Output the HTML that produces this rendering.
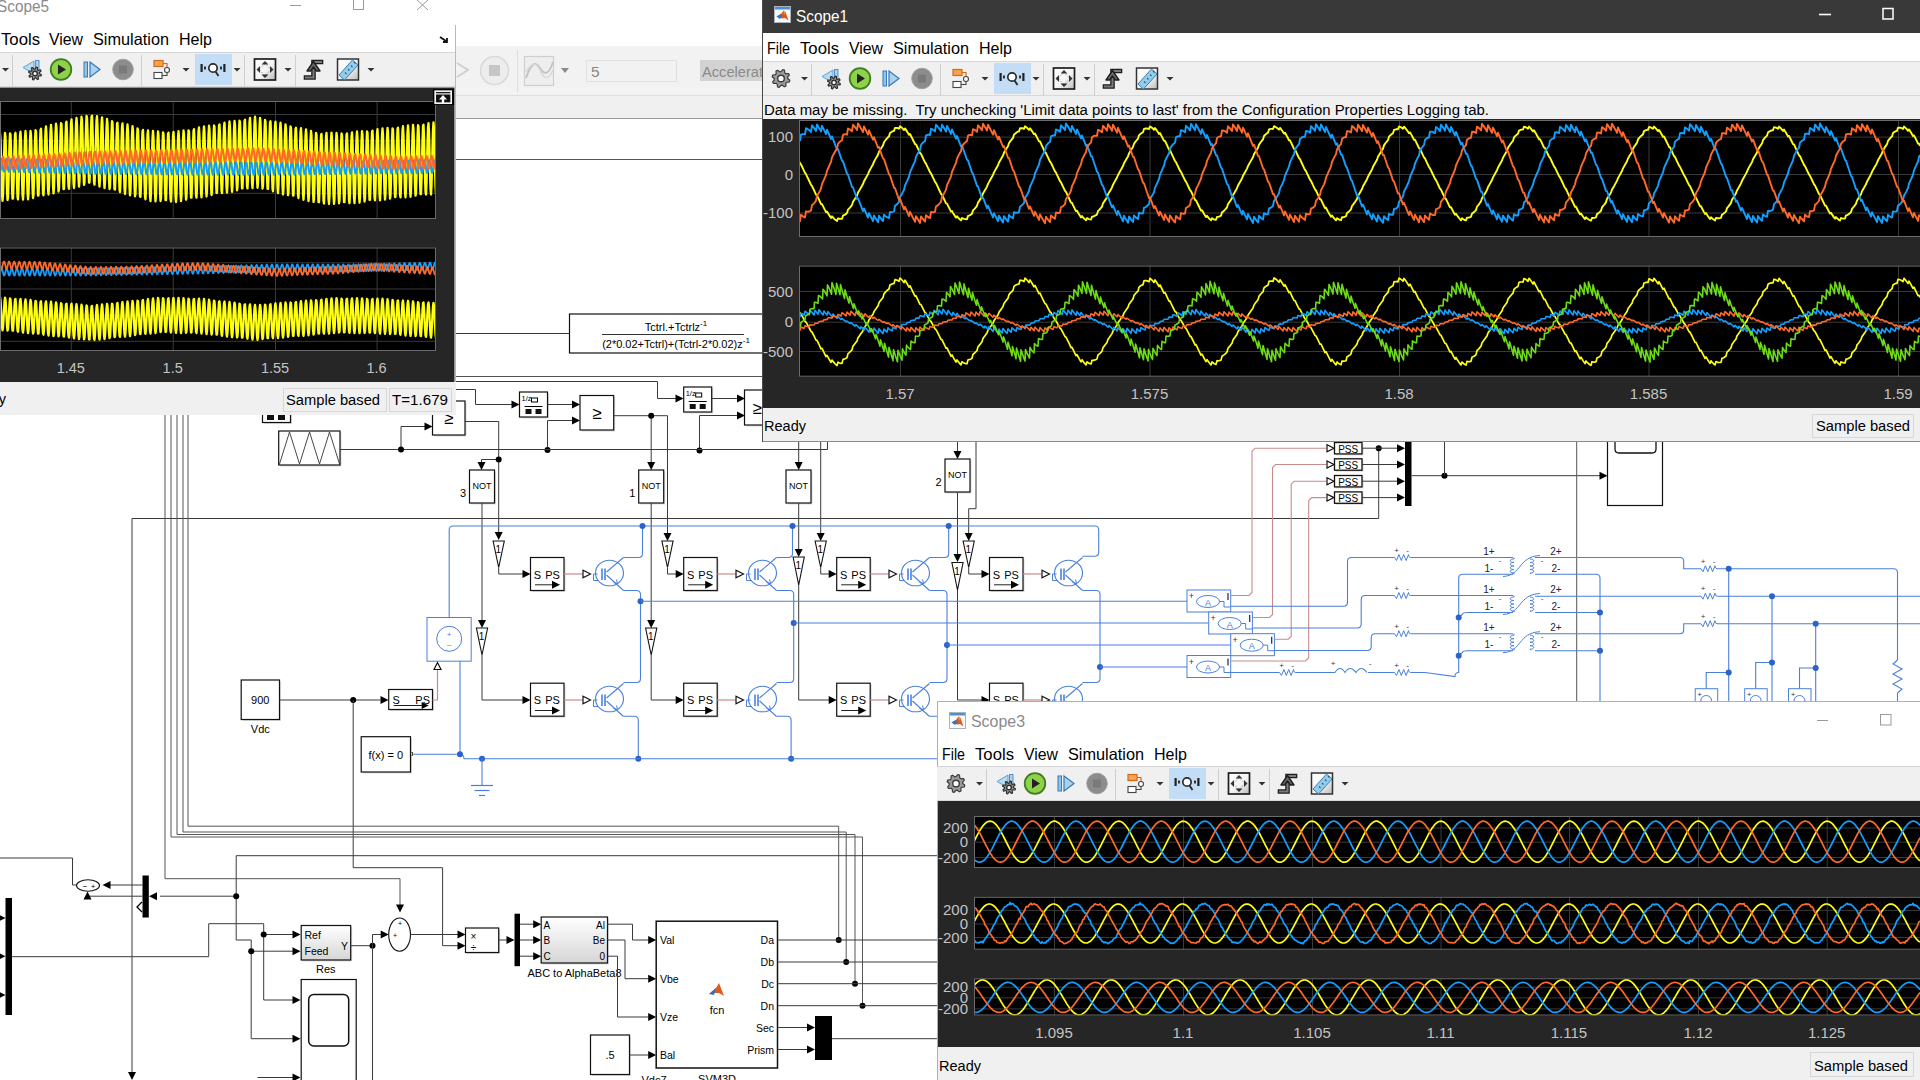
<!DOCTYPE html><html><head><meta charset="utf-8"><title>Simulink scopes</title><style>html,body{margin:0;padding:0;width:1920px;height:1080px;overflow:hidden;background:#fff;font-family:"Liberation Sans",sans-serif}</style></head><body><svg width="1920" height="1080" viewBox="0 0 1920 1080" font-family='"Liberation Sans", sans-serif' style="position:absolute;left:0;top:0;display:block"><defs><linearGradient id="icg" x1="0" y1="0" x2="1" y2="1"><stop offset="0" stop-color="#ffffff"/><stop offset="0.55" stop-color="#f4f4f4"/><stop offset="1" stop-color="#b9b9b9"/></linearGradient></defs><rect x="0" y="0" width="1920" height="1080" fill="#fff"/><rect x="455" y="46" width="307" height="49" fill="#f2f2f2" stroke="none" stroke-width="1" /><rect x="455" y="95" width="307" height="23" fill="#f0f0f0" stroke="none" stroke-width="1" /><line x1="455" y1="95.5" x2="762" y2="95.5" stroke="#dedede" stroke-width="1" /><line x1="455" y1="118.5" x2="762" y2="118.5" stroke="#9c9c9c" stroke-width="1" /><path d="M457,63 L468,70 L457,77" fill="none" stroke="#d0d0d0" stroke-width="2"/><circle cx="494.5" cy="70.5" r="14" fill="#ededed" stroke="#d9d9d9" stroke-width="1.5"/><rect x="489" y="65" width="11" height="11" fill="#c6c6c6" stroke="none" stroke-width="1" /><line x1="517.5" y1="50" x2="517.5" y2="92" stroke="#dedede" stroke-width="1" /><rect x="524.5" y="56.5" width="29" height="29" fill="#eeeeee" stroke="#cfcfcf" stroke-width="1.2" /><path d="M526,78 C531,64 535,60 540,68 C545,76 549,74 553,62" fill="none" stroke="#c2c2c2" stroke-width="1.8"/><path d="M526,72 C532,62 536,62 540,70 C544,80 549,80 553,70" fill="none" stroke="#d6d6d6" stroke-width="1.3"/><path d="M561,68 L569,68 L565,73 Z" fill="#8a8a8a"/><rect x="586.5" y="60.5" width="90" height="21" fill="#f2f2f2" stroke="#e0e0e0" stroke-width="1" /><text x="591" y="77" font-size="15.5" fill="#888" text-anchor="start" >5</text><rect x="700" y="60" width="62" height="21" fill="#d2d2d2" stroke="none" stroke-width="1" /><text x="702" y="77" font-size="15.5" fill="#8a8a8a" text-anchor="start" textLength="74" lengthAdjust="spacingAndGlyphs" >Accelerator</text><line x1="455" y1="159.5" x2="762" y2="159.5" stroke="#555" stroke-width="1" /><polyline points="455,333.5 569.5,333.5" fill="none" stroke="#3a3a3a" stroke-width="1" /><line x1="455" y1="376.5" x2="762" y2="376.5" stroke="#555" stroke-width="1" /><rect x="569.5" y="314" width="205.5" height="39" fill="#fff" stroke="#111" stroke-width="1.2" /><text x="676" y="331" font-size="11" fill="#000" text-anchor="middle" >Tctrl.+Tctrlz<tspan dy="-5" font-size="8">-1</tspan></text><line x1="602" y1="334.5" x2="744" y2="334.5" stroke="#333" stroke-width="1" /><text x="676" y="348" font-size="11" fill="#000" text-anchor="middle" >(2*0.02+Tctrl)+(Tctrl-2*0.02)z<tspan dy="-5" font-size="8">-1</tspan></text><polyline points="455,381.5 657.5,381.5 657.5,398.5 676,398.5" fill="none" stroke="#3a3a3a" stroke-width="1" /><polygon points="683.5,398.5 675.5,394.5 675.5,402.5" fill="#000"/><polyline points="455,389.5 475.5,389.5 475.5,404.5 512,404.5" fill="none" stroke="#3a3a3a" stroke-width="1" /><polygon points="519.5,404.5 511.5,400.5 511.5,408.5" fill="#000"/><rect x="521.0" y="393.5" width="28.0" height="25" fill="#bdbdbd" stroke="none" stroke-width="1" opacity="0.55"/><rect x="519.5" y="392" width="28.0" height="25" fill="#fff" stroke="#111" stroke-width="1.2" /><text x="526.5" y="401" font-size="7.5" fill="#000" text-anchor="middle" >1/z</text><rect x="531.5" y="398" width="6" height="4" fill="none" stroke="#000" stroke-width="1" /><line x1="524.5" y1="406.5" x2="542.5" y2="406.5" stroke="#000" stroke-width="1" /><rect x="525.5" y="409" width="6" height="5" fill="#111" stroke="none" stroke-width="1" /><rect x="535.5" y="409" width="6" height="5" fill="#111" stroke="none" stroke-width="1" /><rect x="685.2" y="388.5" width="28.0" height="25" fill="#bdbdbd" stroke="none" stroke-width="1" opacity="0.55"/><rect x="683.7" y="387" width="28.0" height="25" fill="#fff" stroke="#111" stroke-width="1.2" /><text x="690.7" y="396" font-size="7.5" fill="#000" text-anchor="middle" >1/z</text><rect x="695.7" y="393" width="6" height="4" fill="none" stroke="#000" stroke-width="1" /><line x1="688.7" y1="401.5" x2="706.7" y2="401.5" stroke="#000" stroke-width="1" /><rect x="689.7" y="404" width="6" height="5" fill="#111" stroke="none" stroke-width="1" /><rect x="699.7" y="404" width="6" height="5" fill="#111" stroke="none" stroke-width="1" /><rect x="434.0" y="402.5" width="32.5" height="34" fill="#bdbdbd" stroke="none" stroke-width="1" opacity="0.55"/><rect x="432.5" y="401" width="32.5" height="34" fill="#fff" stroke="#111" stroke-width="1.2" /><text x="448.75" y="424.0" font-size="17" fill="#000" text-anchor="middle" >≥</text><rect x="581.5" y="397.0" width="33.700000000000045" height="34.5" fill="#bdbdbd" stroke="none" stroke-width="1" opacity="0.55"/><rect x="580" y="395.5" width="33.700000000000045" height="34.5" fill="#fff" stroke="#111" stroke-width="1.2" /><text x="596.85" y="418.75" font-size="17" fill="#000" text-anchor="middle" >≥</text><rect x="746.0" y="391.5" width="25.5" height="35" fill="#bdbdbd" stroke="none" stroke-width="1" opacity="0.55"/><rect x="744.5" y="390" width="25.5" height="35" fill="#fff" stroke="#111" stroke-width="1.2" /><text x="757.25" y="413.5" font-size="17" fill="#000" text-anchor="middle" >≥</text><polyline points="547.5,404.5 573,404.5" fill="none" stroke="#3a3a3a" stroke-width="1" /><polygon points="580,404.5 572,400.5 572,408.5" fill="#000"/><polyline points="547.5,450 547.5,420.5 573,420.5" fill="none" stroke="#3a3a3a" stroke-width="1" /><polygon points="580,420.5 572,416.5 572,424.5" fill="#000"/><circle cx="547.5" cy="450" r="3" fill="#000"/><polyline points="712,398.5 738,398.5" fill="none" stroke="#3a3a3a" stroke-width="1" /><polygon points="745,398.5 737,394.5 737,402.5" fill="#000"/><polyline points="699.5,450.5 699.5,415.5 738,415.5" fill="none" stroke="#3a3a3a" stroke-width="1" /><polygon points="745,415.5 737,411.5 737,419.5" fill="#000"/><circle cx="699.5" cy="450.5" r="3" fill="#000"/><rect x="280.2" y="432.5" width="61.30000000000001" height="34" fill="#bdbdbd" stroke="none" stroke-width="1" opacity="0.55"/><rect x="278.7" y="431" width="61.30000000000001" height="34" fill="#fff" stroke="#111" stroke-width="1.2" /><polyline points="279.5,464 289.5,432 299.5,464 309.5,432 319.5,464 329.5,432 339.5,464" fill="none" stroke="#333" stroke-width="0.9"/><polyline points="340,449.5 827.5,449.5 827.5,441" fill="none" stroke="#3a3a3a" stroke-width="1" /><polyline points="401,449.5 401,426.5 425,426.5" fill="none" stroke="#3a3a3a" stroke-width="1" /><polygon points="432.5,426.5 424.5,422.5 424.5,430.5" fill="#000"/><circle cx="401" cy="449.5" r="3" fill="#000"/><rect x="264.0" y="406.5" width="28.0" height="17.5" fill="#bdbdbd" stroke="none" stroke-width="1" opacity="0.55"/><rect x="262.5" y="405" width="28.0" height="17.5" fill="#fff" stroke="#111" stroke-width="1.2" /><rect x="267" y="415" width="7" height="5" fill="#111" stroke="none" stroke-width="1" /><rect x="278" y="415" width="7" height="5" fill="#111" stroke="none" stroke-width="1" /><polyline points="465,421.5 498.7,421.5 498.7,532" fill="none" stroke="#3a3a3a" stroke-width="1" /><polygon points="498.7,540 494.7,532 502.7,532" fill="#000"/><polyline points="498.7,459.5 481.5,459.5 481.5,462" fill="none" stroke="#3a3a3a" stroke-width="1" /><polygon points="481.5,470 477.5,462 485.5,462" fill="#000"/><circle cx="498.7" cy="459.5" r="3" fill="#000"/><polyline points="613.7,415.7 667.5,415.7 667.5,533" fill="none" stroke="#3a3a3a" stroke-width="1" /><polygon points="667.5,541 663.5,533 671.5,533" fill="#000"/><polyline points="651.2,415.7 651.2,462" fill="none" stroke="#3a3a3a" stroke-width="1" /><polygon points="651.2,470 647.2,462 655.2,462" fill="#000"/><circle cx="651.2" cy="415.7" r="3" fill="#000"/><polyline points="798.7,441 798.7,462" fill="none" stroke="#3a3a3a" stroke-width="1" /><polygon points="798.7,470 794.7,462 802.7,462" fill="#000"/><polyline points="820.7,441 820.7,533" fill="none" stroke="#3a3a3a" stroke-width="1" /><polygon points="820.7,541 816.7,533 824.7,533" fill="#000"/><polyline points="957.5,441 957.5,451" fill="none" stroke="#3a3a3a" stroke-width="1" /><polygon points="957.5,459 953.5,451 961.5,451" fill="#000"/><polyline points="976,441 976,508.7 968.7,508.7 968.7,533" fill="none" stroke="#3a3a3a" stroke-width="1" /><polygon points="968.7,541 964.7,533 972.7,533" fill="#000"/><rect x="471.0" y="471.5" width="25.0" height="33" fill="#bdbdbd" stroke="none" stroke-width="1" opacity="0.55"/><rect x="469.5" y="470" width="25.0" height="33" fill="#fff" stroke="#111" stroke-width="1.2" /><text x="482.0" y="489" font-size="9.5" fill="#000" text-anchor="middle" textLength="19" lengthAdjust="spacingAndGlyphs" >NOT</text><text x="463.0" y="497" font-size="11" fill="#000" text-anchor="middle" >3</text><rect x="640.2" y="471.5" width="25.0" height="33" fill="#bdbdbd" stroke="none" stroke-width="1" opacity="0.55"/><rect x="638.7" y="470" width="25.0" height="33" fill="#fff" stroke="#111" stroke-width="1.2" /><text x="651.2" y="489" font-size="9.5" fill="#000" text-anchor="middle" textLength="19" lengthAdjust="spacingAndGlyphs" >NOT</text><text x="632.2" y="497" font-size="11" fill="#000" text-anchor="middle" >1</text><rect x="787.5" y="471.5" width="25" height="33" fill="#bdbdbd" stroke="none" stroke-width="1" opacity="0.55"/><rect x="786" y="470" width="25" height="33" fill="#fff" stroke="#111" stroke-width="1.2" /><text x="798.5" y="489" font-size="9.5" fill="#000" text-anchor="middle" textLength="19" lengthAdjust="spacingAndGlyphs" >NOT</text><rect x="946.5" y="460.5" width="25" height="33" fill="#bdbdbd" stroke="none" stroke-width="1" opacity="0.55"/><rect x="945" y="459" width="25" height="33" fill="#fff" stroke="#111" stroke-width="1.2" /><text x="957.5" y="478" font-size="9.5" fill="#000" text-anchor="middle" textLength="19" lengthAdjust="spacingAndGlyphs" >NOT</text><text x="938.5" y="486" font-size="11" fill="#000" text-anchor="middle" >2</text><polyline points="482,503 482,620" fill="none" stroke="#3a3a3a" stroke-width="1" /><polygon points="482,628 478.0,620 486.0,620" fill="#000"/><polyline points="651.2,503 651.2,620" fill="none" stroke="#3a3a3a" stroke-width="1" /><polygon points="651.2,628 647.2,620 655.2,620" fill="#000"/><polyline points="798.7,503 798.7,549" fill="none" stroke="#3a3a3a" stroke-width="1" /><polygon points="798.7,557 794.7,549 802.7,549" fill="#000"/><polyline points="957.5,492.5 957.5,554" fill="none" stroke="#3a3a3a" stroke-width="1" /><polygon points="957.5,562 953.5,554 961.5,554" fill="#000"/><polyline points="132,1072 132,518.5 1378.7,518.5 1378.7,448.2" fill="none" stroke="#3a3a3a" stroke-width="1" /><circle cx="1378.7" cy="448.2" r="3" fill="#000"/><polygon points="493.09999999999997,541 504.3,541 498.7,567.5" fill="#fff" stroke="#111" stroke-width="1.1"/><text x="498.2" y="553" font-size="10" fill="#000" text-anchor="middle" >1</text><polygon points="661.9,541 673.1,541 667.5,567.5" fill="#fff" stroke="#111" stroke-width="1.1"/><text x="667.0" y="553" font-size="10" fill="#000" text-anchor="middle" >1</text><polygon points="815.1,541 826.3000000000001,541 820.7,567.5" fill="#fff" stroke="#111" stroke-width="1.1"/><text x="820.2" y="553" font-size="10" fill="#000" text-anchor="middle" >1</text><polygon points="963.1,541 974.3000000000001,541 968.7,567.5" fill="#fff" stroke="#111" stroke-width="1.1"/><text x="968.2" y="553" font-size="10" fill="#000" text-anchor="middle" >1</text><polygon points="793.1,557 804.3000000000001,557 798.7,585" fill="#fff" stroke="#111" stroke-width="1.1"/><text x="798.2" y="569" font-size="10" fill="#000" text-anchor="middle" >1</text><polygon points="951.9,562.5 963.1,562.5 957.5,590" fill="#fff" stroke="#111" stroke-width="1.1"/><text x="957.0" y="574.5" font-size="10" fill="#000" text-anchor="middle" >1</text><polygon points="476.4,628 487.6,628 482,655" fill="#fff" stroke="#111" stroke-width="1.1"/><text x="481.5" y="640" font-size="10" fill="#000" text-anchor="middle" >1</text><polygon points="645.6,628 656.8000000000001,628 651.2,655" fill="#fff" stroke="#111" stroke-width="1.1"/><text x="650.7" y="640" font-size="10" fill="#000" text-anchor="middle" >1</text><polyline points="498.7,567.5 498.7,574 523.5,574" fill="none" stroke="#3a3a3a" stroke-width="1" /><polygon points="530.5,574 522.5,570.0 522.5,578.0" fill="#000"/><polyline points="667.5,567.5 667.5,574 676.7,574" fill="none" stroke="#3a3a3a" stroke-width="1" /><polygon points="683.7,574 675.7,570.0 675.7,578.0" fill="#000"/><polyline points="820.7,567.5 820.7,574 829.7,574" fill="none" stroke="#3a3a3a" stroke-width="1" /><polygon points="836.7,574 828.7,570.0 828.7,578.0" fill="#000"/><polyline points="968.7,567.5 968.7,574 982.5,574" fill="none" stroke="#3a3a3a" stroke-width="1" /><polygon points="989.5,574 981.5,570.0 981.5,578.0" fill="#000"/><polyline points="482,655 482,700 523.5,700" fill="none" stroke="#3a3a3a" stroke-width="1" /><polygon points="530.5,700 522.5,696.0 522.5,704.0" fill="#000"/><polyline points="651.2,655 651.2,700 676.7,700" fill="none" stroke="#3a3a3a" stroke-width="1" /><polygon points="683.7,700 675.7,696.0 675.7,704.0" fill="#000"/><polyline points="798.7,585 798.7,700 829.7,700" fill="none" stroke="#3a3a3a" stroke-width="1" /><polygon points="836.7,700 828.7,696.0 828.7,704.0" fill="#000"/><polyline points="957.5,590 957.5,700 982.5,700" fill="none" stroke="#3a3a3a" stroke-width="1" /><polygon points="989.5,700 981.5,696.0 981.5,704.0" fill="#000"/><rect x="532.0" y="559.0" width="33.5" height="33.0" fill="#bdbdbd" stroke="none" stroke-width="1" opacity="0.55"/><rect x="530.5" y="557.5" width="33.5" height="33.0" fill="#fff" stroke="#111" stroke-width="1.2" /><text x="537.5" y="578.5" font-size="11" fill="#000" text-anchor="middle" >S</text><text x="552.5" y="578.5" font-size="11" fill="#000" text-anchor="middle" >PS</text><line x1="535.0" y1="584.8" x2="554.5" y2="584.8" stroke="#222" stroke-width="1" /><polygon points="560.0,584.8 552.0,580.8 552.0,588.8" fill="#000"/><rect x="532.0" y="684.7" width="33.5" height="33.0" fill="#bdbdbd" stroke="none" stroke-width="1" opacity="0.55"/><rect x="530.5" y="683.2" width="33.5" height="33.0" fill="#fff" stroke="#111" stroke-width="1.2" /><text x="537.5" y="704.2" font-size="11" fill="#000" text-anchor="middle" >S</text><text x="552.5" y="704.2" font-size="11" fill="#000" text-anchor="middle" >PS</text><line x1="535.0" y1="710.5" x2="554.5" y2="710.5" stroke="#222" stroke-width="1" /><polygon points="560.0,710.5 552.0,706.5 552.0,714.5" fill="#000"/><line x1="564.0" y1="574" x2="582.5" y2="574" stroke="#c98a8a" stroke-width="1.2" /><polygon points="590.5,574 583.0,570.25 583.0,577.75" fill="#fff" stroke="#111" stroke-width="1.2"/><ellipse cx="609.5" cy="573" rx="14" ry="12.8" fill="none" stroke="#4a80dc" stroke-width="1.1"/><line x1="602.0" y1="568.5" x2="602.0" y2="580" stroke="#4a80dc" stroke-width="1.6" /><line x1="605.0" y1="568.5" x2="605.0" y2="580" stroke="#4a80dc" stroke-width="1.6" /><polyline points="597.5,574 593.5,574 593.5,580.5 598.5,580.5" fill="none" stroke="#4a80dc" stroke-width="1"/><line x1="606.5" y1="572" x2="623.5" y2="557.5" stroke="#4a80dc" stroke-width="1.1" /><line x1="606.5" y1="575" x2="623.5" y2="590.5" stroke="#4a80dc" stroke-width="1.1" /><polyline points="613.5,582.5 617.5,583.5 616.5,579.5" fill="none" stroke="#4a80dc" stroke-width="1"/><line x1="564.0" y1="700" x2="582.5" y2="700" stroke="#c98a8a" stroke-width="1.2" /><polygon points="590.5,700 583.0,696.25 583.0,703.75" fill="#fff" stroke="#111" stroke-width="1.2"/><ellipse cx="609.5" cy="699" rx="14" ry="12.8" fill="none" stroke="#4a80dc" stroke-width="1.1"/><line x1="602.0" y1="694.5" x2="602.0" y2="706" stroke="#4a80dc" stroke-width="1.6" /><line x1="605.0" y1="694.5" x2="605.0" y2="706" stroke="#4a80dc" stroke-width="1.6" /><polyline points="597.5,700 593.5,700 593.5,706.5 598.5,706.5" fill="none" stroke="#4a80dc" stroke-width="1"/><line x1="606.5" y1="698" x2="623.5" y2="683.5" stroke="#4a80dc" stroke-width="1.1" /><line x1="606.5" y1="701" x2="623.5" y2="716.5" stroke="#4a80dc" stroke-width="1.1" /><polyline points="613.5,708.5 617.5,709.5 616.5,705.5" fill="none" stroke="#4a80dc" stroke-width="1"/><rect x="685.2" y="559.0" width="33.5" height="33.0" fill="#bdbdbd" stroke="none" stroke-width="1" opacity="0.55"/><rect x="683.7" y="557.5" width="33.5" height="33.0" fill="#fff" stroke="#111" stroke-width="1.2" /><text x="690.7" y="578.5" font-size="11" fill="#000" text-anchor="middle" >S</text><text x="705.7" y="578.5" font-size="11" fill="#000" text-anchor="middle" >PS</text><line x1="688.2" y1="584.8" x2="707.7" y2="584.8" stroke="#222" stroke-width="1" /><polygon points="713.2,584.8 705.2,580.8 705.2,588.8" fill="#000"/><rect x="685.2" y="684.7" width="33.5" height="33.0" fill="#bdbdbd" stroke="none" stroke-width="1" opacity="0.55"/><rect x="683.7" y="683.2" width="33.5" height="33.0" fill="#fff" stroke="#111" stroke-width="1.2" /><text x="690.7" y="704.2" font-size="11" fill="#000" text-anchor="middle" >S</text><text x="705.7" y="704.2" font-size="11" fill="#000" text-anchor="middle" >PS</text><line x1="688.2" y1="710.5" x2="707.7" y2="710.5" stroke="#222" stroke-width="1" /><polygon points="713.2,710.5 705.2,706.5 705.2,714.5" fill="#000"/><line x1="717.2" y1="574" x2="735.5" y2="574" stroke="#c98a8a" stroke-width="1.2" /><polygon points="743.5,574 736.0,570.25 736.0,577.75" fill="#fff" stroke="#111" stroke-width="1.2"/><ellipse cx="762.5" cy="573" rx="14" ry="12.8" fill="none" stroke="#4a80dc" stroke-width="1.1"/><line x1="755.0" y1="568.5" x2="755.0" y2="580" stroke="#4a80dc" stroke-width="1.6" /><line x1="758.0" y1="568.5" x2="758.0" y2="580" stroke="#4a80dc" stroke-width="1.6" /><polyline points="750.5,574 746.5,574 746.5,580.5 751.5,580.5" fill="none" stroke="#4a80dc" stroke-width="1"/><line x1="759.5" y1="572" x2="776.5" y2="557.5" stroke="#4a80dc" stroke-width="1.1" /><line x1="759.5" y1="575" x2="776.5" y2="590.5" stroke="#4a80dc" stroke-width="1.1" /><polyline points="766.5,582.5 770.5,583.5 769.5,579.5" fill="none" stroke="#4a80dc" stroke-width="1"/><line x1="717.2" y1="700" x2="735.5" y2="700" stroke="#c98a8a" stroke-width="1.2" /><polygon points="743.5,700 736.0,696.25 736.0,703.75" fill="#fff" stroke="#111" stroke-width="1.2"/><ellipse cx="762.5" cy="699" rx="14" ry="12.8" fill="none" stroke="#4a80dc" stroke-width="1.1"/><line x1="755.0" y1="694.5" x2="755.0" y2="706" stroke="#4a80dc" stroke-width="1.6" /><line x1="758.0" y1="694.5" x2="758.0" y2="706" stroke="#4a80dc" stroke-width="1.6" /><polyline points="750.5,700 746.5,700 746.5,706.5 751.5,706.5" fill="none" stroke="#4a80dc" stroke-width="1"/><line x1="759.5" y1="698" x2="776.5" y2="683.5" stroke="#4a80dc" stroke-width="1.1" /><line x1="759.5" y1="701" x2="776.5" y2="716.5" stroke="#4a80dc" stroke-width="1.1" /><polyline points="766.5,708.5 770.5,709.5 769.5,705.5" fill="none" stroke="#4a80dc" stroke-width="1"/><rect x="838.2" y="559.0" width="33.5" height="33.0" fill="#bdbdbd" stroke="none" stroke-width="1" opacity="0.55"/><rect x="836.7" y="557.5" width="33.5" height="33.0" fill="#fff" stroke="#111" stroke-width="1.2" /><text x="843.7" y="578.5" font-size="11" fill="#000" text-anchor="middle" >S</text><text x="858.7" y="578.5" font-size="11" fill="#000" text-anchor="middle" >PS</text><line x1="841.2" y1="584.8" x2="860.7" y2="584.8" stroke="#222" stroke-width="1" /><polygon points="866.2,584.8 858.2,580.8 858.2,588.8" fill="#000"/><rect x="838.2" y="684.7" width="33.5" height="33.0" fill="#bdbdbd" stroke="none" stroke-width="1" opacity="0.55"/><rect x="836.7" y="683.2" width="33.5" height="33.0" fill="#fff" stroke="#111" stroke-width="1.2" /><text x="843.7" y="704.2" font-size="11" fill="#000" text-anchor="middle" >S</text><text x="858.7" y="704.2" font-size="11" fill="#000" text-anchor="middle" >PS</text><line x1="841.2" y1="710.5" x2="860.7" y2="710.5" stroke="#222" stroke-width="1" /><polygon points="866.2,710.5 858.2,706.5 858.2,714.5" fill="#000"/><line x1="870.2" y1="574" x2="888.5" y2="574" stroke="#c98a8a" stroke-width="1.2" /><polygon points="896.5,574 889.0,570.25 889.0,577.75" fill="#fff" stroke="#111" stroke-width="1.2"/><ellipse cx="915.5" cy="573" rx="14" ry="12.8" fill="none" stroke="#4a80dc" stroke-width="1.1"/><line x1="908.0" y1="568.5" x2="908.0" y2="580" stroke="#4a80dc" stroke-width="1.6" /><line x1="911.0" y1="568.5" x2="911.0" y2="580" stroke="#4a80dc" stroke-width="1.6" /><polyline points="903.5,574 899.5,574 899.5,580.5 904.5,580.5" fill="none" stroke="#4a80dc" stroke-width="1"/><line x1="912.5" y1="572" x2="929.5" y2="557.5" stroke="#4a80dc" stroke-width="1.1" /><line x1="912.5" y1="575" x2="929.5" y2="590.5" stroke="#4a80dc" stroke-width="1.1" /><polyline points="919.5,582.5 923.5,583.5 922.5,579.5" fill="none" stroke="#4a80dc" stroke-width="1"/><line x1="870.2" y1="700" x2="888.5" y2="700" stroke="#c98a8a" stroke-width="1.2" /><polygon points="896.5,700 889.0,696.25 889.0,703.75" fill="#fff" stroke="#111" stroke-width="1.2"/><ellipse cx="915.5" cy="699" rx="14" ry="12.8" fill="none" stroke="#4a80dc" stroke-width="1.1"/><line x1="908.0" y1="694.5" x2="908.0" y2="706" stroke="#4a80dc" stroke-width="1.6" /><line x1="911.0" y1="694.5" x2="911.0" y2="706" stroke="#4a80dc" stroke-width="1.6" /><polyline points="903.5,700 899.5,700 899.5,706.5 904.5,706.5" fill="none" stroke="#4a80dc" stroke-width="1"/><line x1="912.5" y1="698" x2="929.5" y2="683.5" stroke="#4a80dc" stroke-width="1.1" /><line x1="912.5" y1="701" x2="929.5" y2="716.5" stroke="#4a80dc" stroke-width="1.1" /><polyline points="919.5,708.5 923.5,709.5 922.5,705.5" fill="none" stroke="#4a80dc" stroke-width="1"/><rect x="991.0" y="559.0" width="33.5" height="33.0" fill="#bdbdbd" stroke="none" stroke-width="1" opacity="0.55"/><rect x="989.5" y="557.5" width="33.5" height="33.0" fill="#fff" stroke="#111" stroke-width="1.2" /><text x="996.5" y="578.5" font-size="11" fill="#000" text-anchor="middle" >S</text><text x="1011.5" y="578.5" font-size="11" fill="#000" text-anchor="middle" >PS</text><line x1="994.0" y1="584.8" x2="1013.5" y2="584.8" stroke="#222" stroke-width="1" /><polygon points="1019.0,584.8 1011.0,580.8 1011.0,588.8" fill="#000"/><rect x="991.0" y="684.7" width="33.5" height="33.0" fill="#bdbdbd" stroke="none" stroke-width="1" opacity="0.55"/><rect x="989.5" y="683.2" width="33.5" height="33.0" fill="#fff" stroke="#111" stroke-width="1.2" /><text x="996.5" y="704.2" font-size="11" fill="#000" text-anchor="middle" >S</text><text x="1011.5" y="704.2" font-size="11" fill="#000" text-anchor="middle" >PS</text><line x1="994.0" y1="710.5" x2="1013.5" y2="710.5" stroke="#222" stroke-width="1" /><polygon points="1019.0,710.5 1011.0,706.5 1011.0,714.5" fill="#000"/><line x1="1023.0" y1="574" x2="1041.5" y2="574" stroke="#c98a8a" stroke-width="1.2" /><polygon points="1049.5,574 1042.0,570.25 1042.0,577.75" fill="#fff" stroke="#111" stroke-width="1.2"/><ellipse cx="1068.5" cy="573" rx="14" ry="12.8" fill="none" stroke="#4a80dc" stroke-width="1.1"/><line x1="1061.0" y1="568.5" x2="1061.0" y2="580" stroke="#4a80dc" stroke-width="1.6" /><line x1="1064.0" y1="568.5" x2="1064.0" y2="580" stroke="#4a80dc" stroke-width="1.6" /><polyline points="1056.5,574 1052.5,574 1052.5,580.5 1057.5,580.5" fill="none" stroke="#4a80dc" stroke-width="1"/><line x1="1065.5" y1="572" x2="1082.5" y2="557.5" stroke="#4a80dc" stroke-width="1.1" /><line x1="1065.5" y1="575" x2="1082.5" y2="590.5" stroke="#4a80dc" stroke-width="1.1" /><polyline points="1072.5,582.5 1076.5,583.5 1075.5,579.5" fill="none" stroke="#4a80dc" stroke-width="1"/><line x1="1023.0" y1="700" x2="1041.5" y2="700" stroke="#c98a8a" stroke-width="1.2" /><polygon points="1049.5,700 1042.0,696.25 1042.0,703.75" fill="#fff" stroke="#111" stroke-width="1.2"/><ellipse cx="1068.5" cy="699" rx="14" ry="12.8" fill="none" stroke="#4a80dc" stroke-width="1.1"/><line x1="1061.0" y1="694.5" x2="1061.0" y2="706" stroke="#4a80dc" stroke-width="1.6" /><line x1="1064.0" y1="694.5" x2="1064.0" y2="706" stroke="#4a80dc" stroke-width="1.6" /><polyline points="1056.5,700 1052.5,700 1052.5,706.5 1057.5,706.5" fill="none" stroke="#4a80dc" stroke-width="1"/><line x1="1065.5" y1="698" x2="1082.5" y2="683.5" stroke="#4a80dc" stroke-width="1.1" /><line x1="1065.5" y1="701" x2="1082.5" y2="716.5" stroke="#4a80dc" stroke-width="1.1" /><polyline points="1072.5,708.5 1076.5,709.5 1075.5,705.5" fill="none" stroke="#4a80dc" stroke-width="1"/><path d="M449.2,617.5 L449.2,530 Q449.2,526 453.2,526 L1094.7,526 Q1098.7,526 1098.7,530 L1098.7,552.2 Q1098.7,556.2 1094.7,556.2 L1082.5,556.2" fill="none" stroke="#4a80dc" stroke-width="1.1" /><path d="M623.5,557.5 L638.5,557.5 Q642.5,557.5 642.5,553.5 L642.5,526" fill="none" stroke="#4a80dc" stroke-width="1.1" /><path d="M623.5,590.5 L636.5,590.5 Q640.5,590.5 640.5,594.5 L640.5,678.5 Q640.5,682.5 636.5,682.5 L623.5,682.5" fill="none" stroke="#4a80dc" stroke-width="1.1" /><circle cx="640.5" cy="601.2" r="3" fill="#2b63c9"/><polyline points="640.5,601.2 1187,601.2" fill="none" stroke="#4a80dc" stroke-width="1.1" /><path d="M623.5,716.3 L634.3,716.3 Q638.3,716.3 638.3,720.3 L638.3,758.8" fill="none" stroke="#4a80dc" stroke-width="1.1" /><circle cx="638.3" cy="758.8" r="3" fill="#2b63c9"/><path d="M776.5,557.5 L788.5,557.5 Q792.5,557.5 792.5,553.5 L792.5,526" fill="none" stroke="#4a80dc" stroke-width="1.1" /><path d="M776.5,590.5 L789.7,590.5 Q793.7,590.5 793.7,594.5 L793.7,678.5 Q793.7,682.5 789.7,682.5 L776.5,682.5" fill="none" stroke="#4a80dc" stroke-width="1.1" /><circle cx="793.7" cy="623" r="3" fill="#2b63c9"/><polyline points="793.7,623 1208.7,623" fill="none" stroke="#4a80dc" stroke-width="1.1" /><path d="M776.5,716.3 L787.1,716.3 Q791.1,716.3 791.1,720.3 L791.1,758.8" fill="none" stroke="#4a80dc" stroke-width="1.1" /><circle cx="791.1" cy="758.8" r="3" fill="#2b63c9"/><path d="M929.5,557.5 L944.7,557.5 Q948.7,557.5 948.7,553.5 L948.7,526" fill="none" stroke="#4a80dc" stroke-width="1.1" /><path d="M929.5,590.5 L943,590.5 Q947,590.5 947,594.5 L947,678.5 Q947,682.5 943,682.5 L929.5,682.5" fill="none" stroke="#4a80dc" stroke-width="1.1" /><circle cx="947" cy="645" r="3" fill="#2b63c9"/><polyline points="947,645 1230.7,645" fill="none" stroke="#4a80dc" stroke-width="1.1" /><path d="M929.5,716.3 L941,716.3 Q945,716.3 945,720.3 L945,758.8" fill="none" stroke="#4a80dc" stroke-width="1.1" /><path d="M1082.5,590.5 L1096,590.5 Q1100,590.5 1100,594.5 L1100,678.5 Q1100,682.5 1096,682.5 L1082.5,682.5" fill="none" stroke="#4a80dc" stroke-width="1.1" /><circle cx="1100" cy="667" r="3" fill="#2b63c9"/><polyline points="1100,667 1187,667" fill="none" stroke="#4a80dc" stroke-width="1.1" /><path d="M1082.5,716.3 L1094,716.3 Q1098,716.3 1098,720.3 L1098,758.8" fill="none" stroke="#4a80dc" stroke-width="1.1" /><circle cx="642.5" cy="526" r="3" fill="#2b63c9"/><circle cx="792.5" cy="526" r="3" fill="#2b63c9"/><circle cx="948.7" cy="526" r="3" fill="#2b63c9"/><rect x="427" y="617.5" width="44.2" height="43.7" fill="#fff" stroke="#4a80dc" stroke-width="1" /><circle cx="449.2" cy="638.8" r="12.5" fill="none" stroke="#4a80dc" stroke-width="1"/><text x="449.2" y="637" font-size="8" fill="#4a80dc" text-anchor="middle" >+</text><text x="449.2" y="647" font-size="8" fill="#4a80dc" text-anchor="middle" >–</text><polyline points="460,661.2 460,754.2" fill="none" stroke="#4a80dc" stroke-width="1.1" /><path d="M410.5,754.2 L460,754.2 Q464,754.2 464,758.8 L937,758.8" fill="none" stroke="#4a80dc" stroke-width="1.1" /><circle cx="460" cy="754.2" r="3" fill="#2b63c9"/><circle cx="482" cy="758.8" r="3" fill="#2b63c9"/><rect x="409.5" y="752.5" width="3" height="3" fill="#fff" stroke="#222" stroke-width="0.8" /><polyline points="482,758.8 482,785" fill="none" stroke="#4a80dc" stroke-width="1.1" /><line x1="471" y1="785.5" x2="493" y2="785.5" stroke="#4a80dc" stroke-width="1.2" /><line x1="474.5" y1="790.5" x2="489.5" y2="790.5" stroke="#4a80dc" stroke-width="1.2" /><line x1="479" y1="795.5" x2="485" y2="795.5" stroke="#4a80dc" stroke-width="1.2" /><rect x="242.7" y="681.5" width="38.30000000000001" height="39.5" fill="#bdbdbd" stroke="none" stroke-width="1" opacity="0.55"/><rect x="241.2" y="680" width="38.30000000000001" height="39.5" fill="#fff" stroke="#111" stroke-width="1.2" /><text x="260.3" y="704" font-size="11" fill="#000" text-anchor="middle" >900</text><text x="260.3" y="733" font-size="11" fill="#000" text-anchor="middle" >Vdc</text><polyline points="279.5,700 380.5,700" fill="none" stroke="#3a3a3a" stroke-width="1" /><polygon points="388.5,700 380.5,696.0 380.5,704.0" fill="#000"/><circle cx="353.2" cy="700" r="3" fill="#000"/><polyline points="353.2,700 353.2,867.7 442.6,867.7 442.6,945.7 458,945.7" fill="none" stroke="#3a3a3a" stroke-width="1" /><polygon points="465.5,945.7 457.5,941.7 457.5,949.7" fill="#000"/><rect x="390.2" y="691.0" width="43.80000000000001" height="20.0" fill="#bdbdbd" stroke="none" stroke-width="1" opacity="0.55"/><rect x="388.7" y="689.5" width="43.80000000000001" height="20.0" fill="#fff" stroke="#111" stroke-width="1.2" /><text x="396.2" y="704.0" font-size="11" fill="#000" text-anchor="middle" >S</text><text x="422.7" y="704.0" font-size="11" fill="#000" text-anchor="middle" >PS</text><line x1="393.7" y1="705.5" x2="422.7" y2="705.5" stroke="#222" stroke-width="1" /><polygon points="428.7,705.5 421.7,702.0 421.7,709.0" fill="#000"/><polyline points="432.5,700 437.5,700 437.5,670" fill="none" stroke="#c98a8a" stroke-width="1.2" /><polygon points="437.5,662.5 434.0,669.5 441.0,669.5" fill="#fff" stroke="#111" stroke-width="1.2"/><rect x="362.7" y="738.2" width="49.30000000000001" height="35.299999999999955" fill="#bdbdbd" stroke="none" stroke-width="1" opacity="0.55"/><rect x="361.2" y="736.7" width="49.30000000000001" height="35.299999999999955" fill="#fff" stroke="#111" stroke-width="1.2" /><text x="385.8" y="758.5" font-size="11" fill="#000" text-anchor="middle" >f(x) = 0</text><rect x="1187" y="590" width="43.7" height="22" fill="#fff" stroke="#4a80dc" stroke-width="1" /><ellipse cx="1208" cy="601.5" rx="11.5" ry="6" fill="none" stroke="#4a80dc" stroke-width="1"/><text x="1208" y="605.5" font-size="9" fill="#4a80dc" text-anchor="middle" >A</text><text x="1191.5" y="599" font-size="9" fill="#336" text-anchor="middle" >+</text><line x1="1228" y1="593" x2="1228" y2="600" stroke="#224" stroke-width="1.2" /><polyline points="1219.5,601.5 1224,601.5 1224,607 1230.7,607" fill="none" stroke="#4a80dc" stroke-width="1" /><rect x="1208.7" y="612" width="43.7" height="22" fill="#fff" stroke="#4a80dc" stroke-width="1" /><ellipse cx="1229.7" cy="623.5" rx="11.5" ry="6" fill="none" stroke="#4a80dc" stroke-width="1"/><text x="1229.7" y="627.5" font-size="9" fill="#4a80dc" text-anchor="middle" >A</text><text x="1213.2" y="621" font-size="9" fill="#336" text-anchor="middle" >+</text><line x1="1249.7" y1="615" x2="1249.7" y2="622" stroke="#224" stroke-width="1.2" /><polyline points="1241.2,623.5 1245.7,623.5 1245.7,629 1252.4,629" fill="none" stroke="#4a80dc" stroke-width="1" /><rect x="1230.7" y="633.7" width="43.7" height="22" fill="#fff" stroke="#4a80dc" stroke-width="1" /><ellipse cx="1251.7" cy="645.2" rx="11.5" ry="6" fill="none" stroke="#4a80dc" stroke-width="1"/><text x="1251.7" y="649.2" font-size="9" fill="#4a80dc" text-anchor="middle" >A</text><text x="1235.2" y="642.7" font-size="9" fill="#336" text-anchor="middle" >+</text><line x1="1271.7" y1="636.7" x2="1271.7" y2="643.7" stroke="#224" stroke-width="1.2" /><polyline points="1263.2,645.2 1267.7,645.2 1267.7,650.7 1274.4,650.7" fill="none" stroke="#4a80dc" stroke-width="1" /><rect x="1187" y="655.5" width="43.7" height="22" fill="#fff" stroke="#4a80dc" stroke-width="1" /><ellipse cx="1208" cy="667.0" rx="11.5" ry="6" fill="none" stroke="#4a80dc" stroke-width="1"/><text x="1208" y="671.0" font-size="9" fill="#4a80dc" text-anchor="middle" >A</text><text x="1191.5" y="664.5" font-size="9" fill="#336" text-anchor="middle" >+</text><line x1="1228" y1="658.5" x2="1228" y2="665.5" stroke="#224" stroke-width="1.2" /><polyline points="1219.5,667.0 1224,667.0 1224,672.5 1230.7,672.5" fill="none" stroke="#4a80dc" stroke-width="1" /><polyline points="1230.7,595.5 1249,595.5 1252,592.5 1252,451.2 1255,448.2 1326,448.2" fill="none" stroke="#c98a8a" stroke-width="1.1" /><polyline points="1252.4,617.5 1269.5,617.5 1272.5,614.5 1272.5,467.5 1275.5,464.5 1326,464.5" fill="none" stroke="#c98a8a" stroke-width="1.1" /><polyline points="1274.4,639.2 1288.2,639.2 1291.2,636.2 1291.2,484.2 1294.2,481.2 1326,481.2" fill="none" stroke="#c98a8a" stroke-width="1.1" /><polyline points="1230.7,661.0 1305.7,661.0 1308.7,658.0 1308.7,500.6 1311.7,497.6 1326,497.6" fill="none" stroke="#c98a8a" stroke-width="1.1" /><polygon points="1334,448.2 1327,444.7 1327,451.7" fill="#fff" stroke="#111" stroke-width="1.2"/><rect x="1336.0" y="444.0" width="27.5" height="11.399999999999977" fill="#bdbdbd" stroke="none" stroke-width="1" opacity="0.55"/><rect x="1334.5" y="442.5" width="27.5" height="11.399999999999977" fill="#fff" stroke="#111" stroke-width="1.3" /><text x="1348.2" y="452.7" font-size="10.5" fill="#000" text-anchor="middle" textLength="20" lengthAdjust="spacingAndGlyphs" >PSS</text><polyline points="1362,448.2 1397,448.2" fill="none" stroke="#3a3a3a" stroke-width="1" /><polygon points="1405,448.2 1397,444.2 1397,452.2" fill="#000"/><polygon points="1334,464.5 1327,461.0 1327,468.0" fill="#fff" stroke="#111" stroke-width="1.2"/><rect x="1336.0" y="460.3" width="27.5" height="11.399999999999977" fill="#bdbdbd" stroke="none" stroke-width="1" opacity="0.55"/><rect x="1334.5" y="458.8" width="27.5" height="11.399999999999977" fill="#fff" stroke="#111" stroke-width="1.3" /><text x="1348.2" y="469.0" font-size="10.5" fill="#000" text-anchor="middle" textLength="20" lengthAdjust="spacingAndGlyphs" >PSS</text><polyline points="1362,464.5 1397,464.5" fill="none" stroke="#3a3a3a" stroke-width="1" /><polygon points="1405,464.5 1397,460.5 1397,468.5" fill="#000"/><polygon points="1334,481.2 1327,477.7 1327,484.7" fill="#fff" stroke="#111" stroke-width="1.2"/><rect x="1336.0" y="477.0" width="27.5" height="11.399999999999977" fill="#bdbdbd" stroke="none" stroke-width="1" opacity="0.55"/><rect x="1334.5" y="475.5" width="27.5" height="11.399999999999977" fill="#fff" stroke="#111" stroke-width="1.3" /><text x="1348.2" y="485.7" font-size="10.5" fill="#000" text-anchor="middle" textLength="20" lengthAdjust="spacingAndGlyphs" >PSS</text><polyline points="1362,481.2 1397,481.2" fill="none" stroke="#3a3a3a" stroke-width="1" /><polygon points="1405,481.2 1397,477.2 1397,485.2" fill="#000"/><polygon points="1334,497.6 1327,494.1 1327,501.1" fill="#fff" stroke="#111" stroke-width="1.2"/><rect x="1336.0" y="493.40000000000003" width="27.5" height="11.399999999999977" fill="#bdbdbd" stroke="none" stroke-width="1" opacity="0.55"/><rect x="1334.5" y="491.90000000000003" width="27.5" height="11.399999999999977" fill="#fff" stroke="#111" stroke-width="1.3" /><text x="1348.2" y="502.1" font-size="10.5" fill="#000" text-anchor="middle" textLength="20" lengthAdjust="spacingAndGlyphs" >PSS</text><polyline points="1362,497.6 1397,497.6" fill="none" stroke="#3a3a3a" stroke-width="1" /><polygon points="1405,497.6 1397,493.6 1397,501.6" fill="#000"/><rect x="1405" y="442" width="6.5" height="64" fill="#000" stroke="none" stroke-width="1" /><polyline points="1411.5,475.7 1600,475.7" fill="none" stroke="#3a3a3a" stroke-width="1" /><polygon points="1607.5,475.7 1599.5,471.7 1599.5,479.7" fill="#000"/><circle cx="1444.5" cy="475.7" r="3" fill="#000"/><polyline points="1444.5,475.7 1444.5,441" fill="none" stroke="#3a3a3a" stroke-width="1" /><rect x="1607.5" y="441" width="55.0" height="64.5" fill="#fff" stroke="#111" stroke-width="1.2" /><path d="M1615,441 L1615,449 Q1615,453 1619,453 L1652,453 Q1656,453 1656,449 L1656,441" fill="none" stroke="#111" stroke-width="1.3"/><line x1="1576.7" y1="441" x2="1576.7" y2="701" stroke="#555" stroke-width="1" /><path d="M1230.7,606.2 L1343.5,606.2 Q1347.5,606.2 1347.5,602.2 L1347.5,561.5 Q1347.5,557.5 1351.5,557.5 L1513,557.5" fill="none" stroke="#4a80dc" stroke-width="1.1" /><path d="M1252.4,628 L1357.2,628 Q1361.2,628 1361.2,624 L1361.2,599.5 Q1361.2,595.5 1365.2,595.5 L1513,595.5" fill="none" stroke="#4a80dc" stroke-width="1.1" /><path d="M1274.4,650.5 L1367.2,650.5 Q1371.2,650.5 1371.2,646.5 L1371.2,637.7 Q1371.2,633.7 1375.2,633.7 L1513,633.7" fill="none" stroke="#4a80dc" stroke-width="1.1" /><path d="M1230.7,672.5 L1425,672.5 L1455,676.5 Q1455,672.5 1458.7,672.5 L1458.7,578.2 Q1458.7,574.2 1462.7,574.2 L1513,574.2" fill="none" stroke="#4a80dc" stroke-width="1.1" /><path d="M1458.7,617.5 L1462.7,614.0 Q1462.7,612.5 1467,612.5 L1513,612.5" fill="none" stroke="#4a80dc" stroke-width="1.1" /><circle cx="1458.7" cy="617.5" r="3" fill="#2b63c9"/><path d="M1458.7,655.7 L1462.7,652.2 Q1462.7,650.7 1467,650.7 L1513,650.7" fill="none" stroke="#4a80dc" stroke-width="1.1" /><circle cx="1458.7" cy="655.7" r="3" fill="#2b63c9"/><line x1="1394.5" y1="557.5" x2="1410.5" y2="557.5" stroke="#fff" stroke-width="3" /><path d="M1394.5,557.5 L1396.5,560.5 L1398.9,554.5 L1401.3,560.5 L1403.7,554.5 L1406.1,560.5 L1408.5,554.5 Q1408.5,557.5 1410.5,557.5" fill="none" stroke="#4a80dc" stroke-width="1" /><text x="1396.5" y="552.5" font-size="8" fill="#335" text-anchor="middle" >+</text><text x="1407.5" y="552.5" font-size="8" fill="#335" text-anchor="middle" >-</text><line x1="1394.5" y1="595.5" x2="1410.5" y2="595.5" stroke="#fff" stroke-width="3" /><path d="M1394.5,595.5 L1396.5,598.5 L1398.9,592.5 L1401.3,598.5 L1403.7,592.5 L1406.1,598.5 L1408.5,592.5 Q1408.5,595.5 1410.5,595.5" fill="none" stroke="#4a80dc" stroke-width="1" /><text x="1396.5" y="590.5" font-size="8" fill="#335" text-anchor="middle" >+</text><text x="1407.5" y="590.5" font-size="8" fill="#335" text-anchor="middle" >-</text><line x1="1394.5" y1="633.7" x2="1410.5" y2="633.7" stroke="#fff" stroke-width="3" /><path d="M1394.5,633.7 L1396.5,636.7 L1398.9,630.7 L1401.3,636.7 L1403.7,630.7 L1406.1,636.7 L1408.5,630.7 Q1408.5,633.7 1410.5,633.7" fill="none" stroke="#4a80dc" stroke-width="1" /><text x="1396.5" y="628.7" font-size="8" fill="#335" text-anchor="middle" >+</text><text x="1407.5" y="628.7" font-size="8" fill="#335" text-anchor="middle" >-</text><line x1="1279.5" y1="672.5" x2="1295.5" y2="672.5" stroke="#fff" stroke-width="3" /><path d="M1279.5,672.5 L1281.5,675.5 L1283.9,669.5 L1286.3,675.5 L1288.7,669.5 L1291.1,675.5 L1293.5,669.5 Q1293.5,672.5 1295.5,672.5" fill="none" stroke="#4a80dc" stroke-width="1" /><text x="1281.5" y="667.5" font-size="8" fill="#335" text-anchor="middle" >+</text><text x="1292.5" y="667.5" font-size="8" fill="#335" text-anchor="middle" >-</text><line x1="1394.5" y1="672.5" x2="1410.5" y2="672.5" stroke="#fff" stroke-width="3" /><path d="M1394.5,672.5 L1396.5,675.5 L1398.9,669.5 L1401.3,675.5 L1403.7,669.5 L1406.1,675.5 L1408.5,669.5 Q1408.5,672.5 1410.5,672.5" fill="none" stroke="#4a80dc" stroke-width="1" /><text x="1396.5" y="667.5" font-size="8" fill="#335" text-anchor="middle" >+</text><text x="1407.5" y="667.5" font-size="8" fill="#335" text-anchor="middle" >-</text><line x1="1335" y1="672.5" x2="1368" y2="672.5" stroke="#fff" stroke-width="3" /><path d="M1335,672.5 q5,-8 10,0 q5,-8 11,0 q5,-8 11,0" fill="none" stroke="#4a80dc" stroke-width="1.1"/><text x="1333" y="666" font-size="8" fill="#335" text-anchor="middle" >+</text><text x="1370" y="666" font-size="8" fill="#335" text-anchor="middle" >-</text><text x="1489" y="554.5" font-size="10" fill="#223" text-anchor="middle" >1+</text><text x="1489" y="571.5" font-size="10" fill="#223" text-anchor="middle" >1-</text><text x="1556" y="554.5" font-size="10" fill="#223" text-anchor="middle" >2+</text><text x="1556" y="571.5" font-size="10" fill="#223" text-anchor="middle" >2-</text><text x="1500" y="562.5" font-size="8" fill="#335" text-anchor="middle" >-</text><text x="1542" y="562.5" font-size="8" fill="#335" text-anchor="middle" >-</text><path d="M1514,557.5 L1514,559.0 c-5,0 -5,3.5 0,3.5 c-5,0 -5,3.5 0,3.5 c-5,0 -5,3.5 0,3.5 c-5,0 -5,3.5 0,3.5 L1514,574.2" fill="none" stroke="#4a80dc" stroke-width="1"/><path d="M1530,559.0 c5,0 5,3.5 0,3.5 c5,0 5,3.5 0,3.5 c5,0 5,3.5 0,3.5 c5,0 5,3.5 0,3.5 L1531,574.2" fill="none" stroke="#4a80dc" stroke-width="1"/><path d="M1503,576.5 C1522,575.5 1518,556.5 1540,555.5" fill="none" stroke="#4a80dc" stroke-width="1"/><text x="1489" y="592.5" font-size="10" fill="#223" text-anchor="middle" >1+</text><text x="1489" y="609.5" font-size="10" fill="#223" text-anchor="middle" >1-</text><text x="1556" y="592.5" font-size="10" fill="#223" text-anchor="middle" >2+</text><text x="1556" y="609.5" font-size="10" fill="#223" text-anchor="middle" >2-</text><text x="1500" y="600.5" font-size="8" fill="#335" text-anchor="middle" >-</text><text x="1542" y="600.5" font-size="8" fill="#335" text-anchor="middle" >-</text><path d="M1514,595.5 L1514,597.0 c-5,0 -5,3.5 0,3.5 c-5,0 -5,3.5 0,3.5 c-5,0 -5,3.5 0,3.5 c-5,0 -5,3.5 0,3.5 L1514,612.2" fill="none" stroke="#4a80dc" stroke-width="1"/><path d="M1530,597.0 c5,0 5,3.5 0,3.5 c5,0 5,3.5 0,3.5 c5,0 5,3.5 0,3.5 c5,0 5,3.5 0,3.5 L1531,612.2" fill="none" stroke="#4a80dc" stroke-width="1"/><path d="M1503,614.5 C1522,613.5 1518,594.5 1540,593.5" fill="none" stroke="#4a80dc" stroke-width="1"/><text x="1489" y="630.7" font-size="10" fill="#223" text-anchor="middle" >1+</text><text x="1489" y="647.7" font-size="10" fill="#223" text-anchor="middle" >1-</text><text x="1556" y="630.7" font-size="10" fill="#223" text-anchor="middle" >2+</text><text x="1556" y="647.7" font-size="10" fill="#223" text-anchor="middle" >2-</text><text x="1500" y="638.7" font-size="8" fill="#335" text-anchor="middle" >-</text><text x="1542" y="638.7" font-size="8" fill="#335" text-anchor="middle" >-</text><path d="M1514,633.7 L1514,635.2 c-5,0 -5,3.5 0,3.5 c-5,0 -5,3.5 0,3.5 c-5,0 -5,3.5 0,3.5 c-5,0 -5,3.5 0,3.5 L1514,650.4000000000001" fill="none" stroke="#4a80dc" stroke-width="1"/><path d="M1530,635.2 c5,0 5,3.5 0,3.5 c5,0 5,3.5 0,3.5 c5,0 5,3.5 0,3.5 c5,0 5,3.5 0,3.5 L1531,650.4000000000001" fill="none" stroke="#4a80dc" stroke-width="1"/><path d="M1503,652.7 C1522,651.7 1518,632.7 1540,631.7" fill="none" stroke="#4a80dc" stroke-width="1"/><path d="M1535,557.5 L1680,557.5 Q1683.7,557.5 1683.7,561.5 L1683.7,568.7 L1893.5,568.7 Q1897.5,568.7 1897.5,572.7 L1897.5,660" fill="none" stroke="#4a80dc" stroke-width="1.1" /><polyline points="1535,596.2 1920,596.2" fill="none" stroke="#4a80dc" stroke-width="1.1" /><path d="M1535,633.7 L1680,633.7 Q1683.7,633.7 1683.7,629.7 L1683.7,623.7 L1920,623.7" fill="none" stroke="#4a80dc" stroke-width="1.1" /><path d="M1535,574.2 L1596,574.2 Q1600,574.2 1600,578.2 L1600,701" fill="none" stroke="#4a80dc" stroke-width="1.1" /><polyline points="1535,612.5 1600,612.5" fill="none" stroke="#4a80dc" stroke-width="1.1" /><polyline points="1535,650.7 1600,650.7" fill="none" stroke="#4a80dc" stroke-width="1.1" /><circle cx="1600" cy="612.5" r="3" fill="#2b63c9"/><circle cx="1600" cy="650.7" r="3" fill="#2b63c9"/><line x1="1701" y1="568.7" x2="1717" y2="568.7" stroke="#fff" stroke-width="3" /><path d="M1701,568.7 L1703.0,571.7 L1705.4,565.7 L1707.8,571.7 L1710.2,565.7 L1712.6,571.7 L1715.0,565.7 Q1715.0,568.7 1717,568.7" fill="none" stroke="#4a80dc" stroke-width="1" /><text x="1703" y="563.7" font-size="8" fill="#335" text-anchor="middle" >+</text><text x="1714" y="563.7" font-size="8" fill="#335" text-anchor="middle" >-</text><line x1="1701" y1="596.2" x2="1717" y2="596.2" stroke="#fff" stroke-width="3" /><path d="M1701,596.2 L1703.0,599.2 L1705.4,593.2 L1707.8,599.2 L1710.2,593.2 L1712.6,599.2 L1715.0,593.2 Q1715.0,596.2 1717,596.2" fill="none" stroke="#4a80dc" stroke-width="1" /><text x="1703" y="591.2" font-size="8" fill="#335" text-anchor="middle" >+</text><text x="1714" y="591.2" font-size="8" fill="#335" text-anchor="middle" >-</text><line x1="1701" y1="623.7" x2="1717" y2="623.7" stroke="#fff" stroke-width="3" /><path d="M1701,623.7 L1703.0,626.7 L1705.4,620.7 L1707.8,626.7 L1710.2,620.7 L1712.6,626.7 L1715.0,620.7 Q1715.0,623.7 1717,623.7" fill="none" stroke="#4a80dc" stroke-width="1" /><text x="1703" y="618.7" font-size="8" fill="#335" text-anchor="middle" >+</text><text x="1714" y="618.7" font-size="8" fill="#335" text-anchor="middle" >-</text><polyline points="1728.7,568.7 1728.7,701" fill="none" stroke="#4a80dc" stroke-width="1.1" /><circle cx="1728.7" cy="568.7" r="3" fill="#2b63c9"/><polyline points="1728.7,672.5 1706.2,672.5 1706.2,688.7" fill="none" stroke="#4a80dc" stroke-width="1.1" /><circle cx="1728.7" cy="672.5" r="3" fill="#2b63c9"/><rect x="1695.2" y="688.7" width="22.5" height="13" fill="#fff" stroke="#4a80dc" stroke-width="1" /><path d="M1700.7,701 a5.5,5.5 0 0 1 11,0" fill="none" stroke="#4a80dc" stroke-width="1"/><text x="1699.7" y="697" font-size="8" fill="#335" text-anchor="middle" >+</text><polyline points="1772,596.2 1772,701" fill="none" stroke="#4a80dc" stroke-width="1.1" /><circle cx="1772" cy="596.2" r="3" fill="#2b63c9"/><polyline points="1772,662.5 1755.7,662.5 1755.7,688.7" fill="none" stroke="#4a80dc" stroke-width="1.1" /><circle cx="1772" cy="662.5" r="3" fill="#2b63c9"/><rect x="1744.7" y="688.7" width="22.5" height="13" fill="#fff" stroke="#4a80dc" stroke-width="1" /><path d="M1750.2,701 a5.5,5.5 0 0 1 11,0" fill="none" stroke="#4a80dc" stroke-width="1"/><text x="1749.2" y="697" font-size="8" fill="#335" text-anchor="middle" >+</text><polyline points="1815.7,623.7 1815.7,701" fill="none" stroke="#4a80dc" stroke-width="1.1" /><circle cx="1815.7" cy="623.7" r="3" fill="#2b63c9"/><polyline points="1815.7,668 1799.5,668 1799.5,688.7" fill="none" stroke="#4a80dc" stroke-width="1.1" /><circle cx="1815.7" cy="668" r="3" fill="#2b63c9"/><rect x="1788.5" y="688.7" width="22.5" height="13" fill="#fff" stroke="#4a80dc" stroke-width="1" /><path d="M1794.0,701 a5.5,5.5 0 0 1 11,0" fill="none" stroke="#4a80dc" stroke-width="1"/><text x="1793.0" y="697" font-size="8" fill="#335" text-anchor="middle" >+</text><polyline points="1897.5,660 1893,664 1902,669 1893,674 1902,679 1893,684 1902,689 1897.5,693 1897.5,701" fill="none" stroke="#4a80dc" stroke-width="1.1"/><polyline points="165,415 165,878.7 400,878.7 400,905" fill="none" stroke="#555" stroke-width="1" /><polygon points="400,912.5 396.0,904.5 404.0,904.5" fill="#000"/><polyline points="171,415 171,837 862.5,837 862.5,1005.7" fill="none" stroke="#555" stroke-width="1" /><circle cx="862.5" cy="1005.7" r="3" fill="#000"/><polyline points="177,415 177,834.5 855,834.5 855,983.7" fill="none" stroke="#555" stroke-width="1" /><circle cx="855" cy="983.7" r="3" fill="#000"/><polyline points="183,415 183,832 846.2,832 846.2,962" fill="none" stroke="#555" stroke-width="1" /><circle cx="846.2" cy="962" r="3" fill="#000"/><polyline points="188,415 188,826.2 838.7,826.2 838.7,940" fill="none" stroke="#555" stroke-width="1" /><circle cx="838.7" cy="940" r="3" fill="#000"/><polyline points="937,855.7 236.2,855.7 236.2,940 251.2,940 251.2,1038.7 293,1038.7" fill="none" stroke="#3a3a3a" stroke-width="1" /><polygon points="300.5,1038.7 292.5,1034.7 292.5,1042.7" fill="#000"/><polyline points="236.2,896.2 160,896.2" fill="none" stroke="#3a3a3a" stroke-width="1" /><polygon points="149,896.2 157,892.2 157,900.2" fill="#000"/><circle cx="236.2" cy="896.2" r="3" fill="#000"/><rect x="142.5" y="875.5" width="6.3" height="42" fill="#000" stroke="none" stroke-width="1" /><polyline points="142,902 137,907 142,912" fill="none" stroke="#000" stroke-width="1.3"/><polyline points="142.5,885 110,885" fill="none" stroke="#3a3a3a" stroke-width="1" /><polygon points="102.5,885 110.5,881.0 110.5,889.0" fill="#000"/><polyline points="142.5,896.2 87.5,896.2 87.5,899" fill="none" stroke="#3a3a3a" stroke-width="1" /><polygon points="87.5,891.5 83.5,899.5 91.5,899.5" fill="#000"/><ellipse cx="88" cy="885.5" rx="11.5" ry="5.8" fill="#fff" stroke="#111" stroke-width="1.1"/><text x="85" y="889" font-size="8" fill="#000" text-anchor="middle" >−</text><text x="93" y="889" font-size="8" fill="#000" text-anchor="middle" >+</text><polyline points="0,858 72.5,858 72.5,885 76.5,885" fill="none" stroke="#3a3a3a" stroke-width="1" /><rect x="5.5" y="898" width="6.5" height="117" fill="#000" stroke="none" stroke-width="1" /><polygon points="5.5,918 -2.5,914.0 -2.5,922.0" fill="#000"/><polygon points="5.5,956.2 -2.5,952.2 -2.5,960.2" fill="#000"/><polygon points="5.5,995 -2.5,991.0 -2.5,999.0" fill="#000"/><polyline points="12,956.7 208.7,956.7 208.7,923.7 263.7,923.7 263.7,1000 293,1000" fill="none" stroke="#3a3a3a" stroke-width="1" /><polygon points="300.5,1000 292.5,996.0 292.5,1004.0" fill="#000"/><polyline points="263.7,934.5 293,934.5" fill="none" stroke="#3a3a3a" stroke-width="1" /><polygon points="300.5,934.5 292.5,930.5 292.5,938.5" fill="#000"/><circle cx="263.7" cy="934.5" r="3" fill="#000"/><polyline points="251.2,951.2 293,951.2" fill="none" stroke="#3a3a3a" stroke-width="1" /><polygon points="300.5,951.2 292.5,947.2 292.5,955.2" fill="#000"/><circle cx="251.2" cy="951.2" r="3" fill="#000"/><defs><linearGradient id="gr" x1="0" y1="0" x2="0" y2="1"><stop offset="0" stop-color="#ffffff"/><stop offset="1" stop-color="#d6d6d6"/></linearGradient></defs><rect x="302.7" y="927.0" width="49.5" height="34.5" fill="#bdbdbd" stroke="none" stroke-width="1" opacity="0.55"/><rect x="301.2" y="925.5" width="49.5" height="34.5" fill="url(#gr)" stroke="#111" stroke-width="1.2" /><text x="304.5" y="938.5" font-size="10.5" fill="#000" text-anchor="start" >Ref</text><text x="304.5" y="955" font-size="10.5" fill="#000" text-anchor="start" >Feed</text><text x="348" y="950" font-size="10.5" fill="#000" text-anchor="end" >Y</text><text x="325.8" y="973" font-size="11" fill="#000" text-anchor="middle" >Res</text><rect x="301.2" y="979.5" width="55.0" height="105.5" fill="#fff" stroke="#111" stroke-width="1.2" /><rect x="308.7" y="994.5" width="40" height="51.5" fill="none" stroke="#111" stroke-width="1.5" rx="5"/><polyline points="257.5,1077.5 293,1077.5" fill="none" stroke="#3a3a3a" stroke-width="1" /><polygon points="300.5,1077.5 292.5,1073.5 292.5,1081.5" fill="#000"/><polyline points="350.7,945.7 372.5,945.7" fill="none" stroke="#3a3a3a" stroke-width="1" /><circle cx="372.5" cy="945.7" r="3" fill="#000"/><polyline points="372.5,1080 372.5,934.5 381,934.5" fill="none" stroke="#3a3a3a" stroke-width="1" /><polygon points="388.7,934.5 380.7,930.5 380.7,938.5" fill="#000"/><ellipse cx="399.6" cy="934.6" rx="10.9" ry="16.6" fill="#fff" stroke="#111" stroke-width="1.1"/><text x="400" y="926" font-size="7" fill="#000" text-anchor="middle" >+</text><text x="395" y="938" font-size="7" fill="#000" text-anchor="middle" >+</text><polyline points="410.5,934.5 458,934.5" fill="none" stroke="#3a3a3a" stroke-width="1" /><polygon points="465.5,934.5 457.5,930.5 457.5,938.5" fill="#000"/><rect x="467.0" y="929.5" width="33.19999999999999" height="24.5" fill="#bdbdbd" stroke="none" stroke-width="1" opacity="0.55"/><rect x="465.5" y="928" width="33.19999999999999" height="24.5" fill="#fff" stroke="#111" stroke-width="1.2" /><text x="473.5" y="940" font-size="10" fill="#000" text-anchor="middle" >×</text><text x="473.5" y="950.5" font-size="10" fill="#000" text-anchor="middle" >÷</text><polyline points="498.7,940 507,940" fill="none" stroke="#3a3a3a" stroke-width="1" /><polygon points="514.5,940 506.5,936.0 506.5,944.0" fill="#000"/><rect x="514.5" y="913.7" width="5.5" height="52.5" fill="#000" stroke="none" stroke-width="1" /><polyline points="520,924.2 534,924.2" fill="none" stroke="#3a3a3a" stroke-width="1" /><polygon points="541.2,924.2 533.2,920.2 533.2,928.2" fill="#000"/><polyline points="520,940 534,940" fill="none" stroke="#3a3a3a" stroke-width="1" /><polygon points="541.2,940 533.2,936.0 533.2,944.0" fill="#000"/><polyline points="520,956.2 534,956.2" fill="none" stroke="#3a3a3a" stroke-width="1" /><polygon points="541.2,956.2 533.2,952.2 533.2,960.2" fill="#000"/><rect x="542.7" y="918.5" width="66.29999999999995" height="46" fill="#bdbdbd" stroke="none" stroke-width="1" opacity="0.55"/><rect x="541.2" y="917" width="66.29999999999995" height="46" fill="url(#gr)" stroke="#111" stroke-width="1.2" /><text x="543.5" y="928.5" font-size="10" fill="#000" text-anchor="start" >A</text><text x="543.5" y="944" font-size="10" fill="#000" text-anchor="start" >B</text><text x="543.5" y="960" font-size="10" fill="#000" text-anchor="start" >C</text><text x="605" y="928.5" font-size="10" fill="#000" text-anchor="end" >Al</text><text x="605" y="944" font-size="10" fill="#000" text-anchor="end" >Be</text><text x="605" y="960" font-size="10" fill="#000" text-anchor="end" >0</text><text x="574.5" y="976.5" font-size="11" fill="#000" text-anchor="middle" textLength="94" lengthAdjust="spacingAndGlyphs" >ABC to AlphaBeta8</text><polyline points="607.5,924.2 632.5,924.2 632.5,940 648.5,940" fill="none" stroke="#3a3a3a" stroke-width="1" /><polygon points="656.2,940 648.2,936.0 648.2,944.0" fill="#000"/><polyline points="607.5,940 625,940 625,978.7 648.5,978.7" fill="none" stroke="#3a3a3a" stroke-width="1" /><polygon points="656.2,978.7 648.2,974.7 648.2,982.7" fill="#000"/><polyline points="607.5,956.2 617.5,956.2 617.5,1017 648.5,1017" fill="none" stroke="#3a3a3a" stroke-width="1" /><polygon points="656.2,1017 648.2,1013.0 648.2,1021.0" fill="#000"/><rect x="656.2" y="921.2" width="121.29999999999995" height="146.79999999999995" fill="#fff" stroke="#111" stroke-width="1.5" /><text x="660" y="944" font-size="10.5" fill="#000" text-anchor="start" >Val</text><text x="660" y="982.7" font-size="10.5" fill="#000" text-anchor="start" >Vbe</text><text x="660" y="1021" font-size="10.5" fill="#000" text-anchor="start" >Vze</text><text x="660" y="1059" font-size="10.5" fill="#000" text-anchor="start" >Bal</text><text x="774" y="944" font-size="10.5" fill="#000" text-anchor="end" >Da</text><text x="774" y="966" font-size="10.5" fill="#000" text-anchor="end" >Db</text><text x="774" y="987.7" font-size="10.5" fill="#000" text-anchor="end" >Dc</text><text x="774" y="1009.7" font-size="10.5" fill="#000" text-anchor="end" >Dn</text><text x="774" y="1031.5" font-size="10.5" fill="#000" text-anchor="end" >Sec</text><text x="774" y="1053.5" font-size="10.5" fill="#000" text-anchor="end" >Prism</text><path d="M709,994 L716,988 L719,983 L724,996 L719,993 L714,993 Z" fill="#e05a1e"/><path d="M709,994 L716,988 L714,995 Z" fill="#2f6fc9"/><text x="717" y="1013.5" font-size="11" fill="#000" text-anchor="middle" >fcn</text><text x="717" y="1083" font-size="11" fill="#000" text-anchor="middle" >SVM3D</text><rect x="592.0" y="1036.5" width="39.0" height="39.5" fill="#bdbdbd" stroke="none" stroke-width="1" opacity="0.55"/><rect x="590.5" y="1035" width="39.0" height="39.5" fill="#fff" stroke="#111" stroke-width="1.2" /><text x="610" y="1059" font-size="11" fill="#000" text-anchor="middle" >.5</text><polyline points="629.5,1055 648.5,1055" fill="none" stroke="#3a3a3a" stroke-width="1" /><polygon points="656.2,1055 648.2,1051.0 648.2,1059.0" fill="#000"/><text x="654" y="1084" font-size="11" fill="#000" text-anchor="middle" >Vdc7</text><polyline points="777.5,940 937,940" fill="none" stroke="#3a3a3a" stroke-width="1" /><polyline points="777.5,962 937,962" fill="none" stroke="#3a3a3a" stroke-width="1" /><polyline points="777.5,983.7 937,983.7" fill="none" stroke="#3a3a3a" stroke-width="1" /><polyline points="777.5,1005.7 937,1005.7" fill="none" stroke="#3a3a3a" stroke-width="1" /><polyline points="777.5,1027.5 807,1027.5" fill="none" stroke="#3a3a3a" stroke-width="1" /><polygon points="815,1027.5 807,1023.5 807,1031.5" fill="#000"/><polyline points="777.5,1049.5 807,1049.5" fill="none" stroke="#3a3a3a" stroke-width="1" /><polygon points="815,1049.5 807,1045.5 807,1053.5" fill="#000"/><rect x="815" y="1016" width="17" height="44" fill="#000" stroke="none" stroke-width="1" /><polyline points="832,1038.7 937,1038.7" fill="none" stroke="#3a3a3a" stroke-width="1" /><polygon points="132,1080 128.0,1072 136.0,1072" fill="#000"/><rect x="0" y="0" width="455" height="25" fill="#fff" stroke="none" stroke-width="1" /><text x="-3" y="12" font-size="17" fill="#8a8a8a" text-anchor="start" textLength="52" lengthAdjust="spacingAndGlyphs" >Scope5</text><line x1="290" y1="5.5" x2="301" y2="5.5" stroke="#9a9a9a" stroke-width="1" /><rect x="353.5" y="-1.5" width="10" height="11" fill="none" stroke="#9a9a9a" stroke-width="1" /><line x1="417" y1="0" x2="428" y2="10" stroke="#9a9a9a" stroke-width="1" /><line x1="428" y1="0" x2="417" y2="10" stroke="#9a9a9a" stroke-width="1" /><rect x="0" y="25" width="455" height="27" fill="#fff" stroke="none" stroke-width="1" /><text x="1" y="44.7" font-size="16.5" fill="#000" text-anchor="start" textLength="39" lengthAdjust="spacingAndGlyphs" >Tools</text><text x="49" y="44.7" font-size="16.5" fill="#000" text-anchor="start" textLength="34" lengthAdjust="spacingAndGlyphs" >View</text><text x="93" y="44.7" font-size="16.5" fill="#000" text-anchor="start" textLength="76" lengthAdjust="spacingAndGlyphs" >Simulation</text><text x="179" y="44.7" font-size="16.5" fill="#000" text-anchor="start" textLength="33" lengthAdjust="spacingAndGlyphs" >Help</text><path d="M440,37 L446,41 M443,42 L447,42 L447,38" fill="none" stroke="#111" stroke-width="1.8"/><rect x="-37" y="52" width="492" height="35" fill="#f0f0f0" stroke="none" stroke-width="1" /><line x1="-37" y1="52.5" x2="455" y2="52.5" stroke="#d5d5d5" stroke-width="1" /><line x1="-37" y1="86.5" x2="455" y2="86.5" stroke="#d8d8d8" stroke-width="1" /><path d="M-9.2,71.3 L-9.7,73.0 L-12.4,73.3 L-13.2,74.3 L-13.0,77.0 L-14.6,77.8 L-16.7,76.2 L-18.0,76.3 L-19.8,78.3 L-21.5,77.8 L-21.8,75.1 L-22.8,74.3 L-25.5,74.5 L-26.3,72.9 L-24.7,70.8 L-24.8,69.5 L-26.8,67.7 L-26.3,66.0 L-23.6,65.7 L-22.8,64.7 L-23.0,62.0 L-21.4,61.2 L-19.3,62.8 L-18.0,62.7 L-16.2,60.7 L-14.5,61.2 L-14.2,63.9 L-13.2,64.7 L-10.5,64.5 L-9.7,66.1 L-11.3,68.2 L-11.2,69.5Z" fill="#9a9a9a" stroke="#3c3c3c" stroke-width="1.2" stroke-linejoin="round"/><circle cx="-18" cy="69.5" r="3.3" fill="#fff" stroke="#3c3c3c" stroke-width="1.4"/><path d="M2.0,68.0 L9.0,68.0 L5.5,71.5 Z" fill="#333"/><line x1="12.5" y1="55" x2="12.5" y2="86" stroke="#cfcfcf" stroke-width="1" /><line x1="141.5" y1="55" x2="141.5" y2="86" stroke="#cfcfcf" stroke-width="1" /><line x1="244.5" y1="55" x2="244.5" y2="86" stroke="#cfcfcf" stroke-width="1" /><line x1="295.5" y1="55" x2="295.5" y2="86" stroke="#cfcfcf" stroke-width="1" /><path d="M23,67.5 L34,61.0 L34,74.0 Z" fill="#b5dcf5" stroke="#6a9fcc" stroke-width="1"/><rect x="35.5" y="60.5" width="3.5" height="11" fill="#a6d3f2" stroke="#5b8fc2" stroke-width="1"/><path d="M41.4,74.8 L41.0,76.0 L38.6,75.9 L38.0,76.6 L38.6,78.9 L37.5,79.5 L35.8,77.7 L35.0,77.8 L33.7,79.9 L32.5,79.5 L32.6,77.1 L31.9,76.5 L29.6,77.1 L29.0,76.0 L30.8,74.3 L30.7,73.5 L28.6,72.2 L29.0,71.0 L31.4,71.1 L32.0,70.4 L31.4,68.1 L32.5,67.5 L34.2,69.3 L35.0,69.2 L36.3,67.1 L37.5,67.5 L37.4,69.9 L38.1,70.5 L40.4,69.9 L41.0,71.0 L39.2,72.7 L39.3,73.5Z" fill="#9c9c9c" stroke="#2e2e2e" stroke-width="1.2" stroke-linejoin="round"/><circle cx="35" cy="73.5" r="2.3" fill="#fff" stroke="#2e2e2e" stroke-width="1.4"/><circle cx="61" cy="69.5" r="10.3" fill="#8ed14a" stroke="#3f7d1e" stroke-width="1.8"/><path d="M58,64.5 L66,69.5 L58,74.5 Z" fill="#222"/><rect x="84" y="62.0" width="3.5" height="15" fill="#8ec3ea" stroke="#3a78b5" stroke-width="1"/><path d="M90,62.0 L100,69.5 L90,77.0 Z" fill="#a9d3f2" stroke="#3a78b5" stroke-width="1.2"/><circle cx="123" cy="69.5" r="10.3" fill="#8c8c8c" stroke="#a0a0a0" stroke-width="1"/><rect x="119" y="65.5" width="8" height="8" fill="#7a7a7a" stroke="none" stroke-width="1" /><rect x="154" y="60.5" width="9" height="6" fill="#f5a54a" stroke="#d2691e" stroke-width="1.2" /><path d="M163,63.5 L167,63.5 L167,68.5" fill="none" stroke="#d2691e" stroke-width="1.2"/><circle cx="167" cy="70.0" r="2.5" fill="#fff" stroke="#444" stroke-width="1.1"/><path d="M167,72.5 L167,75.5 L162,75.5" fill="none" stroke="#444" stroke-width="1.1"/><rect x="154" y="72.5" width="8" height="6" fill="#fff" stroke="#444" stroke-width="1.1" /><path d="M182.5,68.0 L189.5,68.0 L186,71.5 Z" fill="#333"/><rect x="195" y="54" width="37" height="31" fill="#c3ddf6" stroke="none" stroke-width="1" /><circle cx="213" cy="68.0" r="4.2" fill="#fff" stroke="#2a2a2a" stroke-width="1.7"/><line x1="215.5" y1="71.5" x2="218.5" y2="76.0" stroke="#2a2a2a" stroke-width="1.9" /><rect x="200.5" y="64.0" width="2.2" height="8" fill="#222" stroke="none" stroke-width="1" /><rect x="223.3" y="64.0" width="2.2" height="8" fill="#222" stroke="none" stroke-width="1" /><rect x="204" y="66.5" width="2" height="3" fill="#333" stroke="none" stroke-width="1" /><rect x="220" y="66.5" width="2" height="3" fill="#333" stroke="none" stroke-width="1" /><path d="M233.5,68.0 L240.5,68.0 L237,71.5 Z" fill="#333"/><rect x="254.5" y="59.0" width="21" height="21" fill="url(#icg)" stroke="#1e1e1e" stroke-width="1.7" /><path d="M265,63.5 L259,69.5 L265,75.5 L271,69.5 Z" fill="none" stroke="#9a9a9a" stroke-width="1" stroke-dasharray="1.5,1.5"/><path d="M265,61.0 l-3.5,3.5 h7 Z M265,78.0 l-3.5,-3.5 h7 Z M256.5,69.5 l3.5,-3.5 v7 Z M273.5,69.5 l-3.5,-3.5 v7 Z" fill="#333"/><path d="M284.5,68.0 L291.5,68.0 L288,71.5 Z" fill="#333"/><path d="M306,77.5 L313.5,77.5 L313.5,68.5 M313.5,62.0 L321,62.0" fill="none" stroke="#1e1e1e" stroke-width="4.6" stroke-linecap="square"/><path d="M306,77.5 L313.5,77.5 L313.5,68.5 M313.5,62.0 L321,62.0" fill="none" stroke="#7a7a7a" stroke-width="2" stroke-linecap="square"/><path d="M307,71.0 L313.5,61.5 L320,71.0 L316.5,71.0 L313.5,67.0 L310.5,71.0 Z" fill="#6a6a6a" stroke="#1e1e1e" stroke-width="1.4" stroke-linejoin="round"/><rect x="337.5" y="59.0" width="21" height="21" fill="url(#icg)" stroke="#333" stroke-width="1.5" /><path d="M339,75.0 L352.5,60.0 L358,65.0 L344.5,80.0 Z" fill="#93cdec" stroke="#3d7fb0" stroke-width="1"/><path d="M345,72.5 l1.5,1.5 M348,69.0 l1.5,1.5 M351,65.5 l1.5,1.5 M354,62.0 l1.5,1.5" stroke="#2b5f86" stroke-width="1.1"/><path d="M367.5,68.0 L374.5,68.0 L371,71.5 Z" fill="#333"/><rect x="0" y="87.5" width="454.5" height="294.5" fill="#262626" stroke="none" stroke-width="1" /><line x1="455.5" y1="25" x2="455.5" y2="415" stroke="#b9b9b9" stroke-width="1" /><rect x="0" y="101" width="436" height="118" fill="#000" stroke="none" stroke-width="1" /><rect x="0" y="247.5" width="436" height="103.5" fill="#000" stroke="none" stroke-width="1" /><line x1="71.3" y1="101" x2="71.3" y2="219" stroke="#3a3a3a" stroke-width="1" /><line x1="173.2" y1="101" x2="173.2" y2="219" stroke="#3a3a3a" stroke-width="1" /><line x1="275.5" y1="101" x2="275.5" y2="219" stroke="#3a3a3a" stroke-width="1" /><line x1="377.1" y1="101" x2="377.1" y2="219" stroke="#3a3a3a" stroke-width="1" /><line x1="0" y1="114.5" x2="436" y2="114.5" stroke="#3a3a3a" stroke-width="1" /><line x1="0" y1="140.8" x2="436" y2="140.8" stroke="#3a3a3a" stroke-width="1" /><line x1="0" y1="167.0" x2="436" y2="167.0" stroke="#3a3a3a" stroke-width="1" /><line x1="0" y1="193.3" x2="436" y2="193.3" stroke="#3a3a3a" stroke-width="1" /><line x1="71.3" y1="247.5" x2="71.3" y2="351" stroke="#3a3a3a" stroke-width="1" /><line x1="173.2" y1="247.5" x2="173.2" y2="351" stroke="#3a3a3a" stroke-width="1" /><line x1="275.5" y1="247.5" x2="275.5" y2="351" stroke="#3a3a3a" stroke-width="1" /><line x1="377.1" y1="247.5" x2="377.1" y2="351" stroke="#3a3a3a" stroke-width="1" /><line x1="0" y1="262.8" x2="436" y2="262.8" stroke="#3a3a3a" stroke-width="1" /><line x1="0" y1="289.0" x2="436" y2="289.0" stroke="#3a3a3a" stroke-width="1" /><line x1="0" y1="315.2" x2="436" y2="315.2" stroke="#3a3a3a" stroke-width="1" /><line x1="0" y1="341.3" x2="436" y2="341.3" stroke="#3a3a3a" stroke-width="1" /><clipPath id="c5a"><rect x="0" y="101" width="436" height="118"/></clipPath><clipPath id="c5b"><rect x="0" y="247.5" width="436" height="103.5"/></clipPath><g clip-path="url(#c5a)"><path d="M0,133l.5,6.2 .5,16.4 .5,20.6 .5,17.2 .5,7.4 .5,-5.1 .5,-15.7 .5,-20.5 .5,-18 .5,-8.6 .5,3.7 .5,14.8 .5,20.4 .5,18.5 .5,9.7 .5,-2.6 .5,-13.9 .5,-20.2 .5,-19.1 .5,-10.9 .5,1.2 .5,12.9 .5,19.9 .5,19.5 .5,11.9 .5,0 .5,-12 .5,-19.6 .5,-19.9 .5,-13.1 .5,-1.3 .5,10.9 .5,19 .5,20.3 .5,13.9 .5,2.5 .5,-9.8 .5,-18.6 .5,-20.6 .5,-14.9 .5,-3.8 .5,8.6 .5,17.9 .5,20.7 .5,15.7 .5,5.1 .5,-7.6 .5,-17.3 .5,-20.8 .5,-16.6 .5,-6.4 .5,6.3 .5,16.5 .5,20.8 .5,17.3 .5,7.5 .5,-5.1 .5,-15.9 .5,-20.7 .5,-18.1 .5,-8.8 .5,3.7 .5,14.8 .5,20.4 .5,18.6 .5,9.7 .5,-2.7 .5,-14.2 .5,-20.5 .5,-19.3 .5,-11.1 .5,1.1 .5,13 .5,19.9 .5,19.5 .5,12 .5,-.2 .5,-12.1 .5,-19.9 .5,-20.2 .5,-13.2 .5,-1.4 .5,10.8 .5,19.1 .5,20.3 .5,14 .5,2.4 .5,-10 .5,-18.9 .5,-20.8 .5,-15.1 .5,-4 .5,8.6 .5,18 .5,20.7 .5,15.8 .5,4.9 .5,-7.7 .5,-17.5 .5,-21.1 .5,-16.9 .5,-6.5 .5,6.2 .5,16.6 .5,20.9 .5,17.3 .5,7.5 .5,-5.3 .5,-16 .5,-21.1 .5,-18.3 .5,-8.9 .5,3.7 .5,15 .5,20.6 .5,18.7 .5,9.8 .5,-2.7 .5,-14.3 .5,-20.7 .5,-19.5 .5,-11.2 .5,1.2 .5,13 .5,20.1 .5,19.7 .5,12 .5,-.1 .5,-12.3 .5,-20 .5,-20.3 .5,-13.4 .5,-1.4 .5,10.9 .5,19.3 .5,20.4 .5,14.1 .5,2.5 .5,-10.1 .5,-19 .5,-21 .5,-15.3 .5,-4 .5,8.7 .5,18.1 .5,20.9 .5,15.9 .5,5 .5,-7.7 .5,-17.8 .5,-21.2 .5,-17 .5,-6.5 .5,6.2 .5,16.7 .5,21 .5,17.5 .5,7.5 .5,-5.2 .5,-16.2 .5,-21.2 .5,-18.5 .5,-9 .5,3.8 .5,15 .5,20.8 .5,18.8 .5,9.9 .5,-2.7 .5,-14.4 .5,-20.8 .5,-19.7 .5,-11.3 .5,1.2 .5,13.1 .5,20.3 .5,19.9 .5,12.1 .5,-.1 .5,-12.4 .5,-19.9 .5,-20.3 .5,-13.1 .5,-1.2 .5,11.3 .5,19.7 .5,20.9 .5,14.4 .5,2.8 .5,-9.9 .5,-18.9 .5,-20.8 .5,-15.1 .5,-3.8 .5,9 .5,18.6 .5,21.3 .5,16.2 .5,5.4 .5,-7.6 .5,-17.5 .5,-21.1 .5,-16.8 .5,-6.3 .5,6.5 .5,17.1 .5,21.4 .5,17.9 .5,7.8 .5,-5.1 .5,-15.9 .5,-21.1 .5,-18.2 .5,-8.8 .5,4.1 .5,15.4 .5,21.1 .5,19.2 .5,10.2 .5,-2.5 .5,-14.2 .5,-20.6 .5,-19.4 .5,-11.1 .5,1.5 .5,13.4 .5,20.6 .5,20.2 .5,12.5 .5,.1 .5,-12.1 .5,-20 .5,-20.3 .5,-13.2 .5,-1.1 .5,11.3 .5,19.7 .5,21 .5,14.4 .5,2.8 .5,-9.9 .5,-18.9 .5,-20.9 .5,-15.2 .5,-3.7 .5,9 .5,18.6 .5,21.3 .5,16.3 .5,5.4 .5,-7.6 .5,-17.6 .5,-21.1 .5,-16.9 .5,-6.3 .5,6.6 .5,17.1 .5,21.5 .5,17.9 .5,7.8 .5,-5.1 .5,-16 .5,-21.1 .5,-18.3 .5,-8.7 .5,4 .5,15.5 .5,21.2 .5,19.2 .5,10.2 .5,-2.5 .5,-14.2 .5,-20.7 .5,-19.4 .5,-11.1 .5,1.4 .5,13.5 .5,20.7 .5,20.2 .5,12.5 .5,.1 .5,-12.2 .5,-19.9 .5,-20.4 .5,-13.2 .5,-1.2 .5,11.4 .5,19.8 .5,20.9 .5,14.5 .5,2.8 .5,-10 .5,-18.9 .5,-20.9 .5,-15.2 .5,-3.8 .5,9.1 .5,18.6 .5,21.4 .5,16.3 .5,5.2 .5,-7.6 .5,-17.8 .5,-21.3 .5,-17 .5,-6.5 .5,6.5 .5,17.1 .5,21.3 .5,17.8 .5,7.8 .5,-5.2 .5,-16.2 .5,-21.3 .5,-18.4 .5,-8.9 .5,3.9 .5,15.4 .5,21.1 .5,19.1 .5,10.1 .5,-2.6 .5,-14.3 .5,-20.9 .5,-19.6 .5,-11.2 .5,1.3 .5,13.4 .5,20.6 .5,20.1 .5,12.4 .5,0 .5,-12.3 .5,-20.1 .5,-20.6 .5,-13.3 .5,-1.3 .5,11.2 .5,19.7 .5,20.9 .5,14.4 .5,2.7 .5,-10.1 .5,-19.1 .5,-21.1 .5,-15.3 .5,-3.9 .5,8.9 .5,18.5 .5,21.3 .5,16.2 .5,5.1 .5,-7.8 .5,-17.9 .5,-21.5 .5,-17.1 .5,-6.6 .5,6.4 .5,16.9 .5,21.3 .5,17.8 .5,7.6 .5,-5.3 .5,-16.3 .5,-21.4 .5,-18.7 .5,-9 .5,3.8 .5,15.3 .5,21.1 .5,19 .5,10.1 .5,-2.8 .5,-14.5 .5,-21 .5,-19.8 .5,-11.3 .5,1.2 .5,13.3 .5,20.5 .5,20.1 .5,12.3 .5,-.1 .5,-12.5 .5,-20.3 .5,-20.6 .5,-13.6 .5,-1.4 .5,11.2 .5,19.6 .5,20.9 .5,14.3 .5,2.5 .5,-10.2 .5,-19.2 .5,-21.3 .5,-15.5 .5,-4 .5,8.9 .5,18.4 .5,21.3 .5,16.1 .5,5.2 .5,-7.9 .5,-17.9 .5,-21.5 .5,-17.2 .5,-6.6 .5,6.4 .5,17 .5,21.3 .5,17.8 .5,7.7 .5,-5.4 .5,-16.3 .5,-21.5 .5,-18.6 .5,-9.1 .5,3.9 .5,15.3 .5,21.1 .5,19.1 .5,10 .5,-2.7 .5,-14.6 .5,-21 .5,-19.8 .5,-11.4 .5,1.2 .5,13.4 .5,20.5 .5,20.1 .5,12.3 .5,-.1 .5,-12.4 .5,-20.4 .5,-20.7 .5,-13.5 .5,-1.5 .5,11.2 .5,19.7 .5,20.9 .5,14.3 .5,2.6 .5,-10.3 .5,-19.3 .5,-21.3 .5,-15.5 .5,-4 .5,8.9 .5,18.5 .5,21.3 .5,16.2 .5,5.1 .5,-7.8 .5,-18 .5,-21.6 .5,-17.2 .5,-6.6 .5,6.4 .5,17 .5,21.4 .5,17.8 .5,7.7 .5,-5.3 .5,-16.4 .5,-21.5 .5,-18.7 .5,-9.1 .5,3.9 .5,15.3 .5,21.1 .5,19.2 .5,10.1 .5,-2.8 .5,-14.5 .5,-21.1 .5,-19.9 .5,-11.4 .5,1.2 .5,13.4 .5,20.6 .5,20.2 .5,12.3 .5,-.1 .5,-12.5 .5,-20.4 .5,-20.8 .5,-13.5 .5,-1.5 .5,11.3 .5,19.7 .5,20.9 .5,14.4 .5,2.5 .5,-10.2 .5,-19.4 .5,-21.3 .5,-15.6 .5,-4 .5,8.9 .5,18.5 .5,21.4 .5,16.2 .5,5.2 .5,-7.9 .5,-18 .5,-21.6 .5,-17.3 .5,-6.6 .5,6.4 .5,17.1 .5,21.6 .5,18.1 .5,7.9 .5,-5.1 .5,-16.2 .5,-21.3 .5,-18.5 .5,-8.9 .5,4.1 .5,15.6 .5,21.4 .5,19.4 .5,10.3 .5,-2.5 .5,-14.4 .5,-20.9 .5,-19.7 .5,-11.2 .5,1.4 .5,13.7 .5,20.8 .5,20.4 .5,12.6 .5,.2 .5,-12.4 .5,-20.2 .5,-20.5 .5,-13.4 .5,-1.2 .5,11.4 .5,20 .5,21.2 .5,14.6 .5,2.8 .5,-10 .5,-19.2 .5,-21.2 .5,-15.3 .5,-3.9 .5,9.2 .5,18.8 .5,21.6 .5,16.5 .5,5.4 .5,-7.7 .5,-17.8 .5,-21.5 .5,-17 .5,-6.5 .5,6.7 .5,17.4 .5,21.6 .5,18.1 .5,8 .5,-5.2 .5,-16.2 .5,-21.4 .5,-18.5 .5,-8.9 .5,4.1 .5,15.6 .5,21.5 .5,19.4 .5,10.3 .5,-2.5 .5,-14.4 .5,-20.9 .5,-19.8 .5,-11.2 .5,1.4 .5,13.7 .5,20.9 .5,20.5 .5,12.6 .5,.1 .5,-12.3 .5,-20.3 .5,-20.6 .5,-13.4 .5,-1.2 .5,11.5 .5,20 .5,21.2 .5,14.7 .5,2.8 .5,-10.1 .5,-19.2 .5,-21.2 .5,-15.4 .5,-3.9 .5,9.2 .5,18.8 .5,21.7 .5,16.5 .5,5.4 .5,-7.7 .5,-17.8 .5,-21.5 .5,-17.1 .5,-6.4 .5,6.6 .5,17.4 .5,21.7 .5,18.2 .5,7.9 .5,-5.1 .5,-16.3 .5,-21.4 .5,-18.6 .5,-8.9 .5,4.1 .5,15.6 .5,21.5 .5,19.5 .5,10.4 .5,-2.5 .5,-14.5 .5,-21 .5,-19.8 .5,-11.2 .5,1.4 .5,13.7 .5,21 .5,20.5 .5,12.6 .5,.1 .5,-12.3 .5,-20.3 .5,-20.8 .5,-13.6 .5,-1.3 .5,11.4 .5,19.9 .5,21.1 .5,14.6 .5,2.6 .5,-10.2 .5,-19.4 .5,-21.4 .5,-15.5 .5,-4 .5,9 .5,18.7 .5,21.6 .5,16.4 .5,5.3 .5,-7.8 .5,-18.1 .5,-21.6 .5,-17.3 .5,-6.6 .5,6.6 .5,17.2 .5,21.7 .5,18 .5,7.8 .5,-5.3 .5,-16.4 .5,-21.6 .5,-18.8 .5,-9 .5,3.9 .5,15.6 .5,21.4 .5,19.4 .5,10.2 .5,-2.7 .5,-14.6 .5,-21.1 .5,-20 .5,-11.4 .5,1.3 .5,13.6 .5,20.8 .5,20.4 .5,12.6 .5,0 .5,-12.6 .5,-20.4 .5,-20.9 .5,-13.6 .5,-1.3 .5,11.4 .5,19.9 .5,21.2 .5,14.6 .5,2.7 .5,-10.3 .5,-19.5 .5,-21.5 .5,-15.6 .5,-4 .5,9 .5,18.7 .5,21.5 .5,16.4 .5,5.3 .5,-7.9 .5,-18.1 .5,-21.8 .5,-17.4 .5,-6.6 .5,6.5 .5,17.3 .5,21.6 .5,18 .5,7.8 .5,-5.3 .5,-16.6 .5,-21.6 .5,-18.9 .5,-9.1 .5,3.9 .5,15.5 .5,21.4 .5,19.4 .5,10.2 .5,-2.7 .5,-14.7 .5,-21.3 .5,-20 .5,-11.5 .5,1.3 .5,13.5 .5,20.9 .5,20.4 .5,12.5 .5,-.1 .5,-12.6 .5,-20.5 .5,-21 .5,-13.7 .5,-1.4 .5,11.4 .5,20 .5,21.1 .5,14.6 .5,2.6 .5,-10.3 .5,-19.5 .5,-21.6 .5,-15.6 .5,-4.1 .5,9.1 .5,18.7 .5,21.6 .5,16.4 .5,5.3 .5,-7.9 .5,-18.2 .5,-21.8 .5,-17.4 .5,-6.6 .5,6.5 .5,17.3 .5,21.7 .5,18 .5,7.8 .5,-5.3 .5,-16.6 .5,-21.7 .5,-18.9 .5,-9.2 .5,4 .5,15.5 .5,21.5 .5,19.4 .5,10.2 .5,-2.7 .5,-14.7 .5,-21.3 .5,-20.1 .5,-11.5 .5,1.2 .5,13.6 .5,20.9 .5,20.5 .5,12.5 .5,-.1 .5,-12.6 .5,-20.6 .5,-21 .5,-13.7 .5,-1.4 .5,11.4 .5,20 .5,21.2 .5,14.6 .5,2.6 .5,-10.3 .5,-19.6 .5,-21.6 .5,-15.6 .5,-4.1 .5,9 .5,18.8 .5,21.7 .5,16.4 .5,5.3 .5,-7.9 .5,-18.2 .5,-21.9 .5,-17.4 .5,-6.7 .5,6.6 .5,17.3 .5,21.7 .5,18.1 .5,7.8 .5,-5.3 .5,-16.6 .5,-21.8 .5,-18.9 .5,-9.2 .5,4 .5,15.5 .5,21.5 .5,19.5 .5,10.2 .5,-2.7 .5,-14.8 .5,-21.3 .5,-20.1 .5,-11.6 .5,1.3 .5,13.6 .5,20.9 .5,20.5 .5,12.6 .5,-.1 .5,-12.6 .5,-20.7 .5,-21 .5,-13.7 .5,-1.4 .5,11.4 .5,20 .5,21.3 .5,14.6 .5,2.6 .5,-10.4 .5,-19.5 .5,-21.6 .5,-15.8 .5,-4 .5,9 .5,18.9 .5,21.6 .5,16.5 .5,5.3 .5,-7.9 .5,-18.3 .5,-21.9 .5,-17.4 .5,-6.7 .5,6.6 .5,17.3 .5,21.8 .5,18.1 .5,7.8" fill="none" stroke="#ffff11" stroke-width="2.3" stroke-linejoin="round" /><path d="M0,165.2l.5,-3.8 .5,-2.4 .5,-.3 .5,2.1 .5,3.7 .5,3.8 .5,2.7 .5,.5 .5,-1.9 .5,-3.5 .5,-3.8 .5,-2.9 .5,-.7 .5,1.7 .5,3.4 .5,4 .5,3 .5,.9 .5,-1.4 .5,-3.2 .5,-4 .5,-3.1 .5,-1.2 .5,1.2 .5,3.2 .5,3.9 .5,3.3 .5,1.5 .5,-1 .5,-3 .5,-3.9 .5,-3.4 .5,-1.6 .5,.7 .5,2.9 .5,3.9 .5,3.5 .5,1.9 .5,-.5 .5,-2.6 .5,-3.8 .5,-3.7 .5,-2 .5,.2 .5,2.5 .5,3.8 .5,3.8 .5,2.2 .5,.1 .5,-2.3 .5,-3.7 .5,-3.8 .5,-2.4 .5,-.3 .5,2.1 .5,3.7 .5,3.8 .5,2.7 .5,.5 .5,-1.9 .5,-3.5 .5,-3.9 .5,-2.8 .5,-.7 .5,1.7 .5,3.4 .5,3.9 .5,3.1 .5,.9 .5,-1.4 .5,-3.3 .5,-3.9 .5,-3.1 .5,-1.2 .5,1.2 .5,3.2 .5,3.9 .5,3.3 .5,1.5 .5,-1 .5,-3 .5,-3.9 .5,-3.4 .5,-1.6 .5,.7 .5,2.9 .5,3.9 .5,3.5 .5,1.9 .5,-.5 .5,-2.6 .5,-3.8 .5,-3.7 .5,-2 .5,.2 .5,2.5 .5,3.8 .5,3.7 .5,2.3 .5,.1 .5,-2.3 .5,-3.7 .5,-3.8 .5,-2.4 .5,-.3 .5,2.1 .5,3.7 .5,3.8 .5,2.7 .5,.5 .5,-1.9 .5,-3.5 .5,-3.9 .5,-2.8 .5,-.7 .5,1.7 .5,3.4 .5,3.9 .5,3 .5,1 .5,-1.4 .5,-3.3 .5,-3.9 .5,-3.1 .5,-1.2 .5,1.2 .5,3.2 .5,3.9 .5,3.3 .5,1.5 .5,-1 .5,-3 .5,-3.9 .5,-3.4 .5,-1.6 .5,.7 .5,2.9 .5,3.9 .5,3.5 .5,1.9 .5,-.5 .5,-2.6 .5,-3.9 .5,-3.6 .5,-2 .5,.2 .5,2.5 .5,3.8 .5,3.7 .5,2.3 .5,0 .5,-2.2 .5,-3.7 .5,-3.8 .5,-2.5 .5,-.2 .5,2.1 .5,3.6 .5,3.9 .5,2.7 .5,.5 .5,-1.9 .5,-3.5 .5,-3.9 .5,-2.8 .5,-.7 .5,1.7 .5,3.4 .5,3.9 .5,3 .5,1 .5,-1.4 .5,-3.3 .5,-3.9 .5,-3.1 .5,-1.2 .5,1.2 .5,3.2 .5,3.9 .5,3.3 .5,1.4 .5,-.9 .5,-3 .5,-3.9 .5,-3.4 .5,-1.6 .5,.7 .5,2.8 .5,3.9 .5,3.5 .5,1.9 .5,-.5 .5,-2.6 .5,-3.9 .5,-3.6 .5,-2.1 .5,.3 .5,2.5 .5,3.7 .5,3.8 .5,2.2 .5,0 .5,-2.2 .5,-3.7 .5,-3.8 .5,-2.5 .5,-.2 .5,2 .5,3.7 .5,3.8 .5,2.7 .5,.5 .5,-1.9 .5,-3.5 .5,-3.9 .5,-2.8 .5,-.8 .5,1.7 .5,3.4 .5,3.9 .5,3 .5,1 .5,-1.4 .5,-3.3 .5,-3.9 .5,-3.2 .5,-1.2 .5,1.2 .5,3.2 .5,3.9 .5,3.3 .5,1.4 .5,-.9 .5,-3 .5,-3.9 .5,-3.4 .5,-1.7 .5,.7 .5,2.9 .5,3.9 .5,3.5 .5,1.9 .5,-.5 .5,-2.7 .5,-3.8 .5,-3.6 .5,-2.1 .5,.2 .5,2.5 .5,3.8 .5,3.7 .5,2.3 .5,0 .5,-2.3 .5,-3.7 .5,-3.8 .5,-2.4 .5,-.3 .5,2.1 .5,3.6 .5,3.9 .5,2.6 .5,.5 .5,-1.8 .5,-3.6 .5,-3.8 .5,-2.9 .5,-.7 .5,1.7 .5,3.4 .5,3.9 .5,3 .5,1 .5,-1.5 .5,-3.2 .5,-4 .5,-3.1 .5,-1.2 .5,1.2 .5,3.1 .5,4 .5,3.3 .5,1.4 .5,-1 .5,-3 .5,-3.9 .5,-3.4 .5,-1.6 .5,.7 .5,2.8 .5,3.9 .5,3.6 .5,1.8 .5,-.5 .5,-2.6 .5,-3.9 .5,-3.6 .5,-2.1 .5,.3 .5,2.5 .5,3.8 .5,3.7 .5,2.3 .5,0 .5,-2.3 .5,-3.7 .5,-3.8 .5,-2.5 .5,-.2 .5,2.1 .5,3.6 .5,3.8 .5,2.7 .5,.5 .5,-1.9 .5,-3.5 .5,-3.9 .5,-2.8 .5,-.7 .5,1.6 .5,3.4 .5,4 .5,3 .5,.9 .5,-1.4 .5,-3.3 .5,-3.9 .5,-3.2 .5,-1.2 .5,1.2 .5,3.2 .5,3.9 .5,3.3 .5,1.4 .5,-.9 .5,-3 .5,-3.9 .5,-3.4 .5,-1.7 .5,.7 .5,2.9 .5,3.9 .5,3.5 .5,1.9 .5,-.5 .5,-2.7 .5,-3.8 .5,-3.6 .5,-2.1 .5,.2 .5,2.5 .5,3.8 .5,3.7 .5,2.3 .5,0 .5,-2.3 .5,-3.7 .5,-3.8 .5,-2.4 .5,-.3 .5,2.1 .5,3.6 .5,3.9 .5,2.7 .5,.4 .5,-1.8 .5,-3.5 .5,-3.9 .5,-2.9 .5,-.7 .5,1.7 .5,3.4 .5,3.9 .5,3 .5,1 .5,-1.5 .5,-3.2 .5,-4 .5,-3.1 .5,-1.2 .5,1.2 .5,3.1 .5,4 .5,3.3 .5,1.4 .5,-1 .5,-2.9 .5,-4 .5,-3.4 .5,-1.6 .5,.7 .5,2.8 .5,3.9 .5,3.6 .5,1.8 .5,-.4 .5,-2.7 .5,-3.8 .5,-3.7 .5,-2 .5,.2 .5,2.5 .5,3.8 .5,3.7 .5,2.3 .5,0 .5,-2.3 .5,-3.7 .5,-3.8 .5,-2.5 .5,-.2 .5,2.1 .5,3.6 .5,3.9 .5,2.6 .5,.5 .5,-1.9 .5,-3.5 .5,-3.9 .5,-2.8 .5,-.7 .5,1.6 .5,3.4 .5,4 .5,3 .5,.9 .5,-1.4 .5,-3.3 .5,-3.9 .5,-3.2 .5,-1.1 .5,1.2 .5,3.1 .5,3.9 .5,3.3 .5,1.5 .5,-1 .5,-3 .5,-3.9 .5,-3.4 .5,-1.7 .5,.8 .5,2.8 .5,3.9 .5,3.5 .5,1.9 .5,-.5 .5,-2.6 .5,-3.9 .5,-3.6 .5,-2.1 .5,.3 .5,2.4 .5,3.8 .5,3.7 .5,2.3 .5,0 .5,-2.2 .5,-3.8 .5,-3.7 .5,-2.5 .5,-.3 .5,2.1 .5,3.7 .5,3.8 .5,2.7 .5,.5 .5,-1.9 .5,-3.5 .5,-3.9 .5,-2.9 .5,-.7 .5,1.7 .5,3.4 .5,3.9 .5,3 .5,1 .5,-1.4 .5,-3.3 .5,-4 .5,-3.1 .5,-1.2 .5,1.2 .5,3.2 .5,3.9 .5,3.3 .5,1.4 .5,-.9 .5,-3 .5,-4 .5,-3.4 .5,-1.6 .5,.7 .5,2.8 .5,3.9 .5,3.6 .5,1.8 .5,-.4 .5,-2.7 .5,-3.8 .5,-3.7 .5,-2 .5,.2 .5,2.5 .5,3.8 .5,3.7 .5,2.3 .5,0 .5,-2.3 .5,-3.7 .5,-3.8 .5,-2.5 .5,-.2 .5,2.1 .5,3.6 .5,3.8 .5,2.7 .5,.5 .5,-1.9 .5,-3.5 .5,-3.9 .5,-2.9 .5,-.7 .5,1.6 .5,3.4 .5,4 .5,2.9 .5,1 .5,-1.4 .5,-3.3 .5,-4 .5,-3.1 .5,-1.2 .5,1.2 .5,3.1 .5,3.9 .5,3.3 .5,1.4 .5,-.9 .5,-3 .5,-4 .5,-3.4 .5,-1.6 .5,.7 .5,2.8 .5,3.9 .5,3.5 .5,1.9 .5,-.5 .5,-2.7 .5,-3.8 .5,-3.7 .5,-2 .5,.2 .5,2.5 .5,3.8 .5,3.7 .5,2.2 .5,0 .5,-2.2 .5,-3.8 .5,-3.8 .5,-2.4 .5,-.3 .5,2.1 .5,3.6 .5,3.8 .5,2.7 .5,.5 .5,-1.9 .5,-3.5 .5,-3.9 .5,-2.9 .5,-.7 .5,1.6 .5,3.5 .5,3.9 .5,3 .5,.9 .5,-1.4 .5,-3.3 .5,-3.9 .5,-3.2 .5,-1.2 .5,1.2 .5,3.1 .5,4 .5,3.2 .5,1.5 .5,-1 .5,-3 .5,-3.9 .5,-3.5 .5,-1.6 .5,.7 .5,2.8 .5,3.9 .5,3.5 .5,1.9 .5,-.5 .5,-2.6 .5,-3.9 .5,-3.6 .5,-2.1 .5,.2 .5,2.5 .5,3.8 .5,3.7 .5,2.3 .5,-.1 .5,-2.2 .5,-3.8 .5,-3.8 .5,-2.4 .5,-.3 .5,2.1 .5,3.6 .5,3.9 .5,2.6 .5,.5 .5,-1.9 .5,-3.5 .5,-3.9 .5,-2.8 .5,-.8 .5,1.7 .5,3.4 .5,3.9 .5,3 .5,.9 .5,-1.4 .5,-3.3 .5,-3.9 .5,-3.2 .5,-1.2 .5,1.2 .5,3.1 .5,4 .5,3.3 .5,1.4 .5,-1 .5,-3 .5,-3.9 .5,-3.4 .5,-1.7 .5,.7 .5,2.9 .5,3.8 .5,3.6 .5,1.8 .5,-.5 .5,-2.6 .5,-3.9 .5,-3.6 .5,-2.1 .5,.2 .5,2.5 .5,3.8 .5,3.7 .5,2.3 .5,0 .5,-2.3 .5,-3.7 .5,-3.8 .5,-2.5 .5,-.3 .5,2.1 .5,3.6 .5,3.9 .5,2.6 .5,.5 .5,-1.9 .5,-3.5 .5,-3.9 .5,-2.8 .5,-.8 .5,1.7 .5,3.4 .5,3.9 .5,3 .5,.9 .5,-1.4 .5,-3.3 .5,-3.9 .5,-3.2 .5,-1.2 .5,1.2 .5,3.2 .5,3.9 .5,3.3 .5,1.4 .5,-1 .5,-3 .5,-3.9 .5,-3.4 .5,-1.7 .5,.7 .5,2.9 .5,3.9 .5,3.5 .5,1.8 .5,-.5 .5,-2.6 .5,-3.9 .5,-3.6 .5,-2.1 .5,.3 .5,2.4 .5,3.8 .5,3.7 .5,2.3 .5,0 .5,-2.3 .5,-3.7 .5,-3.8 .5,-2.5 .5,-.2 .5,2 .5,3.7 .5,3.8 .5,2.6 .5,.5 .5,-1.8 .5,-3.6 .5,-3.9 .5,-2.8 .5,-.7 .5,1.6 .5,3.4 .5,3.9 .5,3 .5,1 .5,-1.5 .5,-3.3 .5,-3.9 .5,-3.1 .5,-1.2 .5,1.1 .5,3.2 .5,3.9 .5,3.3 .5,1.4 .5,-1 .5,-3 .5,-3.9 .5,-3.4 .5,-1.7 .5,.8 .5,2.8 .5,3.9 .5,3.5 .5,1.9 .5,-.5 .5,-2.7 .5,-3.8 .5,-3.7 .5,-2.1 .5,.3 .5,2.4 .5,3.8 .5,3.7 .5,2.3 .5,0 .5,-2.3 .5,-3.7 .5,-3.8 .5,-2.5 .5,-.2 .5,2 .5,3.7 .5,3.8 .5,2.7 .5,.4 .5,-1.8 .5,-3.6 .5,-3.9 .5,-2.8 .5,-.7 .5,1.6 .5,3.4 .5,3.9 .5,3 .5,1 .5,-1.4 .5,-3.3 .5,-4 .5,-3.1 .5,-1.2 .5,1.2 .5,3.1 .5,3.9 .5,3.3 .5,1.4 .5,-.9 .5,-3 .5,-4 .5,-3.4 .5,-1.6 .5,.7 .5,2.8 .5,3.9 .5,3.5 .5,1.9 .5,-.5 .5,-2.7 .5,-3.8 .5,-3.7 .5,-2 .5,.2 .5,2.5 .5,3.7 .5,3.8 .5,2.2 .5,0 .5,-2.3 .5,-3.7 .5,-3.8 .5,-2.5 .5,-.2 .5,2.1 .5,3.6 .5,3.8 .5,2.7 .5,.5 .5,-1.9 .5,-3.5 .5,-3.9 .5,-2.9 .5,-.7 .5,1.6 .5,3.4 .5,4 .5,2.9 .5,1 .5,-1.4 .5,-3.3 .5,-4 .5,-3.1 .5,-1.2 .5,1.2 .5,3.1 .5,3.9 .5,3.3 .5,1.4 .5,-.9 .5,-3 .5,-4 .5,-3.4 .5,-1.6 .5,.7 .5,2.8 .5,3.9 .5,3.5 .5,1.9 .5,-.5 .5,-2.7 .5,-3.8 .5,-3.7 .5,-2 .5,.2 .5,2.5 .5,3.8 .5,3.7 .5,2.2 .5,0 .5,-2.2 .5,-3.8 .5,-3.8 .5,-2.4 .5,-.3 .5,2.1 .5,3.6" fill="none" stroke="#139fff" stroke-width="2" stroke-linejoin="round" /><path d="M0,168.6l.5,1.4 .5,-1 .5,-3.1 .5,-3.9 .5,-3.5 .5,-1.6 .5,.7 .5,2.8 .5,3.8 .5,3.5 .5,1.9 .5,-.6 .5,-2.6 .5,-3.9 .5,-3.7 .5,-2.1 .5,.2 .5,2.5 .5,3.7 .5,3.7 .5,2.3 .5,-.1 .5,-2.3 .5,-3.7 .5,-3.8 .5,-2.5 .5,-.3 .5,2 .5,3.6 .5,3.9 .5,2.6 .5,.4 .5,-1.9 .5,-3.5 .5,-3.9 .5,-2.9 .5,-.8 .5,1.7 .5,3.3 .5,3.9 .5,3 .5,.9 .5,-1.4 .5,-3.3 .5,-4 .5,-3.2 .5,-1.2 .5,1.2 .5,3.1 .5,3.9 .5,3.2 .5,1.4 .5,-1 .5,-3 .5,-3.9 .5,-3.5 .5,-1.7 .5,.7 .5,2.8 .5,3.9 .5,3.5 .5,1.8 .5,-.5 .5,-2.7 .5,-3.8 .5,-3.7 .5,-2.1 .5,.2 .5,2.4 .5,3.8 .5,3.7 .5,2.2 .5,0 .5,-2.3 .5,-3.7 .5,-3.9 .5,-2.5 .5,-.2 .5,2 .5,3.6 .5,3.8 .5,2.7 .5,.4 .5,-1.9 .5,-3.5 .5,-4 .5,-2.8 .5,-.8 .5,1.6 .5,3.4 .5,3.9 .5,3 .5,.9 .5,-1.4 .5,-3.4 .5,-3.9 .5,-3.2 .5,-1.2 .5,1.1 .5,3.2 .5,3.9 .5,3.2 .5,1.4 .5,-1 .5,-3 .5,-4 .5,-3.4 .5,-1.7 .5,.7 .5,2.8 .5,3.9 .5,3.5 .5,1.8 .5,-.5 .5,-2.7 .5,-3.9 .5,-3.6 .5,-2.1 .5,.2 .5,2.4 .5,3.8 .5,3.7 .5,2.2 .5,0 .5,-2.3 .5,-3.8 .5,-3.8 .5,-2.5 .5,-.3 .5,2.1 .5,3.6 .5,3.8 .5,2.6 .5,.5 .5,-1.9 .5,-3.6 .5,-3.9 .5,-2.9 .5,-.7 .5,1.6 .5,3.4 .5,3.9 .5,3 .5,.9 .5,-1.5 .5,-3.3 .5,-4 .5,-3.1 .5,-1.3 .5,1.2 .5,3.1 .5,3.9 .5,3.3 .5,1.4 .5,-1 .5,-3 .5,-4 .5,-3.4 .5,-1.7 .5,.7 .5,2.8 .5,3.9 .5,3.5 .5,1.8 .5,-.5 .5,-2.7 .5,-3.9 .5,-3.7 .5,-2.1 .5,.3 .5,2.4 .5,3.8 .5,3.6 .5,2.3 .5,0 .5,-2.3 .5,-3.8 .5,-3.8 .5,-2.5 .5,-.3 .5,2.1 .5,3.6 .5,3.8 .5,2.6 .5,.5 .5,-1.9 .5,-3.5 .5,-3.9 .5,-2.9 .5,-.7 .5,1.6 .5,3.4 .5,3.9 .5,3 .5,1 .5,-1.5 .5,-3.3 .5,-3.9 .5,-3.2 .5,-1.2 .5,1.2 .5,3.1 .5,4 .5,3.3 .5,1.4 .5,-1 .5,-3 .5,-3.9 .5,-3.5 .5,-1.6 .5,.7 .5,2.8 .5,3.9 .5,3.5 .5,1.9 .5,-.5 .5,-2.7 .5,-3.9 .5,-3.6 .5,-2.1 .5,.2 .5,2.5 .5,3.8 .5,3.7 .5,2.3 .5,-.1 .5,-2.2 .5,-3.8 .5,-3.8 .5,-2.5 .5,-.2 .5,2.1 .5,3.6 .5,3.8 .5,2.7 .5,.4 .5,-1.8 .5,-3.6 .5,-3.9 .5,-2.8 .5,-.8 .5,1.7 .5,3.4 .5,3.9 .5,3 .5,.9 .5,-1.4 .5,-3.3 .5,-4 .5,-3.1 .5,-1.2 .5,1.2 .5,3.1 .5,3.9 .5,3.3 .5,1.4 .5,-1 .5,-3 .5,-3.9 .5,-3.4 .5,-1.7 .5,.7 .5,2.9 .5,3.8 .5,3.6 .5,1.8 .5,-.5 .5,-2.6 .5,-3.9 .5,-3.6 .5,-2.1 .5,.2 .5,2.5 .5,3.7 .5,3.7 .5,2.3 .5,0 .5,-2.3 .5,-3.7 .5,-3.8 .5,-2.5 .5,-.2 .5,2 .5,3.6 .5,3.9 .5,2.6 .5,.5 .5,-1.9 .5,-3.5 .5,-3.9 .5,-2.9 .5,-.7 .5,1.6 .5,3.4 .5,3.9 .5,3 .5,1 .5,-1.5 .5,-3.2 .5,-4 .5,-3.2 .5,-1.2 .5,1.2 .5,3.2 .5,3.9 .5,3.3 .5,1.4 .5,-1 .5,-3 .5,-3.9 .5,-3.5 .5,-1.6 .5,.7 .5,2.8 .5,3.9 .5,3.5 .5,1.9 .5,-.5 .5,-2.7 .5,-3.9 .5,-3.6 .5,-2.1 .5,.3 .5,2.4 .5,3.8 .5,3.7 .5,2.3 .5,0 .5,-2.3 .5,-3.8 .5,-3.8 .5,-2.4 .5,-.3 .5,2.1 .5,3.6 .5,3.8 .5,2.7 .5,.4 .5,-1.8 .5,-3.6 .5,-3.9 .5,-2.8 .5,-.7 .5,1.6 .5,3.4 .5,3.9 .5,3 .5,.9 .5,-1.4 .5,-3.3 .5,-3.9 .5,-3.2 .5,-1.2 .5,1.2 .5,3.1 .5,3.9 .5,3.3 .5,1.4 .5,-.9 .5,-3 .5,-4 .5,-3.4 .5,-1.7 .5,.8 .5,2.8 .5,3.9 .5,3.5 .5,1.8 .5,-.5 .5,-2.6 .5,-3.9 .5,-3.6 .5,-2.1 .5,.2 .5,2.5 .5,3.8 .5,3.7 .5,2.2 .5,0 .5,-2.3 .5,-3.7 .5,-3.8 .5,-2.5 .5,-.2 .5,2 .5,3.6 .5,3.9 .5,2.6 .5,.5 .5,-1.9 .5,-3.5 .5,-3.9 .5,-2.9 .5,-.7 .5,1.6 .5,3.4 .5,4 .5,2.9 .5,1 .5,-1.4 .5,-3.3 .5,-4 .5,-3.1 .5,-1.2 .5,1.1 .5,3.2 .5,3.9 .5,3.3 .5,1.4 .5,-1 .5,-3 .5,-3.9 .5,-3.4 .5,-1.7 .5,.7 .5,2.8 .5,3.9 .5,3.5 .5,1.9 .5,-.5 .5,-2.7 .5,-3.8 .5,-3.7 .5,-2.1 .5,.3 .5,2.4 .5,3.8 .5,3.7 .5,2.3 .5,0 .5,-2.3 .5,-3.7 .5,-3.8 .5,-2.5 .5,-.3 .5,2.1 .5,3.6 .5,3.8 .5,2.7 .5,.5 .5,-1.9 .5,-3.6 .5,-3.9 .5,-2.8 .5,-.7 .5,1.6 .5,3.4 .5,3.9 .5,3 .5,.9 .5,-1.4 .5,-3.3 .5,-3.9 .5,-3.2 .5,-1.2 .5,1.2 .5,3.1 .5,4 .5,3.2 .5,1.4 .5,-.9 .5,-3 .5,-4 .5,-3.4 .5,-1.6 .5,.7 .5,2.8 .5,3.9 .5,3.5 .5,1.8 .5,-.5 .5,-2.6 .5,-3.9 .5,-3.6 .5,-2.1 .5,.2 .5,2.5 .5,3.8 .5,3.7 .5,2.2 .5,0 .5,-2.3 .5,-3.7 .5,-3.8 .5,-2.5 .5,-.2 .5,2 .5,3.7 .5,3.8 .5,2.6 .5,.5 .5,-1.9 .5,-3.5 .5,-3.9 .5,-2.8 .5,-.8 .5,1.7 .5,3.4 .5,3.9 .5,3 .5,.9 .5,-1.4 .5,-3.3 .5,-4 .5,-3.1 .5,-1.2 .5,1.1 .5,3.2 .5,3.9 .5,3.3 .5,1.4 .5,-1 .5,-2.9 .5,-3.9 .5,-3.4 .5,-1.6 .5,.7 .5,2.9 .5,3.9 .5,3.6 .5,1.9 .5,-.5 .5,-2.6 .5,-3.8 .5,-3.6 .5,-2.1 .5,.3 .5,2.5 .5,3.8 .5,3.7 .5,2.4 .5,0 .5,-2.3 .5,-3.7 .5,-3.7 .5,-2.5 .5,-.2 .5,2.1 .5,3.7 .5,3.9 .5,2.7 .5,.5 .5,-1.9 .5,-3.5 .5,-3.8 .5,-2.8 .5,-.7 .5,1.7 .5,3.4 .5,4 .5,3 .5,1 .5,-1.4 .5,-3.3 .5,-3.9 .5,-3.1 .5,-1.2 .5,1.3 .5,3.1 .5,4 .5,3.3 .5,1.5 .5,-1 .5,-2.9 .5,-3.9 .5,-3.4 .5,-1.6 .5,.7 .5,2.9 .5,3.9 .5,3.6 .5,1.9 .5,-.5 .5,-2.6 .5,-3.8 .5,-3.6 .5,-2.1 .5,.3 .5,2.5 .5,3.8 .5,3.8 .5,2.3 .5,0 .5,-2.3 .5,-3.6 .5,-3.8 .5,-2.4 .5,-.3 .5,2.1 .5,3.7 .5,3.9 .5,2.7 .5,.5 .5,-1.9 .5,-3.5 .5,-3.8 .5,-2.8 .5,-.7 .5,1.7 .5,3.4 .5,4 .5,3 .5,1 .5,-1.4 .5,-3.3 .5,-3.9 .5,-3.1 .5,-1.2 .5,1.3 .5,3.1 .5,4 .5,3.3 .5,1.5 .5,-1 .5,-2.9 .5,-3.9 .5,-3.4 .5,-1.6 .5,.7 .5,2.9 .5,3.9 .5,3.6 .5,1.9 .5,-.5 .5,-2.6 .5,-3.8 .5,-3.6 .5,-2.1 .5,.3 .5,2.5 .5,3.8 .5,3.8 .5,2.3 .5,0 .5,-2.3 .5,-3.6 .5,-3.8 .5,-2.4 .5,-.3 .5,2.1 .5,3.7 .5,3.9 .5,2.7 .5,.5 .5,-1.8 .5,-3.5 .5,-3.9 .5,-2.8 .5,-.7 .5,1.7 .5,3.4 .5,4 .5,3 .5,1 .5,-1.4 .5,-3.3 .5,-3.9 .5,-3.1 .5,-1.2 .5,1.3 .5,3.1 .5,4 .5,3.3 .5,1.5 .5,-1 .5,-2.9 .5,-3.9 .5,-3.4 .5,-1.6 .5,.7 .5,2.9 .5,3.9 .5,3.6 .5,1.9 .5,-.5 .5,-2.6 .5,-3.8 .5,-3.6 .5,-2.1 .5,.3 .5,2.5 .5,3.8 .5,3.8 .5,2.3 .5,0 .5,-2.2 .5,-3.7 .5,-3.8 .5,-2.4 .5,-.3 .5,2.2 .5,3.6 .5,3.9 .5,2.7 .5,.5 .5,-1.8 .5,-3.5 .5,-3.9 .5,-2.8 .5,-.7 .5,1.7 .5,3.4 .5,4 .5,3 .5,1 .5,-1.4 .5,-3.3 .5,-3.9 .5,-3.1 .5,-1.2 .5,1.3 .5,3.1 .5,4 .5,3.3 .5,1.5 .5,-1 .5,-2.9 .5,-3.9 .5,-3.4 .5,-1.6 .5,.7 .5,2.9 .5,3.9 .5,3.6 .5,1.9 .5,-.5 .5,-2.6 .5,-3.8 .5,-3.6 .5,-2.1 .5,.3 .5,2.5 .5,3.8 .5,3.8 .5,2.3 .5,0 .5,-2.2 .5,-3.7 .5,-3.8 .5,-2.4 .5,-.2 .5,2.1 .5,3.6 .5,3.9 .5,2.7 .5,.5 .5,-1.8 .5,-3.5 .5,-3.9 .5,-2.8 .5,-.7 .5,1.7 .5,3.4 .5,4 .5,3 .5,1 .5,-1.4 .5,-3.3 .5,-3.9 .5,-3.1 .5,-1.2 .5,1.3 .5,3.1 .5,4 .5,3.3 .5,1.5 .5,-.9 .5,-3 .5,-3.9 .5,-3.4 .5,-1.6 .5,.7 .5,2.9 .5,3.9 .5,3.6 .5,1.9 .5,-.5 .5,-2.6 .5,-3.8 .5,-3.6 .5,-2.1 .5,.3 .5,2.5 .5,3.8 .5,3.8 .5,2.3 .5,0 .5,-2.2 .5,-3.7 .5,-3.8 .5,-2.4 .5,-.2 .5,2.1 .5,3.6 .5,3.9 .5,2.7 .5,.5 .5,-1.8 .5,-3.5 .5,-3.9 .5,-2.8 .5,-.8 .5,1.7 .5,3.4 .5,3.9 .5,2.9 .5,1 .5,-1.4 .5,-3.3 .5,-4 .5,-3.2 .5,-1.2 .5,1.2 .5,3.1 .5,4 .5,3.2 .5,1.5 .5,-1 .5,-3 .5,-4 .5,-3.4 .5,-1.7 .5,.8 .5,2.8 .5,3.8 .5,3.6 .5,1.8 .5,-.5 .5,-2.7 .5,-3.8 .5,-3.7 .5,-2 .5,.2 .5,2.4 .5,3.8 .5,3.7 .5,2.3 .5,0 .5,-2.3 .5,-3.8 .5,-3.8 .5,-2.4 .5,-.3 .5,2.1 .5,3.6 .5,3.8 .5,2.7 .5,.4 .5,-1.9 .5,-3.5 .5,-3.9 .5,-2.8 .5,-.8 .5,1.6 .5,3.4 .5,4 .5,2.9 .5,1 .5,-1.5 .5,-3.3 .5,-3.9 .5,-3.2 .5,-1.2 .5,1.2 .5,3.1 .5,4 .5,3.2 .5,1.4 .5,-.9 .5,-3 .5,-4 .5,-3.4" fill="none" stroke="#ff6929" stroke-width="2" stroke-linejoin="round" /></g><g clip-path="url(#c5b)"><path d="M0,297l.5,3.1 .5,8 .5,10.1 .5,8.4 .5,3.7 .5,-2.4 .5,-7.6 .5,-9.9 .5,-8.7 .5,-4.1 .5,1.9 .5,7.2 .5,10 .5,9.1 .5,4.8 .5,-1.2 .5,-6.7 .5,-9.8 .5,-9.2 .5,-5.3 .5,.7 .5,6.4 .5,9.7 .5,9.6 .5,5.8 .5,.1 .5,-5.8 .5,-9.4 .5,-9.7 .5,-6.3 .5,-.6 .5,5.4 .5,9.4 .5,9.9 .5,6.9 .5,1.3 .5,-4.8 .5,-9 .5,-9.9 .5,-7.3 .5,-1.8 .5,4.3 .5,8.8 .5,10.2 .5,7.8 .5,2.5 .5,-3.6 .5,-8.4 .5,-10.1 .5,-8.1 .5,-3 .5,3.1 .5,8.2 .5,10.2 .5,8.5 .5,3.8 .5,-2.5 .5,-7.7 .5,-10.1 .5,-8.7 .5,-4.3 .5,2 .5,7.3 .5,10.2 .5,9.2 .5,4.9 .5,-1.2 .5,-6.9 .5,-9.9 .5,-9.4 .5,-5.3 .5,.7 .5,6.4 .5,9.9 .5,9.8 .5,5.9 .5,.1 .5,-5.9 .5,-9.6 .5,-9.8 .5,-6.4 .5,-.6 .5,5.5 .5,9.5 .5,10.1 .5,7 .5,1.3 .5,-4.8 .5,-9.2 .5,-10.1 .5,-7.4 .5,-1.8 .5,4.3 .5,9 .5,10.3 .5,7.9 .5,2.6 .5,-3.7 .5,-8.5 .5,-10.3 .5,-8.2 .5,-3.1 .5,3.2 .5,8.3 .5,10.4 .5,8.7 .5,3.8 .5,-2.5 .5,-7.8 .5,-10.3 .5,-8.9 .5,-4.3 .5,2 .5,7.5 .5,10.3 .5,9.3 .5,5 .5,-1.2 .5,-7 .5,-10.1 .5,-9.5 .5,-5.4 .5,.6 .5,6.6 .5,10.1 .5,9.9 .5,6 .5,.1 .5,-6 .5,-9.8 .5,-9.9 .5,-6.5 .5,-.6 .5,5.5 .5,9.7 .5,10.2 .5,7.1 .5,1.4 .5,-4.9 .5,-9.3 .5,-10.3 .5,-7.5 .5,-1.9 .5,4.5 .5,9.1 .5,10.5 .5,8 .5,2.6 .5,-3.7 .5,-8.7 .5,-10.5 .5,-8.3 .5,-3.1 .5,3.2 .5,8.4 .5,10.6 .5,8.8 .5,3.9 .5,-2.5 .5,-8 .5,-10.4 .5,-9.1 .5,-4.3 .5,1.9 .5,7.7 .5,10.4 .5,9.5 .5,5.1 .5,-1.3 .5,-7 .5,-10.3 .5,-9.7 .5,-5.5 .5,.7 .5,6.7 .5,10.2 .5,10.1 .5,6.1 .5,.1 .5,-6.1 .5,-9.9 .5,-10.2 .5,-6.6 .5,-.6 .5,5.6 .5,9.7 .5,10.3 .5,7.1 .5,1.2 .5,-5.1 .5,-9.5 .5,-10.6 .5,-7.6 .5,-2.1 .5,4.4 .5,9.2 .5,10.5 .5,8 .5,2.5 .5,-3.9 .5,-8.9 .5,-10.7 .5,-8.5 .5,-3.3 .5,3.2 .5,8.4 .5,10.5 .5,8.8 .5,3.8 .5,-2.7 .5,-8.1 .5,-10.6 .5,-9.2 .5,-4.5 .5,1.9 .5,7.5 .5,10.4 .5,9.5 .5,4.9 .5,-1.3 .5,-7.2 .5,-10.4 .5,-9.9 .5,-5.6 .5,.6 .5,6.6 .5,10.1 .5,10 .5,6 .5,0 .5,-6.2 .5,-10.1 .5,-10.2 .5,-6.8 .5,-.7 .5,5.6 .5,9.7 .5,10.3 .5,7.1 .5,1.2 .5,-5.1 .5,-9.5 .5,-10.6 .5,-7.6 .5,-2.1 .5,4.4 .5,9.2 .5,10.5 .5,8 .5,2.5 .5,-3.9 .5,-8.9 .5,-10.7 .5,-8.5 .5,-3.3 .5,3.2 .5,8.4 .5,10.5 .5,8.8 .5,3.8 .5,-2.7 .5,-8.1 .5,-10.6 .5,-9.2 .5,-4.5 .5,1.9 .5,7.5 .5,10.4 .5,9.5 .5,4.9 .5,-1.3 .5,-7.2 .5,-10.4 .5,-9.9 .5,-5.6 .5,.6 .5,6.6 .5,10.1 .5,10 .5,6 .5,0 .5,-6.2 .5,-10.1 .5,-10.2 .5,-6.8 .5,-.7 .5,5.6 .5,9.7 .5,10.3 .5,7.1 .5,1.2 .5,-5.1 .5,-9.5 .5,-10.6 .5,-7.6 .5,-2.1 .5,4.4 .5,9.2 .5,10.5 .5,8 .5,2.5 .5,-3.9 .5,-8.9 .5,-10.7 .5,-8.5 .5,-3.3 .5,3.2 .5,8.4 .5,10.5 .5,8.8 .5,3.8 .5,-2.7 .5,-8.1 .5,-10.6 .5,-9.2 .5,-4.5 .5,1.9 .5,7.5 .5,10.4 .5,9.5 .5,5 .5,-1.3 .5,-7.1 .5,-10.4 .5,-9.7 .5,-5.6 .5,.7 .5,6.6 .5,10.3 .5,10 .5,6.1 .5,0 .5,-6.1 .5,-10 .5,-10.2 .5,-6.6 .5,-.7 .5,5.6 .5,9.8 .5,10.4 .5,7.2 .5,1.3 .5,-5 .5,-9.5 .5,-10.5 .5,-7.6 .5,-1.9 .5,4.4 .5,9.2 .5,10.6 .5,8.1 .5,2.6 .5,-3.9 .5,-8.8 .5,-10.6 .5,-8.4 .5,-3.2 .5,3.2 .5,8.5 .5,10.6 .5,8.8 .5,3.9 .5,-2.6 .5,-8 .5,-10.6 .5,-9.2 .5,-4.4 .5,2 .5,7.6 .5,10.5 .5,9.5 .5,5.1 .5,-1.3 .5,-7.2 .5,-10.3 .5,-9.8 .5,-5.6 .5,.7 .5,6.7 .5,10.2 .5,10 .5,6.2 .5,0 .5,-6.2 .5,-9.9 .5,-10.2 .5,-6.7 .5,-.6 .5,5.6 .5,9.8 .5,10.3 .5,7.2 .5,1.3 .5,-5 .5,-9.5 .5,-10.5 .5,-7.6 .5,-1.9 .5,4.5 .5,9.2 .5,10.6 .5,8.1 .5,2.6 .5,-3.7 .5,-8.8 .5,-10.6 .5,-8.4 .5,-3.1 .5,3.2 .5,8.6 .5,10.6 .5,8.9 .5,3.9 .5,-2.5 .5,-8 .5,-10.5 .5,-9.1 .5,-4.4 .5,2 .5,7.7 .5,10.5 .5,9.6 .5,5 .5,-1.2 .5,-7.1 .5,-10.3 .5,-9.7 .5,-5.5 .5,.7 .5,6.7 .5,10.2 .5,10.1 .5,6.2 .5,0 .5,-6 .5,-10 .5,-10.1 .5,-6.6 .5,-.6 .5,5.6 .5,9.9 .5,10.4 .5,7.2 .5,1.4 .5,-5 .5,-9.4 .5,-10.5 .5,-7.5 .5,-1.9 .5,4.5 .5,9.2 .5,10.6 .5,8.2 .5,2.6 .5,-3.8 .5,-8.8 .5,-10.5 .5,-8.4 .5,-3.2 .5,3.3 .5,8.5 .5,10.7 .5,8.9 .5,3.9 .5,-2.5 .5,-8 .5,-10.6 .5,-9.1 .5,-4.4 .5,2 .5,7.7 .5,10.6 .5,9.5 .5,5.1 .5,-1.2 .5,-7.1 .5,-10.3 .5,-9.8 .5,-5.5 .5,.7 .5,6.7 .5,10.3 .5,10.1 .5,6.2 .5,0 .5,-6.1 .5,-9.9 .5,-10.2 .5,-6.6 .5,-.5 .5,5.6 .5,9.8 .5,10.4 .5,7.3 .5,1.3 .5,-4.9 .5,-9.5 .5,-10.4 .5,-7.6 .5,-1.9 .5,4.5 .5,9.3 .5,10.6 .5,8.1 .5,2.7 .5,-3.8 .5,-8.8 .5,-10.5 .5,-8.5 .5,-3.1 .5,3.3 .5,8.5 .5,10.5 .5,8.8 .5,3.8 .5,-2.6 .5,-8.1 .5,-10.6 .5,-9.2 .5,-4.5 .5,1.9 .5,7.6 .5,10.4 .5,9.5 .5,4.9 .5,-1.3 .5,-7.2 .5,-10.4 .5,-9.8 .5,-5.7 .5,.6 .5,6.6 .5,10.2 .5,10 .5,6.1 .5,-.1 .5,-6.2 .5,-10 .5,-10.3 .5,-6.7 .5,-.7 .5,5.6 .5,9.7 .5,10.3 .5,7.1 .5,1.3 .5,-5.1 .5,-9.5 .5,-10.5 .5,-7.7 .5,-2 .5,4.4 .5,9.1 .5,10.6 .5,8 .5,2.5 .5,-3.9 .5,-8.8 .5,-10.7 .5,-8.5 .5,-3.3 .5,3.2 .5,8.4 .5,10.6 .5,8.8 .5,3.8 .5,-2.7 .5,-8.1 .5,-10.6 .5,-9.2 .5,-4.5 .5,1.9 .5,7.6 .5,10.4 .5,9.5 .5,5 .5,-1.4 .5,-7.2 .5,-10.4 .5,-9.8 .5,-5.6 .5,.6 .5,6.6 .5,10.1 .5,10 .5,6.1 .5,0 .5,-6.2 .5,-10.1 .5,-10.2 .5,-6.7 .5,-.7 .5,5.5 .5,9.8 .5,10.3 .5,7.1 .5,1.2 .5,-5 .5,-9.6 .5,-10.5 .5,-7.7 .5,-2 .5,4.4 .5,9.2 .5,10.5 .5,8 .5,2.6 .5,-3.9 .5,-8.9 .5,-10.7 .5,-8.5 .5,-3.2 .5,3.1 .5,8.5 .5,10.5 .5,8.8 .5,3.8 .5,-2.6 .5,-8.1 .5,-10.6 .5,-9.3 .5,-4.4 .5,1.9 .5,7.5 .5,10.5 .5,9.4 .5,5 .5,-1.3 .5,-7.2 .5,-10.4 .5,-9.9 .5,-5.6 .5,.6 .5,6.6 .5,10.2 .5,10 .5,6 .5,0 .5,-6.2 .5,-10 .5,-10.3 .5,-6.7 .5,-.7 .5,5.6 .5,9.7 .5,10.3 .5,7.1 .5,1.3 .5,-5.1 .5,-9.5 .5,-10.6 .5,-7.6 .5,-2 .5,4.4 .5,9.1 .5,10.5 .5,8.1 .5,2.5 .5,-3.9 .5,-8.9 .5,-10.6 .5,-8.5 .5,-3.3 .5,3.2 .5,8.4 .5,10.6 .5,8.8 .5,3.8 .5,-2.7 .5,-8.1 .5,-10.5 .5,-9.2 .5,-4.5 .5,2 .5,7.6 .5,10.5 .5,9.5 .5,5 .5,-1.3 .5,-7.1 .5,-10.4 .5,-9.7 .5,-5.6 .5,.7 .5,6.6 .5,10.2 .5,10 .5,6.2 .5,0 .5,-6.1 .5,-10 .5,-10.2 .5,-6.7 .5,-.6 .5,5.6 .5,9.7 .5,10.4 .5,7.2 .5,1.3 .5,-5.1 .5,-9.4 .5,-10.5 .5,-7.6 .5,-2 .5,4.5 .5,9.2 .5,10.5 .5,8.1 .5,2.6 .5,-3.8 .5,-8.9 .5,-10.6 .5,-8.4 .5,-3.3 .5,3.3 .5,8.4 .5,10.7 .5,8.8 .5,3.8 .5,-2.5 .5,-8.1 .5,-10.6 .5,-9.1 .5,-4.5 .5,2 .5,7.6 .5,10.5 .5,9.5 .5,5 .5,-1.3 .5,-7.1 .5,-10.4 .5,-9.7 .5,-5.6 .5,.6 .5,6.7 .5,10.2 .5,10 .5,6.2 .5,0 .5,-6.2 .5,-10 .5,-10.2 .5,-6.6 .5,-.7 .5,5.6 .5,9.8 .5,10.4 .5,7.1 .5,1.3 .5,-5 .5,-9.5 .5,-10.4 .5,-7.7 .5,-1.9 .5,4.4 .5,9.2 .5,10.6 .5,8.1 .5,2.6 .5,-3.8 .5,-8.8 .5,-10.6 .5,-8.4 .5,-3.2 .5,3.3 .5,8.5 .5,10.6 .5,8.9 .5,3.9 .5,-2.6 .5,-8 .5,-10.5 .5,-9.2 .5,-4.4 .5,2 .5,7.7 .5,10.5 .5,9.5 .5,5.1 .5,-1.3 .5,-7.1 .5,-10.3 .5,-9.7 .5,-5.6 .5,.7 .5,6.7 .5,10.3 .5,10 .5,6.2 .5,0 .5,-6.1 .5,-9.9 .5,-10.2 .5,-6.6 .5,-.6 .5,5.6 .5,9.8 .5,10.4 .5,7.2 .5,1.3 .5,-4.9 .5,-9.5 .5,-10.4 .5,-7.6 .5,-1.9 .5,4.5 .5,9.2 .5,10.6 .5,8.1 .5,2.6 .5,-3.8 .5,-8.8 .5,-10.5 .5,-8.5 .5,-3.1 .5,3.2 .5,8.5 .5,10.7 .5,8.8 .5,3.9 .5,-2.5 .5,-8 .5,-10.6 .5,-9.1 .5,-4.4 .5,2 .5,7.6 .5,10.6 .5,9.5 .5,5.1 .5,-1.3 .5,-7.1 .5,-10.3 .5,-9.8 .5,-5.5 .5,.7 .5,6.7 .5,10.2 .5,10.1 .5,6.1 .5,.1 .5,-6.1 .5,-10 .5,-10.2 .5,-6.6 .5,-.6 .5,5.6 .5,9.9 .5,10.4 .5,7.2 .5,1.3 .5,-5 .5,-9.4 .5,-10.5 .5,-7.6 .5,-1.9 .5,4.5 .5,9.2 .5,10.6 .5,8.1 .5,2.7 .5,-3.8 .5,-8.8 .5,-10.6 .5,-8.4 .5,-3.2 .5,3.3 .5,8.5 .5,10.6 .5,8.9 .5,3.9" fill="none" stroke="#ffff11" stroke-width="2.3" stroke-linejoin="round" /><path d="M0,273.4l.5,-2.2 .5,-1.9 .5,-.9 .5,.4 .5,1.6 .5,2.2 .5,1.9 .5,1 .5,-.2 .5,-1.5 .5,-2.1 .5,-2 .5,-1.2 .5,.1 .5,1.4 .5,2.1 .5,2.1 .5,1.2 .5,0 .5,-1.2 .5,-2.1 .5,-2.1 .5,-1.4 .5,-.1 .5,1.2 .5,2 .5,2.1 .5,1.5 .5,.2 .5,-1 .5,-1.9 .5,-2.2 .5,-1.6 .5,-.4 .5,.9 .5,1.9 .5,2.2 .5,1.7 .5,.5 .5,-.8 .5,-1.8 .5,-2.2 .5,-1.7 .5,-.7 .5,.7 .5,1.7 .5,2.2 .5,1.8 .5,.8 .5,-.5 .5,-1.7 .5,-2.2 .5,-1.9 .5,-.9 .5,.4 .5,1.6 .5,2.2 .5,1.9 .5,1 .5,-.2 .5,-1.5 .5,-2.1 .5,-2 .5,-1.2 .5,.1 .5,1.4 .5,2.1 .5,2.1 .5,1.2 .5,0 .5,-1.2 .5,-2.1 .5,-2.1 .5,-1.4 .5,-.1 .5,1.2 .5,2 .5,2.1 .5,1.5 .5,.2 .5,-1 .5,-1.9 .5,-2.2 .5,-1.6 .5,-.4 .5,.9 .5,1.9 .5,2.2 .5,1.7 .5,.5 .5,-.8 .5,-1.8 .5,-2.2 .5,-1.7 .5,-.7 .5,.7 .5,1.7 .5,2.2 .5,1.8 .5,.8 .5,-.5 .5,-1.7 .5,-2.2 .5,-1.9 .5,-.9 .5,.4 .5,1.6 .5,2.2 .5,1.9 .5,1 .5,-.2 .5,-1.5 .5,-2.1 .5,-2 .5,-1.2 .5,.1 .5,1.4 .5,2.1 .5,2.1 .5,1.2 .5,0 .5,-1.2 .5,-2.1 .5,-2.1 .5,-1.4 .5,-.1 .5,1.2 .5,2 .5,2.1 .5,1.5 .5,.2 .5,-1 .5,-1.9 .5,-2.2 .5,-1.6 .5,-.4 .5,.9 .5,1.9 .5,2.2 .5,1.7 .5,.5 .5,-.8 .5,-1.8 .5,-2.2 .5,-1.7 .5,-.7 .5,.7 .5,1.7 .5,2.2 .5,1.8 .5,.8 .5,-.5 .5,-1.7 .5,-2.2 .5,-1.9 .5,-.9 .5,.4 .5,1.6 .5,2.2 .5,1.9 .5,1 .5,-.2 .5,-1.5 .5,-2.1 .5,-2 .5,-1.2 .5,.1 .5,1.4 .5,2.1 .5,2.1 .5,1.2 .5,0 .5,-1.2 .5,-2.1 .5,-2.1 .5,-1.4 .5,-.1 .5,1.2 .5,2 .5,2.1 .5,1.5 .5,.2 .5,-1 .5,-2 .5,-2.2 .5,-1.5 .5,-.4 .5,.9 .5,1.8 .5,2.2 .5,1.7 .5,.5 .5,-.8 .5,-1.8 .5,-2.2 .5,-1.8 .5,-.7 .5,.7 .5,1.7 .5,2.2 .5,1.8 .5,.8 .5,-.5 .5,-1.7 .5,-2.2 .5,-1.9 .5,-.9 .5,.4 .5,1.5 .5,2.2 .5,1.9 .5,1 .5,-.2 .5,-1.5 .5,-2.2 .5,-2 .5,-1.1 .5,.1 .5,1.4 .5,2 .5,2.1 .5,1.2 .5,0 .5,-1.2 .5,-2.1 .5,-2.1 .5,-1.4 .5,-.1 .5,1.1 .5,2 .5,2.1 .5,1.5 .5,.3 .5,-1.1 .5,-1.9 .5,-2.2 .5,-1.6 .5,-.4 .5,.9 .5,1.9 .5,2.1 .5,1.7 .5,.5 .5,-.8 .5,-1.8 .5,-2.2 .5,-1.7 .5,-.7 .5,.6 .5,1.8 .5,2.1 .5,1.9 .5,.7 .5,-.5 .5,-1.7 .5,-2.2 .5,-1.9 .5,-.9 .5,.4 .5,1.6 .5,2.1 .5,2 .5,1 .5,-.3 .5,-1.5 .5,-2.1 .5,-2 .5,-1.2 .5,.1 .5,1.4 .5,2.1 .5,2 .5,1.3 .5,0 .5,-1.3 .5,-2.1 .5,-2.1 .5,-1.3 .5,-.2 .5,1.1 .5,2 .5,2.2 .5,1.4 .5,.3 .5,-1 .5,-2 .5,-2.2 .5,-1.6 .5,-.4 .5,.9 .5,1.9 .5,2.2 .5,1.6 .5,.6 .5,-.8 .5,-1.9 .5,-2.2 .5,-1.7 .5,-.7 .5,.7 .5,1.7 .5,2.2 .5,1.8 .5,.8 .5,-.6 .5,-1.6 .5,-2.2 .5,-1.9 .5,-.9 .5,.3 .5,1.6 .5,2.2 .5,1.9 .5,1 .5,-.3 .5,-1.4 .5,-2.2 .5,-2 .5,-1.2 .5,.2 .5,1.3 .5,2.1 .5,2.1 .5,1.2 .5,0 .5,-1.3 .5,-2 .5,-2.1 .5,-1.4 .5,-.2 .5,1.2 .5,2 .5,2.1 .5,1.5 .5,.2 .5,-1 .5,-2 .5,-2.1 .5,-1.6 .5,-.4 .5,.9 .5,1.9 .5,2.1 .5,1.7 .5,.5 .5,-.8 .5,-1.8 .5,-2.2 .5,-1.8 .5,-.6 .5,.6 .5,1.7 .5,2.2 .5,1.8 .5,.8 .5,-.5 .5,-1.7 .5,-2.2 .5,-1.9 .5,-.9 .5,.4 .5,1.5 .5,2.2 .5,1.9 .5,1.1 .5,-.3 .5,-1.5 .5,-2.1 .5,-2.1 .5,-1.1 .5,.1 .5,1.4 .5,2.1 .5,2 .5,1.3 .5,-.1 .5,-1.2 .5,-2.1 .5,-2.1 .5,-1.4 .5,-.1 .5,1.1 .5,2 .5,2.1 .5,1.5 .5,.3 .5,-1.1 .5,-1.9 .5,-2.2 .5,-1.6 .5,-.4 .5,.9 .5,1.9 .5,2.2 .5,1.6 .5,.5 .5,-.8 .5,-1.8 .5,-2.2 .5,-1.7 .5,-.7 .5,.6 .5,1.8 .5,2.1 .5,1.8 .5,.8 .5,-.5 .5,-1.7 .5,-2.2 .5,-1.9 .5,-.9 .5,.4 .5,1.5 .5,2.2 .5,1.9 .5,1 .5,-.3 .5,-1.4 .5,-2.2 .5,-2 .5,-1.2 .5,.1 .5,1.4 .5,2.1 .5,2 .5,1.3 .5,0 .5,-1.3 .5,-2.1 .5,-2.1 .5,-1.4 .5,-.1 .5,1.1 .5,2 .5,2.1 .5,1.5 .5,.2 .5,-1 .5,-2 .5,-2.1 .5,-1.6 .5,-.4 .5,.9 .5,1.8 .5,2.2 .5,1.6 .5,.6 .5,-.8 .5,-1.9 .5,-2.2 .5,-1.7 .5,-.7 .5,.7 .5,1.7 .5,2.2 .5,1.8 .5,.7 .5,-.5 .5,-1.7 .5,-2.2 .5,-1.9 .5,-.9 .5,.4 .5,1.5 .5,2.2 .5,1.9 .5,1 .5,-.2 .5,-1.5 .5,-2.2 .5,-2 .5,-1.2 .5,.2 .5,1.3 .5,2.1 .5,2.1 .5,1.2 .5,0 .5,-1.3 .5,-2.1 .5,-2.1 .5,-1.4 .5,-.1 .5,1.1 .5,2 .5,2.2 .5,1.4 .5,.3 .5,-1.1 .5,-1.9 .5,-2.2 .5,-1.6 .5,-.4 .5,.9 .5,1.9 .5,2.1 .5,1.7 .5,.5 .5,-.8 .5,-1.8 .5,-2.2 .5,-1.8 .5,-.7 .5,.7 .5,1.7 .5,2.2 .5,1.8 .5,.8 .5,-.6 .5,-1.7 .5,-2.2 .5,-1.9 .5,-.9 .5,.4 .5,1.6 .5,2.1 .5,1.9 .5,1.1 .5,-.3 .5,-1.5 .5,-2.1 .5,-2.1 .5,-1.1 .5,.1 .5,1.3 .5,2.1 .5,2.1 .5,1.2 .5,0 .5,-1.3 .5,-2 .5,-2.1 .5,-1.4 .5,-.2 .5,1.2 .5,2 .5,2.1 .5,1.4 .5,.3 .5,-1.1 .5,-1.9 .5,-2.2 .5,-1.6 .5,-.4 .5,.9 .5,1.9 .5,2.1 .5,1.7 .5,.5 .5,-.8 .5,-1.8 .5,-2.2 .5,-1.7 .5,-.7 .5,.7 .5,1.7 .5,2.2 .5,1.8 .5,.8 .5,-.5 .5,-1.7 .5,-2.2 .5,-1.9 .5,-.9 .5,.4 .5,1.6 .5,2.2 .5,1.9 .5,1 .5,-.2 .5,-1.5 .5,-2.1 .5,-2 .5,-1.2 .5,.1 .5,1.4 .5,2.1 .5,2.1 .5,1.2 .5,0 .5,-1.2 .5,-2.1 .5,-2.1 .5,-1.4 .5,-.1 .5,1.2 .5,2 .5,2.1 .5,1.5 .5,.2 .5,-1 .5,-1.9 .5,-2.2 .5,-1.6 .5,-.4 .5,.9 .5,1.9 .5,2.2 .5,1.7 .5,.5 .5,-.8 .5,-1.8 .5,-2.2 .5,-1.7 .5,-.7 .5,.7 .5,1.7 .5,2.2 .5,1.8 .5,.8 .5,-.5 .5,-1.7 .5,-2.2 .5,-1.9 .5,-.9 .5,.4 .5,1.6 .5,2.2 .5,1.9 .5,1 .5,-.2 .5,-1.5 .5,-2.1 .5,-2 .5,-1.2 .5,.1 .5,1.4 .5,2.1 .5,2.1 .5,1.2 .5,0 .5,-1.2 .5,-2.1 .5,-2.1 .5,-1.4 .5,-.1 .5,1.2 .5,2 .5,2.1 .5,1.5 .5,.2 .5,-1 .5,-1.9 .5,-2.2 .5,-1.6 .5,-.4 .5,.9 .5,1.9 .5,2.2 .5,1.7 .5,.5 .5,-.8 .5,-1.8 .5,-2.2 .5,-1.7 .5,-.7 .5,.7 .5,1.7 .5,2.2 .5,1.8 .5,.8 .5,-.5 .5,-1.7 .5,-2.2 .5,-1.9 .5,-.9 .5,.4 .5,1.6 .5,2.2 .5,1.9 .5,1 .5,-.2 .5,-1.5 .5,-2.1 .5,-2 .5,-1.2 .5,.1 .5,1.4 .5,2.1 .5,2.1 .5,1.2 .5,0 .5,-1.2 .5,-2.1 .5,-2.1 .5,-1.4 .5,-.1 .5,1.2 .5,2 .5,2.1 .5,1.5 .5,.2 .5,-1 .5,-1.9 .5,-2.2 .5,-1.6 .5,-.4 .5,.9 .5,1.9 .5,2.2 .5,1.6 .5,.6 .5,-.8 .5,-1.9 .5,-2.2 .5,-1.7 .5,-.7 .5,.7 .5,1.7 .5,2.2 .5,1.8 .5,.8 .5,-.6 .5,-1.7 .5,-2.1 .5,-1.9 .5,-1 .5,.4 .5,1.6 .5,2.1 .5,2 .5,1 .5,-.3 .5,-1.5 .5,-2.1 .5,-2 .5,-1.2 .5,.1 .5,1.4 .5,2.1 .5,2 .5,1.3 .5,-.1 .5,-1.2 .5,-2.1 .5,-2.1 .5,-1.4 .5,-.1 .5,1.1 .5,2 .5,2.1 .5,1.5 .5,.2 .5,-1 .5,-2 .5,-2.1 .5,-1.6 .5,-.4 .5,.9 .5,1.8 .5,2.2 .5,1.7 .5,.5 .5,-.8 .5,-1.9 .5,-2.1 .5,-1.8 .5,-.7 .5,.7 .5,1.7 .5,2.2 .5,1.8 .5,.8 .5,-.6 .5,-1.7 .5,-2.1 .5,-1.9 .5,-1 .5,.4 .5,1.6 .5,2.1 .5,2 .5,1 .5,-.3 .5,-1.5 .5,-2.1 .5,-2 .5,-1.2 .5,.1 .5,1.4 .5,2.1 .5,2 .5,1.3 .5,0 .5,-1.3 .5,-2.1 .5,-2.1 .5,-1.4 .5,-.1 .5,1.1 .5,2 .5,2.1 .5,1.5 .5,.2 .5,-1 .5,-2 .5,-2.1 .5,-1.6 .5,-.4 .5,.9 .5,1.9 .5,2.1 .5,1.7 .5,.5 .5,-.8 .5,-1.8 .5,-2.2 .5,-1.8 .5,-.7 .5,.7 .5,1.7 .5,2.2 .5,1.8 .5,.8 .5,-.6 .5,-1.6 .5,-2.2 .5,-1.9 .5,-1 .5,.4 .5,1.6 .5,2.1 .5,2 .5,1 .5,-.3 .5,-1.5 .5,-2.1 .5,-2 .5,-1.2 .5,.1 .5,1.4 .5,2.1 .5,2 .5,1.3 .5,0 .5,-1.3 .5,-2.1 .5,-2.1 .5,-1.4 .5,-.1 .5,1.1 .5,2 .5,2.1 .5,1.5 .5,.3 .5,-1.1 .5,-2 .5,-2.1 .5,-1.6 .5,-.4 .5,.9 .5,1.9 .5,2.1 .5,1.7 .5,.5 .5,-.8 .5,-1.8 .5,-2.2 .5,-1.8 .5,-.7 .5,.7 .5,1.7 .5,2.2 .5,1.8 .5,.8 .5,-.6 .5,-1.6 .5,-2.2 .5,-1.9 .5,-.9 .5,.3 .5,1.6" fill="none" stroke="#139fff" stroke-width="1.8" stroke-linejoin="round" /><path d="M0,264.2l.5,2.2 .5,1.7 .5,.5 .5,-.8 .5,-1.8 .5,-2.2 .5,-1.7 .5,-.7 .5,.7 .5,1.8 .5,2.2 .5,1.8 .5,.8 .5,-.6 .5,-1.6 .5,-2.2 .5,-1.9 .5,-.9 .5,.4 .5,1.6 .5,2.2 .5,1.9 .5,1.1 .5,-.3 .5,-1.4 .5,-2.2 .5,-2 .5,-1.1 .5,.1 .5,1.4 .5,2.1 .5,2.1 .5,1.2 .5,0 .5,-1.2 .5,-2.1 .5,-2.1 .5,-1.3 .5,-.1 .5,1.1 .5,2 .5,2.2 .5,1.4 .5,.3 .5,-1 .5,-2 .5,-2.1 .5,-1.6 .5,-.4 .5,1 .5,1.8 .5,2.2 .5,1.7 .5,.5 .5,-.8 .5,-1.8 .5,-2.1 .5,-1.8 .5,-.6 .5,.6 .5,1.8 .5,2.2 .5,1.8 .5,.8 .5,-.5 .5,-1.7 .5,-2.2 .5,-1.8 .5,-.9 .5,.4 .5,1.5 .5,2.2 .5,2 .5,1 .5,-.3 .5,-1.4 .5,-2.2 .5,-2 .5,-1.1 .5,.1 .5,1.5 .5,2.1 .5,2.1 .5,1.3 .5,.1 .5,-1.2 .5,-2 .5,-2.1 .5,-1.3 .5,-.1 .5,1.2 .5,2.1 .5,2.2 .5,1.5 .5,.3 .5,-1 .5,-1.9 .5,-2.1 .5,-1.5 .5,-.4 .5,1 .5,1.9 .5,2.3 .5,1.7 .5,.5 .5,-.7 .5,-1.8 .5,-2.1 .5,-1.7 .5,-.6 .5,.7 .5,1.8 .5,2.2 .5,1.9 .5,.8 .5,-.4 .5,-1.6 .5,-2.2 .5,-1.8 .5,-.9 .5,.5 .5,1.6 .5,2.2 .5,2 .5,1.1 .5,-.2 .5,-1.4 .5,-2.1 .5,-2 .5,-1.1 .5,.2 .5,1.4 .5,2.2 .5,2.1 .5,1.3 .5,0 .5,-1.2 .5,-2 .5,-2 .5,-1.4 .5,0 .5,1.2 .5,2 .5,2.2 .5,1.5 .5,.3 .5,-.9 .5,-1.9 .5,-2.2 .5,-1.5 .5,-.3 .5,.9 .5,2 .5,2.2 .5,1.7 .5,.6 .5,-.7 .5,-1.8 .5,-2.1 .5,-1.7 .5,-.6 .5,.7 .5,1.8 .5,2.2 .5,1.9 .5,.8 .5,-.5 .5,-1.6 .5,-2.1 .5,-1.9 .5,-.8 .5,.4 .5,1.6 .5,2.3 .5,2 .5,1 .5,-.2 .5,-1.4 .5,-2.1 .5,-1.9 .5,-1.2 .5,.1 .5,1.4 .5,2.1 .5,2 .5,1.3 .5,0 .5,-1.3 .5,-2 .5,-2.2 .5,-1.3 .5,-.2 .5,1.2 .5,2 .5,2.1 .5,1.5 .5,.2 .5,-1 .5,-2 .5,-2.1 .5,-1.6 .5,-.4 .5,.9 .5,1.9 .5,2.1 .5,1.7 .5,.5 .5,-.8 .5,-1.8 .5,-2.2 .5,-1.7 .5,-.7 .5,.7 .5,1.7 .5,2.2 .5,1.8 .5,.8 .5,-.6 .5,-1.6 .5,-2.2 .5,-1.9 .5,-.9 .5,.4 .5,1.5 .5,2.2 .5,1.9 .5,1 .5,-.2 .5,-1.5 .5,-2.1 .5,-2.1 .5,-1.1 .5,.1 .5,1.4 .5,2.1 .5,2 .5,1.3 .5,0 .5,-1.3 .5,-2.1 .5,-2.1 .5,-1.3 .5,-.2 .5,1.2 .5,2 .5,2.1 .5,1.5 .5,.2 .5,-1 .5,-2 .5,-2.1 .5,-1.6 .5,-.4 .5,.9 .5,1.9 .5,2.1 .5,1.7 .5,.5 .5,-.8 .5,-1.8 .5,-2.2 .5,-1.8 .5,-.7 .5,.6 .5,1.8 .5,2.1 .5,1.8 .5,.8 .5,-.6 .5,-1.7 .5,-2.2 .5,-1.9 .5,-1 .5,.4 .5,1.5 .5,2.2 .5,1.9 .5,1 .5,-.3 .5,-1.5 .5,-2.2 .5,-2 .5,-1.2 .5,.1 .5,1.4 .5,2 .5,2.1 .5,1.2 .5,0 .5,-1.3 .5,-2.1 .5,-2.1 .5,-1.4 .5,-.2 .5,1.1 .5,2 .5,2.1 .5,1.4 .5,.3 .5,-1.1 .5,-2 .5,-2.2 .5,-1.6 .5,-.4 .5,.9 .5,1.8 .5,2.2 .5,1.6 .5,.5 .5,-.8 .5,-1.8 .5,-2.3 .5,-1.7 .5,-.7 .5,.6 .5,1.7 .5,2.2 .5,1.8 .5,.7 .5,-.5 .5,-1.7 .5,-2.2 .5,-2 .5,-.9 .5,.4 .5,1.5 .5,2.1 .5,2 .5,1 .5,-.3 .5,-1.5 .5,-2.2 .5,-2 .5,-1.2 .5,.1 .5,1.3 .5,2.1 .5,2 .5,1.3 .5,-.1 .5,-1.3 .5,-2 .5,-2.2 .5,-1.4 .5,-.1 .5,1.1 .5,2 .5,2.1 .5,1.4 .5,.2 .5,-1 .5,-2 .5,-2.2 .5,-1.6 .5,-.4 .5,.9 .5,1.8 .5,2.2 .5,1.6 .5,.5 .5,-.8 .5,-1.8 .5,-2.2 .5,-1.8 .5,-.7 .5,.7 .5,1.7 .5,2.2 .5,1.8 .5,.8 .5,-.6 .5,-1.6 .5,-2.2 .5,-1.9 .5,-1 .5,.4 .5,1.6 .5,2.1 .5,2 .5,1 .5,-.3 .5,-1.5 .5,-2.1 .5,-2 .5,-1.2 .5,.1 .5,1.4 .5,2.1 .5,2 .5,1.3 .5,-.1 .5,-1.2 .5,-2.1 .5,-2.1 .5,-1.4 .5,-.1 .5,1.1 .5,2 .5,2.1 .5,1.5 .5,.3 .5,-1 .5,-1.9 .5,-2.1 .5,-1.6 .5,-.3 .5,.9 .5,1.9 .5,2.3 .5,1.7 .5,.5 .5,-.7 .5,-1.8 .5,-2.1 .5,-1.7 .5,-.7 .5,.7 .5,1.8 .5,2.2 .5,1.9 .5,.8 .5,-.5 .5,-1.6 .5,-2.1 .5,-1.9 .5,-.8 .5,.4 .5,1.6 .5,2.2 .5,2 .5,1.1 .5,-.2 .5,-1.5 .5,-2.1 .5,-1.9 .5,-1.2 .5,.2 .5,1.4 .5,2.2 .5,2.1 .5,1.3 .5,0 .5,-1.2 .5,-2 .5,-2.1 .5,-1.3 .5,-.1 .5,1.2 .5,2 .5,2.2 .5,1.5 .5,.3 .5,-1 .5,-1.9 .5,-2.1 .5,-1.5 .5,-.4 .5,1 .5,1.9 .5,2.2 .5,1.7 .5,.6 .5,-.8 .5,-1.8 .5,-2.1 .5,-1.7 .5,-.6 .5,.7 .5,1.8 .5,2.2 .5,1.8 .5,.9 .5,-.5 .5,-1.6 .5,-2.2 .5,-1.8 .5,-.9 .5,.4 .5,1.7 .5,2.2 .5,1.9 .5,1.1 .5,-.2 .5,-1.4 .5,-2.1 .5,-2 .5,-1.1 .5,.2 .5,1.4 .5,2.1 .5,2.1 .5,1.3 .5,.1 .5,-1.3 .5,-2 .5,-2 .5,-1.4 .5,-.1 .5,1.2 .5,2.1 .5,2.1 .5,1.6 .5,.3 .5,-1 .5,-1.9 .5,-2.2 .5,-1.5 .5,-.4 .5,1 .5,1.9 .5,2.2 .5,1.7 .5,.6 .5,-.7 .5,-1.8 .5,-2.2 .5,-1.7 .5,-.6 .5,.7 .5,1.8 .5,2.2 .5,1.9 .5,.8 .5,-.5 .5,-1.6 .5,-2.1 .5,-1.9 .5,-.9 .5,.5 .5,1.6 .5,2.2 .5,2 .5,1.1 .5,-.3 .5,-1.4 .5,-2.1 .5,-2 .5,-1.1 .5,.2 .5,1.4 .5,2.2 .5,2 .5,1.4 .5,0 .5,-1.2 .5,-2 .5,-2.1 .5,-1.3 .5,-.1 .5,1.2 .5,1.9 .5,2.2 .5,1.4 .5,.3 .5,-1.1 .5,-2 .5,-2.1 .5,-1.6 .5,-.5 .5,.9 .5,1.9 .5,2.2 .5,1.6 .5,.5 .5,-.8 .5,-1.8 .5,-2.2 .5,-1.8 .5,-.7 .5,.7 .5,1.7 .5,2.1 .5,1.8 .5,.8 .5,-.5 .5,-1.7 .5,-2.2 .5,-1.9 .5,-1 .5,.4 .5,1.6 .5,2.1 .5,1.9 .5,1.1 .5,-.3 .5,-1.5 .5,-2.2 .5,-2 .5,-1.2 .5,.1 .5,1.4 .5,2.1 .5,2 .5,1.2 .5,0 .5,-1.3 .5,-2 .5,-2.2 .5,-1.3 .5,-.2 .5,1.1 .5,2 .5,2.1 .5,1.5 .5,.2 .5,-1 .5,-2 .5,-2.2 .5,-1.6 .5,-.4 .5,.9 .5,1.9 .5,2.1 .5,1.7 .5,.5 .5,-.8 .5,-1.9 .5,-2.2 .5,-1.7 .5,-.7 .5,.6 .5,1.8 .5,2.1 .5,1.8 .5,.8 .5,-.6 .5,-1.6 .5,-2.2 .5,-2 .5,-.9 .5,.4 .5,1.5 .5,2.2 .5,1.9 .5,1 .5,-.3 .5,-1.5 .5,-2.1 .5,-2 .5,-1.2 .5,.1 .5,1.4 .5,2 .5,2.1 .5,1.2 .5,0 .5,-1.3 .5,-2.1 .5,-2.1 .5,-1.4 .5,-.1 .5,1.1 .5,2 .5,2.1 .5,1.5 .5,.2 .5,-1.1 .5,-1.9 .5,-2.2 .5,-1.6 .5,-.4 .5,.9 .5,1.9 .5,2.1 .5,1.6 .5,.6 .5,-.9 .5,-1.8 .5,-2.2 .5,-1.8 .5,-.6 .5,.6 .5,1.7 .5,2.2 .5,1.8 .5,.7 .5,-.6 .5,-1.7 .5,-2.2 .5,-1.9 .5,-.9 .5,.3 .5,1.5 .5,2.2 .5,1.9 .5,1 .5,-.3 .5,-1.6 .5,-2.1 .5,-2.1 .5,-1.2 .5,.1 .5,1.4 .5,2 .5,2 .5,1.3 .5,-.1 .5,-1.3 .5,-2.1 .5,-2.1 .5,-1.4 .5,-.2 .5,1.1 .5,2 .5,2.1 .5,1.4 .5,.2 .5,-1 .5,-2 .5,-2.2 .5,-1.6 .5,-.5 .5,.9 .5,1.9 .5,2.1 .5,1.6 .5,.5 .5,-.8 .5,-1.9 .5,-2.2 .5,-1.8 .5,-.7 .5,.6 .5,1.7 .5,2.2 .5,1.8 .5,.7 .5,-.6 .5,-1.7 .5,-2.2 .5,-1.9 .5,-1 .5,.4 .5,1.5 .5,2.1 .5,2 .5,1 .5,-.4 .5,-1.5 .5,-2.1 .5,-2.1 .5,-1.2 .5,.1 .5,1.3 .5,2.1 .5,2 .5,1.2 .5,0 .5,-1.3 .5,-2.1 .5,-2.1 .5,-1.3 .5,-.1 .5,1.2 .5,2 .5,2.2 .5,1.5 .5,.3 .5,-1 .5,-1.9 .5,-2.1 .5,-1.6 .5,-.3 .5,.9 .5,1.9 .5,2.2 .5,1.7 .5,.6 .5,-.8 .5,-1.8 .5,-2.1 .5,-1.7 .5,-.6 .5,.6 .5,1.8 .5,2.2 .5,1.9 .5,.8 .5,-.5 .5,-1.6 .5,-2.2 .5,-1.8 .5,-.9 .5,.4 .5,1.6 .5,2.2 .5,2 .5,1.1 .5,-.3 .5,-1.4 .5,-2.1 .5,-2 .5,-1.1 .5,.2 .5,1.4 .5,2.1 .5,2.1 .5,1.3 .5,0 .5,-1.2 .5,-2 .5,-2.1 .5,-1.3 .5,-.1 .5,1.2 .5,2 .5,2.2 .5,1.5 .5,.3 .5,-1 .5,-1.9 .5,-2.2 .5,-1.5 .5,-.4 .5,1 .5,1.9 .5,2.2 .5,1.7 .5,.6 .5,-.8 .5,-1.8 .5,-2.1 .5,-1.7 .5,-.7 .5,.7 .5,1.8 .5,2.2 .5,1.9 .5,.8 .5,-.5 .5,-1.6 .5,-2.2 .5,-1.8 .5,-.9 .5,.4 .5,1.6 .5,2.2 .5,2 .5,1.1 .5,-.3 .5,-1.4 .5,-2.1 .5,-2 .5,-1.1 .5,.2 .5,1.4 .5,2.1 .5,2.1 .5,1.3 .5,0 .5,-1.2 .5,-2 .5,-2.1 .5,-1.3 .5,-.1 .5,1.1 .5,2.1 .5,2.1 .5,1.5 .5,.3 .5,-1 .5,-1.9 .5,-2.1 .5,-1.5 .5,-.4 .5,.9 .5,2 .5,2.2 .5,1.7 .5,.5 .5,-.7 .5,-1.8" fill="none" stroke="#ff6929" stroke-width="1.8" stroke-linejoin="round" /></g><rect x="0.5" y="101.5" width="435" height="117" fill="none" stroke="#6b6b6b" stroke-width="1" /><rect x="0.5" y="248.0" width="435" height="102.5" fill="none" stroke="#6b6b6b" stroke-width="1" /><rect x="433" y="89" width="21" height="16" fill="#000" stroke="none" stroke-width="1" /><rect x="435.2" y="91.2" width="16" height="12" fill="#111" stroke="#f4f4f4" stroke-width="1.7" /><line x1="435.5" y1="93.9" x2="451" y2="93.9" stroke="#f4f4f4" stroke-width="1.2" /><path d="M443,95 L447,99.5 L444.2,99.5 L444.2,103 L441.8,103 L441.8,99.5 L439,99.5 Z" fill="#fff"/><text x="70.8" y="372.5" font-size="14.5" fill="#c4c4c4" text-anchor="middle" >1.45</text><text x="172.7" y="372.5" font-size="14.5" fill="#c4c4c4" text-anchor="middle" >1.5</text><text x="275" y="372.5" font-size="14.5" fill="#c4c4c4" text-anchor="middle" >1.55</text><text x="376.6" y="372.5" font-size="14.5" fill="#c4c4c4" text-anchor="middle" >1.6</text><rect x="0" y="382" width="456" height="33" fill="#f0f0f0" stroke="none" stroke-width="1" /><text x="-36" y="404" font-size="15.5" fill="#000" text-anchor="start" textLength="42" lengthAdjust="spacingAndGlyphs" >Ready</text><rect x="283.5" y="388.5" width="103" height="23" fill="#f0f0f0" stroke="#d7d7d7" stroke-width="1" /><rect x="389.5" y="388.5" width="62" height="23" fill="#f0f0f0" stroke="#d7d7d7" stroke-width="1" /><text x="286" y="405" font-size="15.5" fill="#000" text-anchor="start" textLength="94" lengthAdjust="spacingAndGlyphs" >Sample based</text><text x="392" y="405" font-size="15.5" fill="#000" text-anchor="start" textLength="56" lengthAdjust="spacingAndGlyphs" >T=1.679</text><rect x="762" y="0" width="1158" height="33" fill="#393939" stroke="none" stroke-width="1" /><rect x="774.5" y="6.5" width="16" height="16" fill="#fafafa" stroke="#a9b3bd" stroke-width="1" /><rect x="775" y="7" width="15" height="2.5" fill="#4d8fd6" stroke="none" stroke-width="1" /><path d="M776.5,16.5 L781,14 L783.5,10.5 L785.5,12 L788.5,20.5 L785,18 L782,18.5 Z" fill="#e2571e"/><path d="M776.5,16.5 L781,14 L782.5,15.5 L780,19 Z" fill="#2f75c8"/><path d="M783.5,10.5 L785.5,12 L784,15 Z" fill="#f3a23c"/><text x="796" y="22" font-size="17" fill="#ffffff" text-anchor="start" textLength="52" lengthAdjust="spacingAndGlyphs" >Scope1</text><line x1="1819" y1="14.5" x2="1831" y2="14.5" stroke="#fff" stroke-width="1.6" /><rect x="1883" y="8.5" width="10" height="10.5" fill="none" stroke="#fff" stroke-width="1.5" /><rect x="762" y="33" width="1158" height="28" fill="#fff" stroke="none" stroke-width="1" /><text x="767" y="54" font-size="16.5" fill="#000" text-anchor="start" textLength="23" lengthAdjust="spacingAndGlyphs" >File</text><text x="800" y="54" font-size="16.5" fill="#000" text-anchor="start" textLength="39" lengthAdjust="spacingAndGlyphs" >Tools</text><text x="849" y="54" font-size="16.5" fill="#000" text-anchor="start" textLength="34" lengthAdjust="spacingAndGlyphs" >View</text><text x="893" y="54" font-size="16.5" fill="#000" text-anchor="start" textLength="76" lengthAdjust="spacingAndGlyphs" >Simulation</text><text x="979" y="54" font-size="16.5" fill="#000" text-anchor="start" textLength="33" lengthAdjust="spacingAndGlyphs" >Help</text><rect x="762" y="61" width="1158" height="35" fill="#f0f0f0" stroke="none" stroke-width="1" /><line x1="762" y1="61.5" x2="1920" y2="61.5" stroke="#d5d5d5" stroke-width="1" /><line x1="762" y1="95.5" x2="1920" y2="95.5" stroke="#d8d8d8" stroke-width="1" /><path d="M789.8,80.3 L789.3,82.0 L786.6,82.3 L785.8,83.3 L786.0,86.0 L784.4,86.8 L782.3,85.2 L781.0,85.3 L779.2,87.3 L777.5,86.8 L777.2,84.1 L776.2,83.3 L773.5,83.5 L772.7,81.9 L774.3,79.8 L774.2,78.5 L772.2,76.7 L772.7,75.0 L775.4,74.7 L776.2,73.7 L776.0,71.0 L777.6,70.2 L779.7,71.8 L781.0,71.7 L782.8,69.7 L784.5,70.2 L784.8,72.9 L785.8,73.7 L788.5,73.5 L789.3,75.1 L787.7,77.2 L787.8,78.5Z" fill="#9a9a9a" stroke="#3c3c3c" stroke-width="1.2" stroke-linejoin="round"/><circle cx="781" cy="78.5" r="3.3" fill="#fff" stroke="#3c3c3c" stroke-width="1.4"/><path d="M801.0,77.0 L808.0,77.0 L804.5,80.5 Z" fill="#333"/><line x1="811.5" y1="64" x2="811.5" y2="95" stroke="#cfcfcf" stroke-width="1" /><line x1="940.5" y1="64" x2="940.5" y2="95" stroke="#cfcfcf" stroke-width="1" /><line x1="1043.5" y1="64" x2="1043.5" y2="95" stroke="#cfcfcf" stroke-width="1" /><line x1="1094.5" y1="64" x2="1094.5" y2="95" stroke="#cfcfcf" stroke-width="1" /><path d="M822,76.5 L833,70.0 L833,83.0 Z" fill="#b5dcf5" stroke="#6a9fcc" stroke-width="1"/><rect x="834.5" y="69.5" width="3.5" height="11" fill="#a6d3f2" stroke="#5b8fc2" stroke-width="1"/><path d="M840.4,83.8 L840.0,85.0 L837.6,84.9 L837.0,85.6 L837.6,87.9 L836.5,88.5 L834.8,86.7 L834.0,86.8 L832.7,88.9 L831.5,88.5 L831.6,86.1 L830.9,85.5 L828.6,86.1 L828.0,85.0 L829.8,83.3 L829.7,82.5 L827.6,81.2 L828.0,80.0 L830.4,80.1 L831.0,79.4 L830.4,77.1 L831.5,76.5 L833.2,78.3 L834.0,78.2 L835.3,76.1 L836.5,76.5 L836.4,78.9 L837.1,79.5 L839.4,78.9 L840.0,80.0 L838.2,81.7 L838.3,82.5Z" fill="#9c9c9c" stroke="#2e2e2e" stroke-width="1.2" stroke-linejoin="round"/><circle cx="834" cy="82.5" r="2.3" fill="#fff" stroke="#2e2e2e" stroke-width="1.4"/><circle cx="860" cy="78.5" r="10.3" fill="#8ed14a" stroke="#3f7d1e" stroke-width="1.8"/><path d="M857,73.5 L865,78.5 L857,83.5 Z" fill="#222"/><rect x="883" y="71.0" width="3.5" height="15" fill="#8ec3ea" stroke="#3a78b5" stroke-width="1"/><path d="M889,71.0 L899,78.5 L889,86.0 Z" fill="#a9d3f2" stroke="#3a78b5" stroke-width="1.2"/><circle cx="922" cy="78.5" r="10.3" fill="#8c8c8c" stroke="#a0a0a0" stroke-width="1"/><rect x="918" y="74.5" width="8" height="8" fill="#7a7a7a" stroke="none" stroke-width="1" /><rect x="953" y="69.5" width="9" height="6" fill="#f5a54a" stroke="#d2691e" stroke-width="1.2" /><path d="M962,72.5 L966,72.5 L966,77.5" fill="none" stroke="#d2691e" stroke-width="1.2"/><circle cx="966" cy="79.0" r="2.5" fill="#fff" stroke="#444" stroke-width="1.1"/><path d="M966,81.5 L966,84.5 L961,84.5" fill="none" stroke="#444" stroke-width="1.1"/><rect x="953" y="81.5" width="8" height="6" fill="#fff" stroke="#444" stroke-width="1.1" /><path d="M981.5,77.0 L988.5,77.0 L985,80.5 Z" fill="#333"/><rect x="994" y="63" width="37" height="31" fill="#c3ddf6" stroke="none" stroke-width="1" /><circle cx="1012" cy="77.0" r="4.2" fill="#fff" stroke="#2a2a2a" stroke-width="1.7"/><line x1="1014.5" y1="80.5" x2="1017.5" y2="85.0" stroke="#2a2a2a" stroke-width="1.9" /><rect x="999.5" y="73.0" width="2.2" height="8" fill="#222" stroke="none" stroke-width="1" /><rect x="1022.3" y="73.0" width="2.2" height="8" fill="#222" stroke="none" stroke-width="1" /><rect x="1003" y="75.5" width="2" height="3" fill="#333" stroke="none" stroke-width="1" /><rect x="1019" y="75.5" width="2" height="3" fill="#333" stroke="none" stroke-width="1" /><path d="M1032.5,77.0 L1039.5,77.0 L1036,80.5 Z" fill="#333"/><rect x="1053.5" y="68.0" width="21" height="21" fill="url(#icg)" stroke="#1e1e1e" stroke-width="1.7" /><path d="M1064,72.5 L1058,78.5 L1064,84.5 L1070,78.5 Z" fill="none" stroke="#9a9a9a" stroke-width="1" stroke-dasharray="1.5,1.5"/><path d="M1064,70.0 l-3.5,3.5 h7 Z M1064,87.0 l-3.5,-3.5 h7 Z M1055.5,78.5 l3.5,-3.5 v7 Z M1072.5,78.5 l-3.5,-3.5 v7 Z" fill="#333"/><path d="M1083.5,77.0 L1090.5,77.0 L1087,80.5 Z" fill="#333"/><path d="M1105,86.5 L1112.5,86.5 L1112.5,77.5 M1112.5,71.0 L1120,71.0" fill="none" stroke="#1e1e1e" stroke-width="4.6" stroke-linecap="square"/><path d="M1105,86.5 L1112.5,86.5 L1112.5,77.5 M1112.5,71.0 L1120,71.0" fill="none" stroke="#7a7a7a" stroke-width="2" stroke-linecap="square"/><path d="M1106,80.0 L1112.5,70.5 L1119,80.0 L1115.5,80.0 L1112.5,76.0 L1109.5,80.0 Z" fill="#6a6a6a" stroke="#1e1e1e" stroke-width="1.4" stroke-linejoin="round"/><rect x="1136.5" y="68.0" width="21" height="21" fill="url(#icg)" stroke="#333" stroke-width="1.5" /><path d="M1138,84.0 L1151.5,69.0 L1157,74.0 L1143.5,89.0 Z" fill="#93cdec" stroke="#3d7fb0" stroke-width="1"/><path d="M1144,81.5 l1.5,1.5 M1147,78.0 l1.5,1.5 M1150,74.5 l1.5,1.5 M1153,71.0 l1.5,1.5" stroke="#2b5f86" stroke-width="1.1"/><path d="M1166.5,77.0 L1173.5,77.0 L1170,80.5 Z" fill="#333"/><rect x="762" y="96" width="1158" height="23" fill="#f0f0f0" stroke="none" stroke-width="1" /><text x="764" y="114.5" font-size="15.5" fill="#000" text-anchor="start" textLength="725" lengthAdjust="spacingAndGlyphs" >Data may be missing.&#160; Try unchecking 'Limit data points to last' from the Configuration Properties Logging tab.</text><rect x="762" y="119" width="1158" height="289" fill="#262626" stroke="none" stroke-width="1" /><rect x="799" y="120" width="1121" height="117" fill="#000" stroke="none" stroke-width="1" /><rect x="799" y="265.6" width="1121" height="111.09999999999997" fill="#000" stroke="none" stroke-width="1" /><line x1="900.5" y1="120" x2="900.5" y2="237" stroke="#3a3a3a" stroke-width="1" /><line x1="1150.0" y1="120" x2="1150.0" y2="237" stroke="#3a3a3a" stroke-width="1" /><line x1="1399.5" y1="120" x2="1399.5" y2="237" stroke="#3a3a3a" stroke-width="1" /><line x1="1649.0" y1="120" x2="1649.0" y2="237" stroke="#3a3a3a" stroke-width="1" /><line x1="1898.5" y1="120" x2="1898.5" y2="237" stroke="#3a3a3a" stroke-width="1" /><line x1="799" y1="137.1" x2="1920" y2="137.1" stroke="#3a3a3a" stroke-width="1" /><line x1="799" y1="174.5" x2="1920" y2="174.5" stroke="#3a3a3a" stroke-width="1" /><line x1="799" y1="213.0" x2="1920" y2="213.0" stroke="#3a3a3a" stroke-width="1" /><line x1="900.5" y1="265.6" x2="900.5" y2="376.7" stroke="#3a3a3a" stroke-width="1" /><line x1="1150.0" y1="265.6" x2="1150.0" y2="376.7" stroke="#3a3a3a" stroke-width="1" /><line x1="1399.5" y1="265.6" x2="1399.5" y2="376.7" stroke="#3a3a3a" stroke-width="1" /><line x1="1649.0" y1="265.6" x2="1649.0" y2="376.7" stroke="#3a3a3a" stroke-width="1" /><line x1="1898.5" y1="265.6" x2="1898.5" y2="376.7" stroke="#3a3a3a" stroke-width="1" /><line x1="799" y1="291.5" x2="1920" y2="291.5" stroke="#3a3a3a" stroke-width="1" /><line x1="799" y1="322.2" x2="1920" y2="322.2" stroke="#3a3a3a" stroke-width="1" /><line x1="799" y1="351.5" x2="1920" y2="351.5" stroke="#3a3a3a" stroke-width="1" /><clipPath id="c1a"><rect x="799" y="120" width="1121" height="117"/></clipPath><clipPath id="c1b"><rect x="799" y="265.6" width="1121" height="111.09999999999997"/></clipPath><g clip-path="url(#c1a)"><path d="M799,161.1l1,2.1 1,1.2 1,2.1 1,2.2 1,2.1 1,2.1 1,1.3 1,2.1 1,2.1 1,2.1 1,2.1 1,2.2 1,1.1 1,2.2 1,2.1 1,2.2 1,2.2 1,.8 1,2.1 1,2.2 1,2.2 1,2.1 1,.2 1,2 1,2 1,2 1,2 1,-.7 1,1.7 1,1.7 1,1.5 1,1.5 1,-1.6 1,1.2 1,1.1 1,.9 1,.8 1,.6 1,-2.5 1,.3 1,.1 1,.1 1,-.2 1,-3.1 1,-.4 1,-.6 1,-.7 1,-.8 1,-3.4 1,-1 1,-1.1 1,-1.2 1,-1.4 1,-3.2 1,-1.5 1,-1.5 1,-1.5 1,-1.7 1,-3 1,-1.6 1,-1.7 1,-1.8 1,-1.7 1,-1.8 1,-2.7 1,-1.8 1,-1.8 1,-1.8 1,-1.8 1,-2.5 1,-1.9 1,-1.8 1,-1.8 1,-1.7 1,-2.7 1,-1.8 1,-1.8 1,-1.7 1,-1.7 1,-2.9 1,-1.7 1,-1.6 1,-1.6 1,-1.4 1,-3.3 1,-1.4 1,-1.3 1,-1.1 1,-1.1 1,-.9 1,-3.3 1,-.8 1,-.6 1,-.5 1,-.3 1,-3 1,0 1,.1 1,.2 1,.5 1,-2.4 1,.7 1,.9 1,1 1,1.1 1,-1.6 1,1.5 1,1.5 1,1.6 1,1.7 1,-.7 1,2 1,1.9 1,2.1 1,2 1,2 1,.3 1,2.2 1,2.2 1,2.1 1,2.2 1,.8 1,2.2 1,2.2 1,2.1 1,2.1 1,1.3 1,2.1 1,2.1 1,2.1 1,2.1 1,1.3 1,2.1 1,2.1 1,2.1 1,2.2 1,1.2 1,2.1 1,2.1 1,2.2 1,2.2 1,2.2 1,.8 1,2.2 1,2.1 1,2.2 1,2.2 1,.2 1,2.1 1,2 1,2 1,2 1,-.6 1,1.8 1,1.6 1,1.6 1,1.5 1,-1.4 1,1.2 1,1.1 1,1 1,.8 1,-2.3 1,.5 1,.4 1,.2 1,.1 1,-.1 1,-3.1 1,-.3 1,-.5 1,-.7 1,-.8 1,-3.3 1,-1 1,-1.1 1,-1.2 1,-1.3 1,-3.3 1,-1.4 1,-1.5 1,-1.5 1,-1.7 1,-3 1,-1.6 1,-1.7 1,-1.7 1,-1.8 1,-2.7 1,-1.8 1,-1.8 1,-1.8 1,-1.8 1,-1.8 1,-2.5 1,-1.8 1,-1.8 1,-1.8 1,-1.8 1,-2.7 1,-1.8 1,-1.7 1,-1.8 1,-1.7 1,-2.9 1,-1.7 1,-1.6 1,-1.6 1,-1.4 1,-3.3 1,-1.4 1,-1.3 1,-1.2 1,-1.1 1,-3.4 1,-.9 1,-.8 1,-.7 1,-.5 1,-.3 1,-3.1 1,-.1 1,0 1,.3 1,.3 1,-2.5 1,.7 1,.8 1,1 1,1.1 1,-1.7 1,1.4 1,1.5 1,1.6 1,1.6 1,-.7 1,1.9 1,1.9 1,2 1,2 1,.1 1,2.2 1,2.1 1,2.2 1,2.1 1,2.2 1,.8 1,2.2 1,2.1 1,2.2 1,2.1 1,1.2 1,2.1 1,2.2 1,2.1 1,2.1 1,1.3 1,2.1 1,2.1 1,2.1 1,2.1 1,1.3 1,2.1 1,2.1 1,2.1 1,2.2 1,1 1,2.1 1,2.2 1,2.1 1,2.2 1,2.2 1,.3 1,2.1 1,2 1,2.1 1,1.9 1,-.4 1,1.8 1,1.7 1,1.6 1,1.6 1,-1.4 1,1.3 1,1.1 1,1 1,.9 1,-2.2 1,.6 1,.4 1,.3 1,.1 1,-2.9 1,-.1 1,-.3 1,-.5 1,-.6 1,-.7 1,-3.4 1,-.9 1,-1.1 1,-1.1 1,-1.3 1,-3.3 1,-1.4 1,-1.5 1,-1.5 1,-1.6 1,-3.1 1,-1.6 1,-1.7 1,-1.7 1,-1.8 1,-2.7 1,-1.8 1,-1.8 1,-1.8 1,-1.8 1,-2.5 1,-1.8 1,-1.8 1,-1.8 1,-1.8 1,-1.8 1,-2.7 1,-1.8 1,-1.7 1,-1.8 1,-1.6 1,-3 1,-1.7 1,-1.6 1,-1.6 1,-1.5 1,-3.2 1,-1.4 1,-1.4 1,-1.2 1,-1.1 1,-3.4 1,-1 1,-.8 1,-.7 1,-.6 1,-3.2 1,-.3 1,-.2 1,0 1,.2 1,.3 1,-2.5 1,.6 1,.7 1,.9 1,1.1 1,-1.8 1,1.4 1,1.4 1,1.5 1,1.6 1,-.8 1,1.9 1,1.9 1,2 1,1.9 1,.1 1,2.1 1,2.2 1,2.1 1,2.2 1,.6 1,2.3 1,2.2 1,2.1 1,2.2 1,2.1 1,1.2 1,2.1 1,2.1 1,2.1 1,2.1 1,1.3 1,2.1 1,2.1 1,2.1 1,2.1 1,1.3 1,2.1 1,2.2 1,2.1 1,2.2 1,1 1,2.1 1,2.2 1,2.1 1,2.2 1,.5 1,2.1 1,2.1 1,2 1,2.1 1,2 1,-.4 1,1.8 1,1.8 1,1.7 1,1.6 1,-1.3 1,1.3 1,1.2 1,1.1 1,.9 1,-2.1 1,.6 1,.5 1,.4 1,.1 1,-2.8 1,-.1 1,-.3 1,-.4 1,-.5 1,-3.3 1,-.7 1,-.9 1,-1.1 1,-1.1 1,-1.3 1,-3.3 1,-1.3 1,-1.5 1,-1.5 1,-1.6 1,-3.1 1,-1.6 1,-1.7 1,-1.7 1,-1.8 1,-2.7 1,-1.8 1,-1.7 1,-1.8 1,-1.8 1,-2.6 1,-1.8 1,-1.8 1,-1.8 1,-1.8 1,-2.6 1,-1.8 1,-1.8 1,-1.8 1,-1.7 1,-1.7 1,-2.9 1,-1.7 1,-1.7 1,-1.6 1,-1.5 1,-3.2 1,-1.4 1,-1.4 1,-1.3 1,-1.1 1,-3.4 1,-1 1,-.9 1,-.8 1,-.6 1,-3.2 1,-.4 1,-.2 1,0 1,.1 1,-2.8 1,.4 1,.6 1,.7 1,.8 1,1 1,-1.8 1,1.2 1,1.4 1,1.5 1,1.6 1,-.9 1,1.8 1,1.9 1,1.9 1,2 1,0 1,2.1 1,2.1 1,2.1 1,2.2 1,.6 1,2.2 1,2.2 1,2.2 1,2.1 1,1.1 1,2.2 1,2.1 1,2.2 1,2.1 1,2.1 1,1.3 1,2.1 1,2.1 1,2.1 1,2.1 1,1.3 1,2.1 1,2.1 1,2.2 1,2.1 1,1.1 1,2.1 1,2.2 1,2.1 1,2.2 1,.6 1,2.1 1,2.1 1,2.1 1,2 1,-.2 1,1.9 1,1.9 1,1.8 1,1.7 1,1.7 1,-1.3 1,1.4 1,1.3 1,1.1 1,1 1,-2.1 1,.7 1,.6 1,.4 1,.2 1,-2.8 1,0 1,-.2 1,-.4 1,-.5 1,-3.2 1,-.7 1,-.9 1,-1 1,-1.1 1,-3.3 1,-1.2 1,-1.4 1,-1.4 1,-1.5 1,-1.6 1,-3.1 1,-1.6 1,-1.7 1,-1.7 1,-1.7 1,-2.8 1,-1.8 1,-1.7 1,-1.8 1,-1.8 1,-2.6 1,-1.8 1,-1.8 1,-1.8 1,-1.8 1,-2.6 1,-1.8 1,-1.8 1,-1.8 1,-1.7 1,-2.9 1,-1.7 1,-1.7 1,-1.7 1,-1.6 1,-1.5 1,-3.2 1,-1.5 1,-1.4 1,-1.2 1,-1.2 1,-3.4 1,-1 1,-1 1,-.8 1,-.6 1,-3.3 1,-.4 1,-.3 1,-.1 1,0 1,-2.7 1,.3 1,.5 1,.6 1,.8 1,-2 1,1 1,1.3 1,1.3 1,1.4 1,1.6 1,-1 1,1.8 1,1.8 1,1.9 1,2 1,-.2 1,2.2 1,2.1 1,2.1 1,2.1 1,.6 1,2.2 1,2.2 1,2.2 1,2.1 1,1.1 1,2.1 1,2.2 1,2.1 1,2.1 1,1.3 1,2.1 1,2.1 1,2.1 1,2.1 1,2.1 1,1.3 1,2.1 1,2.2 1,2.1 1,2.2 1,1 1,2.2 1,2.1 1,2.2 1,2.2 1,.6 1,2.1 1,2.1 1,2.1 1,2.1 1,-.1 1,1.9 1,1.9 1,1.9 1,1.7 1,-1 1,1.6 1,1.4 1,1.3 1,1.2 1,1.1 1,-2.1 1,.8 1,.6 1,.5 1,.3 1,-2.8 1,0 1,-.1 1,-.3 1,-.4 1,-3.3 1,-.6 1,-.8 1,-1 1,-1.1 1,-3.3 1,-1.2 1,-1.3 1,-1.4 1,-1.5 1,-3.1 1,-1.6 1,-1.6 1,-1.6 1,-1.7 1,-1.8 1,-2.8 1,-1.7 1,-1.8 1,-1.8 1,-1.8 1,-2.6 1,-1.8 1,-1.8 1,-1.8 1,-1.8 1,-2.6 1,-1.8 1,-1.8 1,-1.8 1,-1.7 1,-2.8 1,-1.8 1,-1.7 1,-1.7 1,-1.6 1,-3.1 1,-1.6 1,-1.5 1,-1.4 1,-1.3 1,-1.2 1,-3.4 1,-1.1 1,-.9 1,-.9 1,-.7 1,-3.2 1,-.5 1,-.4 1,-.1 1,-.1 1,-2.8 1,.3 1,.4 1,.6 1,.7 1,-2.1 1,1 1,1.2 1,1.3 1,1.4 1,-1.3 1,1.7 1,1.7 1,1.9 1,1.8 1,1.9 1,-.1 1,2 1,2.1 1,2.2 1,2.1 1,.5 1,2.2 1,2.2 1,2.1 1,2.2 1,1 1,2.2 1,2.1 1,2.2 1,2.1 1,1.3 1,2.1 1,2.1 1,2.1 1,2.1 1,1.3 1,2.1 1,2.1 1,2.1 1,2.2 1,2.1 1,1.1 1,2.2 1,2.1 1,2.2 1,2.2 1,.6 1,2.2 1,2.1 1,2.1 1,2.1 1,0 1,1.9 1,2 1,1.8 1,1.8 1,-.9 1,1.6 1,1.5 1,1.3 1,1.3 1,-1.8 1,.9 1,.8 1,.7 1,.6 1,.3 1,-2.7 1,.1 1,-.1 1,-.2 1,-.4 1,-3.2 1,-.7 1,-.7 1,-.9 1,-1 1,-3.4 1,-1.2 1,-1.2 1,-1.4 1,-1.5 1,-3.2 1,-1.5 1,-1.6 1,-1.6 1,-1.7 1,-2.9 1,-1.7 1,-1.7 1,-1.8 1,-1.8 1,-1.8 1,-2.6 1,-1.8 1,-1.8 1,-1.8 1,-1.8 1,-2.6 1,-1.8 1,-1.8 1,-1.8 1,-1.7 1,-2.8 1,-1.7 1,-1.8 1,-1.6 1,-1.7 1,-3 1,-1.6 1,-1.6 1,-1.4 1,-1.4 1,-3.3 1,-1.2 1,-1.2 1,-1 1,-.9 1,-.7 1,-3.3 1,-.5 1,-.4 1,-.3 1,0 1,-2.9 1,.2 1,.4 1,.5 1,.6 1,-2.1 1,.9 1,1.1 1,1.3 1,1.3 1,-1.3 1,1.6 1,1.7 1,1.8 1,1.8 1,-.3 1,2 1,2 1,2.1 1,2.1 1,2.1 1,.5 1,2.2 1,2.2 1,2.1 1,2.2 1,1 1,2.2 1,2.1 1,2.1 1,2.1 1,1.3 1,2.1 1,2.1 1,2.1 1,2.1 1,1.4 1,2.1 1,2.1 1,2.1 1,2.1 1,1.2 1,2.1 1,2.1 1,2.2 1,2.2 1,2.2 1,.7 1,2.1 1,2.1 1,2.2 1,2.1 1,0 1,2 1,2 1,1.9 1,1.8 1,-.8 1,1.6 1,1.5 1,1.4 1,1.3 1,-1.7 1,1 1,.9 1,.7 1,.6 1,-2.5 1,.3 1,.1 1,0 1,-.2 1,-.3 1,-3.2 1,-.6 1,-.7 1,-.9 1,-1 1,-3.3 1,-1.1 1,-1.3 1,-1.3 1,-1.5 1,-3.2 1,-1.5 1,-1.6 1,-1.6 1,-1.7 1,-2.9 1,-1.7 1,-1.7 1,-1.8 1,-1.8 1,-2.6 1,-1.8 1,-1.8 1,-1.8 1,-1.8 1,-1.8 1,-2.6 1,-1.8 1,-1.8 1,-1.7 1,-1.8 1,-2.8 1,-1.7 1,-1.7 1,-1.7 1,-1.7 1,-3 1,-1.6 1,-1.6 1,-1.4 1,-1.4 1,-3.3 1,-1.3 1,-1.2 1,-1 1,-1 1,-3.3 1,-.7 1,-.6 1,-.5 1,-.3 1,-.1 1,-2.9 1,.1 1,.3 1,.5 1,.6 1,-2.2 1,.9 1,1 1,1.2 1,1.3 1,-1.4 1,1.6 1,1.6 1,1.8 1,1.8 1,-.5 1,2 1,2.1 1,2 1,2.1 1,.3 1,2.2 1,2.2 1,2.2 1,2.1 1,2.2 1,.9 1,2.2 1,2.2 1,2.1 1,2.1 1,1.3 1,2.1 1,2.1 1,2.1 1,2.1 1,1.3 1,2.1 1,2.1 1,2.1 1,2.2 1,1.1 1,2.2 1,2.1 1,2.2 1,2.2 1,.8 1,2.1 1,2.1 1,2.2 1,2.1 1,2.2 1,.1 1,2 1,2 1,1.9 1,1.9 1,-.8 1,1.7 1,1.5 1,1.5 1,1.3 1,-1.6 1,1 1,1 1,.8 1,.6 1,-2.5 1,.4 1,.2 1,0 1,-.1 1,-3.1 1,-.3 1,-.5 1,-.7 1,-.8 1,-1 1,-3.3 1,-1.1 1,-1.2 1,-1.4 1,-1.4 1,-3.2 1,-1.5 1,-1.5 1,-1.7 1,-1.6 1,-3 1,-1.7 1,-1.7 1,-1.8 1,-1.7 1,-2.7 1,-1.8 1,-1.8 1,-1.8 1,-1.8 1,-2.5 1,-1.9 1,-1.8 1,-1.8 1,-1.7 1,-1.8 1,-2.7 1,-1.8 1,-1.7 1,-1.7 1,-1.7 1,-3 1,-1.6 1,-1.6 1,-1.5 1,-1.4 1,-3.3 1,-1.3 1,-1.2 1,-1.1 1,-.9 1,-3.4 1,-.8 1,-.6 1,-.5 1,-.3 1,-3.1 1,-.1 1,.1 1,.2 1,.4 1,.6 1,-2.3 1,.8 1,1 1,1.1 1,1.3 1,-1.4 1,1.5 1,1.6 1,1.7 1,1.7 1,-.5 1,2 1,2 1,2 1,2.1 1,.2 1,2.2" fill="none" stroke="#ffff11" stroke-width="1.9" stroke-linejoin="round" /><path d="M799,140.9l1,-.6 1,-5.6 1,-.4 1,-.2 1,0 1,.3 1,-6.2 1,.4 1,.6 1,.8 1,.9 1,1.1 1,-6.6 1,1.2 1,1.3 1,1.5 1,1.5 1,-6.4 1,1.6 1,1.8 1,1.7 1,1.8 1,-5.6 1,2 1,2.1 1,2 1,2.1 1,-4.3 1,2.3 1,2.4 1,2.3 1,2.3 1,-2.5 1,2.6 1,2.6 1,2.7 1,2.6 1,2.6 1,-.5 1,2.9 1,2.9 1,2.9 1,2.9 1,.7 1,3 1,3.1 1,3 1,3.1 1,1.1 1,3 1,3.1 1,3 1,3.1 1,.5 1,2.9 1,2.9 1,2.9 1,2.8 1,-.7 1,2.6 1,2.6 1,2.6 1,2.6 1,2.6 1,-2.8 1,2.3 1,2.3 1,2.3 1,2.3 1,-4.4 1,2 1,2 1,2 1,2 1,-5.8 1,1.8 1,1.7 1,1.7 1,1.7 1,-6.5 1,1.5 1,1.4 1,1.3 1,1.1 1,-6.5 1,1 1,.9 1,.7 1,.5 1,.3 1,-6.1 1,.2 1,0 1,-.3 1,-.5 1,-5.5 1,-.7 1,-.9 1,-1.1 1,-1.3 1,-4.9 1,-1.5 1,-1.6 1,-1.9 1,-2 1,-4.4 1,-2.1 1,-2.2 1,-2.2 1,-2.3 1,-4.3 1,-2.3 1,-2.3 1,-2.3 1,-2.1 1,-2.1 1,-4.5 1,-2 1,-1.8 1,-1.6 1,-1.5 1,-4.9 1,-1.3 1,-1.1 1,-.9 1,-.6 1,-5.6 1,-.4 1,-.3 1,0 1,.2 1,-6.2 1,.4 1,.5 1,.8 1,.9 1,-6.6 1,1 1,1.2 1,1.3 1,1.4 1,1.5 1,-6.4 1,1.6 1,1.7 1,1.7 1,1.8 1,-5.7 1,2 1,2 1,2 1,2 1,-4.4 1,2.3 1,2.3 1,2.3 1,2.3 1,-2.7 1,2.6 1,2.6 1,2.6 1,2.6 1,-1 1,2.9 1,2.9 1,2.8 1,2.9 1,2.9 1,.6 1,3 1,3.1 1,3 1,3.1 1,1.1 1,3 1,3.1 1,3 1,3.1 1,.6 1,3 1,2.9 1,2.8 1,2.9 1,-.5 1,2.6 1,2.6 1,2.6 1,2.7 1,-2.3 1,2.3 1,2.3 1,2.4 1,2.3 1,2.3 1,-4.3 1,2.1 1,2 1,2 1,2 1,-5.6 1,1.8 1,1.8 1,1.7 1,1.6 1,-6.4 1,1.5 1,1.4 1,1.4 1,1.2 1,-6.6 1,1.1 1,.9 1,.7 1,.6 1,-6.2 1,.4 1,.3 1,0 1,-.2 1,-.5 1,-5.6 1,-.6 1,-.8 1,-1 1,-1.3 1,-5 1,-1.4 1,-1.6 1,-1.8 1,-2 1,-4.5 1,-2 1,-2.2 1,-2.2 1,-2.3 1,-4.3 1,-2.3 1,-2.3 1,-2.2 1,-2.2 1,-4.5 1,-2.1 1,-2 1,-1.9 1,-1.6 1,-1.6 1,-4.8 1,-1.4 1,-1.1 1,-1 1,-.7 1,-5.4 1,-.6 1,-.3 1,0 1,.1 1,-6.1 1,.3 1,.5 1,.7 1,.8 1,-6.5 1,1 1,1.1 1,1.3 1,1.4 1,-6.6 1,1.5 1,1.6 1,1.7 1,1.7 1,1.8 1,-5.8 1,1.9 1,2 1,2 1,2 1,-4.5 1,2.2 1,2.3 1,2.2 1,2.3 1,-2.9 1,2.6 1,2.6 1,2.5 1,2.6 1,-1.1 1,2.9 1,2.8 1,2.8 1,2.9 1,.3 1,3.1 1,3 1,3 1,3.1 1,3 1,1.1 1,3 1,3.1 1,3.1 1,3 1,.8 1,2.9 1,2.9 1,2.9 1,2.9 1,-.4 1,2.7 1,2.6 1,2.7 1,2.6 1,-2.1 1,2.4 1,2.3 1,2.4 1,2.4 1,-3.9 1,2 1,2.1 1,2.1 1,2.1 1,2 1,-5.6 1,1.9 1,1.8 1,1.7 1,1.7 1,-6.4 1,1.5 1,1.5 1,1.4 1,1.2 1,-6.6 1,1.1 1,1 1,.8 1,.6 1,-6.3 1,.5 1,.3 1,.1 1,-.2 1,-5.7 1,-.3 1,-.5 1,-.8 1,-1 1,-1.2 1,-5 1,-1.4 1,-1.6 1,-1.7 1,-1.9 1,-4.6 1,-2 1,-2.1 1,-2.2 1,-2.3 1,-4.3 1,-2.3 1,-2.3 1,-2.3 1,-2.2 1,-4.4 1,-2.2 1,-2 1,-1.9 1,-1.7 1,-4.8 1,-1.6 1,-1.4 1,-1.2 1,-1 1,-.8 1,-5.4 1,-.6 1,-.3 1,-.2 1,.1 1,-6 1,.2 1,.5 1,.6 1,.8 1,-6.5 1,1 1,1.1 1,1.2 1,1.3 1,-6.5 1,1.4 1,1.6 1,1.7 1,1.6 1,-6 1,1.9 1,1.9 1,2 1,1.9 1,2 1,-4.7 1,2.2 1,2.3 1,2.2 1,2.2 1,-3 1,2.6 1,2.5 1,2.5 1,2.5 1,-1.2 1,2.8 1,2.8 1,2.8 1,2.9 1,.2 1,3 1,3 1,3.1 1,3 1,1 1,3.1 1,3 1,3.1 1,3.1 1,3.1 1,.7 1,3 1,2.9 1,3 1,2.9 1,-.3 1,2.7 1,2.7 1,2.7 1,2.7 1,-2 1,2.4 1,2.4 1,2.4 1,2.4 1,-3.8 1,2.1 1,2.2 1,2.1 1,2.1 1,-5.3 1,1.9 1,1.8 1,1.8 1,1.8 1,1.7 1,-6.3 1,1.6 1,1.5 1,1.3 1,1.3 1,-6.6 1,1.2 1,1 1,.8 1,.7 1,-6.3 1,.5 1,.3 1,.2 1,-.1 1,-5.8 1,-.3 1,-.4 1,-.8 1,-.9 1,-5.1 1,-1.1 1,-1.3 1,-1.6 1,-1.7 1,-1.8 1,-4.6 1,-2 1,-2.1 1,-2.2 1,-2.3 1,-4.3 1,-2.3 1,-2.3 1,-2.3 1,-2.2 1,-4.4 1,-2.1 1,-2.1 1,-2 1,-1.7 1,-4.8 1,-1.6 1,-1.5 1,-1.2 1,-1.1 1,-5.2 1,-.9 1,-.7 1,-.4 1,-.2 1,0 1,-5.9 1,.2 1,.3 1,.6 1,.8 1,-6.5 1,.9 1,1.1 1,1.2 1,1.3 1,-6.6 1,1.5 1,1.5 1,1.6 1,1.7 1,-6.1 1,1.8 1,1.9 1,1.9 1,2 1,-5.1 1,2.2 1,2.2 1,2.2 1,2.2 1,2.2 1,-3.2 1,2.5 1,2.5 1,2.5 1,2.5 1,-1.4 1,2.8 1,2.8 1,2.8 1,2.8 1,.1 1,3 1,3 1,3 1,3 1,1 1,3.1 1,3 1,3.1 1,3.1 1,.9 1,3 1,3 1,3 1,2.9 1,3 1,-.2 1,2.7 1,2.7 1,2.8 1,2.7 1,-1.8 1,2.4 1,2.4 1,2.5 1,2.4 1,-3.6 1,2.1 1,2.2 1,2.1 1,2.1 1,-5.1 1,1.9 1,1.9 1,1.8 1,1.8 1,-6.2 1,1.7 1,1.6 1,1.5 1,1.4 1,1.3 1,-6.6 1,1.2 1,1.1 1,.9 1,.7 1,-6.4 1,.6 1,.4 1,.1 1,0 1,-5.8 1,-.2 1,-.4 1,-.7 1,-.9 1,-5.2 1,-1 1,-1.3 1,-1.5 1,-1.6 1,-4.7 1,-1.8 1,-1.9 1,-2.1 1,-2.2 1,-2.2 1,-4.3 1,-2.3 1,-2.3 1,-2.3 1,-2.3 1,-4.3 1,-2.2 1,-2.1 1,-2 1,-1.8 1,-4.7 1,-1.7 1,-1.5 1,-1.3 1,-1.1 1,-5.2 1,-1 1,-.7 1,-.5 1,-.2 1,-5.9 1,0 1,.1 1,.3 1,.6 1,.7 1,-6.4 1,.8 1,1 1,1.2 1,1.3 1,-6.6 1,1.4 1,1.5 1,1.6 1,1.6 1,-6.2 1,1.9 1,1.8 1,1.9 1,1.9 1,-5.1 1,2.1 1,2.2 1,2.1 1,2.2 1,-3.6 1,2.5 1,2.4 1,2.5 1,2.4 1,2.5 1,-1.5 1,2.7 1,2.8 1,2.7 1,2.8 1,0 1,3 1,3 1,3 1,3 1,.9 1,3.1 1,3.1 1,3 1,3.1 1,1 1,3 1,3 1,3 1,2.9 1,.2 1,2.7 1,2.8 1,2.8 1,2.7 1,2.8 1,-1.7 1,2.5 1,2.4 1,2.5 1,2.5 1,-3.5 1,2.2 1,2.2 1,2.1 1,2.2 1,-5 1,1.9 1,1.9 1,1.9 1,1.8 1,-6.1 1,1.7 1,1.6 1,1.5 1,1.5 1,-6.6 1,1.3 1,1.3 1,1 1,1 1,.7 1,-6.4 1,.7 1,.4 1,.2 1,0 1,-5.8 1,-.2 1,-.4 1,-.6 1,-.8 1,-5.2 1,-1 1,-1.2 1,-1.5 1,-1.6 1,-4.7 1,-1.7 1,-1.9 1,-2.1 1,-2.1 1,-4.4 1,-2.2 1,-2.3 1,-2.3 1,-2.3 1,-2.2 1,-4.4 1,-2.2 1,-2.1 1,-2 1,-1.9 1,-4.6 1,-1.8 1,-1.5 1,-1.4 1,-1.2 1,-5.1 1,-1 1,-.8 1,-.5 1,-.3 1,-5.8 1,-.1 1,0 1,.3 1,.5 1,-6.3 1,.6 1,.8 1,1 1,1.1 1,1.2 1,-6.5 1,1.3 1,1.5 1,1.6 1,1.6 1,-6.3 1,1.8 1,1.9 1,1.8 1,1.9 1,-5.2 1,2.1 1,2.1 1,2.1 1,2.2 1,-3.8 1,2.4 1,2.5 1,2.4 1,2.4 1,-2 1,2.7 1,2.8 1,2.7 1,2.7 1,2.7 1,-.1 1,3 1,3 1,2.9 1,3 1,.9 1,3.1 1,3.1 1,3 1,3.1 1,1 1,3 1,3 1,3 1,3 1,.3 1,2.8 1,2.8 1,2.8 1,2.8 1,-1.3 1,2.5 1,2.5 1,2.5 1,2.5 1,2.5 1,-3.3 1,2.2 1,2.2 1,2.2 1,2.2 1,-4.9 1,1.9 1,2 1,1.9 1,1.9 1,-6.1 1,1.7 1,1.7 1,1.5 1,1.5 1,-6.5 1,1.3 1,1.3 1,1.1 1,1 1,-6.5 1,.8 1,.7 1,.5 1,.3 1,.1 1,-6 1,-.1 1,-.3 1,-.5 1,-.8 1,-5.3 1,-.9 1,-1.2 1,-1.4 1,-1.5 1,-4.8 1,-1.7 1,-1.8 1,-2.1 1,-2.1 1,-4.4 1,-2.2 1,-2.2 1,-2.3 1,-2.3 1,-4.3 1,-2.3 1,-2.3 1,-2.1 1,-2.1 1,-1.9 1,-4.6 1,-1.7 1,-1.7 1,-1.4 1,-1.2 1,-5.1 1,-1 1,-.8 1,-.6 1,-.4 1,-5.7 1,-.2 1,0 1,.2 1,.5 1,-6.3 1,.6 1,.7 1,.9 1,1.1 1,-6.6 1,1.3 1,1.3 1,1.4 1,1.6 1,1.5 1,-6.2 1,1.7 1,1.8 1,1.9 1,1.8 1,-5.4 1,2.1 1,2.1 1,2.1 1,2.1 1,-3.9 1,2.4 1,2.4 1,2.4 1,2.4 1,-2.1 1,2.6 1,2.7 1,2.7 1,2.7 1,-.4 1,2.9 1,2.9 1,3 1,2.9 1,3 1,.8 1,3.1 1,3.1 1,3 1,3.1 1,1 1,3.1 1,3 1,3 1,3 1,.4 1,2.8 1,2.8 1,2.8 1,2.9 1,-1.1 1,2.5 1,2.5 1,2.6 1,2.5 1,-2.8 1,2.2 1,2.2 1,2.3 1,2.2 1,2.2 1,-4.8 1,2 1,2 1,1.9 1,1.9 1,-6 1,1.8 1,1.6 1,1.6 1,1.6 1,-6.6 1,1.4 1,1.3 1,1.2 1,1 1,-6.5 1,.9 1,.7 1,.5 1,.3 1,-6 1,.2 1,-.1 1,-.2 1,-.5 1,-.7 1,-5.4 1,-.9 1,-1.1 1,-1.3 1,-1.5 1,-4.8 1,-1.6 1,-1.9 1,-1.9 1,-2.2 1,-4.4 1,-2.1 1,-2.3 1,-2.3 1,-2.3 1,-4.3 1,-2.3 1,-2.2 1,-2.2 1,-2.1 1,-4.5 1,-2 1,-1.8 1,-1.7 1,-1.4 1,-1.3 1,-5 1,-1.1 1,-.9 1,-.7 1,-.4 1,-5.7 1,-.2 1,0 1,.1 1,.4 1,-6.2 1,.5 1,.7 1,.9 1,1.1 1,-6.6 1,1.2 1,1.3 1,1.4 1,1.5 1,-6.5 1,1.7 1,1.7 1,1.8 1,1.8 1,1.8 1,-5.4 1,2 1,2.1 1,2 1,2.1 1,-4 1,2.3 1,2.4 1,2.3 1,2.4 1,-2.3 1,2.7 1,2.6 1,2.7 1,2.6 1,-.5 1,2.9 1,2.9 1,2.9 1,2.9 1,.7 1,3 1,3.1 1,3.1 1,3 1,3.1 1,1.1 1,3 1,3 1,3.1 1,3 1,.4 1,2.9 1,2.8 1,2.9 1,2.8 1,-.9 1,2.6 1,2.5 1,2.6 1,2.6 1,-2.7 1,2.2 1,2.3 1,2.3 1,2.2 1,-4.4 1,2 1,2 1,2 1,2 1,1.9 1,-5.9 1,1.8 1,1.7 1,1.6 1,1.6 1,-6.5 1,1.4 1,1.3 1,1.2 1,1.1 1,-6.6 1,1 1,.7 1,.6 1,.4 1,-6.1 1,.2 1,0 1,-.2 1,-.4 1,-5.5 1,-.6 1,-.8 1,-1 1,-1.3 1,-1.5 1,-4.8 1,-1.6 1,-1.8 1,-1.9 1,-2.1 1,-4.5 1,-2.1 1,-2.2 1,-2.3 1,-2.3 1,-4.3 1,-2.3 1,-2.3 1,-2.2 1,-2.1 1,-4.5 1,-2" fill="none" stroke="#139fff" stroke-width="1.9" stroke-linejoin="round" /><path d="M799,220.1l1,1.1 1,-6.6 1,1 1,.8 1,.6 1,.4 1,-6.1 1,.3 1,.1 1,-.2 1,-.4 1,-.6 1,-5.4 1,-.8 1,-1 1,-1.2 1,-1.5 1,-4.8 1,-1.6 1,-1.7 1,-1.9 1,-2.1 1,-4.4 1,-2.2 1,-2.2 1,-2.3 1,-2.3 1,-4.3 1,-2.3 1,-2.2 1,-2.3 1,-2.1 1,-4.5 1,-2 1,-1.9 1,-1.7 1,-1.6 1,-1.3 1,-5 1,-1.2 1,-1 1,-.8 1,-.5 1,-5.6 1,-.3 1,-.2 1,.1 1,.3 1,-6.2 1,.5 1,.6 1,.8 1,1 1,-6.6 1,1.1 1,1.3 1,1.3 1,1.5 1,-6.5 1,1.6 1,1.7 1,1.7 1,1.8 1,1.8 1,-5.6 1,2 1,2 1,2.1 1,2 1,-4.2 1,2.3 1,2.3 1,2.4 1,2.3 1,-2.5 1,2.6 1,2.6 1,2.6 1,2.7 1,-.8 1,2.9 1,2.9 1,2.9 1,2.9 1,.5 1,3.1 1,3 1,3.1 1,3 1,3.1 1,1.1 1,3 1,3.1 1,3 1,3.1 1,.5 1,2.9 1,2.9 1,2.8 1,2.9 1,-.7 1,2.6 1,2.6 1,2.6 1,2.6 1,-2.5 1,2.3 1,2.3 1,2.3 1,2.3 1,-4.2 1,2 1,2 1,2.1 1,2 1,1.9 1,-5.7 1,1.7 1,1.8 1,1.7 1,1.6 1,-6.5 1,1.5 1,1.3 1,1.3 1,1.1 1,-6.5 1,1 1,.8 1,.7 1,.5 1,-6.2 1,.3 1,.1 1,-.1 1,-.3 1,-5.6 1,-.4 1,-.8 1,-.9 1,-1.2 1,-1.4 1,-4.9 1,-1.5 1,-1.7 1,-1.9 1,-2 1,-4.4 1,-2.2 1,-2.1 1,-2.3 1,-2.3 1,-4.3 1,-2.3 1,-2.3 1,-2.2 1,-2.2 1,-4.4 1,-2.1 1,-1.9 1,-1.8 1,-1.6 1,-4.9 1,-1.4 1,-1.3 1,-1 1,-.9 1,-.5 1,-5.6 1,-.4 1,-.2 1,0 1,.3 1,-6.1 1,.4 1,.5 1,.8 1,.9 1,-6.5 1,1.1 1,1.2 1,1.3 1,1.4 1,-6.5 1,1.6 1,1.6 1,1.7 1,1.8 1,-5.9 1,2 1,1.9 1,2.1 1,2 1,2 1,-4.4 1,2.3 1,2.3 1,2.3 1,2.3 1,-2.7 1,2.6 1,2.6 1,2.6 1,2.5 1,-.9 1,2.9 1,2.9 1,2.8 1,2.9 1,.5 1,3 1,3 1,3.1 1,3 1,1.1 1,3.1 1,3 1,3.1 1,3 1,3.1 1,.6 1,2.9 1,2.9 1,2.9 1,2.9 1,-.6 1,2.7 1,2.6 1,2.6 1,2.7 1,-2.3 1,2.3 1,2.3 1,2.4 1,2.3 1,-4.1 1,2.1 1,2 1,2.1 1,2 1,-5.5 1,1.8 1,1.8 1,1.8 1,1.7 1,1.7 1,-6.5 1,1.5 1,1.4 1,1.3 1,1.2 1,-6.6 1,1 1,.9 1,.7 1,.6 1,-6.3 1,.4 1,.2 1,0 1,-.3 1,-5.6 1,-.5 1,-.6 1,-.9 1,-1.1 1,-5 1,-1.3 1,-1.5 1,-1.6 1,-1.9 1,-2 1,-4.5 1,-2 1,-2.2 1,-2.3 1,-2.3 1,-4.3 1,-2.3 1,-2.3 1,-2.2 1,-2.2 1,-4.4 1,-2.1 1,-2 1,-1.8 1,-1.6 1,-4.9 1,-1.5 1,-1.3 1,-1.1 1,-.8 1,-5.4 1,-.8 1,-.4 1,-.3 1,0 1,.2 1,-6.1 1,.3 1,.6 1,.7 1,.9 1,-6.5 1,1 1,1.2 1,1.3 1,1.4 1,-6.6 1,1.6 1,1.6 1,1.7 1,1.7 1,-6 1,2 1,1.9 1,2 1,2 1,-4.8 1,2.3 1,2.2 1,2.3 1,2.2 1,2.3 1,-2.8 1,2.5 1,2.6 1,2.5 1,2.6 1,-1.1 1,2.8 1,2.9 1,2.8 1,2.9 1,.3 1,3.1 1,3 1,3 1,3 1,1.1 1,3.1 1,3 1,3.1 1,3.1 1,.8 1,2.9 1,3 1,2.9 1,2.9 1,3 1,-.5 1,2.6 1,2.7 1,2.7 1,2.6 1,-2.1 1,2.3 1,2.4 1,2.4 1,2.4 1,-4 1,2.1 1,2.1 1,2.1 1,2 1,-5.4 1,1.9 1,1.8 1,1.8 1,1.8 1,-6.3 1,1.5 1,1.6 1,1.4 1,1.3 1,1.2 1,-6.6 1,1.1 1,.9 1,.8 1,.6 1,-6.3 1,.4 1,.3 1,0 1,-.2 1,-5.7 1,-.4 1,-.6 1,-.8 1,-1.1 1,-5.1 1,-1.2 1,-1.4 1,-1.6 1,-1.8 1,-4.6 1,-1.9 1,-2 1,-2.2 1,-2.2 1,-2.3 1,-4.3 1,-2.3 1,-2.3 1,-2.3 1,-2.2 1,-4.4 1,-2.1 1,-2 1,-1.9 1,-1.7 1,-4.7 1,-1.6 1,-1.3 1,-1.2 1,-.9 1,-5.4 1,-.7 1,-.6 1,-.3 1,0 1,-6 1,.1 1,.3 1,.4 1,.7 1,.9 1,-6.5 1,1 1,1.1 1,1.2 1,1.4 1,-6.5 1,1.5 1,1.5 1,1.7 1,1.7 1,-6 1,1.9 1,1.9 1,1.9 1,2 1,-4.9 1,2.2 1,2.2 1,2.3 1,2.2 1,-3.3 1,2.5 1,2.5 1,2.6 1,2.5 1,2.5 1,-1.2 1,2.8 1,2.8 1,2.8 1,2.8 1,.3 1,3 1,3 1,3 1,3.1 1,1 1,3.1 1,3 1,3.1 1,3.1 1,.9 1,2.9 1,3 1,2.9 1,3 1,-.1 1,2.7 1,2.7 1,2.7 1,2.7 1,2.7 1,-2 1,2.4 1,2.4 1,2.4 1,2.4 1,-3.8 1,2.1 1,2.1 1,2.1 1,2.1 1,-5.2 1,1.8 1,1.9 1,1.8 1,1.8 1,-6.3 1,1.6 1,1.6 1,1.4 1,1.4 1,-6.6 1,1.3 1,1.1 1,.9 1,.9 1,.6 1,-6.3 1,.4 1,.3 1,.1 1,-.2 1,-5.7 1,-.3 1,-.6 1,-.7 1,-1.1 1,-5.1 1,-1.1 1,-1.4 1,-1.6 1,-1.7 1,-4.6 1,-1.9 1,-2 1,-2.1 1,-2.3 1,-4.3 1,-2.3 1,-2.3 1,-2.3 1,-2.2 1,-2.3 1,-4.3 1,-2.2 1,-2 1,-1.9 1,-1.8 1,-4.7 1,-1.6 1,-1.4 1,-1.2 1,-1 1,-5.3 1,-.8 1,-.6 1,-.3 1,-.2 1,-5.9 1,0 1,.3 1,.4 1,.6 1,-6.4 1,.8 1,.9 1,1.1 1,1.2 1,1.4 1,-6.6 1,1.5 1,1.5 1,1.6 1,1.7 1,-6.1 1,1.9 1,1.9 1,1.9 1,1.9 1,-5 1,2.2 1,2.2 1,2.2 1,2.2 1,-3.4 1,2.4 1,2.5 1,2.5 1,2.5 1,-1.6 1,2.7 1,2.8 1,2.8 1,2.8 1,2.7 1,.2 1,3 1,3 1,3 1,3 1,1 1,3.1 1,3 1,3.1 1,3.1 1,.9 1,3 1,3 1,3 1,2.9 1,0 1,2.8 1,2.7 1,2.7 1,2.8 1,-1.6 1,2.4 1,2.5 1,2.4 1,2.5 1,2.4 1,-3.6 1,2.1 1,2.2 1,2.1 1,2.1 1,-5.2 1,1.9 1,1.9 1,1.9 1,1.8 1,-6.2 1,1.6 1,1.6 1,1.5 1,1.4 1,-6.6 1,1.3 1,1.1 1,1 1,.9 1,-6.4 1,.7 1,.5 1,.4 1,.1 1,-.1 1,-5.8 1,-.3 1,-.5 1,-.7 1,-.9 1,-5.2 1,-1.1 1,-1.3 1,-1.6 1,-1.7 1,-4.6 1,-1.8 1,-2 1,-2.1 1,-2.2 1,-4.4 1,-2.2 1,-2.3 1,-2.3 1,-2.3 1,-4.3 1,-2.3 1,-2.2 1,-2 1,-2 1,-1.8 1,-4.6 1,-1.7 1,-1.5 1,-1.2 1,-1.1 1,-5.2 1,-.8 1,-.7 1,-.4 1,-.2 1,-5.9 1,0 1,.2 1,.4 1,.6 1,-6.4 1,.7 1,.9 1,1 1,1.2 1,-6.6 1,1.4 1,1.4 1,1.5 1,1.6 1,1.7 1,-6.2 1,1.8 1,1.9 1,1.9 1,1.9 1,-5.1 1,2.1 1,2.2 1,2.1 1,2.2 1,-3.6 1,2.5 1,2.4 1,2.5 1,2.4 1,-1.8 1,2.8 1,2.7 1,2.8 1,2.7 1,-.2 1,3 1,3 1,3 1,3 1,2.9 1,1 1,3.1 1,3 1,3.1 1,3.1 1,1 1,3 1,3 1,3 1,2.9 1,.1 1,2.8 1,2.8 1,2.8 1,2.7 1,-1.4 1,2.5 1,2.5 1,2.4 1,2.5 1,-3.2 1,2.2 1,2.2 1,2.1 1,2.2 1,2.2 1,-5.1 1,1.9 1,1.9 1,1.9 1,1.9 1,-6.2 1,1.7 1,1.6 1,1.5 1,1.5 1,-6.6 1,1.3 1,1.2 1,1 1,.9 1,-6.4 1,.7 1,.6 1,.4 1,.2 1,-6 1,.1 1,-.2 1,-.5 1,-.6 1,-.9 1,-5.3 1,-1 1,-1.3 1,-1.4 1,-1.7 1,-4.7 1,-1.8 1,-1.9 1,-2.1 1,-2.2 1,-4.3 1,-2.3 1,-2.3 1,-2.3 1,-2.3 1,-4.3 1,-2.2 1,-2.2 1,-2.1 1,-2 1,-4.6 1,-1.9 1,-1.7 1,-1.5 1,-1.3 1,-1.1 1,-5.2 1,-.9 1,-.7 1,-.5 1,-.2 1,-5.8 1,-.1 1,.1 1,.4 1,.5 1,-6.4 1,.7 1,.9 1,1 1,1.1 1,-6.6 1,1.3 1,1.4 1,1.5 1,1.6 1,-6.3 1,1.7 1,1.8 1,1.8 1,1.9 1,1.9 1,-5.3 1,2.2 1,2.1 1,2.1 1,2.1 1,-3.7 1,2.4 1,2.4 1,2.5 1,2.4 1,-2 1,2.7 1,2.8 1,2.7 1,2.7 1,-.3 1,2.9 1,3 1,3 1,2.9 1,.8 1,3.1 1,3.1 1,3 1,3.1 1,3.1 1,1 1,3 1,3 1,3 1,3.1 1,.2 1,2.8 1,2.8 1,2.8 1,2.8 1,-1.3 1,2.5 1,2.5 1,2.5 1,2.5 1,-3 1,2.2 1,2.2 1,2.2 1,2.2 1,-4.7 1,2 1,1.9 1,2 1,1.9 1,1.8 1,-6 1,1.7 1,1.6 1,1.5 1,1.5 1,-6.5 1,1.3 1,1.2 1,1.1 1,.9 1,-6.4 1,.8 1,.6 1,.4 1,.3 1,-6 1,0 1,-.1 1,-.4 1,-.6 1,-5.3 1,-.8 1,-1 1,-1.2 1,-1.4 1,-1.6 1,-4.8 1,-1.7 1,-1.9 1,-2.1 1,-2.1 1,-4.4 1,-2.2 1,-2.3 1,-2.3 1,-2.3 1,-4.3 1,-2.3 1,-2.2 1,-2.1 1,-2.1 1,-4.5 1,-1.9 1,-1.8 1,-1.5 1,-1.4 1,-5 1,-1.2 1,-1 1,-.8 1,-.5 1,-.3 1,-5.8 1,-.1 1,.1 1,.2 1,.5 1,-6.3 1,.7 1,.8 1,.9 1,1.2 1,-6.6 1,1.2 1,1.4 1,1.4 1,1.6 1,-6.4 1,1.7 1,1.8 1,1.8 1,1.8 1,-5.5 1,2 1,2.1 1,2.1 1,2.1 1,2.1 1,-3.9 1,2.4 1,2.4 1,2.4 1,2.3 1,-2 1,2.6 1,2.7 1,2.7 1,2.7 1,-.4 1,2.9 1,2.9 1,3 1,2.9 1,.7 1,3.1 1,3.1 1,3 1,3.1 1,1.1 1,3 1,3.1 1,3 1,3 1,3 1,.3 1,2.9 1,2.8 1,2.8 1,2.9 1,-1.2 1,2.6 1,2.5 1,2.6 1,2.5 1,-2.9 1,2.3 1,2.2 1,2.3 1,2.2 1,-4.6 1,2 1,2 1,1.9 1,2 1,-5.9 1,1.8 1,1.7 1,1.7 1,1.6 1,1.5 1,-6.6 1,1.4 1,1.2 1,1.2 1,1 1,-6.6 1,.9 1,.7 1,.5 1,.2 1,-6 1,.1 1,-.1 1,-.3 1,-.5 1,-5.5 1,-.7 1,-.9 1,-1.2 1,-1.3 1,-4.9 1,-1.5 1,-1.7 1,-1.9 1,-2 1,-2.1 1,-4.4 1,-2.2 1,-2.3 1,-2.3 1,-2.3 1,-4.3 1,-2.3 1,-2.2 1,-2.1 1,-2.1 1,-4.5 1,-1.9 1,-1.8 1,-1.6 1,-1.5 1,-4.9 1,-1.3 1,-1.1 1,-.8 1,-.6 1,-5.6 1,-.4 1,-.2 1,0 1,.2 1,.5 1,-6.3 1,.6 1,.8 1,.9 1,1.1 1,-6.6 1,1.2 1,1.3 1,1.5 1,1.5 1,-6.4 1,1.6 1,1.8 1,1.7 1,1.9 1,-5.7 1,2.1 1,2 1,2.1 1,2 1,-4.2 1,2.3 1,2.3 1,2.4 1,2.3 1,2.4 1,-2.3 1,2.7 1,2.6 1,2.7 1,2.6 1,-.5 1,2.9 1,2.9 1,2.9 1,2.9 1,.7 1,3 1,3.1 1,3.1 1,3 1,1.1 1,3 1,3.1 1,3 1,3.1 1,.5 1,2.9 1,2.9 1,2.8 1,2.9 1,2.8 1,-.9 1,2.5 1,2.6 1,2.6 1,2.6 1,-2.8 1,2.3 1,2.3 1,2.3 1,2.2 1,-4.4 1,2 1,2 1,2 1,2 1,-5.8 1,1.8" fill="none" stroke="#ff6929" stroke-width="1.9" stroke-linejoin="round" /></g><g clip-path="url(#c1b)"><path d="M799,311.3l1,1.9 1,.7 1,1.9 1,1.8 1,1.9 1,1.8 1,.8 1,1.8 1,1.8 1,1.9 1,1.9 1,1.9 1,.6 1,2 1,1.9 1,2.1 1,2.1 1,.2 1,2.1 1,2.1 1,2.1 1,2.2 1,-.4 1,2 1,2.1 1,2.1 1,2 1,-1.3 1,1.9 1,1.8 1,1.7 1,1.6 1,-2.2 1,1.3 1,1.2 1,1.2 1,.9 1,.8 1,-3.3 1,.5 1,.4 1,.2 1,0 1,-3.9 1,-.2 1,-.4 1,-.5 1,-.7 1,-4 1,-.8 1,-.9 1,-1 1,-1.2 1,-3.7 1,-1.1 1,-1.3 1,-1.3 1,-1.4 1,-3.1 1,-1.4 1,-1.4 1,-1.4 1,-1.4 1,-1.5 1,-2.6 1,-1.4 1,-1.5 1,-1.4 1,-1.4 1,-2.5 1,-1.4 1,-1.5 1,-1.4 1,-1.4 1,-2.6 1,-1.5 1,-1.4 1,-1.5 1,-1.3 1,-3.2 1,-1.4 1,-1.3 1,-1.3 1,-1.2 1,-3.7 1,-1.2 1,-1.1 1,-1 1,-.8 1,-.7 1,-4 1,-.6 1,-.4 1,-.3 1,-.1 1,-3.9 1,.2 1,.3 1,.4 1,.7 1,-3.3 1,1 1,1 1,1.2 1,1.4 1,-2.4 1,1.6 1,1.7 1,1.8 1,1.9 1,-1.4 1,2.1 1,2.1 1,2.1 1,2.1 1,2 1,-.3 1,2.2 1,2.1 1,2.1 1,2 1,.4 1,2 1,2 1,2 1,1.9 1,.7 1,1.8 1,1.9 1,1.8 1,1.9 1,.8 1,1.8 1,1.8 1,1.9 1,1.8 1,.8 1,1.8 1,1.9 1,2 1,2 1,2.1 1,.3 1,2.1 1,2.1 1,2.1 1,2.2 1,-.4 1,2.1 1,2.1 1,2.1 1,2.1 1,-1.2 1,1.8 1,1.9 1,1.7 1,1.7 1,-2.2 1,1.4 1,1.3 1,1.2 1,1 1,-3.1 1,.7 1,.6 1,.4 1,.3 1,0 1,-3.8 1,-.2 1,-.3 1,-.5 1,-.6 1,-4 1,-.8 1,-.9 1,-1 1,-1.1 1,-3.7 1,-1.2 1,-1.2 1,-1.3 1,-1.4 1,-3.2 1,-1.4 1,-1.3 1,-1.5 1,-1.4 1,-2.7 1,-1.4 1,-1.4 1,-1.5 1,-1.4 1,-1.4 1,-2.5 1,-1.4 1,-1.5 1,-1.4 1,-1.4 1,-2.6 1,-1.5 1,-1.4 1,-1.4 1,-1.4 1,-3.1 1,-1.4 1,-1.4 1,-1.3 1,-1.2 1,-3.6 1,-1.2 1,-1.1 1,-1 1,-.9 1,-4 1,-.8 1,-.6 1,-.5 1,-.3 1,-.2 1,-3.8 1,.1 1,.2 1,.4 1,.6 1,-3.3 1,.8 1,1 1,1.2 1,1.3 1,-2.5 1,1.6 1,1.7 1,1.7 1,1.8 1,-1.4 1,2 1,2.1 1,2.1 1,2 1,-.5 1,2.2 1,2.2 1,2.1 1,2.1 1,2 1,.3 1,2.1 1,2 1,1.9 1,2 1,.6 1,1.9 1,1.9 1,1.8 1,1.9 1,.8 1,1.8 1,1.8 1,1.8 1,1.9 1,.7 1,1.9 1,1.9 1,2 1,2 1,.4 1,2 1,2 1,2.1 1,2.2 1,2.2 1,-.3 1,2.1 1,2.1 1,2.1 1,2.1 1,-1.1 1,1.9 1,1.9 1,1.8 1,1.7 1,-2.1 1,1.4 1,1.4 1,1.2 1,1.1 1,-3.1 1,.8 1,.6 1,.5 1,.3 1,-3.7 1,.1 1,-.2 1,-.2 1,-.5 1,-.6 1,-3.9 1,-.8 1,-.9 1,-.9 1,-1.1 1,-3.8 1,-1.1 1,-1.3 1,-1.3 1,-1.3 1,-3.3 1,-1.3 1,-1.4 1,-1.4 1,-1.5 1,-2.7 1,-1.4 1,-1.4 1,-1.5 1,-1.4 1,-2.5 1,-1.4 1,-1.4 1,-1.5 1,-1.4 1,-1.4 1,-2.6 1,-1.4 1,-1.5 1,-1.4 1,-1.4 1,-3 1,-1.4 1,-1.4 1,-1.3 1,-1.2 1,-3.6 1,-1.2 1,-1.2 1,-1 1,-.9 1,-4 1,-.8 1,-.7 1,-.5 1,-.4 1,-3.9 1,-.2 1,0 1,.2 1,.4 1,.5 1,-3.4 1,.8 1,1 1,1.1 1,1.2 1,-2.5 1,1.5 1,1.6 1,1.7 1,1.8 1,-1.5 1,2 1,2 1,2.1 1,2 1,-.6 1,2.2 1,2.2 1,2.1 1,2.1 1,.1 1,2.2 1,2 1,2.1 1,1.9 1,2 1,.6 1,1.9 1,1.9 1,1.8 1,1.8 1,.9 1,1.8 1,1.8 1,1.8 1,1.9 1,.7 1,1.9 1,1.9 1,2 1,2 1,.4 1,2 1,2 1,2.1 1,2.2 1,-.1 1,2 1,2.1 1,2.2 1,2.1 1,2.1 1,-1 1,1.9 1,1.9 1,1.9 1,1.7 1,-2 1,1.5 1,1.4 1,1.3 1,1.1 1,-3 1,.9 1,.7 1,.5 1,.4 1,-3.7 1,.1 1,-.1 1,-.2 1,-.4 1,-3.9 1,-.6 1,-.7 1,-.8 1,-1 1,-1.1 1,-3.8 1,-1.1 1,-1.2 1,-1.3 1,-1.3 1,-3.3 1,-1.4 1,-1.4 1,-1.4 1,-1.4 1,-2.8 1,-1.4 1,-1.4 1,-1.5 1,-1.4 1,-2.5 1,-1.4 1,-1.4 1,-1.5 1,-1.4 1,-2.5 1,-1.5 1,-1.4 1,-1.5 1,-1.4 1,-1.3 1,-3 1,-1.5 1,-1.3 1,-1.3 1,-1.3 1,-3.5 1,-1.3 1,-1.1 1,-1.1 1,-.9 1,-4 1,-.8 1,-.7 1,-.6 1,-.4 1,-4 1,-.2 1,0 1,.1 1,.3 1,-3.6 1,.6 1,.7 1,.9 1,1.1 1,1.1 1,-2.5 1,1.4 1,1.6 1,1.6 1,1.8 1,-1.6 1,2 1,2 1,2 1,2 1,-.6 1,2.2 1,2.1 1,2.1 1,2.1 1,.1 1,2.1 1,2.1 1,2 1,2 1,.6 1,2 1,1.9 1,1.9 1,1.8 1,1.8 1,.8 1,1.9 1,1.8 1,1.8 1,1.9 1,.7 1,1.9 1,1.9 1,1.9 1,2 1,.5 1,2 1,2 1,2.1 1,2.2 1,-.1 1,2.1 1,2.1 1,2.1 1,2.2 1,-.9 1,2 1,2 1,1.9 1,1.9 1,1.8 1,-1.9 1,1.5 1,1.5 1,1.3 1,1.2 1,-2.9 1,.9 1,.8 1,.6 1,.4 1,-3.6 1,.1 1,0 1,-.2 1,-.3 1,-4 1,-.5 1,-.6 1,-.8 1,-1 1,-3.8 1,-1 1,-1.1 1,-1.2 1,-1.3 1,-1.4 1,-3.3 1,-1.3 1,-1.4 1,-1.4 1,-1.5 1,-2.8 1,-1.4 1,-1.4 1,-1.5 1,-1.4 1,-2.5 1,-1.4 1,-1.4 1,-1.5 1,-1.4 1,-2.5 1,-1.5 1,-1.4 1,-1.4 1,-1.4 1,-2.9 1,-1.5 1,-1.4 1,-1.4 1,-1.3 1,-1.3 1,-3.4 1,-1.3 1,-1.2 1,-1.1 1,-.9 1,-3.9 1,-.9 1,-.8 1,-.6 1,-.5 1,-3.9 1,-.3 1,-.1 1,.1 1,.2 1,-3.6 1,.5 1,.7 1,.8 1,1 1,-2.8 1,1.3 1,1.4 1,1.5 1,1.6 1,1.7 1,-1.7 1,1.9 1,2 1,2 1,2.1 1,-.8 1,2.2 1,2.1 1,2.2 1,2 1,.1 1,2.1 1,2.1 1,2 1,2 1,.5 1,2 1,2 1,1.8 1,1.9 1,.8 1,1.8 1,1.9 1,1.8 1,1.8 1,1.8 1,.8 1,1.9 1,1.9 1,1.9 1,2 1,.5 1,2 1,2 1,2.1 1,2.1 1,0 1,2.1 1,2.1 1,2.2 1,2.1 1,-.7 1,2 1,2 1,2 1,1.9 1,-1.7 1,1.7 1,1.6 1,1.5 1,1.4 1,1.2 1,-2.8 1,.9 1,.9 1,.6 1,.5 1,-3.6 1,.2 1,.1 1,-.1 1,-.3 1,-4 1,-.5 1,-.6 1,-.7 1,-.9 1,-3.9 1,-1 1,-1.1 1,-1.2 1,-1.2 1,-3.5 1,-1.3 1,-1.3 1,-1.3 1,-1.5 1,-1.4 1,-2.9 1,-1.4 1,-1.4 1,-1.4 1,-1.5 1,-2.5 1,-1.4 1,-1.5 1,-1.4 1,-1.4 1,-2.5 1,-1.5 1,-1.4 1,-1.4 1,-1.4 1,-2.9 1,-1.4 1,-1.4 1,-1.4 1,-1.3 1,-3.4 1,-1.4 1,-1.2 1,-1.2 1,-1.1 1,-1 1,-3.9 1,-.9 1,-.8 1,-.7 1,-.5 1,-4 1,-.3 1,-.1 1,0 1,.1 1,-3.6 1,.5 1,.6 1,.7 1,1 1,-2.9 1,1.2 1,1.3 1,1.5 1,1.6 1,-2 1,1.9 1,1.9 1,1.9 1,2 1,2 1,-.8 1,2.1 1,2.2 1,2.1 1,2.1 1,-.1 1,2.2 1,2.1 1,2 1,2 1,.5 1,2 1,1.9 1,1.9 1,1.9 1,.8 1,1.8 1,1.8 1,1.9 1,1.8 1,.8 1,1.8 1,1.9 1,1.8 1,2 1,1.9 1,.6 1,2 1,2 1,2.1 1,2.1 1,.1 1,2 1,2.2 1,2.1 1,2.2 1,-.7 1,2 1,2.1 1,2 1,1.9 1,-1.6 1,1.7 1,1.7 1,1.5 1,1.5 1,-2.6 1,1.1 1,1 1,.9 1,.7 1,.6 1,-3.6 1,.3 1,.1 1,0 1,-.3 1,-3.9 1,-.4 1,-.6 1,-.7 1,-.9 1,-3.9 1,-1 1,-1 1,-1.2 1,-1.2 1,-3.6 1,-1.2 1,-1.3 1,-1.4 1,-1.4 1,-3 1,-1.4 1,-1.4 1,-1.4 1,-1.4 1,-1.5 1,-2.5 1,-1.4 1,-1.5 1,-1.4 1,-1.4 1,-2.5 1,-1.4 1,-1.5 1,-1.4 1,-1.4 1,-2.8 1,-1.5 1,-1.4 1,-1.4 1,-1.3 1,-3.3 1,-1.4 1,-1.3 1,-1.2 1,-1.1 1,-3.8 1,-1.1 1,-.9 1,-.9 1,-.6 1,-.6 1,-4 1,-.3 1,-.3 1,0 1,.1 1,-3.7 1,.4 1,.6 1,.7 1,.8 1,-2.9 1,1.1 1,1.3 1,1.4 1,1.6 1,-2.1 1,1.8 1,1.9 1,1.9 1,2 1,-1.1 1,2.1 1,2.2 1,2.1 1,2.1 1,2.1 1,-.1 1,2.2 1,2.1 1,2 1,2 1,.5 1,2 1,1.9 1,1.9 1,1.9 1,.7 1,1.9 1,1.8 1,1.8 1,1.9 1,.8 1,1.8 1,1.8 1,1.9 1,1.9 1,.7 1,1.9 1,1.9 1,2.1 1,2 1,2.2 1,.1 1,2.1 1,2.1 1,2.1 1,2.2 1,-.6 1,2.1 1,2 1,2 1,2 1,-1.5 1,1.7 1,1.7 1,1.6 1,1.5 1,-2.5 1,1.2 1,1.1 1,.9 1,.8 1,-3.3 1,.4 1,.4 1,.1 1,0 1,-.1 1,-4 1,-.4 1,-.5 1,-.7 1,-.8 1,-3.9 1,-.9 1,-1.1 1,-1.1 1,-1.3 1,-3.5 1,-1.3 1,-1.3 1,-1.3 1,-1.4 1,-3.1 1,-1.3 1,-1.4 1,-1.5 1,-1.4 1,-2.6 1,-1.4 1,-1.4 1,-1.5 1,-1.4 1,-1.4 1,-2.5 1,-1.4 1,-1.5 1,-1.4 1,-1.4 1,-2.8 1,-1.4 1,-1.4 1,-1.4 1,-1.4 1,-3.2 1,-1.4 1,-1.3 1,-1.2 1,-1.2 1,-3.7 1,-1.1 1,-1 1,-.9 1,-.7 1,-4 1,-.6 1,-.4 1,-.3 1,-.1 1,.1 1,-3.7 1,.3 1,.5 1,.6 1,.8 1,-3 1,1.1 1,1.2 1,1.4 1,1.5 1,-2.1 1,1.7 1,1.8 1,1.9 1,1.9 1,-1.1 1,2.1 1,2.2 1,2.1 1,2.1 1,-.3 1,2.2 1,2.1 1,2.1 1,2.1 1,2 1,.4 1,2 1,2 1,1.9 1,1.9 1,.7 1,1.9 1,1.8 1,1.8 1,1.9 1,.8 1,1.8 1,1.8 1,1.9 1,1.9 1,.7 1,1.9 1,1.9 1,2 1,2.1 1,.2 1,2.1 1,2.1 1,2.1 1,2.2 1,2.1 1,-.5 1,2.1 1,2 1,2.1 1,2 1,-1.4 1,1.8 1,1.7 1,1.6 1,1.6 1,-2.5 1,1.3 1,1.1 1,1 1,.9 1,-3.3 1,.5 1,.4 1,.2 1,.1 1,-3.8 1,-.2 1,-.4 1,-.5 1,-.6 1,-.8 1,-3.9 1,-.9 1,-1 1,-1.2 1,-1.2 1,-3.6 1,-1.2 1,-1.3 1,-1.4 1,-1.4 1,-3 1,-1.4 1,-1.4 1,-1.4 1,-1.5 1,-2.6 1,-1.4 1,-1.4 1,-1.5 1,-1.4 1,-2.5 1,-1.4 1,-1.4 1,-1.5 1,-1.4 1,-1.4 1,-2.7 1,-1.5 1,-1.4 1,-1.4 1,-1.3 1,-3.2 1,-1.4 1,-1.3 1,-1.3 1,-1.1 1,-3.8 1,-1.1 1,-1 1,-.9 1,-.8 1,-3.9 1,-.7 1,-.4 1,-.4 1,-.1 1,-3.9 1,.1 1,.3 1,.4 1,.6 1,.8 1,-3.2 1,1.1 1,1.2 1,1.3 1,1.4 1,-2.2 1,1.7 1,1.8 1,1.8 1,1.9 1,-1.2 1,2.1 1,2.1 1,2.1 1,2.1 1,-.3 1,2.2" fill="none" stroke="#ffff11" stroke-width="1.7" stroke-linejoin="round" /><path d="M799,316.1l1,.5 1,-3.3 1,.5 1,.6 1,.7 1,-3.9 1,.7 1,.9 1,.9 1,1.1 1,-4.5 1,1.1 1,1.1 1,1.2 1,1.3 1,-4.7 1,1.2 1,1.4 1,1.3 1,-4.6 1,1.4 1,1.4 1,1.3 1,1.3 1,-4 1,1.4 1,1.3 1,1.3 1,-3.4 1,1.4 1,1.2 1,1.2 1,1.1 1,-2.4 1,1.1 1,1.1 1,1 1,.9 1,-1.5 1,.9 1,.9 1,.9 1,-1 1,.9 1,.8 1,.8 1,.8 1,-.7 1,.8 1,.8 1,.9 1,-.9 1,.8 1,.9 1,.9 1,.9 1,-1.3 1,.9 1,.9 1,1.1 1,1.1 1,-2.1 1,1 1,1.2 1,1.2 1,-2.9 1,1.1 1,1.2 1,1.3 1,1.4 1,-3.8 1,1.3 1,1.3 1,1.4 1,-4.3 1,1.3 1,1.3 1,1.4 1,1.3 1,-4.7 1,1.3 1,1.3 1,1.2 1,1.1 1,-4.6 1,1.1 1,1 1,1 1,-4.3 1,1 1,.8 1,.7 1,.6 1,-3.6 1,.6 1,.5 1,.4 1,-2.9 1,.3 1,.3 1,.1 1,.1 1,-2.2 1,0 1,0 1,0 1,-.2 1,-1.7 1,-.1 1,-.2 1,-.1 1,-1.7 1,-.1 1,-.2 1,-.1 1,0 1,-1.9 1,-.1 1,0 1,.1 1,-2.4 1,.1 1,.2 1,.3 1,.4 1,-3.1 1,.4 1,.5 1,.7 1,.7 1,-3.9 1,.8 1,.9 1,.9 1,-4.3 1,.9 1,1.1 1,1.2 1,1.2 1,-4.7 1,1.2 1,1.3 1,1.3 1,-4.6 1,1.3 1,1.4 1,1.3 1,1.4 1,-4.2 1,1.3 1,1.4 1,1.3 1,1.2 1,-3.4 1,1.3 1,1.2 1,1.2 1,-2.7 1,1.2 1,1.1 1,1.1 1,.9 1,-1.7 1,1 1,1 1,.8 1,-1.1 1,.9 1,.9 1,.8 1,.8 1,-.7 1,.8 1,.8 1,.8 1,.8 1,-.7 1,.8 1,.8 1,.9 1,-1.1 1,.8 1,.9 1,1 1,1.1 1,-1.9 1,1 1,1.1 1,1.1 1,-2.6 1,1.1 1,1.2 1,1.2 1,1.4 1,-3.6 1,1.2 1,1.4 1,1.3 1,1.4 1,-4.3 1,1.4 1,1.3 1,1.4 1,-4.6 1,1.3 1,1.3 1,1.2 1,1.2 1,-4.6 1,1.1 1,1.1 1,1.1 1,-4.4 1,1 1,.9 1,.8 1,.7 1,-3.7 1,.6 1,.6 1,.5 1,.3 1,-3 1,.4 1,.2 1,.2 1,-2.4 1,.1 1,.1 1,0 1,-.1 1,-1.9 1,-.1 1,-.1 1,-.1 1,-1.7 1,-.1 1,-.2 1,-.1 1,-.1 1,-1.8 1,-.1 1,-.1 1,.1 1,.1 1,-2.3 1,.1 1,.2 1,.3 1,-2.9 1,.3 1,.4 1,.5 1,.7 1,-3.7 1,.7 1,.7 1,.9 1,-4.2 1,.9 1,1 1,1 1,1.2 1,-4.7 1,1.2 1,1.3 1,1.2 1,1.3 1,-4.6 1,1.3 1,1.4 1,1.3 1,-4.4 1,1.4 1,1.4 1,1.3 1,1.3 1,-3.7 1,1.4 1,1.2 1,1.2 1,-2.9 1,1.3 1,1.2 1,1.1 1,1 1,-2 1,1.1 1,1 1,.9 1,.9 1,-1.3 1,1 1,.8 1,.8 1,-.8 1,.9 1,.8 1,.8 1,.8 1,-.7 1,.8 1,.8 1,.8 1,-1 1,.9 1,.8 1,1 1,1 1,-1.7 1,1 1,1 1,1.1 1,1.2 1,-2.5 1,1.1 1,1.2 1,1.3 1,-3.3 1,1.2 1,1.3 1,1.3 1,1.4 1,-4.1 1,1.3 1,1.3 1,1.4 1,-4.5 1,1.3 1,1.3 1,1.3 1,1.3 1,-4.7 1,1.2 1,1.2 1,1.1 1,1 1,-4.4 1,1 1,.9 1,.8 1,-4 1,.8 1,.7 1,.6 1,.4 1,-3.2 1,.4 1,.4 1,.2 1,-2.6 1,.3 1,.1 1,0 1,0 1,-2 1,0 1,-.1 1,-.1 1,-.2 1,-1.6 1,-.2 1,-.1 1,-.2 1,-1.7 1,-.1 1,-.1 1,0 1,0 1,-2.1 1,0 1,.1 1,.2 1,-2.7 1,.2 1,.4 1,.4 1,.5 1,-3.4 1,.5 1,.7 1,.8 1,.8 1,-4.1 1,.9 1,1 1,1.1 1,-4.6 1,1.1 1,1.2 1,1.2 1,1.3 1,-4.7 1,1.3 1,1.3 1,1.4 1,-4.5 1,1.4 1,1.3 1,1.4 1,1.3 1,-3.9 1,1.4 1,1.3 1,1.2 1,1.2 1,-3 1,1.2 1,1.2 1,1 1,-2.2 1,1.1 1,1.1 1,1 1,.9 1,-1.4 1,.9 1,.9 1,.9 1,-1 1,.9 1,.8 1,.8 1,.8 1,-.7 1,.8 1,.8 1,.9 1,.8 1,-.9 1,.8 1,.9 1,1 1,-1.4 1,.9 1,.9 1,1.1 1,1.1 1,-2.3 1,1.1 1,1.2 1,1.2 1,-3.1 1,1.2 1,1.2 1,1.3 1,1.4 1,-3.9 1,1.3 1,1.3 1,1.4 1,1.4 1,-4.5 1,1.3 1,1.3 1,1.4 1,-4.7 1,1.2 1,1.3 1,1.1 1,1.1 1,-4.5 1,1.1 1,1 1,.9 1,-4.2 1,.9 1,.8 1,.7 1,.5 1,-3.4 1,.5 1,.5 1,.3 1,.2 1,-2.7 1,.2 1,.2 1,0 1,-2.1 1,0 1,0 1,-.1 1,-.1 1,-1.8 1,-.1 1,-.1 1,-.2 1,-1.6 1,-.2 1,-.1 1,-.1 1,-.1 1,-1.9 1,-.1 1,.1 1,.1 1,.2 1,-2.6 1,.3 1,.3 1,.4 1,-3.2 1,.4 1,.6 1,.7 1,.8 1,-4 1,.8 1,.9 1,1 1,-4.5 1,1.1 1,1.1 1,1.1 1,1.3 1,-4.7 1,1.2 1,1.3 1,1.4 1,1.3 1,-4.6 1,1.4 1,1.4 1,1.3 1,-4.1 1,1.4 1,1.3 1,1.3 1,1.3 1,-3.3 1,1.2 1,1.3 1,1.1 1,-2.5 1,1.2 1,1.1 1,1 1,1 1,-1.6 1,1 1,.9 1,.9 1,.8 1,-1 1,.9 1,.8 1,.8 1,-.7 1,.8 1,.8 1,.8 1,.9 1,-.9 1,.9 1,.8 1,.9 1,-1.2 1,.8 1,1 1,1 1,1 1,-2 1,1 1,1.1 1,1.2 1,1.3 1,-3 1,1.2 1,1.3 1,1.3 1,-3.7 1,1.2 1,1.4 1,1.3 1,1.4 1,-4.4 1,1.4 1,1.3 1,1.4 1,-4.7 1,1.3 1,1.3 1,1.2 1,1.2 1,-4.6 1,1.1 1,1.1 1,1 1,.9 1,-4.3 1,.9 1,.8 1,.6 1,-3.6 1,.7 1,.5 1,.4 1,.3 1,-2.8 1,.3 1,.2 1,.1 1,-2.3 1,.1 1,0 1,0 1,-.1 1,-1.8 1,-.1 1,-.1 1,-.2 1,-.1 1,-1.7 1,-.1 1,-.2 1,0 1,-1.9 1,-.1 1,0 1,0 1,.2 1,-2.4 1,.1 1,.2 1,.4 1,-3 1,.3 1,.5 1,.5 1,.7 1,-3.8 1,.7 1,.9 1,.9 1,1 1,-4.4 1,1 1,1.1 1,1.2 1,-4.7 1,1.2 1,1.3 1,1.3 1,1.3 1,-4.6 1,1.3 1,1.4 1,1.3 1,-4.3 1,1.5 1,1.3 1,1.4 1,1.2 1,-3.5 1,1.3 1,1.3 1,1.2 1,1.1 1,-2.7 1,1.2 1,1.1 1,1 1,-1.8 1,1 1,1 1,.9 1,.9 1,-1.1 1,.9 1,.8 1,.8 1,-.7 1,.8 1,.8 1,.8 1,.8 1,-.7 1,.8 1,.8 1,.8 1,1 1,-1.2 1,.9 1,.9 1,1 1,-1.7 1,.9 1,1.1 1,1.1 1,1.2 1,-2.7 1,1.1 1,1.3 1,1.3 1,-3.5 1,1.2 1,1.3 1,1.3 1,1.4 1,-4.2 1,1.3 1,1.4 1,1.3 1,1.4 1,-4.7 1,1.3 1,1.3 1,1.3 1,-4.7 1,1.2 1,1.1 1,1.1 1,1 1,-4.4 1,1 1,.9 1,.7 1,-3.8 1,.7 1,.7 1,.5 1,.4 1,-3.1 1,.4 1,.3 1,.2 1,.1 1,-2.3 1,0 1,.1 1,-.1 1,-1.9 1,0 1,-.1 1,-.2 1,-.1 1,-1.7 1,-.1 1,-.2 1,-.1 1,-1.8 1,-.1 1,-.1 1,0 1,.1 1,-2.2 1,0 1,.2 1,.2 1,.4 1,-3 1,.4 1,.5 1,.6 1,-3.6 1,.6 1,.7 1,.8 1,.9 1,-4.2 1,.9 1,1 1,1.1 1,-4.6 1,1.2 1,1.2 1,1.2 1,1.3 1,-4.7 1,1.4 1,1.3 1,1.4 1,1.3 1,-4.4 1,1.4 1,1.4 1,1.3 1,-3.8 1,1.4 1,1.3 1,1.2 1,1.2 1,-2.9 1,1.2 1,1.2 1,1 1,-2.1 1,1.2 1,1 1,1 1,.9 1,-1.3 1,.9 1,.9 1,.8 1,.8 1,-.8 1,.8 1,.9 1,.8 1,-.8 1,.8 1,.9 1,.8 1,.9 1,-1 1,.8 1,.9 1,1 1,-1.6 1,.9 1,1 1,1.1 1,1.1 1,-2.4 1,1.1 1,1.1 1,1.3 1,1.3 1,-3.4 1,1.3 1,1.3 1,1.4 1,-4.1 1,1.3 1,1.4 1,1.3 1,1.4 1,-4.5 1,1.3 1,1.3 1,1.3 1,-4.7 1,1.2 1,1.2 1,1.2 1,1 1,-4.4 1,1 1,1 1,.8 1,.8 1,-4 1,.8 1,.6 1,.5 1,-3.3 1,.5 1,.4 1,.3 1,.2 1,-2.6 1,.2 1,.1 1,0 1,-2 1,0 1,-.1 1,-.1 1,-.1 1,-1.7 1,-.1 1,-.2 1,-.1 1,-.1 1,-1.8 1,-.1 1,-.1 1,0 1,-2 1,0 1,0 1,.2 1,.2 1,-2.7 1,.3 1,.4 1,.4 1,-3.3 1,.5 1,.6 1,.7 1,.8 1,-4.1 1,.9 1,.9 1,1 1,1.2 1,-4.6 1,1.1 1,1.2 1,1.3 1,-4.7 1,1.3 1,1.3 1,1.3 1,1.4 1,-4.5 1,1.4 1,1.3 1,1.4 1,-4 1,1.4 1,1.3 1,1.3 1,1.2 1,-3.1 1,1.2 1,1.2 1,1.2 1,1 1,-2.2 1,1.1 1,1 1,.9 1,-1.4 1,.9 1,1 1,.8 1,.9 1,-.9 1,.8 1,.8 1,.8 1,-.7 1,.8 1,.8 1,.8 1,.9 1,-.9 1,.8 1,.9 1,.9 1,1 1,-1.5 1,1 1,1 1,1.1 1,-2.2 1,1 1,1.1 1,1.2 1,1.3 1,-3.1 1,1.2 1,1.3 1,1.3 1,-3.9 1,1.3 1,1.4 1,1.3 1,1.4 1,-4.5 1,1.4 1,1.3 1,1.3 1,1.3 1,-4.7 1,1.3 1,1.2 1,1.1 1,-4.6 1,1.2 1,1 1,1 1,.8 1,-4.1 1,.8 1,.8 1,.6 1,-3.5 1,.6 1,.5 1,.3 1,.3 1,-2.7 1,.2 1,.2 1,.1 1,0 1,-2.1 1,0 1,-.1 1,-.1 1,-1.7 1,-.1 1,-.2 1,-.1 1,-.2 1,-1.6 1,-.2 1,-.1 1,-.1 1,-1.9 1,-.1 1,0 1,.1 1,.2 1,-2.5 1,.1 1,.3 1,.4 1,.5 1,-3.3 1,.5 1,.6 1,.8 1,-3.9 1,.7 1,.9 1,.9 1,1 1,-4.4 1,1 1,1.2 1,1.2 1,-4.7 1,1.2 1,1.3 1,1.3 1,1.3 1,-4.5 1,1.3 1,1.4 1,1.4 1,1.3 1,-4.1 1,1.4 1,1.3 1,1.2 1,-3.4 1,1.4 1,1.2 1,1.2 1,1.1 1,-2.5 1,1.2 1,1 1,1 1,-1.7 1,1.1 1,.9 1,1 1,.8 1,-1 1,.9 1,.8 1,.8 1,.8 1,-.7 1,.8 1,.8 1,.8 1,-.8 1,.8 1,.9 1,.8 1,1 1,-1.3 1,.9 1,1 1,1 1,-1.9 1,.9 1,1.1 1,1.1 1,1.3 1,-2.9 1,1.2 1,1.2 1,1.3 1,1.4 1,-3.8 1,1.3 1,1.4 1,1.3 1,-4.3 1,1.3 1,1.4 1,1.3 1,1.4 1,-4.7 1,1.3 1,1.2 1,1.2 1,-4.6 1,1.2 1,1.1 1,1 1,1 1,-4.3 1,.9 1,.8 1,.8 1,.6 1,-3.6 1,.6 1,.4 1,.4 1,-2.9 1,.3 1,.3 1,.1 1,.1 1,-2.2 1,0 1,0 1,-.1 1,-1.8 1,-.1 1,-.1 1,-.1 1,-.2 1,-1.6 1,-.2 1,-.1 1,-.1 1,-.1 1,-1.9 1,0" fill="none" stroke="#139fff" stroke-width="1.6" stroke-linejoin="round" /><path d="M799,329.5l1,.7 1,-3.3 1,.6 1,.5 1,.5 1,-2.8 1,.5 1,.3 1,.2 1,.2 1,-2.1 1,.1 1,.1 1,0 1,-.1 1,-1.6 1,0 1,-.1 1,-.1 1,-1.4 1,-.2 1,-.1 1,-.1 1,-.1 1,-1.5 1,-.1 1,0 1,0 1,-1.8 1,0 1,0 1,.2 1,.2 1,-2.3 1,.2 1,.3 1,.4 1,.5 1,-2.9 1,.5 1,.6 1,.6 1,-3.4 1,.7 1,.8 1,.8 1,1 1,-3.9 1,1 1,1 1,1 1,-3.9 1,1.1 1,1.1 1,1.1 1,1.1 1,-3.7 1,1.2 1,1.1 1,1.1 1,1.1 1,-3.2 1,1.1 1,1.1 1,1 1,-2.6 1,1.1 1,1 1,.9 1,.9 1,-1.8 1,.9 1,.8 1,.8 1,-1.2 1,.8 1,.8 1,.8 1,.6 1,-.7 1,.7 1,.7 1,.7 1,.7 1,-.6 1,.6 1,.7 1,.7 1,-.7 1,.7 1,.7 1,.8 1,.8 1,-1.3 1,.8 1,.9 1,.9 1,-1.9 1,.9 1,.9 1,1 1,1.1 1,-2.6 1,1 1,1 1,1.1 1,1.2 1,-3.3 1,1.1 1,1.1 1,1.2 1,-3.7 1,1.1 1,1.1 1,1.1 1,1.1 1,-4 1,1.1 1,1 1,.9 1,-3.8 1,1 1,.8 1,.8 1,.7 1,-3.4 1,.7 1,.6 1,.6 1,.4 1,-2.8 1,.4 1,.3 1,.2 1,-2.3 1,.3 1,.1 1,.1 1,0 1,-1.8 1,0 1,0 1,-.1 1,-1.5 1,-.1 1,-.1 1,-.1 1,-.1 1,-1.4 1,-.2 1,-.1 1,0 1,0 1,-1.7 1,0 1,0 1,.2 1,-2.1 1,.1 1,.2 1,.3 1,.4 1,-2.7 1,.4 1,.5 1,.6 1,-3.3 1,.6 1,.7 1,.8 1,.9 1,-3.8 1,.9 1,1 1,1 1,1 1,-3.9 1,1.1 1,1.1 1,1.1 1,-3.9 1,1.2 1,1.1 1,1.2 1,1.1 1,-3.4 1,1.1 1,1.1 1,1.1 1,-2.8 1,1.1 1,1 1,1 1,.9 1,-2 1,1 1,.9 1,.8 1,.8 1,-1.3 1,.8 1,.8 1,.7 1,-.9 1,.8 1,.7 1,.7 1,.6 1,-.5 1,.6 1,.7 1,.7 1,-.7 1,.7 1,.7 1,.7 1,.8 1,-1.1 1,.8 1,.8 1,.8 1,1 1,-1.8 1,.9 1,1 1,1 1,-2.4 1,.9 1,1.1 1,1 1,1.2 1,-3.2 1,1.1 1,1.1 1,1.2 1,-3.6 1,1.1 1,1.1 1,1.1 1,1.1 1,-3.9 1,1.1 1,1.1 1,1 1,.9 1,-3.8 1,.9 1,.9 1,.8 1,-3.6 1,.8 1,.7 1,.6 1,.5 1,-3 1,.5 1,.4 1,.3 1,-2.4 1,.3 1,.2 1,.1 1,.1 1,-1.9 1,.1 1,0 1,-.1 1,-.1 1,-1.5 1,-.1 1,-.1 1,-.1 1,-1.4 1,-.1 1,-.2 1,-.1 1,0 1,-1.6 1,0 1,0 1,0 1,-1.9 1,0 1,.2 1,.2 1,.3 1,-2.5 1,.3 1,.4 1,.5 1,.6 1,-3.2 1,.6 1,.7 1,.8 1,-3.6 1,.8 1,.9 1,.9 1,1 1,-3.9 1,1.1 1,1 1,1.1 1,-3.9 1,1.2 1,1.1 1,1.1 1,1.1 1,-3.5 1,1.2 1,1.1 1,1.1 1,1 1,-2.9 1,1.1 1,1 1,1 1,-2.2 1,1 1,.9 1,.9 1,.8 1,-1.5 1,.9 1,.8 1,.7 1,-.9 1,.7 1,.8 1,.7 1,.7 1,-.7 1,.7 1,.7 1,.7 1,.7 1,-.7 1,.7 1,.7 1,.7 1,-.9 1,.7 1,.8 1,.8 1,.9 1,-1.5 1,.8 1,.9 1,1 1,-2.2 1,.9 1,1 1,1 1,1.1 1,-2.9 1,1 1,1.1 1,1.2 1,1.1 1,-3.5 1,1.1 1,1.1 1,1.2 1,-3.9 1,1.1 1,1.1 1,1 1,1.1 1,-3.9 1,.9 1,1 1,.8 1,-3.6 1,.8 1,.8 1,.7 1,.6 1,-3.2 1,.6 1,.5 1,.4 1,.3 1,-2.6 1,.3 1,.2 1,.2 1,-2 1,.1 1,0 1,0 1,-.1 1,-1.5 1,-.1 1,-.1 1,-.1 1,-1.4 1,-.1 1,-.2 1,-.1 1,-.1 1,-1.5 1,-.1 1,0 1,0 1,.1 1,-1.9 1,.1 1,.1 1,.3 1,-2.4 1,.2 1,.3 1,.5 1,.5 1,-3 1,.5 1,.6 1,.7 1,-3.5 1,.8 1,.8 1,.9 1,.9 1,-3.9 1,1 1,1 1,1.1 1,1.1 1,-3.9 1,1.1 1,1.1 1,1.1 1,-3.6 1,1.2 1,1.1 1,1.1 1,1.1 1,-3.1 1,1.1 1,1.1 1,1 1,-2.5 1,1.1 1,1 1,.9 1,.9 1,-1.7 1,.9 1,.8 1,.8 1,.7 1,-1 1,.8 1,.7 1,.7 1,-.7 1,.7 1,.7 1,.6 1,.7 1,-.6 1,.7 1,.7 1,.7 1,-.8 1,.7 1,.7 1,.8 1,.8 1,-1.3 1,.8 1,.8 1,.9 1,1 1,-2 1,.9 1,1 1,1.1 1,-2.8 1,1 1,1.1 1,1.1 1,1.2 1,-3.4 1,1.1 1,1.1 1,1.1 1,-3.7 1,1.1 1,1.1 1,1.1 1,1 1,-3.9 1,1 1,1 1,.9 1,.9 1,-3.7 1,.8 1,.8 1,.7 1,-3.4 1,.7 1,.6 1,.5 1,.3 1,-2.7 1,.4 1,.3 1,.2 1,-2.2 1,.2 1,.1 1,.1 1,0 1,-1.7 1,0 1,-.1 1,-.1 1,-.1 1,-1.4 1,-.2 1,-.1 1,-.1 1,-1.4 1,-.1 1,-.1 1,-.1 1,0 1,-1.7 1,0 1,.1 1,.1 1,-2.2 1,.2 1,.2 1,.4 1,.4 1,-2.8 1,.4 1,.6 1,.6 1,.7 1,-3.4 1,.7 1,.8 1,.9 1,-3.8 1,.9 1,1 1,1 1,1.1 1,-3.9 1,1 1,1.2 1,1.1 1,-3.8 1,1.2 1,1.1 1,1.1 1,1.1 1,-3.2 1,1.1 1,1.1 1,1.1 1,.9 1,-2.5 1,1 1,1 1,.9 1,-1.9 1,.9 1,.9 1,.9 1,.7 1,-1.2 1,.8 1,.8 1,.7 1,-.8 1,.8 1,.7 1,.6 1,.7 1,-.6 1,.7 1,.7 1,.7 1,.7 1,-.8 1,.7 1,.8 1,.8 1,-1.2 1,.7 1,.9 1,.8 1,1 1,-1.9 1,.9 1,1 1,1 1,-2.5 1,.9 1,1.1 1,1 1,1.2 1,-3.3 1,1.1 1,1.1 1,1.2 1,1.2 1,-3.8 1,1.1 1,1.1 1,1.1 1,-3.9 1,1.1 1,1 1,1 1,.9 1,-3.8 1,.9 1,.9 1,.7 1,-3.5 1,.8 1,.6 1,.6 1,.5 1,-2.9 1,.5 1,.3 1,.3 1,.2 1,-2.3 1,.2 1,.1 1,.1 1,-1.8 1,0 1,0 1,-.1 1,-.1 1,-1.4 1,-.2 1,-.1 1,-.1 1,-1.4 1,-.1 1,-.1 1,-.1 1,-.1 1,-1.6 1,0 1,0 1,.1 1,.1 1,-2.1 1,.2 1,.2 1,.4 1,-2.7 1,.4 1,.4 1,.6 1,.6 1,-3.3 1,.7 1,.7 1,.9 1,-3.7 1,.8 1,.9 1,1 1,1 1,-3.9 1,1 1,1.1 1,1.1 1,1.1 1,-3.8 1,1.2 1,1.1 1,1.1 1,-3.4 1,1.1 1,1.2 1,1 1,1.1 1,-2.8 1,1.1 1,1 1,.9 1,-2.1 1,1 1,1 1,.8 1,.8 1,-1.3 1,.8 1,.8 1,.7 1,.7 1,-.8 1,.7 1,.7 1,.7 1,-.6 1,.7 1,.7 1,.6 1,.7 1,-.6 1,.6 1,.8 1,.7 1,-1 1,.7 1,.8 1,.8 1,.9 1,-1.6 1,.8 1,.9 1,1 1,1 1,-2.4 1,1 1,1.1 1,1.1 1,-3.1 1,1.1 1,1.1 1,1.1 1,1.2 1,-3.7 1,1.1 1,1.2 1,1.1 1,-3.9 1,1.1 1,1 1,1.1 1,1 1,-3.9 1,1 1,.9 1,.8 1,.8 1,-3.6 1,.8 1,.6 1,.6 1,-3.1 1,.6 1,.4 1,.4 1,.2 1,-2.4 1,.3 1,.1 1,.1 1,-1.9 1,.1 1,0 1,0 1,-.1 1,-1.5 1,-.1 1,-.1 1,-.1 1,-.1 1,-1.4 1,-.1 1,-.2 1,0 1,-1.6 1,0 1,-.1 1,0 1,.1 1,-1.9 1,.1 1,.2 1,.2 1,-2.5 1,.3 1,.4 1,.4 1,.6 1,-3.1 1,.5 1,.7 1,.7 1,.9 1,-3.7 1,.9 1,.9 1,.9 1,-3.8 1,1 1,1 1,1.1 1,1.1 1,-3.9 1,1.1 1,1.2 1,1.1 1,-3.6 1,1.2 1,1.1 1,1.1 1,1.1 1,-3 1,1.1 1,1.1 1,1 1,.9 1,-2.2 1,1 1,.9 1,.9 1,-1.6 1,.9 1,.8 1,.8 1,.7 1,-.9 1,.7 1,.7 1,.7 1,-.6 1,.7 1,.6 1,.7 1,.7 1,-.6 1,.6 1,.7 1,.8 1,.7 1,-.9 1,.7 1,.8 1,.9 1,-1.5 1,.8 1,.9 1,.9 1,1 1,-2.2 1,.9 1,1 1,1.1 1,-2.8 1,1 1,1.1 1,1.1 1,1.1 1,-3.5 1,1.1 1,1.2 1,1.1 1,1.1 1,-3.8 1,1.1 1,1 1,1.1 1,-3.9 1,1 1,.9 1,.9 1,.9 1,-3.7 1,.8 1,.7 1,.7 1,-3.2 1,.6 1,.5 1,.5 1,.3 1,-2.6 1,.4 1,.2 1,.2 1,.1 1,-2 1,.1 1,0 1,-.1 1,-1.5 1,-.1 1,-.1 1,-.1 1,-.1 1,-1.4 1,-.1 1,-.2 1,-.1 1,-1.4 1,-.1 1,-.1 1,0 1,0 1,-1.8 1,0 1,.1 1,.2 1,.3 1,-2.4 1,.3 1,.3 1,.5 1,-3 1,.5 1,.6 1,.7 1,.7 1,-3.5 1,.8 1,.8 1,.9 1,-3.8 1,.9 1,1 1,1.1 1,1 1,-3.9 1,1.1 1,1.2 1,1.1 1,1.1 1,-3.6 1,1.1 1,1.1 1,1.1 1,-3.1 1,1.1 1,1.1 1,1 1,1 1,-2.4 1,1 1,1 1,.9 1,-1.8 1,.9 1,.9 1,.8 1,.8 1,-1.1 1,.8 1,.7 1,.7 1,.7 1,-.7 1,.7 1,.7 1,.7 1,-.6 1,.7 1,.6 1,.7 1,.8 1,-.9 1,.7 1,.8 1,.8 1,-1.3 1,.8 1,.8 1,.9 1,1 1,-2 1,.9 1,.9 1,1.1 1,1.1 1,-2.8 1,1 1,1.1 1,1.2 1,-3.4 1,1.1 1,1.1 1,1.2 1,1.1 1,-3.8 1,1.1 1,1.1 1,1.1 1,-3.9 1,1 1,1 1,1 1,.9 1,-3.8 1,.9 1,.8 1,.8 1,.6 1,-3.3 1,.6 1,.5 1,.5 1,-2.8 1,.4 1,.4 1,.2 1,.2 1,-2.2 1,.2 1,0 1,.1 1,-1.7 1,0 1,-.1 1,-.1 1,-.1 1,-1.4 1,-.1 1,-.2 1,-.1 1,-.1 1,-1.4 1,-.1 1,-.1 1,0 1,-1.7 1,0 1,0 1,.1 1,.2 1,-2.2 1,.2 1,.3 1,.4 1,-2.8 1,.4 1,.5 1,.6 1,.6 1,-3.4 1,.7 1,.8 1,.9 1,.9 1,-3.8 1,.9 1,1 1,1.1 1,-4 1,1.1 1,1.1 1,1.1 1,1.1 1,-3.7 1,1.1 1,1.2 1,1.1 1,-3.4 1,1.2 1,1.1 1,1.1 1,1 1,-2.6 1,1 1,1.1 1,.9 1,.9 1,-1.9 1,.9 1,.9 1,.8 1,-1.3 1,.8 1,.8 1,.7 1,.7 1,-.7 1,.7 1,.7 1,.7 1,-.6 1,.6 1,.7 1,.7 1,.7 1,-.7 1,.7 1,.7 1,.8 1,.8 1,-1.2 1,.8 1,.8 1,.9 1,-1.8 1,.9 1,.9 1,1 1,1.1 1,-2.6 1,1 1,1.1 1,1.1 1,-3.2 1,1.1 1,1.1 1,1.1 1,1.2 1,-3.7 1,1.1 1,1.1 1,1.1 1,1.1 1,-3.9 1,1" fill="none" stroke="#ff6929" stroke-width="1.6" stroke-linejoin="round" /><path d="M799,326.8l.5,-.3 .5,-.3 .5,-.4 .5,-3.6 .5,-.3 .5,-.3 .5,-.3 .5,-.4 .5,-.3 .5,-.3 .5,-.3 .5,-.3 .5,-3.7 .5,-.3 .5,-.3 .5,-.3 .5,-.3 .5,-.2 .5,-.3 .5,-.1 .5,-.2 .5,-4.7 .5,-.2 .5,-.2 .5,-.2 .5,-.1 .5,0 .5,0 .5,0 .5,.1 .5,-6.3 .5,0 .5,0 .5,.1 .5,.1 .5,.2 .5,.3 .5,.3 .5,-7.9 .5,.2 .5,.3 .5,.3 .5,.4 .5,.5 .5,.5 .5,.6 .5,.7 .5,-9.7 .5,.6 .5,.6 .5,.7 .5,.8 .5,.9 .5,.9 .5,.9 .5,1.1 .5,-11 .5,1 .5,1 .5,1.1 .5,1.2 .5,1.2 .5,1.2 .5,1.3 .5,1.4 .5,-11.6 .5,1.4 .5,1.4 .5,1.4 .5,1.5 .5,1.5 .5,1.5 .5,1.6 .5,1.5 .5,-11.2 .5,1.6 .5,1.7 .5,1.7 .5,1.6 .5,1.7 .5,1.7 .5,1.6 .5,-10.2 .5,1.8 .5,1.7 .5,1.8 .5,1.8 .5,1.7 .5,1.7 .5,1.7 .5,1.6 .5,-8.6 .5,1.8 .5,1.8 .5,1.7 .5,1.7 .5,1.6 .5,1.6 .5,1.6 .5,1.5 .5,-6.6 .5,1.6 .5,1.7 .5,1.5 .5,1.5 .5,1.5 .5,1.4 .5,1.4 .5,1.3 .5,-4.7 .5,1.4 .5,1.4 .5,1.4 .5,1.3 .5,1.3 .5,1.2 .5,1.2 .5,1.1 .5,-3.2 .5,1.2 .5,1.2 .5,1.2 .5,1.1 .5,1.1 .5,1.1 .5,1.1 .5,-2.4 .5,1.1 .5,1.1 .5,1.1 .5,1 .5,1.1 .5,1 .5,1.1 .5,1.1 .5,-2.3 .5,1.1 .5,1.1 .5,1 .5,1.1 .5,1.1 .5,1.2 .5,1.2 .5,1.2 .5,-3 .5,1.1 .5,1.2 .5,1.2 .5,1.2 .5,1.3 .5,1.3 .5,1.4 .5,1.4 .5,-4.4 .5,1.3 .5,1.4 .5,1.4 .5,1.4 .5,1.5 .5,1.6 .5,1.6 .5,1.6 .5,-6.3 .5,1.5 .5,1.6 .5,1.6 .5,1.6 .5,1.7 .5,1.7 .5,1.8 .5,-8.1 .5,1.6 .5,1.7 .5,1.7 .5,1.7 .5,1.7 .5,1.8 .5,1.8 .5,1.8 .5,-9.9 .5,1.7 .5,1.7 .5,1.7 .5,1.7 .5,1.7 .5,1.7 .5,1.7 .5,1.7 .5,-11.1 .5,1.5 .5,1.6 .5,1.6 .5,1.5 .5,1.6 .5,1.4 .5,1.5 .5,1.4 .5,-11.5 .5,1.4 .5,1.3 .5,1.3 .5,1.3 .5,1.2 .5,1.1 .5,1.1 .5,1.1 .5,-11.2 .5,1.1 .5,1 .5,1 .5,.9 .5,.8 .5,.8 .5,.7 .5,-10.1 .5,.8 .5,.7 .5,.6 .5,.6 .5,.5 .5,.5 .5,.4 .5,.3 .5,-8.5 .5,.5 .5,.3 .5,.3 .5,.3 .5,.1 .5,.1 .5,.1 .5,0 .5,-6.6 .5,.1 .5,.1 .5,0 .5,0 .5,-.1 .5,-.2 .5,-.1 .5,-.3 .5,-4.9 .5,-.1 .5,-.2 .5,-.2 .5,-.2 .5,-.3 .5,-.2 .5,-.4 .5,-.3 .5,-3.8 .5,-.3 .5,-.3 .5,-.3 .5,-.3 .5,-.3 .5,-.4 .5,-.3 .5,-3.6 .5,-.3 .5,-.3 .5,-.3 .5,-.3 .5,-.3 .5,-.3 .5,-.3 .5,-.2 .5,-4.1 .5,-.3 .5,-.3 .5,-.2 .5,-.2 .5,-.2 .5,-.1 .5,-.1 .5,-.1 .5,-5.4 .5,-.1 .5,-.1 .5,-.1 .5,0 .5,0 .5,.1 .5,.2 .5,.2 .5,-7.1 .5,.1 .5,.1 .5,.2 .5,.3 .5,.3 .5,.5 .5,.4 .5,.6 .5,-9 .5,.4 .5,.5 .5,.6 .5,.6 .5,.7 .5,.8 .5,.8 .5,-10.3 .5,.7 .5,.8 .5,.9 .5,1 .5,1 .5,1.1 .5,1.1 .5,1.2 .5,-11.4 .5,1.2 .5,1.2 .5,1.3 .5,1.3 .5,1.3 .5,1.4 .5,1.5 .5,1.4 .5,-11.5 .5,1.5 .5,1.5 .5,1.6 .5,1.6 .5,1.6 .5,1.6 .5,1.6 .5,1.7 .5,-10.9 .5,1.8 .5,1.7 .5,1.8 .5,1.7 .5,1.7 .5,1.7 .5,1.7 .5,1.6 .5,-9.4 .5,1.8 .5,1.8 .5,1.8 .5,1.7 .5,1.7 .5,1.6 .5,1.6 .5,-7.7 .5,1.8 .5,1.7 .5,1.6 .5,1.7 .5,1.5 .5,1.6 .5,1.5 .5,1.4 .5,-5.7 .5,1.6 .5,1.5 .5,1.5 .5,1.4 .5,1.4 .5,1.3 .5,1.3 .5,1.2 .5,-3.9 .5,1.3 .5,1.3 .5,1.3 .5,1.2 .5,1.2 .5,1.1 .5,1.2 .5,1.1 .5,-2.7 .5,1.1 .5,1.1 .5,1.2 .5,1 .5,1.1 .5,1.1 .5,1 .5,1.1 .5,-2.2 .5,1 .5,1.1 .5,1.1 .5,1 .5,1.1 .5,1.1 .5,1.1 .5,-2.5 .5,1.1 .5,1.1 .5,1.1 .5,1.2 .5,1.1 .5,1.2 .5,1.3 .5,1.3 .5,-3.6 .5,1.2 .5,1.3 .5,1.2 .5,1.4 .5,1.3 .5,1.5 .5,1.4 .5,1.6 .5,-5.3 .5,1.4 .5,1.4 .5,1.5 .5,1.6 .5,1.5 .5,1.7 .5,1.7 .5,1.7 .5,-7.2 .5,1.5 .5,1.6 .5,1.7 .5,1.7 .5,1.7 .5,1.8 .5,1.8 .5,1.8 .5,-9.1 .5,1.6 .5,1.7 .5,1.8 .5,1.7 .5,1.7 .5,1.8 .5,1.8 .5,-10.6 .5,1.7 .5,1.6 .5,1.7 .5,1.6 .5,1.7 .5,1.6 .5,1.6 .5,1.6 .5,-11.4 .5,1.5 .5,1.4 .5,1.5 .5,1.4 .5,1.4 .5,1.4 .5,1.3 .5,1.2 .5,-11.4 .5,1.2 .5,1.2 .5,1.2 .5,1.1 .5,1 .5,1 .5,.9 .5,.9 .5,-10.7 .5,.9 .5,.9 .5,.8 .5,.7 .5,.7 .5,.5 .5,.6 .5,.4 .5,-9.2 .5,.6 .5,.5 .5,.4 .5,.3 .5,.3 .5,.3 .5,.1 .5,-7.5 .5,.2 .5,.3 .5,.1 .5,.1 .5,.1 .5,0 .5,-.1 .5,-.1 .5,-5.8 .5,0 .5,0 .5,-.1 .5,-.1 .5,-.2 .5,-.2 .5,-.3 .5,-.2 .5,-4.4 .5,-.2 .5,-.2 .5,-.3 .5,-.2 .5,-.3 .5,-.3 .5,-.4 .5,-.3 .5,-3.6 .5,-.3 .5,-.3 .5,-.4 .5,-.3 .5,-.3 .5,-.3 .5,-.3 .5,-.3 .5,-3.7 .5,-.4 .5,-.3 .5,-.2 .5,-.3 .5,-.2 .5,-.2 .5,-.2 .5,-4.6 .5,-.3 .5,-.2 .5,-.2 .5,-.1 .5,-.1 .5,0 .5,0 .5,0 .5,-6.1 .5,-.1 .5,0 .5,0 .5,.1 .5,.2 .5,.2 .5,.3 .5,.4 .5,-8 .5,.2 .5,.3 .5,.4 .5,.4 .5,.5 .5,.5 .5,.7 .5,.7 .5,-9.8 .5,.6 .5,.7 .5,.7 .5,.8 .5,.9 .5,.9 .5,1 .5,1.1 .5,-11 .5,1 .5,1 .5,1.2 .5,1.1 .5,1.3 .5,1.2 .5,1.3 .5,-11.5 .5,1.3 .5,1.4 .5,1.4 .5,1.5 .5,1.5 .5,1.5 .5,1.5 .5,1.6 .5,-11.3 .5,1.6 .5,1.7 .5,1.7 .5,1.6 .5,1.7 .5,1.7 .5,1.7 .5,1.6 .5,-10.2 .5,1.8 .5,1.8 .5,1.7 .5,1.8 .5,1.7 .5,1.7 .5,1.7 .5,1.6 .5,-8.6 .5,1.8 .5,1.8 .5,1.7 .5,1.7 .5,1.6 .5,1.6 .5,1.5 .5,1.5 .5,-6.6 .5,1.7 .5,1.6 .5,1.5 .5,1.5 .5,1.5 .5,1.4 .5,1.3 .5,-4.8 .5,1.5 .5,1.4 .5,1.4 .5,1.3 .5,1.3 .5,1.2 .5,1.2 .5,1.2 .5,-3.2 .5,1.2 .5,1.2 .5,1.2 .5,1.1 .5,1.2 .5,1.1 .5,1 .5,1.1 .5,-2.3 .5,1 .5,1.1 .5,1.1 .5,1.1 .5,1 .5,1.1 .5,1 .5,1.1 .5,-2.2 .5,1 .5,1.1 .5,1.1 .5,1.1 .5,1.1 .5,1.1 .5,1.2 .5,1.2 .5,-3 .5,1.2 .5,1.2 .5,1.2 .5,1.2 .5,1.3 .5,1.4 .5,1.4 .5,-4.3 .5,1.3 .5,1.3 .5,1.3 .5,1.5 .5,1.4 .5,1.5 .5,1.6 .5,1.6 .5,-6.1 .5,1.4 .5,1.6 .5,1.5 .5,1.6 .5,1.7 .5,1.7 .5,1.7 .5,1.8 .5,-8.1 .5,1.6 .5,1.6 .5,1.7 .5,1.8 .5,1.7 .5,1.8 .5,1.8 .5,1.8 .5,-9.9 .5,1.6 .5,1.7 .5,1.7 .5,1.7 .5,1.7 .5,1.7 .5,1.7 .5,-11 .5,1.6 .5,1.6 .5,1.6 .5,1.5 .5,1.5 .5,1.6 .5,1.4 .5,1.5 .5,-11.6 .5,1.4 .5,1.4 .5,1.3 .5,1.3 .5,1.3 .5,1.1 .5,1.2 .5,1.1 .5,-11.2 .5,1.1 .5,1 .5,1 .5,1 .5,.8 .5,.8 .5,.8 .5,.7 .5,-10.1 .5,.7 .5,.7 .5,.7 .5,.5 .5,.5 .5,.4 .5,.4 .5,.3 .5,-8.4 .5,.4 .5,.3 .5,.3 .5,.2 .5,.2 .5,.1 .5,0 .5,-6.7 .5,.2 .5,.1 .5,0 .5,0 .5,-.1 .5,-.1 .5,-.1 .5,-.2 .5,-5 .5,-.1 .5,-.2 .5,-.2 .5,-.2 .5,-.2 .5,-.3 .5,-.3 .5,-.3 .5,-3.9 .5,-.2 .5,-.3 .5,-.3 .5,-.3 .5,-.3 .5,-.4 .5,-.3 .5,-.3 .5,-3.6 .5,-.3 .5,-.3 .5,-.4 .5,-.3 .5,-.2 .5,-.3 .5,-.3 .5,-.2 .5,-4.1 .5,-.3 .5,-.3 .5,-.2 .5,-.2 .5,-.2 .5,-.1 .5,-.1 .5,-5.2 .5,-.2 .5,-.2 .5,-.1 .5,0 .5,0 .5,.1 .5,.1 .5,.2 .5,-7.1 .5,.1 .5,.1 .5,.2 .5,.2 .5,.3 .5,.4 .5,.4 .5,.5 .5,-8.8 .5,.4 .5,.4 .5,.6 .5,.5 .5,.7 .5,.7 .5,.8 .5,.9 .5,-10.5 .5,.8 .5,.9 .5,.9 .5,1 .5,1 .5,1.1 .5,1.2 .5,1.1 .5,-11.3 .5,1.2 .5,1.2 .5,1.3 .5,1.3 .5,1.4 .5,1.4 .5,1.4 .5,-11.5 .5,1.5 .5,1.5 .5,1.6 .5,1.5 .5,1.6 .5,1.7 .5,1.6 .5,1.6 .5,-10.9 .5,1.7 .5,1.8 .5,1.7 .5,1.7 .5,1.8 .5,1.7 .5,1.7 .5,1.6 .5,-9.5 .5,1.9 .5,1.7 .5,1.8 .5,1.7 .5,1.8 .5,1.6 .5,1.6 .5,1.6 .5,-7.6 .5,1.7 .5,1.7 .5,1.7 .5,1.6 .5,1.6 .5,1.5 .5,1.4 .5,1.5 .5,-5.7 .5,1.6 .5,1.5 .5,1.4 .5,1.4 .5,1.4 .5,1.3 .5,1.3 .5,-4 .5,1.3 .5,1.4 .5,1.2 .5,1.3 .5,1.2 .5,1.2 .5,1.1 .5,1.1 .5,-2.7 .5,1.1 .5,1.2 .5,1.1 .5,1.1 .5,1.1 .5,1 .5,1.1 .5,1 .5,-2.2 .5,1.1 .5,1.1 .5,1 .5,1.1 .5,1 .5,1.1 .5,1.1 .5,1.2 .5,-2.5 .5,1 .5,1.1 .5,1.2 .5,1.1 .5,1.2 .5,1.2 .5,1.3 .5,1.3 .5,-3.6 .5,1.2 .5,1.3 .5,1.3 .5,1.3 .5,1.4 .5,1.4 .5,1.5 .5,-5.1 .5,1.4 .5,1.4 .5,1.4 .5,1.5 .5,1.6 .5,1.6 .5,1.6 .5,1.7 .5,-7.1 .5,1.6 .5,1.6 .5,1.6 .5,1.7 .5,1.7 .5,1.7 .5,1.8 .5,1.8 .5,-9 .5,1.6 .5,1.7 .5,1.7 .5,1.8 .5,1.7 .5,1.8 .5,1.7 .5,1.8 .5,-10.6 .5,1.7 .5,1.6 .5,1.6 .5,1.7 .5,1.6 .5,1.6 .5,1.6 .5,1.6 .5,-11.4 .5,1.5 .5,1.4 .5,1.5 .5,1.4 .5,1.4 .5,1.3 .5,1.3 .5,-11.5 .5,1.3 .5,1.2 .5,1.2 .5,1.1 .5,1.1 .5,1 .5,1 .5,.9 .5,-10.8 .5,1 .5,.9 .5,.8 .5,.8 .5,.7 .5,.6 .5,.6 .5,.5 .5,-9.3 .5,.5 .5,.6 .5,.4 .5,.4 .5,.4 .5,.2 .5,.2 .5,.2 .5,-7.5 .5,.2 .5,.2 .5,.2 .5,.1 .5,0 .5,0 .5,-.1 .5,-.2 .5,-5.6 .5,-.1 .5,0 .5,-.1 .5,-.2 .5,-.2 .5,-.2 .5,-.3 .5,-4.4 .5,-.1 .5,-.3 .5,-.2 .5,-.3 .5,-.3 .5,-.3 .5,-.3 .5,-.3 .5,-3.6 .5,-.3 .5,-.4 .5,-.3 .5,-.3 .5,-.3 .5,-.3 .5,-.3 .5,-.3 .5,-3.7 .5,-.4 .5,-.3 .5,-.3 .5,-.3 .5,-.2 .5,-.2 .5,-.2 .5,-.2 .5,-4.6 .5,-.3 .5,-.2 .5,-.1 .5,-.1 .5,-.1 .5,0 .5,0 .5,0 .5,-6.2 .5,0 .5,0 .5,.1 .5,.1 .5,.2 .5,.2 .5,.3 .5,-7.8 .5,.2 .5,.2 .5,.3 .5,.4 .5,.5 .5,.5 .5,.6 .5,.6 .5,-9.6 .5,.6 .5,.6 .5,.7 .5,.8 .5,.8 .5,.9 .5,.9 .5,1 .5,-10.9 .5,1 .5,1 .5,1.1 .5,1.1 .5,1.2 .5,1.3 .5,1.3 .5,1.3 .5,-11.6 .5,1.4 .5,1.4 .5,1.4 .5,1.5 .5,1.5 .5,1.5 .5,1.6 .5,1.5 .5,-11.3 .5,1.7 .5,1.7 .5,1.6 .5,1.7 .5,1.7 .5,1.6 .5,1.7 .5,-10.3 .5,1.8 .5,1.8 .5,1.8 .5,1.7 .5,1.8 .5,1.7 .5,1.7 .5,1.6 .5,-8.7 .5,1.9 .5,1.7 .5,1.8 .5,1.7 .5,1.6 .5,1.6 .5,1.6 .5,1.5 .5,-6.7 .5,1.7 .5,1.6 .5,1.6 .5,1.5 .5,1.5 .5,1.4 .5,1.4 .5,1.4 .5,-4.8 .5,1.5 .5,1.4 .5,1.3 .5,1.3 .5,1.3 .5,1.2 .5,1.2 .5,1.2 .5,-3.2 .5,1.2 .5,1.2 .5,1.2 .5,1.1 .5,1.1 .5,1.1 .5,1.1 .5,-2.4 .5,1.1 .5,1.1 .5,1.1 .5,1 .5,1.1 .5,1 .5,1.1 .5,1.1 .5,-2.3 .5,1.1 .5,1 .5,1.1 .5,1.1 .5,1.1 .5,1.1 .5,1.2 .5,1.2 .5,-2.9 .5,1.1 .5,1.2 .5,1.1 .5,1.3 .5,1.2 .5,1.4 .5,1.3 .5,1.4 .5,-4.3 .5,1.3 .5,1.3 .5,1.4 .5,1.4 .5,1.5 .5,1.6 .5,1.5 .5,1.7 .5,-6.3 .5,1.5 .5,1.6 .5,1.6 .5,1.6 .5,1.7 .5,1.7 .5,1.7 .5,-8 .5,1.6 .5,1.6 .5,1.7 .5,1.7 .5,1.8 .5,1.7 .5,1.8 .5,1.8 .5,-9.8 .5,1.6 .5,1.7 .5,1.7 .5,1.7 .5,1.7 .5,1.7 .5,1.7 .5,1.7 .5,-11.1 .5,1.6 .5,1.6 .5,1.6 .5,1.5 .5,1.6 .5,1.5 .5,1.4 .5,1.5 .5,-11.6 .5,1.4 .5,1.3 .5,1.3 .5,1.3 .5,1.2 .5,1.2 .5,1.1 .5,1.1 .5,-11.2 .5,1.1 .5,1 .5,1 .5,.9 .5,.9 .5,.7 .5,.8 .5,-10.2 .5,.8 .5,.7 .5,.7 .5,.6 .5,.5 .5,.5 .5,.4 .5,.3 .5,-8.5 .5,.5 .5,.3 .5,.4 .5,.2 .5,.2 .5,.1 .5,.1 .5,0 .5,-6.6 .5,.1 .5,.1 .5,0 .5,0 .5,-.1 .5,-.1 .5,-.2 .5,-.2 .5,-5 .5,-.1 .5,-.1 .5,-.2 .5,-.3 .5,-.2 .5,-.3 .5,-.3 .5,-.3 .5,-3.9 .5,-.2 .5,-.3 .5,-.3 .5,-.3 .5,-.4 .5,-.3 .5,-.3 .5,-3.6 .5,-.3 .5,-.3 .5,-.4 .5,-.3 .5,-.3 .5,-.3 .5,-.2 .5,-.3 .5,-4 .5,-.3 .5,-.3 .5,-.3 .5,-.2 .5,-.2 .5,-.1 .5,-.1 .5,-.1 .5,-5.3 .5,-.2 .5,-.1 .5,-.1 .5,0 .5,0 .5,.1 .5,.1 .5,.2 .5,-7 .5,0 .5,.2 .5,.2 .5,.2 .5,.4 .5,.4 .5,.4 .5,.5 .5,-8.9 .5,.4 .5,.5 .5,.6 .5,.6 .5,.7 .5,.7 .5,.9 .5,-10.4 .5,.8 .5,.8 .5,.9 .5,.9 .5,1 .5,1.1 .5,1.1 .5,1.1 .5,-11.3 .5,1.1 .5,1.3 .5,1.2 .5,1.3 .5,1.4 .5,1.4 .5,1.4 .5,1.4 .5,-11.5 .5,1.5 .5,1.5 .5,1.6 .5,1.6 .5,1.6 .5,1.6 .5,1.6 .5,1.6 .5,-10.8 .5,1.7 .5,1.8 .5,1.7 .5,1.7 .5,1.8 .5,1.7 .5,1.6 .5,1.7 .5,-9.4 .5,1.8 .5,1.8 .5,1.7 .5,1.7 .5,1.7 .5,1.7 .5,1.6 .5,-7.8 .5,1.8 .5,1.7 .5,1.7 .5,1.6 .5,1.6 .5,1.6 .5,1.5 .5,1.4 .5,-5.7 .5,1.6 .5,1.5 .5,1.5 .5,1.4 .5,1.4 .5,1.3 .5,1.3 .5,1.3 .5,-4 .5,1.4 .5,1.3 .5,1.2 .5,1.3 .5,1.2 .5,1.1 .5,1.1 .5,1.1 .5,-2.7 .5,1.2 .5,1.1 .5,1.1 .5,1.1 .5,1.1 .5,1.1 .5,1 .5,1.1 .5,-2.2 .5,1 .5,1.1 .5,1 .5,1.1 .5,1.1 .5,1.1 .5,1.1 .5,-2.5 .5,1.1 .5,1.1 .5,1.1 .5,1.1 .5,1.2 .5,1.2 .5,1.2 .5,1.3 .5,-3.5 .5,1.2 .5,1.2 .5,1.3 .5,1.3 .5,1.4 .5,1.4 .5,1.4 .5,1.5 .5,-5.2 .5,1.4 .5,1.5 .5,1.4 .5,1.6 .5,1.5 .5,1.6 .5,1.7 .5,1.7 .5,-7.1 .5,1.5 .5,1.6 .5,1.7 .5,1.7 .5,1.7 .5,1.7 .5,1.8 .5,1.8 .5,-9.1 .5,1.7 .5,1.7 .5,1.7 .5,1.7 .5,1.8 .5,1.8 .5,1.7 .5,-10.5 .5,1.7 .5,1.6 .5,1.7 .5,1.6 .5,1.6 .5,1.7 .5,1.6 .5,1.6 .5,-11.5 .5,1.6 .5,1.4 .5,1.5 .5,1.4 .5,1.4 .5,1.4 .5,1.3 .5,1.3 .5,-11.5 .5,1.3 .5,1.2 .5,1.1 .5,1.2 .5,1 .5,1 .5,1 .5,.8 .5,-10.7 .5,.9 .5,.9 .5,.8 .5,.8 .5,.6 .5,.6 .5,.6 .5,.4 .5,-9.2 .5,.6 .5,.5 .5,.4 .5,.4 .5,.3 .5,.2 .5,.2 .5,-7.6 .5,.3 .5,.2 .5,.2 .5,.1 .5,.1 .5,0 .5,-.1 .5,-.1 .5,-5.8 .5,.1 .5,-.1 .5,-.1 .5,-.1 .5,-.2 .5,-.2 .5,-.2 .5,-.3 .5,-4.3 .5,-.2 .5,-.3 .5,-.2 .5,-.3 .5,-.3 .5,-.3 .5,-.3 .5,-.3 .5,-3.7 .5,-.3 .5,-.3 .5,-.3 .5,-.3 .5,-.3 .5,-.3 .5,-.3 .5,-.3 .5,-3.8 .5,-.3 .5,-.3 .5,-.3 .5,-.3 .5,-.2 .5,-.2 .5,-.2 .5,-.1 .5,-4.7 .5,-.2 .5,-.2 .5,-.2 .5,-.1 .5,0 .5,0 .5,0 .5,-6.1 .5,-.1 .5,0 .5,0 .5,.1 .5,.2 .5,.2 .5,.2 .5,.4 .5,-8 .5,.2 .5,.3 .5,.4 .5,.4 .5,.5 .5,.5 .5,.6 .5,.7 .5,-9.7 .5,.6 .5,.7 .5,.7 .5,.8 .5,.8 .5,1 .5,.9 .5,1.1 .5,-11 .5,1 .5,1 .5,1.1 .5,1.2 .5,1.2 .5,1.3 .5,1.3 .5,1.3 .5,-11.5 .5,1.3 .5,1.5 .5,1.4 .5,1.5 .5,1.5 .5,1.5 .5,1.6 .5,-11.3 .5,1.6 .5,1.7 .5,1.6 .5,1.7 .5,1.7 .5,1.6 .5,1.7 .5,1.7 .5,-10.3 .5,1.8 .5,1.8 .5,1.8 .5,1.7 .5,1.7 .5,1.7 .5,1.7 .5,1.7 .5,-8.6 .5,1.8 .5,1.7 .5,1.7 .5,1.7 .5,1.7 .5,1.6 .5,1.5 .5,1.5 .5,-6.6 .5,1.7 .5,1.6 .5,1.5 .5,1.5 .5,1.5 .5,1.4 .5,1.4 .5,1.3 .5,-4.7 .5,1.4 .5,1.4 .5,1.4 .5,1.2 .5,1.3 .5,1.2 .5,1.2 .5,-3.3 .5,1.3 .5,1.2 .5,1.2 .5,1.1 .5,1.1 .5,1.1 .5,1.1 .5,1.1 .5,-2.4 .5,1.1 .5,1.1 .5,1.1 .5,1 .5,1.1 .5,1.1 .5,1 .5,1.1 .5,-2.3 .5,1.1 .5,1.1 .5,1 .5,1.1 .5,1.2 .5,1.1 .5,1.2 .5,1.2 .5,-3 .5,1.2 .5,1.1 .5,1.2 .5,1.3 .5,1.3 .5,1.3 .5,1.4 .5,1.4 .5,-4.4 .5,1.3 .5,1.4 .5,1.4 .5,1.4 .5,1.5 .5,1.6 .5,1.6 .5,-6.1 .5,1.4 .5,1.5 .5,1.6 .5,1.6 .5,1.7 .5,1.6 .5,1.8 .5,1.7 .5,-8.1 .5,1.6 .5,1.7 .5,1.7 .5,1.7 .5,1.8 .5,1.7 .5,1.8 .5,1.8 .5,-9.9 .5,1.7 .5,1.7 .5,1.7 .5,1.7 .5,1.7 .5,1.7 .5,1.7 .5,1.7 .5,-11.1 .5,1.6 .5,1.5 .5,1.6 .5,1.5 .5,1.6 .5,1.4 .5,1.5 .5,1.4 .5,-11.5 .5,1.3 .5,1.4 .5,1.3 .5,1.2 .5,1.2 .5,1.2 .5,1.1 .5,-11.3 .5,1.2 .5,1 .5,1 .5,1 .5,.9 .5,.8 .5,.7 .5,.7 .5,-10.1 .5,.8 .5,.7 .5,.6 .5,.6 .5,.5 .5,.5 .5,.3 .5,.3 .5,-8.4 .5,.4 .5,.4 .5,.3 .5,.2 .5,.2 .5,.1 .5,0 .5,0 .5,-6.6 .5,.1 .5,.1 .5,0 .5,-.1 .5,-.1 .5,-.1 .5,-.2 .5,-.2 .5,-4.9 .5,-.2 .5,-.1 .5,-.2 .5,-.3 .5,-.2 .5,-.3 .5,-.3 .5,-3.9 .5,-.3 .5,-.3 .5,-.3 .5,-.3 .5,-.3 .5,-.3 .5,-.3 .5,-.3 .5,-3.6 .5,-.3 .5,-.4 .5,-.3 .5,-.3 .5,-.3 .5,-.3 .5,-.2 .5,-.3 .5,-4.1 .5,-.3 .5,-.2 .5,-.3 .5,-.2 .5,-.1 .5,-.2 .5,-.1 .5,0 .5,-5.4 .5,-.1 .5,-.2 .5,0 .5,0 .5,0 .5,.1 .5,.2 .5,.2 .5,-7.1 .5,.1 .5,.2 .5,.2 .5,.3 .5,.3 .5,.4 .5,.5 .5,-8.8 .5,.4 .5,.4 .5,.5 .5,.6 .5,.7 .5,.7 .5,.8 .5,.8 .5,-10.4 .5,.8 .5,.8 .5,.9 .5,1 .5,1 .5,1.1 .5,1.1 .5,1.2 .5,-11.4 .5,1.2 .5,1.3 .5,1.2 .5,1.4 .5,1.3 .5,1.4 .5,1.4 .5,1.5 .5,-11.5 .5,1.5 .5,1.6 .5,1.5 .5,1.6 .5,1.6 .5,1.6 .5,1.7 .5,1.6 .5,-10.8 .5,1.7 .5,1.8 .5,1.7 .5,1.7 .5,1.7 .5,1.7 .5,1.7 .5,-9.5 .5,1.8 .5,1.8 .5,1.8 .5,1.7 .5,1.7 .5,1.7 .5,1.6 .5,1.6 .5,-7.7 .5,1.8 .5,1.7 .5,1.7 .5,1.6 .5,1.6 .5,1.5 .5,1.5 .5,1.4 .5,-5.7 .5,1.6 .5,1.5 .5,1.5 .5,1.4 .5,1.3 .5,1.4 .5,1.2 .5,1.3 .5,-3.9 .5,1.3 .5,1.3 .5,1.2 .5,1.2 .5,1.2 .5,1.2 .5,1.1 .5,1.1 .5,-2.7 .5,1.1 .5,1.2 .5,1.1 .5,1 .5,1.1 .5,1.1 .5,1 .5,-2.2 .5,1.1 .5,1 .5,1.1 .5,1.1 .5,1 .5,1.1 .5,1.1 .5,1.1 .5,-2.5 .5,1.1 .5,1.1 .5,1.1 .5,1.2 .5,1.2 .5,1.2 .5,1.3 .5,1.3 .5,-3.6 .5,1.2 .5,1.2 .5,1.3 .5,1.3 .5,1.4 .5,1.5 .5,1.4 .5,1.6 .5,-5.3 .5,1.4 .5,1.4 .5,1.5 .5,1.6 .5,1.6 .5,1.6 .5,1.7 .5,1.7 .5,-7.2 .5,1.6 .5,1.6 .5,1.6 .5,1.7 .5,1.8 .5,1.7 .5,1.8 .5,-9 .5,1.7 .5,1.7 .5,1.7 .5,1.7 .5,1.7 .5,1.8 .5,1.8 .5,1.7 .5,-10.5 .5,1.6 .5,1.7 .5,1.6 .5,1.7 .5,1.6 .5,1.6 .5,1.6 .5,1.6 .5,-11.4 .5,1.5 .5,1.4 .5,1.5 .5,1.4 .5,1.4 .5,1.3 .5,1.3 .5,1.3 .5,-11.5 .5,1.3 .5,1.2 .5,1.1 .5,1.1 .5,1 .5,1 .5,.9 .5,.9 .5,-10.7 .5,.9 .5,.8 .5,.8 .5,.7 .5,.7 .5,.6 .5,.5 .5,-9.4 .5,.6 .5,.6 .5,.4 .5,.5 .5,.3 .5,.3 .5,.2 .5,.2 .5,-7.6 .5,.3 .5,.2 .5,.2 .5,0 .5,.1 .5,0 .5,-.1 .5,-.1 .5,-5.8 .5,0 .5,0 .5,-.1 .5,-.2 .5,-.1 .5,-.3 .5,-.2 .5,-.3 .5,-4.3 .5,-.2 .5,-.3 .5,-.2 .5,-.3 .5,-.3 .5,-.3 .5,-.3 .5,-.4 .5,-3.6 .5,-.3 .5,-.3 .5,-.3 .5,-.3 .5,-.4 .5,-.3 .5,-.3 .5,-3.7 .5,-.3 .5,-.3 .5,-.3 .5,-.3 .5,-.3 .5,-.2 .5,-.2 .5,-.1 .5,-4.7 .5,-.2 .5,-.2 .5,-.2 .5,-.1 .5,-.1 .5,0 .5,0 .5,0 .5,-6.2 .5,0 .5,0 .5,.1 .5,.1 .5,.1 .5,.3 .5,.3 .5,.3 .5,-8 .5,.3 .5,.3 .5,.3 .5,.5 .5,.5 .5,.6 .5,.6 .5,.7 .5,-9.8 .5,.7 .5,.6 .5,.8 .5,.8 .5,.9 .5,.9 .5,1 .5,-10.9 .5,1 .5,1 .5,1.1 .5,1.1 .5,1.2 .5,1.2 .5,1.3 .5,1.3 .5,-11.5 .5,1.3 .5,1.4 .5,1.4 .5,1.5 .5,1.5 .5,1.5 .5,1.5 .5,1.6 .5,-11.3 .5,1.7 .5,1.6 .5,1.7 .5,1.7 .5,1.6 .5,1.7 .5,1.7 .5,1.6 .5,-10.2 .5,1.8 .5,1.8 .5,1.8 .5,1.7 .5,1.7 .5,1.7 .5,1.7 .5,1.6 .5,-8.5 .5,1.8 .5,1.7 .5,1.7 .5,1.7 .5,1.6 .5,1.6 .5,1.5 .5,-6.7 .5,1.7 .5,1.6 .5,1.6 .5,1.5 .5,1.5 .5,1.5 .5,1.3 .5,1.4 .5,-4.8 .5,1.5 .5,1.4 .5,1.4 .5,1.3 .5,1.3 .5,1.2 .5,1.2 .5,1.1 .5,-3.2 .5,1.3 .5,1.2 .5,1.1 .5,1.2 .5,1.1 .5,1.1 .5,1.1 .5,1 .5,-2.3 .5,1.1 .5,1 .5,1.1 .5,1.1 .5,1 .5,1.1 .5,1.1 .5,1 .5,-2.2 .5,1 .5,1.1 .5,1.1 .5,1.1 .5,1.1 .5,1.2 .5,1.2 .5,-3 .5,1.2 .5,1.1 .5,1.2 .5,1.2 .5,1.3 .5,1.3 .5,1.4 .5,1.4 .5,-4.4 .5,1.3 .5,1.3 .5,1.4 .5,1.4 .5,1.5 .5,1.5 .5,1.6 .5,1.7 .5,-6.2 .5,1.4 .5,1.6 .5,1.5 .5,1.7 .5,1.6 .5,1.7 .5,1.8 .5,1.8 .5,-8.2 .5,1.6 .5,1.7 .5,1.7 .5,1.7 .5,1.8 .5,1.7 .5,1.8 .5,1.9 .5,-10 .5,1.7 .5,1.7 .5,1.7 .5,1.7 .5,1.7 .5,1.7 .5,1.7 .5,-11.1 .5,1.6 .5,1.6 .5,1.6 .5,1.5 .5,1.6 .5,1.5 .5,1.4 .5,1.5 .5,-11.6 .5,1.4 .5,1.4 .5,1.3 .5,1.3 .5,1.2 .5,1.2 .5,1.1 .5,1.1 .5,-11.2 .5,1.1 .5,1 .5,1 .5,.9 .5,.9 .5,.8 .5,.7 .5,.7 .5,-10 .5,.7 .5,.7 .5,.6 .5,.5 .5,.5 .5,.4 .5,.4 .5,.2 .5,-8.3 .5,.4 .5,.3 .5,.3 .5,.2 .5,.1 .5,.1 .5,0 .5,-6.7 .5,.2 .5,.1 .5,0" fill="none" stroke="#6cdc16" stroke-width="1.6" stroke-linejoin="round" /></g><rect x="799.5" y="120.5" width="1125" height="116" fill="none" stroke="#6b6b6b" stroke-width="1" /><rect x="799.5" y="266.1" width="1125" height="110.09999999999997" fill="none" stroke="#6b6b6b" stroke-width="1" /><text x="793" y="142.1" font-size="15" fill="#c4c4c4" text-anchor="end" >100</text><text x="793" y="179.5" font-size="15" fill="#c4c4c4" text-anchor="end" >0</text><text x="793" y="218.0" font-size="15" fill="#c4c4c4" text-anchor="end" >-100</text><text x="793" y="296.5" font-size="15" fill="#c4c4c4" text-anchor="end" >500</text><text x="793" y="327.2" font-size="15" fill="#c4c4c4" text-anchor="end" >0</text><text x="793" y="356.5" font-size="15" fill="#c4c4c4" text-anchor="end" >-500</text><text x="900" y="398.5" font-size="15" fill="#c4c4c4" text-anchor="middle" >1.57</text><text x="1149.5" y="398.5" font-size="15" fill="#c4c4c4" text-anchor="middle" >1.575</text><text x="1399" y="398.5" font-size="15" fill="#c4c4c4" text-anchor="middle" >1.58</text><text x="1648.5" y="398.5" font-size="15" fill="#c4c4c4" text-anchor="middle" >1.585</text><text x="1898" y="398.5" font-size="15" fill="#c4c4c4" text-anchor="middle" >1.59</text><rect x="762" y="408" width="1158" height="33" fill="#f0f0f0" stroke="none" stroke-width="1" /><line x1="762" y1="441.5" x2="1920" y2="441.5" stroke="#8a8a8a" stroke-width="1" /><line x1="762.5" y1="0" x2="762.5" y2="442" stroke="#4a4a4a" stroke-width="1" /><text x="764" y="431" font-size="15.5" fill="#000" text-anchor="start" textLength="42" lengthAdjust="spacingAndGlyphs" >Ready</text><rect x="1812.5" y="414.5" width="101" height="23" fill="#f0f0f0" stroke="#d7d7d7" stroke-width="1" /><text x="1816" y="431" font-size="15.5" fill="#000" text-anchor="start" textLength="94" lengthAdjust="spacingAndGlyphs" >Sample based</text><rect x="937" y="701" width="983" height="379" fill="#fff" stroke="none" stroke-width="1" /><line x1="937" y1="701.5" x2="1920" y2="701.5" stroke="#b0b0b0" stroke-width="1" /><line x1="937.5" y1="701" x2="937.5" y2="1080" stroke="#b0b0b0" stroke-width="1" /><rect x="949.5" y="712.5" width="16" height="16" fill="#fafafa" stroke="#a9b3bd" stroke-width="1" /><rect x="950" y="713" width="15" height="2.5" fill="#4d8fd6" stroke="none" stroke-width="1" /><path d="M951.5,722.5 L956,720 L958.5,716.5 L960.5,718 L963.5,726.5 L960,724 L957,724.5 Z" fill="#e2571e"/><path d="M951.5,722.5 L956,720 L957.5,721.5 L955,725 Z" fill="#2f75c8"/><path d="M958.5,716.5 L960.5,718 L959,721 Z" fill="#f3a23c"/><text x="971" y="726.7" font-size="17" fill="#8a8a8a" text-anchor="start" textLength="54" lengthAdjust="spacingAndGlyphs" >Scope3</text><line x1="1817" y1="720.5" x2="1828" y2="720.5" stroke="#9a9a9a" stroke-width="1" /><rect x="1880.5" y="714.5" width="10.5" height="10.5" fill="none" stroke="#9a9a9a" stroke-width="1" /><text x="942" y="759.5" font-size="16.5" fill="#000" text-anchor="start" textLength="23" lengthAdjust="spacingAndGlyphs" >File</text><text x="975" y="759.5" font-size="16.5" fill="#000" text-anchor="start" textLength="39" lengthAdjust="spacingAndGlyphs" >Tools</text><text x="1024" y="759.5" font-size="16.5" fill="#000" text-anchor="start" textLength="34" lengthAdjust="spacingAndGlyphs" >View</text><text x="1068" y="759.5" font-size="16.5" fill="#000" text-anchor="start" textLength="76" lengthAdjust="spacingAndGlyphs" >Simulation</text><text x="1154" y="759.5" font-size="16.5" fill="#000" text-anchor="start" textLength="33" lengthAdjust="spacingAndGlyphs" >Help</text><rect x="937" y="766" width="983" height="35" fill="#f0f0f0" stroke="none" stroke-width="1" /><line x1="937" y1="766.5" x2="1920" y2="766.5" stroke="#d5d5d5" stroke-width="1" /><line x1="937" y1="800.5" x2="1920" y2="800.5" stroke="#d8d8d8" stroke-width="1" /><path d="M964.8,785.3 L964.3,787.0 L961.6,787.3 L960.8,788.3 L961.0,791.0 L959.4,791.8 L957.3,790.2 L956.0,790.3 L954.2,792.3 L952.5,791.8 L952.2,789.1 L951.2,788.3 L948.5,788.5 L947.7,786.9 L949.3,784.8 L949.2,783.5 L947.2,781.7 L947.7,780.0 L950.4,779.7 L951.2,778.7 L951.0,776.0 L952.6,775.2 L954.7,776.8 L956.0,776.7 L957.8,774.7 L959.5,775.2 L959.8,777.9 L960.8,778.7 L963.5,778.5 L964.3,780.1 L962.7,782.2 L962.8,783.5Z" fill="#9a9a9a" stroke="#3c3c3c" stroke-width="1.2" stroke-linejoin="round"/><circle cx="956" cy="783.5" r="3.3" fill="#fff" stroke="#3c3c3c" stroke-width="1.4"/><path d="M976.0,782.0 L983.0,782.0 L979.5,785.5 Z" fill="#333"/><line x1="986.5" y1="769" x2="986.5" y2="800" stroke="#cfcfcf" stroke-width="1" /><line x1="1115.5" y1="769" x2="1115.5" y2="800" stroke="#cfcfcf" stroke-width="1" /><line x1="1218.5" y1="769" x2="1218.5" y2="800" stroke="#cfcfcf" stroke-width="1" /><line x1="1269.5" y1="769" x2="1269.5" y2="800" stroke="#cfcfcf" stroke-width="1" /><path d="M997,781.5 L1008,775.0 L1008,788.0 Z" fill="#b5dcf5" stroke="#6a9fcc" stroke-width="1"/><rect x="1009.5" y="774.5" width="3.5" height="11" fill="#a6d3f2" stroke="#5b8fc2" stroke-width="1"/><path d="M1015.4,788.8 L1015.0,790.0 L1012.6,789.9 L1012.0,790.6 L1012.6,792.9 L1011.5,793.5 L1009.8,791.7 L1009.0,791.8 L1007.7,793.9 L1006.5,793.5 L1006.6,791.1 L1005.9,790.5 L1003.6,791.1 L1003.0,790.0 L1004.8,788.3 L1004.7,787.5 L1002.6,786.2 L1003.0,785.0 L1005.4,785.1 L1006.0,784.4 L1005.4,782.1 L1006.5,781.5 L1008.2,783.3 L1009.0,783.2 L1010.3,781.1 L1011.5,781.5 L1011.4,783.9 L1012.1,784.5 L1014.4,783.9 L1015.0,785.0 L1013.2,786.7 L1013.3,787.5Z" fill="#9c9c9c" stroke="#2e2e2e" stroke-width="1.2" stroke-linejoin="round"/><circle cx="1009" cy="787.5" r="2.3" fill="#fff" stroke="#2e2e2e" stroke-width="1.4"/><circle cx="1035" cy="783.5" r="10.3" fill="#8ed14a" stroke="#3f7d1e" stroke-width="1.8"/><path d="M1032,778.5 L1040,783.5 L1032,788.5 Z" fill="#222"/><rect x="1058" y="776.0" width="3.5" height="15" fill="#8ec3ea" stroke="#3a78b5" stroke-width="1"/><path d="M1064,776.0 L1074,783.5 L1064,791.0 Z" fill="#a9d3f2" stroke="#3a78b5" stroke-width="1.2"/><circle cx="1097" cy="783.5" r="10.3" fill="#8c8c8c" stroke="#a0a0a0" stroke-width="1"/><rect x="1093" y="779.5" width="8" height="8" fill="#7a7a7a" stroke="none" stroke-width="1" /><rect x="1128" y="774.5" width="9" height="6" fill="#f5a54a" stroke="#d2691e" stroke-width="1.2" /><path d="M1137,777.5 L1141,777.5 L1141,782.5" fill="none" stroke="#d2691e" stroke-width="1.2"/><circle cx="1141" cy="784.0" r="2.5" fill="#fff" stroke="#444" stroke-width="1.1"/><path d="M1141,786.5 L1141,789.5 L1136,789.5" fill="none" stroke="#444" stroke-width="1.1"/><rect x="1128" y="786.5" width="8" height="6" fill="#fff" stroke="#444" stroke-width="1.1" /><path d="M1156.5,782.0 L1163.5,782.0 L1160,785.5 Z" fill="#333"/><rect x="1169" y="768" width="37" height="31" fill="#c3ddf6" stroke="none" stroke-width="1" /><circle cx="1187" cy="782.0" r="4.2" fill="#fff" stroke="#2a2a2a" stroke-width="1.7"/><line x1="1189.5" y1="785.5" x2="1192.5" y2="790.0" stroke="#2a2a2a" stroke-width="1.9" /><rect x="1174.5" y="778.0" width="2.2" height="8" fill="#222" stroke="none" stroke-width="1" /><rect x="1197.3" y="778.0" width="2.2" height="8" fill="#222" stroke="none" stroke-width="1" /><rect x="1178" y="780.5" width="2" height="3" fill="#333" stroke="none" stroke-width="1" /><rect x="1194" y="780.5" width="2" height="3" fill="#333" stroke="none" stroke-width="1" /><path d="M1207.5,782.0 L1214.5,782.0 L1211,785.5 Z" fill="#333"/><rect x="1228.5" y="773.0" width="21" height="21" fill="url(#icg)" stroke="#1e1e1e" stroke-width="1.7" /><path d="M1239,777.5 L1233,783.5 L1239,789.5 L1245,783.5 Z" fill="none" stroke="#9a9a9a" stroke-width="1" stroke-dasharray="1.5,1.5"/><path d="M1239,775.0 l-3.5,3.5 h7 Z M1239,792.0 l-3.5,-3.5 h7 Z M1230.5,783.5 l3.5,-3.5 v7 Z M1247.5,783.5 l-3.5,-3.5 v7 Z" fill="#333"/><path d="M1258.5,782.0 L1265.5,782.0 L1262,785.5 Z" fill="#333"/><path d="M1280,791.5 L1287.5,791.5 L1287.5,782.5 M1287.5,776.0 L1295,776.0" fill="none" stroke="#1e1e1e" stroke-width="4.6" stroke-linecap="square"/><path d="M1280,791.5 L1287.5,791.5 L1287.5,782.5 M1287.5,776.0 L1295,776.0" fill="none" stroke="#7a7a7a" stroke-width="2" stroke-linecap="square"/><path d="M1281,785.0 L1287.5,775.5 L1294,785.0 L1290.5,785.0 L1287.5,781.0 L1284.5,785.0 Z" fill="#6a6a6a" stroke="#1e1e1e" stroke-width="1.4" stroke-linejoin="round"/><rect x="1311.5" y="773.0" width="21" height="21" fill="url(#icg)" stroke="#333" stroke-width="1.5" /><path d="M1313,789.0 L1326.5,774.0 L1332,779.0 L1318.5,794.0 Z" fill="#93cdec" stroke="#3d7fb0" stroke-width="1"/><path d="M1319,786.5 l1.5,1.5 M1322,783.0 l1.5,1.5 M1325,779.5 l1.5,1.5 M1328,776.0 l1.5,1.5" stroke="#2b5f86" stroke-width="1.1"/><path d="M1341.5,782.0 L1348.5,782.0 L1345,785.5 Z" fill="#333"/><rect x="938" y="801" width="983" height="246" fill="#262626" stroke="none" stroke-width="1" /><rect x="974" y="816" width="946" height="52" fill="#000" stroke="none" stroke-width="1" /><line x1="1054.5" y1="816" x2="1054.5" y2="868" stroke="#3a3a3a" stroke-width="1" /><line x1="1183.5" y1="816" x2="1183.5" y2="868" stroke="#3a3a3a" stroke-width="1" /><line x1="1312.5" y1="816" x2="1312.5" y2="868" stroke="#3a3a3a" stroke-width="1" /><line x1="1441.0" y1="816" x2="1441.0" y2="868" stroke="#3a3a3a" stroke-width="1" /><line x1="1569.5" y1="816" x2="1569.5" y2="868" stroke="#3a3a3a" stroke-width="1" /><line x1="1698.5" y1="816" x2="1698.5" y2="868" stroke="#3a3a3a" stroke-width="1" /><line x1="1827.2" y1="816" x2="1827.2" y2="868" stroke="#3a3a3a" stroke-width="1" /><line x1="974" y1="828.0" x2="1920" y2="828.0" stroke="#3a3a3a" stroke-width="1" /><line x1="974" y1="842.2" x2="1920" y2="842.2" stroke="#3a3a3a" stroke-width="1" /><line x1="974" y1="857.5" x2="1920" y2="857.5" stroke="#3a3a3a" stroke-width="1" /><clipPath id="c30"><rect x="974" y="816" width="946" height="52"/></clipPath><g clip-path="url(#c30)"><path d="M974,841.5l1,-2 1,-2 1,-1.9 1,-1.9 1,-1.8 1,-1.7 1,-1.6 1,-1.5 1,-1.3 1,-1.2 1,-1 1,-.9 1,-.6 1,-.5 1,-.3 1,-.1 1,.1 1,.3 1,.5 1,.6 1,.9 1,1 1,1.2 1,1.3 1,1.5 1,1.6 1,1.7 1,1.8 1,1.9 1,1.9 1,2 1,2 1,2 1,2 1,1.9 1,1.9 1,1.8 1,1.8 1,1.6 1,1.5 1,1.3 1,1.3 1,1 1,.9 1,.7 1,.5 1,.4 1,.1 1,-.1 1,-.2 1,-.5 1,-.6 1,-.8 1,-1 1,-1.1 1,-1.4 1,-1.4 1,-1.6 1,-1.7 1,-1.7 1,-1.9 1,-1.9 1,-2 1,-2 1,-2 1,-2 1,-1.9 1,-1.9 1,-1.9 1,-1.7 1,-1.7 1,-1.5 1,-1.4 1,-1.2 1,-1.1 1,-.9 1,-.8 1,-.5 1,-.4 1,-.2 1,0 1,.2 1,.5 1,.6 1,.7 1,1 1,1.1 1,1.3 1,1.4 1,1.6 1,1.6 1,1.8 1,1.8 1,1.9 1,2 1,2 1,2 1,2 1,2 1,1.9 1,1.8 1,1.8 1,1.6 1,1.6 1,1.4 1,1.3 1,1.1 1,1 1,.7 1,.6 1,.5 1,.2 1,0 1,-.2 1,-.4 1,-.5 1,-.8 1,-.9 1,-1.1 1,-1.2 1,-1.4 1,-1.5 1,-1.7 1,-1.7 1,-1.9 1,-1.9 1,-1.9 1,-2 1,-2 1,-2 1,-2 1,-1.9 1,-1.9 1,-1.7 1,-1.7 1,-1.6 1,-1.4 1,-1.4 1,-1.1 1,-1 1,-.8 1,-.6 1,-.5 1,-.2 1,-.1 1,.1 1,.4 1,.5 1,.7 1,.9 1,1 1,1.3 1,1.3 1,1.5 1,1.6 1,1.8 1,1.8 1,1.9 1,1.9 1,2 1,2 1,2 1,2 1,1.9 1,1.9 1,1.8 1,1.7 1,1.6 1,1.5 1,1.3 1,1.2 1,1 1,.9 1,.6 1,.5 1,.3 1,.1 1,-.1 1,-.3 1,-.5 1,-.6 1,-.9 1,-1 1,-1.2 1,-1.3 1,-1.5 1,-1.6 1,-1.7 1,-1.8 1,-1.9 1,-1.9 1,-2 1,-2 1,-2 1,-2 1,-1.9 1,-1.9 1,-1.8 1,-1.8 1,-1.6 1,-1.5 1,-1.3 1,-1.3 1,-1 1,-.9 1,-.7 1,-.5 1,-.4 1,-.1 1,.1 1,.2 1,.5 1,.6 1,.8 1,1 1,1.1 1,1.4 1,1.4 1,1.6 1,1.7 1,1.7 1,1.9 1,1.9 1,2 1,2 1,2 1,2 1,1.9 1,1.9 1,1.9 1,1.7 1,1.7 1,1.5 1,1.4 1,1.2 1,1.1 1,.9 1,.8 1,.5 1,.4 1,.2 1,0 1,-.2 1,-.5 1,-.6 1,-.7 1,-1 1,-1.1 1,-1.3 1,-1.4 1,-1.6 1,-1.6 1,-1.8 1,-1.8 1,-1.9 1,-2 1,-2 1,-2 1,-2 1,-2 1,-1.9 1,-1.8 1,-1.8 1,-1.6 1,-1.6 1,-1.4 1,-1.3 1,-1.1 1,-1 1,-.7 1,-.6 1,-.5 1,-.2 1,0 1,.2 1,.4 1,.5 1,.8 1,.9 1,1.1 1,1.2 1,1.4 1,1.5 1,1.7 1,1.7 1,1.9 1,1.9 1,1.9 1,2 1,2 1,2 1,2 1,1.9 1,1.9 1,1.7 1,1.7 1,1.6 1,1.4 1,1.4 1,1.1 1,1 1,.8 1,.6 1,.5 1,.2 1,.1 1,-.1 1,-.4 1,-.5 1,-.7 1,-.9 1,-1 1,-1.3 1,-1.3 1,-1.5 1,-1.6 1,-1.8 1,-1.8 1,-1.9 1,-1.9 1,-2 1,-2 1,-2 1,-2 1,-1.9 1,-1.9 1,-1.8 1,-1.7 1,-1.6 1,-1.5 1,-1.3 1,-1.2 1,-1 1,-.9 1,-.6 1,-.5 1,-.3 1,-.1 1,.1 1,.3 1,.5 1,.6 1,.9 1,1 1,1.2 1,1.3 1,1.5 1,1.6 1,1.7 1,1.8 1,1.9 1,1.9 1,2 1,2 1,2 1,2 1,1.9 1,1.9 1,1.8 1,1.8 1,1.6 1,1.5 1,1.3 1,1.3 1,1 1,.9 1,.7 1,.5 1,.4 1,.1 1,-.1 1,-.2 1,-.5 1,-.6 1,-.8 1,-1 1,-1.1 1,-1.4 1,-1.4 1,-1.6 1,-1.7 1,-1.7 1,-1.9 1,-1.9 1,-2 1,-2 1,-2 1,-2 1,-1.9 1,-1.9 1,-1.9 1,-1.7 1,-1.7 1,-1.5 1,-1.4 1,-1.2 1,-1.1 1,-.9 1,-.8 1,-.5 1,-.4 1,-.2 1,0 1,.2 1,.5 1,.6 1,.7 1,1 1,1.1 1,1.3 1,1.4 1,1.6 1,1.6 1,1.8 1,1.8 1,1.9 1,2 1,2 1,2 1,2 1,2 1,1.9 1,1.8 1,1.8 1,1.6 1,1.6 1,1.4 1,1.3 1,1.1 1,1 1,.7 1,.6 1,.5 1,.2 1,0 1,-.2 1,-.4 1,-.5 1,-.8 1,-.9 1,-1.1 1,-1.2 1,-1.4 1,-1.5 1,-1.7 1,-1.7 1,-1.9 1,-1.9 1,-1.9 1,-2 1,-2 1,-2 1,-2 1,-1.9 1,-1.9 1,-1.7 1,-1.7 1,-1.6 1,-1.4 1,-1.4 1,-1.1 1,-1 1,-.8 1,-.6 1,-.5 1,-.2 1,-.1 1,.1 1,.4 1,.5 1,.7 1,.9 1,1 1,1.3 1,1.3 1,1.5 1,1.6 1,1.8 1,1.8 1,1.9 1,1.9 1,2 1,2 1,2 1,2 1,1.9 1,1.9 1,1.8 1,1.7 1,1.6 1,1.5 1,1.3 1,1.2 1,1 1,.9 1,.6 1,.5 1,.3 1,.1 1,-.1 1,-.3 1,-.5 1,-.6 1,-.9 1,-1 1,-1.2 1,-1.3 1,-1.5 1,-1.6 1,-1.7 1,-1.8 1,-1.9 1,-1.9 1,-2 1,-2 1,-2 1,-2 1,-1.9 1,-1.9 1,-1.8 1,-1.8 1,-1.6 1,-1.5 1,-1.3 1,-1.3 1,-1 1,-.9 1,-.7 1,-.5 1,-.4 1,-.1 1,.1 1,.2 1,.5 1,.6 1,.8 1,1 1,1.1 1,1.4 1,1.4 1,1.6 1,1.7 1,1.7 1,1.9 1,1.9 1,2 1,2 1,2 1,2 1,1.9 1,1.9 1,1.9 1,1.7 1,1.7 1,1.5 1,1.4 1,1.2 1,1.1 1,.9 1,.8 1,.5 1,.4 1,.2 1,0 1,-.2 1,-.5 1,-.6 1,-.7 1,-1 1,-1.1 1,-1.3 1,-1.4 1,-1.6 1,-1.6 1,-1.8 1,-1.8 1,-1.9 1,-2 1,-2 1,-2 1,-2 1,-2 1,-1.9 1,-1.8 1,-1.8 1,-1.6 1,-1.6 1,-1.4 1,-1.3 1,-1.1 1,-1 1,-.7 1,-.6 1,-.5 1,-.2 1,0 1,.2 1,.4 1,.5 1,.8 1,.9 1,1.1 1,1.2 1,1.4 1,1.5 1,1.7 1,1.7 1,1.9 1,1.9 1,1.9 1,2 1,2 1,2 1,2 1,1.9 1,1.9 1,1.7 1,1.7 1,1.6 1,1.4 1,1.4 1,1.1 1,1 1,.8 1,.6 1,.5 1,.2 1,.1 1,-.1 1,-.4 1,-.5 1,-.7 1,-.9 1,-1 1,-1.3 1,-1.3 1,-1.5 1,-1.6 1,-1.8 1,-1.8 1,-1.9 1,-1.9 1,-2 1,-2 1,-2 1,-2 1,-1.9 1,-1.9 1,-1.8 1,-1.7 1,-1.6 1,-1.5 1,-1.3 1,-1.2 1,-1 1,-.9 1,-.6 1,-.5 1,-.3 1,-.1 1,.1 1,.3 1,.5 1,.6 1,.9 1,1 1,1.2 1,1.3 1,1.5 1,1.6 1,1.7 1,1.8 1,1.9 1,1.9 1,2 1,2 1,2 1,2 1,1.9 1,1.9 1,1.8 1,1.8 1,1.6 1,1.5 1,1.3 1,1.3 1,1 1,.9 1,.7 1,.5 1,.4 1,.1 1,-.1 1,-.2 1,-.5 1,-.6 1,-.8 1,-1 1,-1.1 1,-1.4 1,-1.4 1,-1.6 1,-1.7 1,-1.7 1,-1.9 1,-1.9 1,-2 1,-2 1,-2 1,-2 1,-1.9 1,-1.9 1,-1.9 1,-1.7 1,-1.7 1,-1.5 1,-1.4 1,-1.2 1,-1.1 1,-.9 1,-.8 1,-.5 1,-.4 1,-.2 1,0 1,.2 1,.5 1,.6 1,.7 1,1 1,1.1 1,1.3 1,1.4 1,1.6 1,1.6 1,1.8 1,1.8 1,1.9 1,2 1,2 1,2 1,2 1,2 1,1.9 1,1.8 1,1.8 1,1.6 1,1.6 1,1.4 1,1.3 1,1.1 1,1 1,.7 1,.6 1,.5 1,.2 1,0 1,-.2 1,-.4 1,-.5 1,-.8 1,-.9 1,-1.1 1,-1.2 1,-1.4 1,-1.5 1,-1.7 1,-1.7 1,-1.9 1,-1.9 1,-1.9 1,-2 1,-2 1,-2 1,-2 1,-1.9 1,-1.9 1,-1.7 1,-1.7 1,-1.6 1,-1.4 1,-1.4 1,-1.1 1,-1 1,-.8 1,-.6 1,-.5 1,-.2 1,-.1 1,.1 1,.4 1,.5 1,.7 1,.9 1,1 1,1.3 1,1.3 1,1.5 1,1.6 1,1.8 1,1.8 1,1.9 1,1.9 1,2 1,2 1,2 1,2 1,1.9 1,1.9 1,1.8 1,1.7 1,1.6 1,1.5 1,1.3 1,1.2 1,1 1,.9 1,.6 1,.5 1,.3 1,.1 1,-.1 1,-.3 1,-.5 1,-.6 1,-.9 1,-1 1,-1.2 1,-1.3 1,-1.5 1,-1.6 1,-1.7 1,-1.8 1,-1.9 1,-1.9 1,-2 1,-2 1,-2 1,-2 1,-1.9 1,-1.9 1,-1.8 1,-1.8 1,-1.6 1,-1.5 1,-1.3 1,-1.3 1,-1 1,-.9 1,-.7 1,-.5 1,-.4 1,-.1 1,.1 1,.2 1,.5 1,.6 1,.8 1,1 1,1.1 1,1.4 1,1.4 1,1.6 1,1.7 1,1.7 1,1.9 1,1.9 1,2 1,2 1,2 1,2 1,1.9 1,1.9 1,1.9 1,1.7 1,1.7 1,1.5 1,1.4 1,1.2 1,1.1 1,.9 1,.8 1,.5 1,.4 1,.2 1,0 1,-.2 1,-.5 1,-.6 1,-.7 1,-1 1,-1.1 1,-1.3 1,-1.4 1,-1.6 1,-1.6 1,-1.8 1,-1.8 1,-1.9 1,-2 1,-2 1,-2 1,-2 1,-2 1,-1.9 1,-1.8 1,-1.8 1,-1.6 1,-1.6 1,-1.4 1,-1.3 1,-1.1 1,-1 1,-.7 1,-.6 1,-.5 1,-.2 1,0 1,.2 1,.4 1,.5 1,.8 1,.9 1,1.1 1,1.2 1,1.4 1,1.5 1,1.7 1,1.7 1,1.9 1,1.9 1,1.9 1,2 1,2 1,2 1,2 1,1.9 1,1.9 1,1.7 1,1.7 1,1.6 1,1.4 1,1.4 1,1.1 1,1 1,.8" fill="none" stroke="#ffff11" stroke-width="1.7" stroke-linejoin="round" /><path d="M974,859.3l1,1 1,.7 1,.6 1,.4 1,.2 1,0 1,-.2 1,-.4 1,-.6 1,-.7 1,-1 1,-1.1 1,-1.2 1,-1.5 1,-1.5 1,-1.6 1,-1.8 1,-1.8 1,-2 1,-1.9 1,-2 1,-2 1,-2 1,-2 1,-1.9 1,-1.8 1,-1.8 1,-1.7 1,-1.5 1,-1.5 1,-1.3 1,-1.1 1,-1 1,-.8 1,-.6 1,-.4 1,-.3 1,0 1,.2 1,.3 1,.6 1,.7 1,.9 1,1.1 1,1.2 1,1.4 1,1.5 1,1.6 1,1.7 1,1.9 1,1.9 1,1.9 1,2 1,2 1,2 1,2 1,1.9 1,1.9 1,1.8 1,1.7 1,1.5 1,1.5 1,1.3 1,1.2 1,1 1,.8 1,.7 1,.4 1,.3 1,.1 1,-.1 1,-.3 1,-.5 1,-.7 1,-.9 1,-1 1,-1.2 1,-1.4 1,-1.5 1,-1.6 1,-1.7 1,-1.8 1,-1.9 1,-1.9 1,-2 1,-2 1,-2 1,-2 1,-1.9 1,-1.9 1,-1.8 1,-1.7 1,-1.6 1,-1.5 1,-1.4 1,-1.2 1,-1 1,-.9 1,-.7 1,-.5 1,-.3 1,-.1 1,.1 1,.3 1,.4 1,.7 1,.8 1,1 1,1.2 1,1.3 1,1.5 1,1.5 1,1.7 1,1.8 1,1.9 1,1.9 1,2 1,2 1,2 1,2 1,1.9 1,1.9 1,1.9 1,1.7 1,1.6 1,1.5 1,1.4 1,1.2 1,1.1 1,.9 1,.7 1,.6 1,.3 1,.2 1,0 1,-.3 1,-.4 1,-.6 1,-.8 1,-1 1,-1.1 1,-1.3 1,-1.5 1,-1.5 1,-1.7 1,-1.8 1,-1.8 1,-1.9 1,-2 1,-2 1,-2 1,-2 1,-1.9 1,-2 1,-1.8 1,-1.8 1,-1.6 1,-1.5 1,-1.5 1,-1.2 1,-1.1 1,-1 1,-.7 1,-.6 1,-.4 1,-.2 1,0 1,.2 1,.4 1,.6 1,.7 1,1 1,1.1 1,1.2 1,1.5 1,1.5 1,1.6 1,1.8 1,1.8 1,2 1,1.9 1,2 1,2 1,2 1,2 1,1.9 1,1.8 1,1.8 1,1.7 1,1.5 1,1.5 1,1.3 1,1.1 1,1 1,.8 1,.6 1,.4 1,.3 1,0 1,-.2 1,-.3 1,-.6 1,-.7 1,-.9 1,-1.1 1,-1.2 1,-1.4 1,-1.5 1,-1.6 1,-1.7 1,-1.9 1,-1.9 1,-1.9 1,-2 1,-2 1,-2 1,-2 1,-1.9 1,-1.9 1,-1.8 1,-1.7 1,-1.5 1,-1.5 1,-1.3 1,-1.2 1,-1 1,-.8 1,-.7 1,-.4 1,-.3 1,-.1 1,.1 1,.3 1,.5 1,.7 1,.9 1,1 1,1.2 1,1.4 1,1.5 1,1.6 1,1.7 1,1.8 1,1.9 1,1.9 1,2 1,2 1,2 1,2 1,1.9 1,1.9 1,1.8 1,1.7 1,1.6 1,1.5 1,1.4 1,1.2 1,1 1,.9 1,.7 1,.5 1,.3 1,.1 1,-.1 1,-.3 1,-.4 1,-.7 1,-.8 1,-1 1,-1.2 1,-1.3 1,-1.5 1,-1.5 1,-1.7 1,-1.8 1,-1.9 1,-1.9 1,-2 1,-2 1,-2 1,-2 1,-1.9 1,-1.9 1,-1.9 1,-1.7 1,-1.6 1,-1.5 1,-1.4 1,-1.2 1,-1.1 1,-.9 1,-.7 1,-.6 1,-.3 1,-.2 1,0 1,.3 1,.4 1,.6 1,.8 1,1 1,1.1 1,1.3 1,1.5 1,1.5 1,1.7 1,1.8 1,1.8 1,1.9 1,2 1,2 1,2 1,2 1,1.9 1,2 1,1.8 1,1.8 1,1.6 1,1.5 1,1.5 1,1.2 1,1.1 1,1 1,.7 1,.6 1,.4 1,.2 1,0 1,-.2 1,-.4 1,-.6 1,-.7 1,-1 1,-1.1 1,-1.2 1,-1.5 1,-1.5 1,-1.6 1,-1.8 1,-1.8 1,-2 1,-1.9 1,-2 1,-2 1,-2 1,-2 1,-1.9 1,-1.8 1,-1.8 1,-1.7 1,-1.5 1,-1.5 1,-1.3 1,-1.1 1,-1 1,-.8 1,-.6 1,-.4 1,-.3 1,0 1,.2 1,.3 1,.6 1,.7 1,.9 1,1.1 1,1.2 1,1.4 1,1.5 1,1.6 1,1.7 1,1.9 1,1.9 1,1.9 1,2 1,2 1,2 1,2 1,1.9 1,1.9 1,1.8 1,1.7 1,1.5 1,1.5 1,1.3 1,1.2 1,1 1,.8 1,.7 1,.4 1,.3 1,.1 1,-.1 1,-.3 1,-.5 1,-.7 1,-.9 1,-1 1,-1.2 1,-1.4 1,-1.5 1,-1.6 1,-1.7 1,-1.8 1,-1.9 1,-1.9 1,-2 1,-2 1,-2 1,-2 1,-1.9 1,-1.9 1,-1.8 1,-1.7 1,-1.6 1,-1.5 1,-1.4 1,-1.2 1,-1 1,-.9 1,-.7 1,-.5 1,-.3 1,-.1 1,.1 1,.3 1,.4 1,.7 1,.8 1,1 1,1.2 1,1.3 1,1.5 1,1.5 1,1.7 1,1.8 1,1.9 1,1.9 1,2 1,2 1,2 1,2 1,1.9 1,1.9 1,1.9 1,1.7 1,1.6 1,1.5 1,1.4 1,1.2 1,1.1 1,.9 1,.7 1,.6 1,.3 1,.2 1,0 1,-.3 1,-.4 1,-.6 1,-.8 1,-1 1,-1.1 1,-1.3 1,-1.5 1,-1.5 1,-1.7 1,-1.8 1,-1.8 1,-1.9 1,-2 1,-2 1,-2 1,-2 1,-1.9 1,-2 1,-1.8 1,-1.8 1,-1.6 1,-1.5 1,-1.5 1,-1.2 1,-1.1 1,-1 1,-.7 1,-.6 1,-.4 1,-.2 1,0 1,.2 1,.4 1,.6 1,.7 1,1 1,1.1 1,1.2 1,1.5 1,1.5 1,1.6 1,1.8 1,1.8 1,2 1,1.9 1,2 1,2 1,2 1,2 1,1.9 1,1.8 1,1.8 1,1.7 1,1.5 1,1.5 1,1.3 1,1.1 1,1 1,.8 1,.6 1,.4 1,.3 1,0 1,-.2 1,-.3 1,-.6 1,-.7 1,-.9 1,-1.1 1,-1.2 1,-1.4 1,-1.5 1,-1.6 1,-1.7 1,-1.9 1,-1.9 1,-1.9 1,-2 1,-2 1,-2 1,-2 1,-1.9 1,-1.9 1,-1.8 1,-1.7 1,-1.5 1,-1.5 1,-1.3 1,-1.2 1,-1 1,-.8 1,-.7 1,-.4 1,-.3 1,-.1 1,.1 1,.3 1,.5 1,.7 1,.9 1,1 1,1.2 1,1.4 1,1.5 1,1.6 1,1.7 1,1.8 1,1.9 1,1.9 1,2 1,2 1,2 1,2 1,1.9 1,1.9 1,1.8 1,1.7 1,1.6 1,1.5 1,1.4 1,1.2 1,1 1,.9 1,.7 1,.5 1,.3 1,.1 1,-.1 1,-.3 1,-.4 1,-.7 1,-.8 1,-1 1,-1.2 1,-1.3 1,-1.5 1,-1.5 1,-1.7 1,-1.8 1,-1.9 1,-1.9 1,-2 1,-2 1,-2 1,-2 1,-1.9 1,-1.9 1,-1.9 1,-1.7 1,-1.6 1,-1.5 1,-1.4 1,-1.2 1,-1.1 1,-.9 1,-.7 1,-.6 1,-.3 1,-.2 1,0 1,.3 1,.4 1,.6 1,.8 1,1 1,1.1 1,1.3 1,1.5 1,1.5 1,1.7 1,1.8 1,1.8 1,1.9 1,2 1,2 1,2 1,2 1,1.9 1,2 1,1.8 1,1.8 1,1.6 1,1.5 1,1.5 1,1.2 1,1.1 1,1 1,.7 1,.6 1,.4 1,.2 1,0 1,-.2 1,-.4 1,-.6 1,-.7 1,-1 1,-1.1 1,-1.2 1,-1.5 1,-1.5 1,-1.6 1,-1.8 1,-1.8 1,-2 1,-1.9 1,-2 1,-2 1,-2 1,-2 1,-1.9 1,-1.8 1,-1.8 1,-1.7 1,-1.5 1,-1.5 1,-1.3 1,-1.1 1,-1 1,-.8 1,-.6 1,-.4 1,-.3 1,0 1,.2 1,.3 1,.6 1,.7 1,.9 1,1.1 1,1.2 1,1.4 1,1.5 1,1.6 1,1.7 1,1.9 1,1.9 1,1.9 1,2 1,2 1,2 1,2 1,1.9 1,1.9 1,1.8 1,1.7 1,1.5 1,1.5 1,1.3 1,1.2 1,1 1,.8 1,.7 1,.4 1,.3 1,.1 1,-.1 1,-.3 1,-.5 1,-.7 1,-.9 1,-1 1,-1.2 1,-1.4 1,-1.5 1,-1.6 1,-1.7 1,-1.8 1,-1.9 1,-1.9 1,-2 1,-2 1,-2 1,-2 1,-1.9 1,-1.9 1,-1.8 1,-1.7 1,-1.6 1,-1.5 1,-1.4 1,-1.2 1,-1 1,-.9 1,-.7 1,-.5 1,-.3 1,-.1 1,.1 1,.3 1,.4 1,.7 1,.8 1,1 1,1.2 1,1.3 1,1.5 1,1.5 1,1.7 1,1.8 1,1.9 1,1.9 1,2 1,2 1,2 1,2 1,1.9 1,1.9 1,1.9 1,1.7 1,1.6 1,1.5 1,1.4 1,1.2 1,1.1 1,.9 1,.7 1,.6 1,.3 1,.2 1,0 1,-.3 1,-.4 1,-.6 1,-.8 1,-1 1,-1.1 1,-1.3 1,-1.5 1,-1.5 1,-1.7 1,-1.8 1,-1.8 1,-1.9 1,-2 1,-2 1,-2 1,-2 1,-1.9 1,-2 1,-1.8 1,-1.8 1,-1.6 1,-1.5 1,-1.5 1,-1.2 1,-1.1 1,-1 1,-.7 1,-.6 1,-.4 1,-.2 1,0 1,.2 1,.4 1,.6 1,.7 1,1 1,1.1 1,1.2 1,1.5 1,1.5 1,1.6 1,1.8 1,1.8 1,2 1,1.9 1,2 1,2 1,2 1,2 1,1.9 1,1.8 1,1.8 1,1.7 1,1.5 1,1.5 1,1.3 1,1.1 1,1 1,.8 1,.6 1,.4 1,.3 1,0 1,-.2 1,-.3 1,-.6 1,-.7 1,-.9 1,-1.1 1,-1.2 1,-1.4 1,-1.5 1,-1.6 1,-1.7 1,-1.9 1,-1.9 1,-1.9 1,-2 1,-2 1,-2 1,-2 1,-1.9 1,-1.9 1,-1.8 1,-1.7 1,-1.5 1,-1.5 1,-1.3 1,-1.2 1,-1 1,-.8 1,-.7 1,-.4 1,-.3 1,-.1 1,.1 1,.3 1,.5 1,.7 1,.9 1,1 1,1.2 1,1.4 1,1.5 1,1.6 1,1.7 1,1.8 1,1.9 1,1.9 1,2 1,2 1,2 1,2 1,1.9 1,1.9 1,1.8 1,1.7 1,1.6 1,1.5 1,1.4 1,1.2 1,1 1,.9 1,.7 1,.5 1,.3 1,.1 1,-.1 1,-.3 1,-.4 1,-.7 1,-.8 1,-1 1,-1.2 1,-1.3 1,-1.5 1,-1.5 1,-1.7 1,-1.8 1,-1.9 1,-1.9 1,-2 1,-2 1,-2 1,-2 1,-1.9 1,-1.9 1,-1.9 1,-1.7 1,-1.6 1,-1.5 1,-1.4 1,-1.2 1,-1.1 1,-.9 1,-.7 1,-.6 1,-.3 1,-.2 1,0 1,.3 1,.4 1,.6 1,.8 1,1 1,1.1" fill="none" stroke="#139fff" stroke-width="1.7" stroke-linejoin="round" /><path d="M974,824.5l1,1.2 1,1.3 1,1.5 1,1.5 1,1.7 1,1.8 1,1.9 1,1.9 1,2 1,2 1,2 1,2 1,1.9 1,1.9 1,1.9 1,1.7 1,1.6 1,1.5 1,1.4 1,1.2 1,1.1 1,.9 1,.7 1,.6 1,.3 1,.2 1,0 1,-.3 1,-.4 1,-.6 1,-.8 1,-1 1,-1.1 1,-1.3 1,-1.5 1,-1.5 1,-1.7 1,-1.8 1,-1.8 1,-1.9 1,-2 1,-2 1,-2 1,-2 1,-1.9 1,-2 1,-1.8 1,-1.8 1,-1.6 1,-1.5 1,-1.5 1,-1.2 1,-1.1 1,-1 1,-.7 1,-.6 1,-.4 1,-.2 1,0 1,.2 1,.4 1,.6 1,.7 1,1 1,1.1 1,1.2 1,1.5 1,1.5 1,1.6 1,1.8 1,1.8 1,2 1,1.9 1,2 1,2 1,2 1,2 1,1.9 1,1.8 1,1.8 1,1.7 1,1.5 1,1.5 1,1.3 1,1.1 1,1 1,.8 1,.6 1,.4 1,.3 1,0 1,-.2 1,-.3 1,-.6 1,-.7 1,-.9 1,-1.1 1,-1.2 1,-1.4 1,-1.5 1,-1.6 1,-1.7 1,-1.9 1,-1.9 1,-1.9 1,-2 1,-2 1,-2 1,-2 1,-1.9 1,-1.9 1,-1.8 1,-1.7 1,-1.5 1,-1.5 1,-1.3 1,-1.2 1,-1 1,-.8 1,-.7 1,-.4 1,-.3 1,-.1 1,.1 1,.3 1,.5 1,.7 1,.9 1,1 1,1.2 1,1.4 1,1.5 1,1.6 1,1.7 1,1.8 1,1.9 1,1.9 1,2 1,2 1,2 1,2 1,1.9 1,1.9 1,1.8 1,1.7 1,1.6 1,1.5 1,1.4 1,1.2 1,1 1,.9 1,.7 1,.5 1,.3 1,.1 1,-.1 1,-.3 1,-.4 1,-.7 1,-.8 1,-1 1,-1.2 1,-1.3 1,-1.5 1,-1.5 1,-1.7 1,-1.8 1,-1.9 1,-1.9 1,-2 1,-2 1,-2 1,-2 1,-1.9 1,-1.9 1,-1.9 1,-1.7 1,-1.6 1,-1.5 1,-1.4 1,-1.2 1,-1.1 1,-.9 1,-.7 1,-.6 1,-.3 1,-.2 1,0 1,.3 1,.4 1,.6 1,.8 1,1 1,1.1 1,1.3 1,1.5 1,1.5 1,1.7 1,1.8 1,1.8 1,1.9 1,2 1,2 1,2 1,2 1,1.9 1,2 1,1.8 1,1.8 1,1.6 1,1.5 1,1.5 1,1.2 1,1.1 1,1 1,.7 1,.6 1,.4 1,.2 1,0 1,-.2 1,-.4 1,-.6 1,-.7 1,-1 1,-1.1 1,-1.2 1,-1.5 1,-1.5 1,-1.6 1,-1.8 1,-1.8 1,-2 1,-1.9 1,-2 1,-2 1,-2 1,-2 1,-1.9 1,-1.8 1,-1.8 1,-1.7 1,-1.5 1,-1.5 1,-1.3 1,-1.1 1,-1 1,-.8 1,-.6 1,-.4 1,-.3 1,0 1,.2 1,.3 1,.6 1,.7 1,.9 1,1.1 1,1.2 1,1.4 1,1.5 1,1.6 1,1.7 1,1.9 1,1.9 1,1.9 1,2 1,2 1,2 1,2 1,1.9 1,1.9 1,1.8 1,1.7 1,1.5 1,1.5 1,1.3 1,1.2 1,1 1,.8 1,.7 1,.4 1,.3 1,.1 1,-.1 1,-.3 1,-.5 1,-.7 1,-.9 1,-1 1,-1.2 1,-1.4 1,-1.5 1,-1.6 1,-1.7 1,-1.8 1,-1.9 1,-1.9 1,-2 1,-2 1,-2 1,-2 1,-1.9 1,-1.9 1,-1.8 1,-1.7 1,-1.6 1,-1.5 1,-1.4 1,-1.2 1,-1 1,-.9 1,-.7 1,-.5 1,-.3 1,-.1 1,.1 1,.3 1,.4 1,.7 1,.8 1,1 1,1.2 1,1.3 1,1.5 1,1.5 1,1.7 1,1.8 1,1.9 1,1.9 1,2 1,2 1,2 1,2 1,1.9 1,1.9 1,1.9 1,1.7 1,1.6 1,1.5 1,1.4 1,1.2 1,1.1 1,.9 1,.7 1,.6 1,.3 1,.2 1,0 1,-.3 1,-.4 1,-.6 1,-.8 1,-1 1,-1.1 1,-1.3 1,-1.5 1,-1.5 1,-1.7 1,-1.8 1,-1.8 1,-1.9 1,-2 1,-2 1,-2 1,-2 1,-1.9 1,-2 1,-1.8 1,-1.8 1,-1.6 1,-1.5 1,-1.5 1,-1.2 1,-1.1 1,-1 1,-.7 1,-.6 1,-.4 1,-.2 1,0 1,.2 1,.4 1,.6 1,.7 1,1 1,1.1 1,1.2 1,1.5 1,1.5 1,1.6 1,1.8 1,1.8 1,2 1,1.9 1,2 1,2 1,2 1,2 1,1.9 1,1.8 1,1.8 1,1.7 1,1.5 1,1.5 1,1.3 1,1.1 1,1 1,.8 1,.6 1,.4 1,.3 1,0 1,-.2 1,-.3 1,-.6 1,-.7 1,-.9 1,-1.1 1,-1.2 1,-1.4 1,-1.5 1,-1.6 1,-1.7 1,-1.9 1,-1.9 1,-1.9 1,-2 1,-2 1,-2 1,-2 1,-1.9 1,-1.9 1,-1.8 1,-1.7 1,-1.5 1,-1.5 1,-1.3 1,-1.2 1,-1 1,-.8 1,-.7 1,-.4 1,-.3 1,-.1 1,.1 1,.3 1,.5 1,.7 1,.9 1,1 1,1.2 1,1.4 1,1.5 1,1.6 1,1.7 1,1.8 1,1.9 1,1.9 1,2 1,2 1,2 1,2 1,1.9 1,1.9 1,1.8 1,1.7 1,1.6 1,1.5 1,1.4 1,1.2 1,1 1,.9 1,.7 1,.5 1,.3 1,.1 1,-.1 1,-.3 1,-.4 1,-.7 1,-.8 1,-1 1,-1.2 1,-1.3 1,-1.5 1,-1.5 1,-1.7 1,-1.8 1,-1.9 1,-1.9 1,-2 1,-2 1,-2 1,-2 1,-1.9 1,-1.9 1,-1.9 1,-1.7 1,-1.6 1,-1.5 1,-1.4 1,-1.2 1,-1.1 1,-.9 1,-.7 1,-.6 1,-.3 1,-.2 1,0 1,.3 1,.4 1,.6 1,.8 1,1 1,1.1 1,1.3 1,1.5 1,1.5 1,1.7 1,1.8 1,1.8 1,1.9 1,2 1,2 1,2 1,2 1,1.9 1,2 1,1.8 1,1.8 1,1.6 1,1.5 1,1.5 1,1.2 1,1.1 1,1 1,.7 1,.6 1,.4 1,.2 1,0 1,-.2 1,-.4 1,-.6 1,-.7 1,-1 1,-1.1 1,-1.2 1,-1.5 1,-1.5 1,-1.6 1,-1.8 1,-1.8 1,-2 1,-1.9 1,-2 1,-2 1,-2 1,-2 1,-1.9 1,-1.8 1,-1.8 1,-1.7 1,-1.5 1,-1.5 1,-1.3 1,-1.1 1,-1 1,-.8 1,-.6 1,-.4 1,-.3 1,0 1,.2 1,.3 1,.6 1,.7 1,.9 1,1.1 1,1.2 1,1.4 1,1.5 1,1.6 1,1.7 1,1.9 1,1.9 1,1.9 1,2 1,2 1,2 1,2 1,1.9 1,1.9 1,1.8 1,1.7 1,1.5 1,1.5 1,1.3 1,1.2 1,1 1,.8 1,.7 1,.4 1,.3 1,.1 1,-.1 1,-.3 1,-.5 1,-.7 1,-.9 1,-1 1,-1.2 1,-1.4 1,-1.5 1,-1.6 1,-1.7 1,-1.8 1,-1.9 1,-1.9 1,-2 1,-2 1,-2 1,-2 1,-1.9 1,-1.9 1,-1.8 1,-1.7 1,-1.6 1,-1.5 1,-1.4 1,-1.2 1,-1 1,-.9 1,-.7 1,-.5 1,-.3 1,-.1 1,.1 1,.3 1,.4 1,.7 1,.8 1,1 1,1.2 1,1.3 1,1.5 1,1.5 1,1.7 1,1.8 1,1.9 1,1.9 1,2 1,2 1,2 1,2 1,1.9 1,1.9 1,1.9 1,1.7 1,1.6 1,1.5 1,1.4 1,1.2 1,1.1 1,.9 1,.7 1,.6 1,.3 1,.2 1,0 1,-.3 1,-.4 1,-.6 1,-.8 1,-1 1,-1.1 1,-1.3 1,-1.5 1,-1.5 1,-1.7 1,-1.8 1,-1.8 1,-1.9 1,-2 1,-2 1,-2 1,-2 1,-1.9 1,-2 1,-1.8 1,-1.8 1,-1.6 1,-1.5 1,-1.5 1,-1.2 1,-1.1 1,-1 1,-.7 1,-.6 1,-.4 1,-.2 1,0 1,.2 1,.4 1,.6 1,.7 1,1 1,1.1 1,1.2 1,1.5 1,1.5 1,1.6 1,1.8 1,1.8 1,2 1,1.9 1,2 1,2 1,2 1,2 1,1.9 1,1.8 1,1.8 1,1.7 1,1.5 1,1.5 1,1.3 1,1.1 1,1 1,.8 1,.6 1,.4 1,.3 1,0 1,-.2 1,-.3 1,-.6 1,-.7 1,-.9 1,-1.1 1,-1.2 1,-1.4 1,-1.5 1,-1.6 1,-1.7 1,-1.9 1,-1.9 1,-1.9 1,-2 1,-2 1,-2 1,-2 1,-1.9 1,-1.9 1,-1.8 1,-1.7 1,-1.5 1,-1.5 1,-1.3 1,-1.2 1,-1 1,-.8 1,-.7 1,-.4 1,-.3 1,-.1 1,.1 1,.3 1,.5 1,.7 1,.9 1,1 1,1.2 1,1.4 1,1.5 1,1.6 1,1.7 1,1.8 1,1.9 1,1.9 1,2 1,2 1,2 1,2 1,1.9 1,1.9 1,1.8 1,1.7 1,1.6 1,1.5 1,1.4 1,1.2 1,1 1,.9 1,.7 1,.5 1,.3 1,.1 1,-.1 1,-.3 1,-.4 1,-.7 1,-.8 1,-1 1,-1.2 1,-1.3 1,-1.5 1,-1.5 1,-1.7 1,-1.8 1,-1.9 1,-1.9 1,-2 1,-2 1,-2 1,-2 1,-1.9 1,-1.9 1,-1.9 1,-1.7 1,-1.6 1,-1.5 1,-1.4 1,-1.2 1,-1.1 1,-.9 1,-.7 1,-.6 1,-.3 1,-.2 1,0 1,.3 1,.4 1,.6 1,.8 1,1 1,1.1 1,1.3 1,1.5 1,1.5 1,1.7 1,1.8 1,1.8 1,1.9 1,2 1,2 1,2 1,2 1,1.9 1,2 1,1.8 1,1.8 1,1.6 1,1.5 1,1.5 1,1.2 1,1.1 1,1 1,.7 1,.6 1,.4 1,.2 1,0 1,-.2 1,-.4 1,-.6 1,-.7 1,-1 1,-1.1 1,-1.2 1,-1.5 1,-1.5 1,-1.6 1,-1.8 1,-1.8 1,-2 1,-1.9 1,-2 1,-2 1,-2 1,-2 1,-1.9 1,-1.8 1,-1.8 1,-1.7 1,-1.5 1,-1.5 1,-1.3 1,-1.1 1,-1 1,-.8 1,-.6 1,-.4 1,-.3 1,0 1,.2 1,.3 1,.6 1,.7 1,.9 1,1.1 1,1.2 1,1.4 1,1.5 1,1.6 1,1.7 1,1.9 1,1.9 1,1.9 1,2 1,2 1,2 1,2 1,1.9 1,1.9 1,1.8 1,1.7 1,1.5 1,1.5 1,1.3 1,1.2 1,1 1,.8 1,.7 1,.4 1,.3 1,.1 1,-.1 1,-.3 1,-.5 1,-.7 1,-.9 1,-1 1,-1.2 1,-1.4 1,-1.5 1,-1.6 1,-1.7 1,-1.8 1,-1.9 1,-1.9 1,-2 1,-2 1,-2 1,-2" fill="none" stroke="#ff6929" stroke-width="1.7" stroke-linejoin="round" /></g><rect x="974.5" y="816.5" width="950" height="51" fill="none" stroke="#6b6b6b" stroke-width="1" /><text x="968" y="833.0" font-size="15" fill="#c4c4c4" text-anchor="end" >200</text><text x="968" y="847.2" font-size="15" fill="#c4c4c4" text-anchor="end" >0</text><text x="968" y="862.5" font-size="15" fill="#c4c4c4" text-anchor="end" >-200</text><rect x="974" y="896.8" width="946" height="52.90000000000009" fill="#000" stroke="none" stroke-width="1" /><line x1="1054.5" y1="896.8" x2="1054.5" y2="949.7" stroke="#3a3a3a" stroke-width="1" /><line x1="1183.5" y1="896.8" x2="1183.5" y2="949.7" stroke="#3a3a3a" stroke-width="1" /><line x1="1312.5" y1="896.8" x2="1312.5" y2="949.7" stroke="#3a3a3a" stroke-width="1" /><line x1="1441.0" y1="896.8" x2="1441.0" y2="949.7" stroke="#3a3a3a" stroke-width="1" /><line x1="1569.5" y1="896.8" x2="1569.5" y2="949.7" stroke="#3a3a3a" stroke-width="1" /><line x1="1698.5" y1="896.8" x2="1698.5" y2="949.7" stroke="#3a3a3a" stroke-width="1" /><line x1="1827.2" y1="896.8" x2="1827.2" y2="949.7" stroke="#3a3a3a" stroke-width="1" /><line x1="974" y1="910.4" x2="1920" y2="910.4" stroke="#3a3a3a" stroke-width="1" /><line x1="974" y1="924.0" x2="1920" y2="924.0" stroke="#3a3a3a" stroke-width="1" /><line x1="974" y1="937.5" x2="1920" y2="937.5" stroke="#3a3a3a" stroke-width="1" /><clipPath id="c31"><rect x="974" y="896.8" width="946" height="52.90000000000009"/></clipPath><g clip-path="url(#c31)"><path d="M974,922l1,-1.9 1,-1.9 1,-1.8 1,-1.7 1,-1.7 1,-1.5 1,-1.4 1,-1.4 1,-1.1 1,-1.1 1,-.8 1,-.7 1,-.5 1,-.3 1,-.2 1,0 1,.3 1,.4 1,.6 1,.7 1,.9 1,1.1 1,1.2 1,1.4 1,1.5 1,1.6 1,1.7 1,1.7 1,1.9 1,1.8 1,1.9 1,1.9 1,1.9 1,1.9 1,1.8 1,1.8 1,1.6 1,1.6 1,1.5 1,1.3 1,1.2 1,1.1 1,.9 1,.7 1,.5 1,.4 1,.2 1,0 1,-.2 1,-.4 1,-.5 1,-.7 1,-.9 1,-1.1 1,-1.2 1,-1.3 1,-1.5 1,-1.6 1,-1.6 1,-1.8 1,-1.8 1,-1.9 1,-1.9 1,-1.9 1,-1.9 1,-1.8 1,-1.9 1,-1.7 1,-1.7 1,-1.6 1,-1.5 1,-1.4 1,-1.2 1,-1.1 1,-.9 1,-.7 1,-.6 1,-.4 1,-.3 1,0 1,.2 1,.3 1,.5 1,.7 1,.8 1,1.1 1,1.1 1,1.4 1,1.4 1,1.5 1,1.7 1,1.7 1,1.8 1,1.9 1,1.9 1,1.9 1,1.9 1,1.9 1,1.8 1,1.8 1,1.7 1,1.6 1,1.5 1,1.4 1,1.2 1,1.2 1,.9 1,.8 1,.6 1,.5 1,.2 1,.1 1,-.1 1,-.3 1,-.5 1,-.6 1,-.9 1,-1 1,-1.1 1,-1.3 1,-1.4 1,-1.5 1,-1.7 1,-1.7 1,-1.8 1,-1.8 1,-1.9 1,-1.9 1,-1.9 1,-1.9 1,-1.8 1,-1.8 1,-1.7 1,-1.7 1,-1.5 1,-1.4 1,-1.3 1,-1.1 1,-1 1,-.9 1,-.6 1,-.5 1,-.3 1,-.1 1,.1 1,.2 1,.5 1,.6 1,.8 1,.9 1,1.2 1,1.2 1,1.4 1,1.5 1,1.6 1,1.7 1,1.8 1,1.8 1,1.9 1,1.9 1,1.9 1,1.9 1,1.9 1,1.8 1,1.7 1,1.7 1,1.5 1,1.4 1,1.4 1,1.1 1,1.1 1,.8 1,.7 1,.5 1,.3 1,.2 1,0 1,-.3 1,-.4 1,-.6 1,-.7 1,-.9 1,-1.1 1,-1.2 1,-1.4 1,-1.5 1,-1.6 1,-1.7 1,-1.7 1,-1.9 1,-1.8 1,-1.9 1,-1.9 1,-1.9 1,-1.9 1,-1.8 1,-1.8 1,-1.6 1,-1.6 1,-1.5 1,-1.3 1,-1.2 1,-1.1 1,-.9 1,-.7 1,-.5 1,-.4 1,-.2 1,0 1,.2 1,.4 1,.5 1,.7 1,.9 1,1.1 1,1.2 1,1.3 1,1.5 1,1.6 1,1.6 1,1.8 1,1.8 1,1.9 1,1.9 1,1.9 1,1.9 1,1.8 1,1.9 1,1.7 1,1.7 1,1.6 1,1.5 1,1.4 1,1.2 1,1.1 1,.9 1,.7 1,.6 1,.4 1,.3 1,0 1,-.2 1,-.3 1,-.5 1,-.7 1,-.8 1,-1.1 1,-1.1 1,-1.4 1,-1.4 1,-1.5 1,-1.7 1,-1.7 1,-1.8 1,-1.9 1,-1.9 1,-1.9 1,-1.9 1,-1.9 1,-1.8 1,-1.8 1,-1.7 1,-1.6 1,-1.5 1,-1.4 1,-1.2 1,-1.2 1,-.9 1,-.8 1,-.6 1,-.5 1,-.2 1,-.1 1,.1 1,.3 1,.5 1,.6 1,.9 1,1 1,1.1 1,1.3 1,1.4 1,1.5 1,1.7 1,1.7 1,1.8 1,1.8 1,1.9 1,1.9 1,1.9 1,1.9 1,1.8 1,1.8 1,1.7 1,1.7 1,1.5 1,1.4 1,1.3 1,1.1 1,1 1,.9 1,.6 1,.5 1,.3 1,.1 1,-.1 1,-.2 1,-.5 1,-.6 1,-.8 1,-.9 1,-1.2 1,-1.2 1,-1.4 1,-1.5 1,-1.6 1,-1.7 1,-1.8 1,-1.8 1,-1.9 1,-1.9 1,-1.9 1,-1.9 1,-1.9 1,-1.8 1,-1.7 1,-1.7 1,-1.5 1,-1.4 1,-1.4 1,-1.1 1,-1.1 1,-.8 1,-.7 1,-.5 1,-.3 1,-.2 1,0 1,.3 1,.4 1,.6 1,.7 1,.9 1,1.1 1,1.2 1,1.4 1,1.5 1,1.6 1,1.7 1,1.7 1,1.9 1,1.8 1,1.9 1,1.9 1,1.9 1,1.9 1,1.8 1,1.8 1,1.6 1,1.6 1,1.5 1,1.3 1,1.2 1,1.1 1,.9 1,.7 1,.5 1,.4 1,.2 1,0 1,-.2 1,-.4 1,-.5 1,-.7 1,-.9 1,-1.1 1,-1.2 1,-1.3 1,-1.5 1,-1.6 1,-1.6 1,-1.8 1,-1.8 1,-1.9 1,-1.9 1,-1.9 1,-1.9 1,-1.8 1,-1.9 1,-1.7 1,-1.7 1,-1.6 1,-1.5 1,-1.4 1,-1.2 1,-1.1 1,-.9 1,-.7 1,-.6 1,-.4 1,-.3 1,0 1,.2 1,.3 1,.5 1,.7 1,.8 1,1.1 1,1.1 1,1.4 1,1.4 1,1.5 1,1.7 1,1.7 1,1.8 1,1.9 1,1.9 1,1.9 1,1.9 1,1.9 1,1.8 1,1.8 1,1.7 1,1.6 1,1.5 1,1.4 1,1.2 1,1.2 1,.9 1,.8 1,.6 1,.5 1,.2 1,.1 1,-.1 1,-.3 1,-.5 1,-.6 1,-.9 1,-1 1,-1.1 1,-1.3 1,-1.4 1,-1.5 1,-1.7 1,-1.7 1,-1.8 1,-1.8 1,-1.9 1,-1.9 1,-1.9 1,-1.9 1,-1.8 1,-1.8 1,-1.7 1,-1.7 1,-1.5 1,-1.4 1,-1.3 1,-1.1 1,-1 1,-.9 1,-.6 1,-.5 1,-.3 1,-.1 1,.1 1,.2 1,.5 1,.6 1,.8 1,.9 1,1.2 1,1.2 1,1.4 1,1.5 1,1.6 1,1.7 1,1.8 1,1.8 1,1.9 1,1.9 1,1.9 1,1.9 1,1.9 1,1.8 1,1.7 1,1.7 1,1.5 1,1.4 1,1.4 1,1.1 1,1.1 1,.8 1,.7 1,.5 1,.3 1,.2 1,0 1,-.3 1,-.4 1,-.6 1,-.7 1,-.9 1,-1.1 1,-1.2 1,-1.4 1,-1.5 1,-1.6 1,-1.7 1,-1.7 1,-1.9 1,-1.8 1,-1.9 1,-1.9 1,-1.9 1,-1.9 1,-1.8 1,-1.8 1,-1.6 1,-1.6 1,-1.5 1,-1.3 1,-1.2 1,-1.1 1,-.9 1,-.7 1,-.5 1,-.4 1,-.2 1,0 1,.2 1,.4 1,.5 1,.7 1,.9 1,1.1 1,1.2 1,1.3 1,1.5 1,1.6 1,1.6 1,1.8 1,1.8 1,1.9 1,1.9 1,1.9 1,1.9 1,1.8 1,1.9 1,1.7 1,1.7 1,1.6 1,1.5 1,1.4 1,1.2 1,1.1 1,.9 1,.7 1,.6 1,.4 1,.3 1,0 1,-.2 1,-.3 1,-.5 1,-.7 1,-.8 1,-1.1 1,-1.1 1,-1.4 1,-1.4 1,-1.5 1,-1.7 1,-1.7 1,-1.8 1,-1.9 1,-1.9 1,-1.9 1,-1.9 1,-1.9 1,-1.8 1,-1.8 1,-1.7 1,-1.6 1,-1.5 1,-1.4 1,-1.2 1,-1.2 1,-.9 1,-.8 1,-.6 1,-.5 1,-.2 1,-.1 1,.1 1,.3 1,.5 1,.6 1,.9 1,1 1,1.1 1,1.3 1,1.4 1,1.5 1,1.7 1,1.7 1,1.8 1,1.8 1,1.9 1,1.9 1,1.9 1,1.9 1,1.8 1,1.8 1,1.7 1,1.7 1,1.5 1,1.4 1,1.3 1,1.1 1,1 1,.9 1,.6 1,.5 1,.3 1,.1 1,-.1 1,-.2 1,-.5 1,-.6 1,-.8 1,-.9 1,-1.2 1,-1.2 1,-1.4 1,-1.5 1,-1.6 1,-1.7 1,-1.8 1,-1.8 1,-1.9 1,-1.9 1,-1.9 1,-1.9 1,-1.9 1,-1.8 1,-1.7 1,-1.7 1,-1.5 1,-1.4 1,-1.4 1,-1.1 1,-1.1 1,-.8 1,-.7 1,-.5 1,-.3 1,-.2 1,0 1,.3 1,.4 1,.6 1,.7 1,.9 1,1.1 1,1.2 1,1.4 1,1.5 1,1.6 1,1.7 1,1.7 1,1.9 1,1.8 1,1.9 1,1.9 1,1.9 1,1.9 1,1.8 1,1.8 1,1.6 1,1.6 1,1.5 1,1.3 1,1.2 1,1.1 1,.9 1,.7 1,.5 1,.4 1,.2 1,0 1,-.2 1,-.4 1,-.5 1,-.7 1,-.9 1,-1.1 1,-1.2 1,-1.3 1,-1.5 1,-1.6 1,-1.6 1,-1.8 1,-1.8 1,-1.9 1,-1.9 1,-1.9 1,-1.9 1,-1.8 1,-1.9 1,-1.7 1,-1.7 1,-1.6 1,-1.5 1,-1.4 1,-1.2 1,-1.1 1,-.9 1,-.7 1,-.6 1,-.4 1,-.3 1,0 1,.2 1,.3 1,.5 1,.7 1,.8 1,1.1 1,1.1 1,1.4 1,1.4 1,1.5 1,1.7 1,1.7 1,1.8 1,1.9 1,1.9 1,1.9 1,1.9 1,1.9 1,1.8 1,1.8 1,1.7 1,1.6 1,1.5 1,1.4 1,1.2 1,1.2 1,.9 1,.8 1,.6 1,.5 1,.2 1,.1 1,-.1 1,-.3 1,-.5 1,-.6 1,-.9 1,-1 1,-1.1 1,-1.3 1,-1.4 1,-1.5 1,-1.7 1,-1.7 1,-1.8 1,-1.8 1,-1.9 1,-1.9 1,-1.9 1,-1.9 1,-1.8 1,-1.8 1,-1.7 1,-1.7 1,-1.5 1,-1.4 1,-1.3 1,-1.1 1,-1 1,-.9 1,-.6 1,-.5 1,-.3 1,-.1 1,.1 1,.2 1,.5 1,.6 1,.8 1,.9 1,1.2 1,1.2 1,1.4 1,1.5 1,1.6 1,1.7 1,1.8 1,1.8 1,1.9 1,1.9 1,1.9 1,1.9 1,1.9 1,1.8 1,1.7 1,1.7 1,1.5 1,1.4 1,1.4 1,1.1 1,1.1 1,.8 1,.7 1,.5 1,.3 1,.2 1,0 1,-.3 1,-.4 1,-.6 1,-.7 1,-.9 1,-1.1 1,-1.2 1,-1.4 1,-1.5 1,-1.6 1,-1.7 1,-1.7 1,-1.9 1,-1.8 1,-1.9 1,-1.9 1,-1.9 1,-1.9 1,-1.8 1,-1.8 1,-1.6 1,-1.6 1,-1.5 1,-1.3 1,-1.2 1,-1.1 1,-.9 1,-.7 1,-.5 1,-.4 1,-.2 1,0 1,.2 1,.4 1,.5 1,.7 1,.9 1,1.1 1,1.2 1,1.3 1,1.5 1,1.6 1,1.6 1,1.8 1,1.8 1,1.9 1,1.9 1,1.9 1,1.9 1,1.8 1,1.9 1,1.7 1,1.7 1,1.6 1,1.5 1,1.4 1,1.2 1,1.1 1,.9 1,.7 1,.6 1,.4 1,.3 1,0 1,-.2 1,-.3 1,-.5 1,-.7 1,-.8 1,-1.1 1,-1.1 1,-1.4 1,-1.4 1,-1.5 1,-1.7 1,-1.7 1,-1.8 1,-1.9 1,-1.9 1,-1.9 1,-1.9 1,-1.9 1,-1.8 1,-1.8 1,-1.7 1,-1.6 1,-1.5 1,-1.4 1,-1.2 1,-1.2 1,-.9 1,-.8 1,-.6 1,-.5 1,-.2 1,-.1 1,.1 1,.3 1,.5 1,.6 1,.9 1,1 1,1.1 1,1.3 1,1.4 1,1.5 1,1.7 1,1.7 1,1.8 1,1.8 1,1.9 1,1.9 1,1.9 1,1.9 1,1.8 1,1.8 1,1.7 1,1.7 1,1.5 1,1.4 1,1.3 1,1.1 1,1 1,.9 1,.6" fill="none" stroke="#ffff11" stroke-width="1.7" stroke-linejoin="round" /><path d="M974,942.2l1,-1.6 1,2 1,-.1 1,.3 1,.1 1,-1.1 1,.5 1,-.9 1,1.4 1,-2.4 1,-1.4 1,-1.1 1,-1.6 1,-1.6 1,-1.3 1,-1.2 1,-2.1 1,-1.2 1,-2.5 1,-1.7 1,-1.2 1,-2.4 1,-2.4 1,-1.6 1,-1.4 1,-1 1,-2.7 1,-1.5 1,-.8 1,-2.1 1,-.8 1,-.3 1,-1 1,-.8 1,-.1 1,-2 1,1.9 1,-.8 1,0 1,1.4 1,.9 1,.3 1,.7 1,1.8 1,1.2 1,2.2 1,1.2 1,1.4 1,2.2 1,1.1 1,1.5 1,2.7 1,1.9 1,1.5 1,1.6 1,2.3 1,.4 1,3.3 1,1.5 1,.5 1,2.2 1,.8 1,1.9 1,-.4 1,1.3 1,1.5 1,.6 1,-1.4 1,1 1,.3 1,-.8 1,.6 1,-2 1,-.1 1,-1.7 1,.1 1,-2 1,-1.6 1,-2.2 1,.1 1,-2.2 1,-1.8 1,-1.7 1,-2.2 1,-2.4 1,-2 1,-1.9 1,-.7 1,-3.2 1,-1.3 1,-1.5 1,-1.3 1,-1.2 1,-2.2 1,-1.4 1,-.1 1,-.3 1,-.8 1,-.8 1,-.5 1,.1 1,-.1 1,.7 1,-.3 1,1.1 1,.6 1,1.3 1,1 1,2.4 1,.9 1,1.5 1,-.2 1,2.6 1,1.6 1,2.4 1,.5 1,3.6 1,1.9 1,.7 1,2 1,1.9 1,2.1 1,2 1,2.2 1,.3 1,1.8 1,.9 1,1.8 1,.4 1,1 1,-.7 1,.7 1,-.1 1,1.1 1,-.6 1,-.9 1,-.7 1,-.3 1,-1.5 1,-1.2 1,-.5 1,-.4 1,-2.8 1,-1.8 1,-2 1,-1.8 1,-.9 1,-1.7 1,-2.3 1,-1.8 1,-2 1,-1.8 1,-2.7 1,-1.2 1,-1.4 1,-2 1,-1.3 1,-1.5 1,-1 1,-.4 1,-1.6 1,-.6 1,0 1,-.5 1,.4 1,-1.9 1,1.6 1,-.3 1,.9 1,1.1 1,1 1,1 1,.8 1,2 1,.6 1,1.6 1,2.1 1,1.1 1,3.2 1,1.3 1,2.4 1,.8 1,1.8 1,2.1 1,2.1 1,1.1 1,2.2 1,1.4 1,2.3 1,.2 1,2.1 1,.2 1,.8 1,.9 1,.3 1,1.1 1,.7 1,-.4 1,.1 1,.1 1,-1.2 1,-.7 1,-1.1 1,-1.7 1,0 1,-2.5 1,-.3 1,-1.9 1,-1 1,-2.4 1,-2.2 1,-1.2 1,-2.4 1,-1.7 1,-1.8 1,-1.9 1,-1.9 1,-2.1 1,-1.4 1,-2.6 1,-.5 1,-1.9 1,-.1 1,-1 1,-2.6 1,.3 1,-.8 1,-.9 1,.5 1,-.5 1,-.6 1,1.1 1,.5 1,.8 1,.1 1,2 1,1.2 1,.3 1,1.7 1,1.8 1,1.4 1,2.9 1,1 1,1.2 1,2 1,2.3 1,3 1,.7 1,2 1,2 1,1.4 1,2.8 1,.1 1,2.1 1,1 1,1.4 1,0 1,2.3 1,-.2 1,.5 1,-.2 1,.2 1,.6 1,0 1,-.6 1,-.4 1,-1 1,-1.3 1,-.7 1,-1.4 1,-1.8 1,-1 1,-1.4 1,-2.2 1,-2.1 1,-1.3 1,-1.3 1,-2.9 1,-1.9 1,-1.9 1,-1.1 1,-3.4 1,-.6 1,-1.3 1,-2.5 1,-.3 1,-1.8 1,-1.7 1,-.6 1,-1.8 1,-.2 1,.7 1,-1.7 1,1.2 1,-.9 1,.8 1,-.1 1,-.6 1,1.6 1,1.3 1,.4 1,1.2 1,2.2 1,1 1,1 1,2.2 1,2.6 1,1.1 1,2.6 1,2.2 1,1.2 1,1.3 1,1.7 1,2.5 1,2.2 1,1.4 1,1.7 1,.9 1,1.8 1,.8 1,1.1 1,.4 1,.6 1,1.1 1,0 1,.3 1,.8 1,-.6 1,1.2 1,-1.6 1,-1.5 1,-.2 1,-1.2 1,-1.7 1,-.5 1,-2.4 1,-2.7 1,.3 1,-2.5 1,-.8 1,-2.9 1,-2.1 1,-.6 1,-3.2 1,-1.2 1,-1.2 1,-2.5 1,-1.7 1,-1.5 1,-1.2 1,-2.2 1,-.5 1,-1.1 1,0 1,-2.1 1,-.9 1,.4 1,-.8 1,.4 1,0 1,.9 1,-.4 1,.9 1,-.3 1,1.8 1,2.4 1,.2 1,1.4 1,1.3 1,2.6 1,1.5 1,1.1 1,2.8 1,1.7 1,2.2 1,1.2 1,3 1,1.2 1,1.5 1,1.5 1,1.8 1,2 1,.9 1,1.9 1,.8 1,1.4 1,.5 1,.2 1,-.5 1,1.4 1,.3 1,-.4 1,-.1 1,-1 1,-.6 1,-1.1 1,.1 1,-1.7 1,-1.6 1,-1.9 1,-.9 1,-.8 1,-2.3 1,-2.3 1,-.8 1,-1.9 1,-2.1 1,-2 1,-1.7 1,-2.2 1,-1.6 1,-2.5 1,-.5 1,-2.2 1,-.5 1,-3.3 1,.2 1,-.8 1,-1.5 1,-.3 1,-.3 1,-.4 1,-.7 1,.3 1,.8 1,.6 1,0 1,.8 1,1 1,1.6 1,.2 1,1.2 1,2.3 1,1 1,1.9 1,2.2 1,2 1,1.1 1,2.8 1,.6 1,3.1 1,.8 1,1.9 1,2.7 1,1.2 1,1.3 1,1.6 1,1.8 1,.9 1,1 1,1.4 1,-.2 1,.7 1,.3 1,1 1,-.1 1,-.1 1,-1.1 1,-.6 1,-.3 1,-1.5 1,-.5 1,-1.3 1,-2.1 1,-1.1 1,-1.7 1,-.7 1,-1.4 1,-3.1 1,-1.8 1,-3.1 1,-.6 1,-2 1,-2.4 1,-.9 1,-2.9 1,-1 1,-1.4 1,-2.2 1,-.3 1,-1.1 1,-2.3 1,-.9 1,.3 1,-.8 1,-1 1,.3 1,.1 1,.1 1,.9 1,.3 1,1.4 1,.7 1,.7 1,1.4 1,1.5 1,1.1 1,.7 1,2.7 1,1.3 1,2.6 1,1.1 1,2.1 1,1.8 1,2.6 1,1.1 1,1.6 1,2.1 1,1.3 1,1.9 1,1.4 1,1.5 1,2 1,0 1,1.1 1,.6 1,1.1 1,-.6 1,.5 1,.4 1,.1 1,-.6 1,-.8 1,-.8 1,-.2 1,-.5 1,-1.8 1,-1.4 1,-1.3 1,-2.2 1,-1.4 1,-1.7 1,-1.5 1,-2 1,-2.5 1,-.7 1,-1.6 1,-2.9 1,-1.5 1,-1.8 1,-1.5 1,-2.7 1,0 1,-2.4 1,-.4 1,-1.7 1,-1.2 1,-.7 1,-.1 1,-1.3 1,0 1,-.1 1,-.5 1,1.8 1,.1 1,.3 1,1.4 1,0 1,1.6 1,2.1 1,1.1 1,-.1 1,1.1 1,2.9 1,2.8 1,1.1 1,2 1,2.3 1,1.2 1,2.4 1,2.1 1,1.7 1,1.6 1,1.2 1,2.1 1,.9 1,2.2 1,1.7 1,-.6 1,.1 1,1.5 1,.9 1,.6 1,.1 1,-1 1,-.2 1,.6 1,-1.8 1,.3 1,-1.7 1,-.6 1,-1.3 1,-1.3 1,-1.5 1,-2.5 1,-1.1 1,-1.9 1,-1.7 1,-1.4 1,-2.7 1,-2.1 1,-1.9 1,-1.6 1,-1.3 1,-2.5 1,-.7 1,-2 1,-1.7 1,-1.8 1,-.4 1,-.8 1,-2.1 1,.8 1,-.3 1,-1 1,0 1,1 1,-.4 1,-.7 1,1 1,.7 1,1 1,-.1 1,2.8 1,.7 1,1.9 1,1.4 1,2.2 1,1.2 1,1.6 1,2.5 1,2.3 1,1.1 1,2.7 1,1.3 1,1.4 1,2.8 1,.5 1,2.5 1,.7 1,1.8 1,.4 1,1.2 1,1.9 1,.3 1,.4 1,.2 1,.6 1,-.9 1,-.1 1,.1 1,-.8 1,-.7 1,-.6 1,-1.1 1,-1.2 1,-.4 1,-1.8 1,-1.5 1,-2.3 1,-1.9 1,-2.3 1,-1.3 1,-2.8 1,-1.2 1,-1.2 1,-1.4 1,-2.2 1,-2.6 1,-1.1 1,-2.2 1,-.7 1,-1.8 1,-.8 1,-.2 1,-1.7 1,-.1 1,-1.6 1,-.7 1,.6 1,.2 1,-1 1,.6 1,-.2 1,1.3 1,1.4 1,.5 1,1 1,.8 1,2.4 1,1.7 1,1.6 1,1.6 1,1 1,3.4 1,1 1,1.8 1,2.3 1,.5 1,2.9 1,1.7 1,2 1,2.1 1,1 1,.3 1,2 1,1.4 1,.9 1,.1 1,.4 1,1.5 1,.2 1,-.1 1,-1 1,1.5 1,-2.8 1,.6 1,.4 1,-2.1 1,-1 1,-2 1,-.1 1,-2.9 1,-.8 1,-1.8 1,-2.4 1,-.9 1,-3 1,-1.5 1,-1.6 1,-2.1 1,-1.4 1,-1.6 1,-2.3 1,-1.7 1,-1.6 1,-1.3 1,-.7 1,-1.7 1,-.6 1,-1.1 1,-1 1,.3 1,-1.2 1,.4 1,.8 1,-1 1,.9 1,-.1 1,1.3 1,.5 1,1.7 1,1.1 1,1.8 1,2.2 1,1 1,1.9 1,1.4 1,1.7 1,1.6 1,1.4 1,2.9 1,2.6 1,1.3 1,1.3 1,2.8 1,.6 1,1.5 1,1.1 1,1.5 1,1.5 1,2.2 1,-.3 1,.3 1,.7 1,.5 1,-.6 1,.9 1,.1 1,-.6 1,-.5 1,-1.7 1,-1.1 1,.4 1,-1.3 1,-2.7 1,-.6 1,-1.7 1,-1.4 1,-1.9 1,-2.2 1,-1.5 1,-2 1,-2 1,-2.8 1,-2.4 1,-.7 1,-2.2 1,-.7 1,-1.3 1,-1.7 1,-1.7 1,-1 1,-.5 1,-1.8 1,.1 1,-.7 1,-.6 1,.4 1,-1 1,1 1,-.6 1,.6 1,.6 1,1.7 1,.3 1,1.7 1,.8 1,2.5 1,2 1,.9 1,2.4 1,1.3 1,2.7 1,.8 1,1.1 1,3.4 1,1.1 1,1.3 1,2 1,1.2 1,2.3 1,1.1 1,2.6 1,.8 1,-.1 1,1 1,1.3 1,-.1 1,1.3 1,.2 1,-.3 1,0 1,.2 1,-.1 1,-.6 1,-1.6 1,-.6 1,-2 1,-.7 1,-2.2 1,-.7 1,-2.6 1,-1.6 1,-1.3 1,-1.6 1,-2.9 1,-1.4 1,-1.6 1,-1.8 1,-2.4 1,-1.3 1,-1.9 1,-.8 1,-1.9 1,-2.4 1,-1.6 1,0 1,-.4 1,-1.3 1,-.3 1,-1.1 1,-.7 1,1 1,-.2 1,.5 1,-.5 1,1.4 1,.5 1,1.7 1,.4 1,1.3 1,1.4 1,2.5 1,1 1,1.3 1,1.7 1,1.8 1,3.1 1,.3 1,2.4 1,2.6 1,2.1 1,1.1 1,2.2 1,1.7 1,1.6 1,.9 1,2.1 1,.5 1,1.6 1,-.5 1,1.7 1,-.6 1,.2 1,1.1 1,-.8 1,.4 1,-1.2 1,.7 1,-1.6 1,-1.5 1,-.4 1,-.9 1,-2.3 1,-.8 1,-.9 1,-2.3 1,-2.2 1,-2.1 1,-1.3 1,-3 1,-2.6 1,-.7 1,-2.1 1,-.4 1,-2.5 1,-2.2 1,-1.7 1,-.6 1,-1.9 1,-1.1 1,-.8 1,-.7 1,-.7 1,-.5 1,.2 1,.1 1,-1.6 1,2.3 1,-.8 1,1.1 1,-.2 1,1.4 1,1.1 1,1.1" fill="none" stroke="#139fff" stroke-width="1.7" stroke-linejoin="round" /><path d="M974,907.1l1,.9 1,.4 1,1.8 1,1.8 1,1.6 1,1.1 1,1.8 1,1.9 1,1.4 1,1.8 1,3.3 1,.9 1,2.1 1,1.4 1,2.8 1,2 1,.6 1,1.8 1,.8 1,2.5 1,.7 1,0 1,1.8 1,.2 1,.4 1,.3 1,-.5 1,-.1 1,.3 1,-.8 1,-1.2 1,.7 1,-2.1 1,-1.4 1,-1.3 1,-.8 1,-1.4 1,-2 1,-1.4 1,-3 1,-1.3 1,-1.9 1,-1.7 1,-1.6 1,-3.2 1,.8 1,-3.8 1,-1.1 1,-1.4 1,-1.5 1,-1.7 1,-2.9 1,-.2 1,0 1,-1.7 1,-.7 1,-1.1 1,1.5 1,-.4 1,-.6 1,.6 1,.5 1,.1 1,1.3 1,1.2 1,1.3 1,1.6 1,.8 1,1.2 1,2.1 1,1.2 1,1.5 1,3 1,1.1 1,2.2 1,2.1 1,1.1 1,2.7 1,1.7 1,1.4 1,1.9 1,1 1,.7 1,2.3 1,.8 1,1.9 1,.5 1,.3 1,.8 1,1 1,0 1,-.5 1,-.2 1,-.8 1,-.5 1,-.4 1,-1.3 1,-.9 1,-1.9 1,-1.7 1,-1.5 1,-1 1,-.8 1,-1.8 1,-3 1,-2.1 1,-.7 1,-2.1 1,-2.8 1,-.6 1,-2.3 1,-1.2 1,-2.1 1,-1.3 1,-1.7 1,-2 1,-.8 1,-1.3 1,-.1 1,-1.6 1,-.8 1,.7 1,.1 1,.2 1,0 1,-.9 1,.9 1,.9 1,1.1 1,0 1,2.3 1,1.5 1,.9 1,2.1 1,2.2 1,1.2 1,2.3 1,1.9 1,1.6 1,1.8 1,1.6 1,2.6 1,1 1,1.6 1,2.4 1,.9 1,2 1,1.7 1,.7 1,1.1 1,1.3 1,.7 1,-.6 1,.5 1,1.5 1,-.4 1,-1.4 1,0 1,.2 1,-1.3 1,-.1 1,-1.2 1,-1 1,-2.2 1,-.5 1,-.9 1,-3.1 1,-.6 1,-2 1,-2 1,-2.3 1,-2.4 1,-1.8 1,-1 1,-1.8 1,-1.6 1,-1.8 1,-1.7 1,-2.1 1,-1.8 1,-.5 1,-1 1,-1.1 1,-1.6 1,-.1 1,-.9 1,.5 1,-.6 1,.6 1,.5 1,.4 1,1.3 1,-.4 1,.5 1,2.7 1,1.5 1,1.5 1,.9 1,1.8 1,1.5 1,1.1 1,2.2 1,2.5 1,1.3 1,3.2 1,.1 1,2.4 1,2.6 1,.8 1,1.4 1,1.4 1,1.7 1,2.4 1,.6 1,1 1,.3 1,1.3 1,.1 1,-.2 1,.3 1,.2 1,.2 1,-1 1,-.4 1,0 1,-2.4 1,-1.4 1,-.1 1,-1.7 1,-1.8 1,-1.4 1,-2.1 1,-1.3 1,-2.3 1,-1.3 1,-2.9 1,-1.7 1,-1.4 1,-2.2 1,-1.2 1,-2.1 1,-1.9 1,-1.1 1,-1.8 1,-1.8 1,-1 1,-.8 1,-.7 1,-.4 1,-.1 1,-.5 1,.5 1,-.2 1,-.5 1,1.4 1,.3 1,0 1,1.3 1,1.5 1,.8 1,1.8 1,1.2 1,1.7 1,1.2 1,2.1 1,1.5 1,2.4 1,.7 1,2.9 1,2.4 1,1.5 1,1.5 1,2 1,1 1,1.6 1,1.7 1,1.4 1,1.7 1,.1 1,1.9 1,-.6 1,.9 1,.7 1,.8 1,-.9 1,-1 1,.9 1,-.8 1,-1.2 1,-.9 1,-.9 1,-.8 1,-1.1 1,-2.6 1,.3 1,-2.8 1,-1.9 1,-1.3 1,-2.2 1,-.8 1,-2.5 1,-2.6 1,-1.9 1,-1.9 1,-1.6 1,-1.2 1,-2.3 1,-.3 1,-2.2 1,-1.2 1,-.6 1,-2.3 1,-.3 1,.2 1,-.6 1,-.3 1,.2 1,-.3 1,.6 1,-.1 1,.5 1,2.4 1,-.1 1,1.3 1,2.4 1,1.3 1,.8 1,1.6 1,2 1,1.4 1,2.6 1,1.7 1,1.9 1,2.2 1,1.8 1,2.4 1,1.6 1,.1 1,2.9 1,.5 1,1.2 1,2.3 1,.4 1,1.2 1,1.4 1,-.2 1,.3 1,.8 1,.5 1,-.4 1,-1.4 1,0 1,-.5 1,.2 1,-1.5 1,-1.2 1,-1.1 1,-2.2 1,-1.1 1,-1.7 1,-2.4 1,-1.3 1,-1.6 1,-2.7 1,-1 1,-1.9 1,-1.7 1,-2.8 1,-1.3 1,-1.1 1,-1.9 1,-2.3 1,-.9 1,-.7 1,-1.9 1,-.7 1,.3 1,-2 1,-.5 1,-.7 1,.1 1,1.2 1,-.6 1,0 1,.7 1,1.3 1,1.3 1,.4 1,2 1,.8 1,2 1,1.7 1,1.7 1,1.3 1,2 1,2.2 1,1 1,2.6 1,2.1 1,2.1 1,1.2 1,1.7 1,1.8 1,1.1 1,1.7 1,1.6 1,1.1 1,.3 1,1.2 1,-.2 1,2 1,-.4 1,.5 1,-.7 1,.3 1,-.2 1,-.3 1,-2 1,.2 1,-1.6 1,-1.6 1,-.7 1,-1.9 1,-1.6 1,-1.9 1,-1.3 1,-2 1,-1.9 1,-2.3 1,-1.7 1,-1.4 1,-1.4 1,-2.5 1,-1 1,-2.4 1,-2.1 1,-.6 1,-2.1 1,-.5 1,-.7 1,-1.6 1,-.6 1,.8 1,-1.5 1,-.2 1,.3 1,-.2 1,.4 1,.8 1,-.7 1,2.8 1,-.1 1,1.2 1,2.1 1,1.3 1,.9 1,2.4 1,1.1 1,2 1,1.5 1,2.2 1,2.5 1,1.8 1,2 1,2.1 1,1.3 1,1.3 1,1.8 1,2.4 1,.6 1,1.3 1,.9 1,1.1 1,.8 1,.4 1,.3 1,-.1 1,0 1,.4 1,-.2 1,-.4 1,-1.2 1,-1.3 1,-.3 1,-1.2 1,-2.3 1,-.4 1,-1.6 1,-1.1 1,-3.2 1,-1.9 1,-.8 1,-3.2 1,-1.3 1,-2.1 1,-1.9 1,-2.2 1,-1 1,-1.1 1,-1.8 1,-1.5 1,-1.8 1,-.3 1,-1.6 1,-.7 1,-2.1 1,.4 1,-1.2 1,.5 1,-.1 1,-.5 1,.9 1,1 1,.4 1,.8 1,.3 1,1.3 1,1.1 1,2 1,2.1 1,1.2 1,1.6 1,1.2 1,2.6 1,1.6 1,1 1,2 1,2.6 1,1.6 1,3 1,.9 1,1.1 1,1.8 1,2.4 1,.1 1,1.9 1,.8 1,1.4 1,.1 1,0 1,.8 1,-.2 1,.4 1,-.8 1,.6 1,-1.7 1,-.6 1,-1.5 1,-.7 1,-1.3 1,-1.4 1,-1.1 1,-2.4 1,-1.8 1,-.8 1,-2.6 1,-2 1,-1 1,-2.1 1,-3.6 1,-.7 1,-1.2 1,-1.7 1,-2.4 1,-.5 1,-2.6 1,-1 1,-1 1,-1 1,-.5 1,-.5 1,-1.1 1,.4 1,-1.1 1,.3 1,1.2 1,-.4 1,1.1 1,0 1,1 1,1.2 1,1.4 1,1.1 1,1.7 1,1.9 1,2 1,1.2 1,2.1 1,2 1,.9 1,1.7 1,3.4 1,1.8 1,1.1 1,1.9 1,1 1,1.4 1,2.3 1,.4 1,2.4 1,.2 1,1.4 1,1.5 1,.5 1,-.7 1,.8 1,-1 1,0 1,.1 1,-.1 1,-1.7 1,-.4 1,-1.2 1,-1.9 1,-.8 1,-.7 1,-2.4 1,-1.3 1,-1.6 1,-2.6 1,-.9 1,-1.8 1,-1.8 1,-2.1 1,-2.7 1,-1.9 1,-1.9 1,-1.7 1,-1.5 1,-.6 1,-1.1 1,-2.3 1,-.3 1,-2 1,-.3 1,-.9 1,-.7 1,.7 1,0 1,-.1 1,.3 1,.3 1,1.1 1,.7 1,1.4 1,.5 1,2 1,1.6 1,1.9 1,1.6 1,1.3 1,1.4 1,1.3 1,2.8 1,2.6 1,2 1,-.2 1,2.7 1,2 1,1.3 1,2.2 1,1.5 1,1.1 1,1.4 1,.4 1,1.2 1,.8 1,1.5 1,-.8 1,.9 1,.6 1,-.6 1,.2 1,-1.3 1,-.1 1,-.6 1,-.3 1,-1.9 1,-1 1,-2.1 1,-1.5 1,-.9 1,-2.3 1,-1.3 1,-2.2 1,-1.2 1,-1.8 1,-3.5 1,-.5 1,-2.6 1,-1.7 1,-2.1 1,-1.2 1,-2.4 1,-1.2 1,-1.3 1,-.6 1,-.7 1,-.9 1,-.8 1,-.9 1,-.9 1,1 1,0 1,.4 1,1 1,-.2 1,.8 1,-.1 1,2.6 1,.9 1,1.1 1,2.1 1,.9 1,1.9 1,3.1 1,1.2 1,2 1,1.8 1,1.8 1,1.7 1,2.9 1,.6 1,2.2 1,1.1 1,1.5 1,.4 1,1.5 1,2.9 1,1 1,-.1 1,.9 1,.8 1,-.5 1,1.5 1,-1.5 1,-.1 1,-1.4 1,1.5 1,-1.5 1,-.1 1,-2.4 1,-.6 1,-1.5 1,-1.4 1,-.7 1,-1.6 1,-2.2 1,-2.8 1,-1.2 1,-1.6 1,-2.3 1,-1.9 1,-1.9 1,-2.5 1,-1.2 1,-1 1,-2.9 1,-.9 1,-.9 1,-2.3 1,-.4 1,-1.7 1,-.1 1,-1 1,-.1 1,.1 1,.1 1,.2 1,-.7 1,2.6 1,-.2 1,.5 1,1.3 1,1.7 1,.7 1,1.7 1,1.6 1,2.2 1,1.1 1,2.4 1,1.8 1,1.7 1,2.6 1,1.3 1,1.2 1,2.6 1,1.7 1,1.5 1,1.8 1,2.5 1,.3 1,1.3 1,.7 1,1.7 1,.1 1,.2 1,.2 1,1 1,.2 1,-1.4 1,.1 1,.2 1,-.6 1,-2 1,-.6 1,-.5 1,-2.1 1,-1.4 1,-1.6 1,-2 1,-1.1 1,-1.7 1,-2.7 1,-1.1 1,-1.4 1,-2.4 1,-1.5 1,-2.5 1,-.9 1,-2.7 1,-.3 1,-2.7 1,-1.5 1,-1.3 1,-.9 1,-.9 1,-.9 1,-.4 1,0 1,-.1 1,-.7 1,.9 1,-.8 1,.5 1,.6 1,1.8 1,-.1 1,1.2 1,2.7 1,1.6 1,1.4 1,.2 1,2.5 1,2.2 1,1.5 1,1 1,2.5 1,1.2 1,2.1 1,3.6 1,1 1,.7 1,1.6 1,2.5 1,.8 1,1.9 1,.5 1,1.2 1,1 1,0 1,.1 1,.6 1,.3 1,.2 1,-.2 1,-.5 1,-.3 1,-1.5 1,.1 1,-.8 1,-2.1 1,-1.5 1,-1 1,-1.9 1,-1.9 1,-2 1,-2.1 1,-2.1 1,-1 1,-1.6 1,-3 1,-1.4 1,-1.6 1,-2.1 1,-1.8 1,-1.4 1,-2.2 1,-.3 1,-1.3 1,.2 1,-1.4 1,-1.3 1,-.4 1,.6 1,-.2 1,-.7 1,.1 1,-.2 1,1.2 1,.8 1,.7 1,2.3 1,-.6 1,2.3 1,1.7 1,1.7 1,2.3 1,.2 1,2.2 1,2.3 1,1.9 1,1.6 1,1.7 1,2.8 1,.8 1,1.9 1,2.7 1,1.7 1,1 1,.5 1,1.2 1,1 1,.8 1,1 1,1.4 1,-.2 1,-.3 1,0 1,-.4 1,.8 1,-2.2 1,.4 1,-1.8 1,-.8 1,-1.5 1,-.1 1,-2 1,-.2 1,-3.5 1,-1.8 1,-1 1,-1.9 1,-2.3 1,-2.8 1,-.1" fill="none" stroke="#ff6929" stroke-width="1.7" stroke-linejoin="round" /></g><rect x="974.5" y="897.3" width="950" height="51.90000000000009" fill="none" stroke="#6b6b6b" stroke-width="1" /><text x="968" y="915.4" font-size="15" fill="#c4c4c4" text-anchor="end" >200</text><text x="968" y="929.0" font-size="15" fill="#c4c4c4" text-anchor="end" >0</text><text x="968" y="942.5" font-size="15" fill="#c4c4c4" text-anchor="end" >-200</text><rect x="974" y="978.3" width="946" height="37.200000000000045" fill="#000" stroke="none" stroke-width="1" /><line x1="1054.5" y1="978.3" x2="1054.5" y2="1015.5" stroke="#3a3a3a" stroke-width="1" /><line x1="1183.5" y1="978.3" x2="1183.5" y2="1015.5" stroke="#3a3a3a" stroke-width="1" /><line x1="1312.5" y1="978.3" x2="1312.5" y2="1015.5" stroke="#3a3a3a" stroke-width="1" /><line x1="1441.0" y1="978.3" x2="1441.0" y2="1015.5" stroke="#3a3a3a" stroke-width="1" /><line x1="1569.5" y1="978.3" x2="1569.5" y2="1015.5" stroke="#3a3a3a" stroke-width="1" /><line x1="1698.5" y1="978.3" x2="1698.5" y2="1015.5" stroke="#3a3a3a" stroke-width="1" /><line x1="1827.2" y1="978.3" x2="1827.2" y2="1015.5" stroke="#3a3a3a" stroke-width="1" /><line x1="974" y1="987.2" x2="1920" y2="987.2" stroke="#3a3a3a" stroke-width="1" /><line x1="974" y1="997.9" x2="1920" y2="997.9" stroke="#3a3a3a" stroke-width="1" /><line x1="974" y1="1008.9" x2="1920" y2="1008.9" stroke="#3a3a3a" stroke-width="1" /><clipPath id="c32"><rect x="974" y="978.3" width="946" height="37.200000000000045"/></clipPath><g clip-path="url(#c32)"><path d="M974,985.6l1,-1.2 1,-1.1 1,-.9 1,-.8 1,-.7 1,-.5 1,-.3 1,-.2 1,0 1,.2 1,.3 1,.5 1,.7 1,.8 1,.9 1,1.1 1,1.2 1,1.3 1,1.4 1,1.5 1,1.6 1,1.6 1,1.7 1,1.7 1,1.7 1,1.7 1,1.7 1,1.6 1,1.6 1,1.5 1,1.4 1,1.4 1,1.2 1,1.1 1,1 1,.8 1,.7 1,.5 1,.4 1,.2 1,0 1,-.1 1,-.3 1,-.5 1,-.6 1,-.8 1,-.9 1,-1.1 1,-1.1 1,-1.3 1,-1.4 1,-1.5 1,-1.6 1,-1.6 1,-1.6 1,-1.7 1,-1.7 1,-1.7 1,-1.7 1,-1.7 1,-1.6 1,-1.5 1,-1.5 1,-1.3 1,-1.3 1,-1.1 1,-1 1,-.8 1,-.7 1,-.6 1,-.4 1,-.2 1,-.1 1,.1 1,.3 1,.4 1,.6 1,.7 1,.9 1,1 1,1.2 1,1.3 1,1.3 1,1.5 1,1.5 1,1.7 1,1.6 1,1.7 1,1.7 1,1.7 1,1.7 1,1.6 1,1.7 1,1.5 1,1.5 1,1.3 1,1.3 1,1.2 1,1 1,.9 1,.7 1,.6 1,.4 1,.3 1,.1 1,-.1 1,-.2 1,-.4 1,-.6 1,-.7 1,-.8 1,-1 1,-1.1 1,-1.3 1,-1.3 1,-1.5 1,-1.5 1,-1.6 1,-1.7 1,-1.7 1,-1.7 1,-1.7 1,-1.7 1,-1.6 1,-1.6 1,-1.6 1,-1.5 1,-1.4 1,-1.3 1,-1.1 1,-1.1 1,-.9 1,-.8 1,-.6 1,-.5 1,-.3 1,-.1 1,0 1,.2 1,.4 1,.5 1,.7 1,.8 1,1 1,1.1 1,1.2 1,1.4 1,1.4 1,1.5 1,1.6 1,1.6 1,1.7 1,1.7 1,1.7 1,1.7 1,1.7 1,1.6 1,1.6 1,1.5 1,1.4 1,1.3 1,1.2 1,1.1 1,.9 1,.8 1,.7 1,.5 1,.3 1,.2 1,0 1,-.2 1,-.3 1,-.5 1,-.7 1,-.8 1,-.9 1,-1.1 1,-1.2 1,-1.3 1,-1.4 1,-1.5 1,-1.6 1,-1.6 1,-1.7 1,-1.7 1,-1.7 1,-1.7 1,-1.7 1,-1.6 1,-1.6 1,-1.5 1,-1.4 1,-1.4 1,-1.2 1,-1.1 1,-1 1,-.8 1,-.7 1,-.5 1,-.4 1,-.2 1,0 1,.1 1,.3 1,.5 1,.6 1,.8 1,.9 1,1.1 1,1.1 1,1.3 1,1.4 1,1.5 1,1.6 1,1.6 1,1.6 1,1.7 1,1.7 1,1.7 1,1.7 1,1.7 1,1.6 1,1.5 1,1.5 1,1.3 1,1.3 1,1.1 1,1 1,.8 1,.7 1,.6 1,.4 1,.2 1,.1 1,-.1 1,-.3 1,-.4 1,-.6 1,-.7 1,-.9 1,-1 1,-1.2 1,-1.3 1,-1.3 1,-1.5 1,-1.5 1,-1.7 1,-1.6 1,-1.7 1,-1.7 1,-1.7 1,-1.7 1,-1.6 1,-1.7 1,-1.5 1,-1.5 1,-1.3 1,-1.3 1,-1.2 1,-1 1,-.9 1,-.7 1,-.6 1,-.4 1,-.3 1,-.1 1,.1 1,.2 1,.4 1,.6 1,.7 1,.8 1,1 1,1.1 1,1.3 1,1.3 1,1.5 1,1.5 1,1.6 1,1.7 1,1.7 1,1.7 1,1.7 1,1.7 1,1.6 1,1.6 1,1.6 1,1.5 1,1.4 1,1.3 1,1.1 1,1.1 1,.9 1,.8 1,.6 1,.5 1,.3 1,.1 1,0 1,-.2 1,-.4 1,-.5 1,-.7 1,-.8 1,-1 1,-1.1 1,-1.2 1,-1.4 1,-1.4 1,-1.5 1,-1.6 1,-1.6 1,-1.7 1,-1.7 1,-1.7 1,-1.7 1,-1.7 1,-1.6 1,-1.6 1,-1.5 1,-1.4 1,-1.3 1,-1.2 1,-1.1 1,-.9 1,-.8 1,-.7 1,-.5 1,-.3 1,-.2 1,0 1,.2 1,.3 1,.5 1,.7 1,.8 1,.9 1,1.1 1,1.2 1,1.3 1,1.4 1,1.5 1,1.6 1,1.6 1,1.7 1,1.7 1,1.7 1,1.7 1,1.7 1,1.6 1,1.6 1,1.5 1,1.4 1,1.4 1,1.2 1,1.1 1,1 1,.8 1,.7 1,.5 1,.4 1,.2 1,0 1,-.1 1,-.3 1,-.5 1,-.6 1,-.8 1,-.9 1,-1.1 1,-1.1 1,-1.3 1,-1.4 1,-1.5 1,-1.6 1,-1.6 1,-1.6 1,-1.7 1,-1.7 1,-1.7 1,-1.7 1,-1.7 1,-1.6 1,-1.5 1,-1.5 1,-1.3 1,-1.3 1,-1.1 1,-1 1,-.8 1,-.7 1,-.6 1,-.4 1,-.2 1,-.1 1,.1 1,.3 1,.4 1,.6 1,.7 1,.9 1,1 1,1.2 1,1.3 1,1.3 1,1.5 1,1.5 1,1.7 1,1.6 1,1.7 1,1.7 1,1.7 1,1.7 1,1.6 1,1.7 1,1.5 1,1.5 1,1.3 1,1.3 1,1.2 1,1 1,.9 1,.7 1,.6 1,.4 1,.3 1,.1 1,-.1 1,-.2 1,-.4 1,-.6 1,-.7 1,-.8 1,-1 1,-1.1 1,-1.3 1,-1.3 1,-1.5 1,-1.5 1,-1.6 1,-1.7 1,-1.7 1,-1.7 1,-1.7 1,-1.7 1,-1.6 1,-1.6 1,-1.6 1,-1.5 1,-1.4 1,-1.3 1,-1.1 1,-1.1 1,-.9 1,-.8 1,-.6 1,-.5 1,-.3 1,-.1 1,0 1,.2 1,.4 1,.5 1,.7 1,.8 1,1 1,1.1 1,1.2 1,1.4 1,1.4 1,1.5 1,1.6 1,1.6 1,1.7 1,1.7 1,1.7 1,1.7 1,1.7 1,1.6 1,1.6 1,1.5 1,1.4 1,1.3 1,1.2 1,1.1 1,.9 1,.8 1,.7 1,.5 1,.3 1,.2 1,0 1,-.2 1,-.3 1,-.5 1,-.7 1,-.8 1,-.9 1,-1.1 1,-1.2 1,-1.3 1,-1.4 1,-1.5 1,-1.6 1,-1.6 1,-1.7 1,-1.7 1,-1.7 1,-1.7 1,-1.7 1,-1.6 1,-1.6 1,-1.5 1,-1.4 1,-1.4 1,-1.2 1,-1.1 1,-1 1,-.8 1,-.7 1,-.5 1,-.4 1,-.2 1,0 1,.1 1,.3 1,.5 1,.6 1,.8 1,.9 1,1.1 1,1.1 1,1.3 1,1.4 1,1.5 1,1.6 1,1.6 1,1.6 1,1.7 1,1.7 1,1.7 1,1.7 1,1.7 1,1.6 1,1.5 1,1.5 1,1.3 1,1.3 1,1.1 1,1 1,.8 1,.7 1,.6 1,.4 1,.2 1,.1 1,-.1 1,-.3 1,-.4 1,-.6 1,-.7 1,-.9 1,-1 1,-1.2 1,-1.3 1,-1.3 1,-1.5 1,-1.5 1,-1.7 1,-1.6 1,-1.7 1,-1.7 1,-1.7 1,-1.7 1,-1.6 1,-1.7 1,-1.5 1,-1.5 1,-1.3 1,-1.3 1,-1.2 1,-1 1,-.9 1,-.7 1,-.6 1,-.4 1,-.3 1,-.1 1,.1 1,.2 1,.4 1,.6 1,.7 1,.8 1,1 1,1.1 1,1.3 1,1.3 1,1.5 1,1.5 1,1.6 1,1.7 1,1.7 1,1.7 1,1.7 1,1.7 1,1.6 1,1.6 1,1.6 1,1.5 1,1.4 1,1.3 1,1.1 1,1.1 1,.9 1,.8 1,.6 1,.5 1,.3 1,.1 1,0 1,-.2 1,-.4 1,-.5 1,-.7 1,-.8 1,-1 1,-1.1 1,-1.2 1,-1.4 1,-1.4 1,-1.5 1,-1.6 1,-1.6 1,-1.7 1,-1.7 1,-1.7 1,-1.7 1,-1.7 1,-1.6 1,-1.6 1,-1.5 1,-1.4 1,-1.3 1,-1.2 1,-1.1 1,-.9 1,-.8 1,-.7 1,-.5 1,-.3 1,-.2 1,0 1,.2 1,.3 1,.5 1,.7 1,.8 1,.9 1,1.1 1,1.2 1,1.3 1,1.4 1,1.5 1,1.6 1,1.6 1,1.7 1,1.7 1,1.7 1,1.7 1,1.7 1,1.6 1,1.6 1,1.5 1,1.4 1,1.4 1,1.2 1,1.1 1,1 1,.8 1,.7 1,.5 1,.4 1,.2 1,0 1,-.1 1,-.3 1,-.5 1,-.6 1,-.8 1,-.9 1,-1.1 1,-1.1 1,-1.3 1,-1.4 1,-1.5 1,-1.6 1,-1.6 1,-1.6 1,-1.7 1,-1.7 1,-1.7 1,-1.7 1,-1.7 1,-1.6 1,-1.5 1,-1.5 1,-1.3 1,-1.3 1,-1.1 1,-1 1,-.8 1,-.7 1,-.6 1,-.4 1,-.2 1,-.1 1,.1 1,.3 1,.4 1,.6 1,.7 1,.9 1,1 1,1.2 1,1.3 1,1.3 1,1.5 1,1.5 1,1.7 1,1.6 1,1.7 1,1.7 1,1.7 1,1.7 1,1.6 1,1.7 1,1.5 1,1.5 1,1.3 1,1.3 1,1.2 1,1 1,.9 1,.7 1,.6 1,.4 1,.3 1,.1 1,-.1 1,-.2 1,-.4 1,-.6 1,-.7 1,-.8 1,-1 1,-1.1 1,-1.3 1,-1.3 1,-1.5 1,-1.5 1,-1.6 1,-1.7 1,-1.7 1,-1.7 1,-1.7 1,-1.7 1,-1.6 1,-1.6 1,-1.6 1,-1.5 1,-1.4 1,-1.3 1,-1.1 1,-1.1 1,-.9 1,-.8 1,-.6 1,-.5 1,-.3 1,-.1 1,0 1,.2 1,.4 1,.5 1,.7 1,.8 1,1 1,1.1 1,1.2 1,1.4 1,1.4 1,1.5 1,1.6 1,1.6 1,1.7 1,1.7 1,1.7 1,1.7 1,1.7 1,1.6 1,1.6 1,1.5 1,1.4 1,1.3 1,1.2 1,1.1 1,.9 1,.8 1,.7 1,.5 1,.3 1,.2 1,0 1,-.2 1,-.3 1,-.5 1,-.7 1,-.8 1,-.9 1,-1.1 1,-1.2 1,-1.3 1,-1.4 1,-1.5 1,-1.6 1,-1.6 1,-1.7 1,-1.7 1,-1.7 1,-1.7 1,-1.7 1,-1.6 1,-1.6 1,-1.5 1,-1.4 1,-1.4 1,-1.2 1,-1.1 1,-1 1,-.8 1,-.7 1,-.5 1,-.4 1,-.2 1,0 1,.1 1,.3 1,.5 1,.6 1,.8 1,.9 1,1.1 1,1.1 1,1.3 1,1.4 1,1.5 1,1.6 1,1.6 1,1.6 1,1.7 1,1.7 1,1.7 1,1.7 1,1.7 1,1.6 1,1.5 1,1.5 1,1.3 1,1.3 1,1.1 1,1 1,.8 1,.7 1,.6 1,.4 1,.2 1,.1 1,-.1 1,-.3 1,-.4 1,-.6 1,-.7 1,-.9 1,-1 1,-1.2 1,-1.3 1,-1.3 1,-1.5 1,-1.5 1,-1.7 1,-1.6 1,-1.7 1,-1.7 1,-1.7 1,-1.7 1,-1.6 1,-1.7 1,-1.5 1,-1.5 1,-1.3 1,-1.3 1,-1.2 1,-1 1,-.9 1,-.7 1,-.6 1,-.4 1,-.3 1,-.1 1,.1 1,.2 1,.4 1,.6 1,.7 1,.8 1,1 1,1.1 1,1.3 1,1.3 1,1.5 1,1.5 1,1.6 1,1.7 1,1.7 1,1.7 1,1.7 1,1.7 1,1.6 1,1.6 1,1.6 1,1.5 1,1.4 1,1.3 1,1.1 1,1.1 1,.9 1,.8 1,.6 1,.5 1,.3 1,.1 1,0 1,-.2 1,-.4 1,-.5" fill="none" stroke="#ffff11" stroke-width="1.7" stroke-linejoin="round" /><path d="M974,1012.2l1,.2 1,0 1,-.1 1,-.3 1,-.4 1,-.6 1,-.6 1,-.8 1,-.9 1,-1.1 1,-1.1 1,-1.2 1,-1.3 1,-1.3 1,-1.4 1,-1.4 1,-1.5 1,-1.4 1,-1.5 1,-1.4 1,-1.4 1,-1.4 1,-1.3 1,-1.3 1,-1.1 1,-1.1 1,-.9 1,-.9 1,-.7 1,-.6 1,-.4 1,-.4 1,-.2 1,0 1,.1 1,.2 1,.4 1,.5 1,.7 1,.8 1,.9 1,.9 1,1.1 1,1.2 1,1.3 1,1.3 1,1.4 1,1.4 1,1.5 1,1.4 1,1.5 1,1.5 1,1.4 1,1.3 1,1.4 1,1.2 1,1.2 1,1.1 1,.9 1,.9 1,.8 1,.6 1,.5 1,.3 1,.2 1,.1 1,-.1 1,-.2 1,-.3 1,-.5 1,-.6 1,-.8 1,-.9 1,-.9 1,-1.1 1,-1.2 1,-1.2 1,-1.4 1,-1.3 1,-1.4 1,-1.5 1,-1.5 1,-1.4 1,-1.5 1,-1.4 1,-1.4 1,-1.3 1,-1.3 1,-1.2 1,-1.1 1,-.9 1,-.9 1,-.8 1,-.7 1,-.5 1,-.4 1,-.2 1,-.1 1,0 1,.2 1,.4 1,.4 1,.6 1,.7 1,.9 1,.9 1,1.1 1,1.1 1,1.3 1,1.3 1,1.4 1,1.4 1,1.4 1,1.5 1,1.4 1,1.5 1,1.4 1,1.4 1,1.3 1,1.3 1,1.2 1,1.1 1,1.1 1,.9 1,.8 1,.6 1,.6 1,.4 1,.3 1,.1 1,0 1,-.2 1,-.3 1,-.4 1,-.6 1,-.7 1,-.8 1,-.9 1,-1.1 1,-1.1 1,-1.2 1,-1.3 1,-1.4 1,-1.4 1,-1.4 1,-1.5 1,-1.4 1,-1.5 1,-1.4 1,-1.4 1,-1.4 1,-1.3 1,-1.2 1,-1.1 1,-1.1 1,-.9 1,-.8 1,-.7 1,-.6 1,-.4 1,-.3 1,-.2 1,0 1,.1 1,.3 1,.4 1,.6 1,.6 1,.8 1,.9 1,1.1 1,1.1 1,1.2 1,1.3 1,1.3 1,1.4 1,1.4 1,1.5 1,1.4 1,1.5 1,1.4 1,1.4 1,1.4 1,1.3 1,1.3 1,1.1 1,1.1 1,.9 1,.9 1,.7 1,.6 1,.4 1,.4 1,.2 1,0 1,-.1 1,-.2 1,-.4 1,-.5 1,-.7 1,-.8 1,-.9 1,-.9 1,-1.1 1,-1.2 1,-1.3 1,-1.3 1,-1.4 1,-1.4 1,-1.5 1,-1.4 1,-1.5 1,-1.5 1,-1.4 1,-1.3 1,-1.4 1,-1.2 1,-1.2 1,-1.1 1,-.9 1,-.9 1,-.8 1,-.6 1,-.5 1,-.3 1,-.2 1,-.1 1,.1 1,.2 1,.3 1,.5 1,.6 1,.8 1,.9 1,.9 1,1.1 1,1.2 1,1.2 1,1.4 1,1.3 1,1.4 1,1.5 1,1.5 1,1.4 1,1.5 1,1.4 1,1.4 1,1.3 1,1.3 1,1.2 1,1.1 1,.9 1,.9 1,.8 1,.7 1,.5 1,.4 1,.2 1,.1 1,0 1,-.2 1,-.4 1,-.4 1,-.6 1,-.7 1,-.9 1,-.9 1,-1.1 1,-1.1 1,-1.3 1,-1.3 1,-1.4 1,-1.4 1,-1.4 1,-1.5 1,-1.4 1,-1.5 1,-1.4 1,-1.4 1,-1.3 1,-1.3 1,-1.2 1,-1.1 1,-1.1 1,-.9 1,-.8 1,-.6 1,-.6 1,-.4 1,-.3 1,-.1 1,0 1,.2 1,.3 1,.4 1,.6 1,.7 1,.8 1,.9 1,1.1 1,1.1 1,1.2 1,1.3 1,1.4 1,1.4 1,1.4 1,1.5 1,1.4 1,1.5 1,1.4 1,1.4 1,1.4 1,1.3 1,1.2 1,1.1 1,1.1 1,.9 1,.8 1,.7 1,.6 1,.4 1,.3 1,.2 1,0 1,-.1 1,-.3 1,-.4 1,-.6 1,-.6 1,-.8 1,-.9 1,-1.1 1,-1.1 1,-1.2 1,-1.3 1,-1.3 1,-1.4 1,-1.4 1,-1.5 1,-1.4 1,-1.5 1,-1.4 1,-1.4 1,-1.4 1,-1.3 1,-1.3 1,-1.1 1,-1.1 1,-.9 1,-.9 1,-.7 1,-.6 1,-.4 1,-.4 1,-.2 1,0 1,.1 1,.2 1,.4 1,.5 1,.7 1,.8 1,.9 1,.9 1,1.1 1,1.2 1,1.3 1,1.3 1,1.4 1,1.4 1,1.5 1,1.4 1,1.5 1,1.5 1,1.4 1,1.3 1,1.4 1,1.2 1,1.2 1,1.1 1,.9 1,.9 1,.8 1,.6 1,.5 1,.3 1,.2 1,.1 1,-.1 1,-.2 1,-.3 1,-.5 1,-.6 1,-.8 1,-.9 1,-.9 1,-1.1 1,-1.2 1,-1.2 1,-1.4 1,-1.3 1,-1.4 1,-1.5 1,-1.5 1,-1.4 1,-1.5 1,-1.4 1,-1.4 1,-1.3 1,-1.3 1,-1.2 1,-1.1 1,-.9 1,-.9 1,-.8 1,-.7 1,-.5 1,-.4 1,-.2 1,-.1 1,0 1,.2 1,.4 1,.4 1,.6 1,.7 1,.9 1,.9 1,1.1 1,1.1 1,1.3 1,1.3 1,1.4 1,1.4 1,1.4 1,1.5 1,1.4 1,1.5 1,1.4 1,1.4 1,1.3 1,1.3 1,1.2 1,1.1 1,1.1 1,.9 1,.8 1,.6 1,.6 1,.4 1,.3 1,.1 1,0 1,-.2 1,-.3 1,-.4 1,-.6 1,-.7 1,-.8 1,-.9 1,-1.1 1,-1.1 1,-1.2 1,-1.3 1,-1.4 1,-1.4 1,-1.4 1,-1.5 1,-1.4 1,-1.5 1,-1.4 1,-1.4 1,-1.4 1,-1.3 1,-1.2 1,-1.1 1,-1.1 1,-.9 1,-.8 1,-.7 1,-.6 1,-.4 1,-.3 1,-.2 1,0 1,.1 1,.3 1,.4 1,.6 1,.6 1,.8 1,.9 1,1.1 1,1.1 1,1.2 1,1.3 1,1.3 1,1.4 1,1.4 1,1.5 1,1.4 1,1.5 1,1.4 1,1.4 1,1.4 1,1.3 1,1.3 1,1.1 1,1.1 1,.9 1,.9 1,.7 1,.6 1,.4 1,.4 1,.2 1,0 1,-.1 1,-.2 1,-.4 1,-.5 1,-.7 1,-.8 1,-.9 1,-.9 1,-1.1 1,-1.2 1,-1.3 1,-1.3 1,-1.4 1,-1.4 1,-1.5 1,-1.4 1,-1.5 1,-1.5 1,-1.4 1,-1.3 1,-1.4 1,-1.2 1,-1.2 1,-1.1 1,-.9 1,-.9 1,-.8 1,-.6 1,-.5 1,-.3 1,-.2 1,-.1 1,.1 1,.2 1,.3 1,.5 1,.6 1,.8 1,.9 1,.9 1,1.1 1,1.2 1,1.2 1,1.4 1,1.3 1,1.4 1,1.5 1,1.5 1,1.4 1,1.5 1,1.4 1,1.4 1,1.3 1,1.3 1,1.2 1,1.1 1,.9 1,.9 1,.8 1,.7 1,.5 1,.4 1,.2 1,.1 1,0 1,-.2 1,-.4 1,-.4 1,-.6 1,-.7 1,-.9 1,-.9 1,-1.1 1,-1.1 1,-1.3 1,-1.3 1,-1.4 1,-1.4 1,-1.4 1,-1.5 1,-1.4 1,-1.5 1,-1.4 1,-1.4 1,-1.3 1,-1.3 1,-1.2 1,-1.1 1,-1.1 1,-.9 1,-.8 1,-.6 1,-.6 1,-.4 1,-.3 1,-.1 1,0 1,.2 1,.3 1,.4 1,.6 1,.7 1,.8 1,.9 1,1.1 1,1.1 1,1.2 1,1.3 1,1.4 1,1.4 1,1.4 1,1.5 1,1.4 1,1.5 1,1.4 1,1.4 1,1.4 1,1.3 1,1.2 1,1.1 1,1.1 1,.9 1,.8 1,.7 1,.6 1,.4 1,.3 1,.2 1,0 1,-.1 1,-.3 1,-.4 1,-.6 1,-.6 1,-.8 1,-.9 1,-1.1 1,-1.1 1,-1.2 1,-1.3 1,-1.3 1,-1.4 1,-1.4 1,-1.5 1,-1.4 1,-1.5 1,-1.4 1,-1.4 1,-1.4 1,-1.3 1,-1.3 1,-1.1 1,-1.1 1,-.9 1,-.9 1,-.7 1,-.6 1,-.4 1,-.4 1,-.2 1,0 1,.1 1,.2 1,.4 1,.5 1,.7 1,.8 1,.9 1,.9 1,1.1 1,1.2 1,1.3 1,1.3 1,1.4 1,1.4 1,1.5 1,1.4 1,1.5 1,1.5 1,1.4 1,1.3 1,1.4 1,1.2 1,1.2 1,1.1 1,.9 1,.9 1,.8 1,.6 1,.5 1,.3 1,.2 1,.1 1,-.1 1,-.2 1,-.3 1,-.5 1,-.6 1,-.8 1,-.9 1,-.9 1,-1.1 1,-1.2 1,-1.2 1,-1.4 1,-1.3 1,-1.4 1,-1.5 1,-1.5 1,-1.4 1,-1.5 1,-1.4 1,-1.4 1,-1.3 1,-1.3 1,-1.2 1,-1.1 1,-.9 1,-.9 1,-.8 1,-.7 1,-.5 1,-.4 1,-.2 1,-.1 1,0 1,.2 1,.4 1,.4 1,.6 1,.7 1,.9 1,.9 1,1.1 1,1.1 1,1.3 1,1.3 1,1.4 1,1.4 1,1.4 1,1.5 1,1.4 1,1.5 1,1.4 1,1.4 1,1.3 1,1.3 1,1.2 1,1.1 1,1.1 1,.9 1,.8 1,.6 1,.6 1,.4 1,.3 1,.1 1,0 1,-.2 1,-.3 1,-.4 1,-.6 1,-.7 1,-.8 1,-.9 1,-1.1 1,-1.1 1,-1.2 1,-1.3 1,-1.4 1,-1.4 1,-1.4 1,-1.5 1,-1.4 1,-1.5 1,-1.4 1,-1.4 1,-1.4 1,-1.3 1,-1.2 1,-1.1 1,-1.1 1,-.9 1,-.8 1,-.7 1,-.6 1,-.4 1,-.3 1,-.2 1,0 1,.1 1,.3 1,.4 1,.6 1,.6 1,.8 1,.9 1,1.1 1,1.1 1,1.2 1,1.3 1,1.3 1,1.4 1,1.4 1,1.5 1,1.4 1,1.5 1,1.4 1,1.4 1,1.4 1,1.3 1,1.3 1,1.1 1,1.1 1,.9 1,.9 1,.7 1,.6 1,.4 1,.4 1,.2 1,0 1,-.1 1,-.2 1,-.4 1,-.5 1,-.7 1,-.8 1,-.9 1,-.9 1,-1.1 1,-1.2 1,-1.3 1,-1.3 1,-1.4 1,-1.4 1,-1.5 1,-1.4 1,-1.5 1,-1.5 1,-1.4 1,-1.3 1,-1.4 1,-1.2 1,-1.2 1,-1.1 1,-.9 1,-.9 1,-.8 1,-.6 1,-.5 1,-.3 1,-.2 1,-.1 1,.1 1,.2 1,.3 1,.5 1,.6 1,.8 1,.9 1,.9 1,1.1 1,1.2 1,1.2 1,1.4 1,1.3 1,1.4 1,1.5 1,1.5 1,1.4 1,1.5 1,1.4 1,1.4 1,1.3 1,1.3 1,1.2 1,1.1 1,.9 1,.9 1,.8 1,.7 1,.5 1,.4 1,.2 1,.1 1,0 1,-.2 1,-.4 1,-.4 1,-.6 1,-.7 1,-.9 1,-.9 1,-1.1 1,-1.1 1,-1.3 1,-1.3 1,-1.4 1,-1.4 1,-1.4 1,-1.5 1,-1.4 1,-1.5 1,-1.4 1,-1.4 1,-1.3 1,-1.3 1,-1.2 1,-1.1 1,-1.1 1,-.9 1,-.8 1,-.6 1,-.6 1,-.4 1,-.3 1,-.1 1,0 1,.2 1,.3 1,.4 1,.6 1,.7 1,.8 1,.9 1,1.1 1,1.1 1,1.2" fill="none" stroke="#139fff" stroke-width="1.7" stroke-linejoin="round" /><path d="M974,986.1l1,1.1 1,1.1 1,1.2 1,1.3 1,1.3 1,1.4 1,1.4 1,1.5 1,1.4 1,1.5 1,1.4 1,1.4 1,1.4 1,1.3 1,1.3 1,1.1 1,1.1 1,.9 1,.9 1,.7 1,.6 1,.4 1,.4 1,.2 1,0 1,-.1 1,-.2 1,-.4 1,-.5 1,-.7 1,-.8 1,-.9 1,-.9 1,-1.1 1,-1.2 1,-1.3 1,-1.3 1,-1.4 1,-1.4 1,-1.5 1,-1.4 1,-1.5 1,-1.5 1,-1.4 1,-1.3 1,-1.4 1,-1.2 1,-1.2 1,-1.1 1,-.9 1,-.9 1,-.8 1,-.6 1,-.5 1,-.3 1,-.2 1,-.1 1,.1 1,.2 1,.3 1,.5 1,.6 1,.8 1,.9 1,.9 1,1.1 1,1.2 1,1.2 1,1.4 1,1.3 1,1.4 1,1.5 1,1.5 1,1.4 1,1.5 1,1.4 1,1.4 1,1.3 1,1.3 1,1.2 1,1.1 1,.9 1,.9 1,.8 1,.7 1,.5 1,.4 1,.2 1,.1 1,0 1,-.2 1,-.4 1,-.4 1,-.6 1,-.7 1,-.9 1,-.9 1,-1.1 1,-1.1 1,-1.3 1,-1.3 1,-1.4 1,-1.4 1,-1.4 1,-1.5 1,-1.4 1,-1.5 1,-1.4 1,-1.4 1,-1.3 1,-1.3 1,-1.2 1,-1.1 1,-1.1 1,-.9 1,-.8 1,-.6 1,-.6 1,-.4 1,-.3 1,-.1 1,0 1,.2 1,.3 1,.4 1,.6 1,.7 1,.8 1,.9 1,1.1 1,1.1 1,1.2 1,1.3 1,1.4 1,1.4 1,1.4 1,1.5 1,1.4 1,1.5 1,1.4 1,1.4 1,1.4 1,1.3 1,1.2 1,1.1 1,1.1 1,.9 1,.8 1,.7 1,.6 1,.4 1,.3 1,.2 1,0 1,-.1 1,-.3 1,-.4 1,-.6 1,-.6 1,-.8 1,-.9 1,-1.1 1,-1.1 1,-1.2 1,-1.3 1,-1.3 1,-1.4 1,-1.4 1,-1.5 1,-1.4 1,-1.5 1,-1.4 1,-1.4 1,-1.4 1,-1.3 1,-1.3 1,-1.1 1,-1.1 1,-.9 1,-.9 1,-.7 1,-.6 1,-.4 1,-.4 1,-.2 1,0 1,.1 1,.2 1,.4 1,.5 1,.7 1,.8 1,.9 1,.9 1,1.1 1,1.2 1,1.3 1,1.3 1,1.4 1,1.4 1,1.5 1,1.4 1,1.5 1,1.5 1,1.4 1,1.3 1,1.4 1,1.2 1,1.2 1,1.1 1,.9 1,.9 1,.8 1,.6 1,.5 1,.3 1,.2 1,.1 1,-.1 1,-.2 1,-.3 1,-.5 1,-.6 1,-.8 1,-.9 1,-.9 1,-1.1 1,-1.2 1,-1.2 1,-1.4 1,-1.3 1,-1.4 1,-1.5 1,-1.5 1,-1.4 1,-1.5 1,-1.4 1,-1.4 1,-1.3 1,-1.3 1,-1.2 1,-1.1 1,-.9 1,-.9 1,-.8 1,-.7 1,-.5 1,-.4 1,-.2 1,-.1 1,0 1,.2 1,.4 1,.4 1,.6 1,.7 1,.9 1,.9 1,1.1 1,1.1 1,1.3 1,1.3 1,1.4 1,1.4 1,1.4 1,1.5 1,1.4 1,1.5 1,1.4 1,1.4 1,1.3 1,1.3 1,1.2 1,1.1 1,1.1 1,.9 1,.8 1,.6 1,.6 1,.4 1,.3 1,.1 1,0 1,-.2 1,-.3 1,-.4 1,-.6 1,-.7 1,-.8 1,-.9 1,-1.1 1,-1.1 1,-1.2 1,-1.3 1,-1.4 1,-1.4 1,-1.4 1,-1.5 1,-1.4 1,-1.5 1,-1.4 1,-1.4 1,-1.4 1,-1.3 1,-1.2 1,-1.1 1,-1.1 1,-.9 1,-.8 1,-.7 1,-.6 1,-.4 1,-.3 1,-.2 1,0 1,.1 1,.3 1,.4 1,.6 1,.6 1,.8 1,.9 1,1.1 1,1.1 1,1.2 1,1.3 1,1.3 1,1.4 1,1.4 1,1.5 1,1.4 1,1.5 1,1.4 1,1.4 1,1.4 1,1.3 1,1.3 1,1.1 1,1.1 1,.9 1,.9 1,.7 1,.6 1,.4 1,.4 1,.2 1,0 1,-.1 1,-.2 1,-.4 1,-.5 1,-.7 1,-.8 1,-.9 1,-.9 1,-1.1 1,-1.2 1,-1.3 1,-1.3 1,-1.4 1,-1.4 1,-1.5 1,-1.4 1,-1.5 1,-1.5 1,-1.4 1,-1.3 1,-1.4 1,-1.2 1,-1.2 1,-1.1 1,-.9 1,-.9 1,-.8 1,-.6 1,-.5 1,-.3 1,-.2 1,-.1 1,.1 1,.2 1,.3 1,.5 1,.6 1,.8 1,.9 1,.9 1,1.1 1,1.2 1,1.2 1,1.4 1,1.3 1,1.4 1,1.5 1,1.5 1,1.4 1,1.5 1,1.4 1,1.4 1,1.3 1,1.3 1,1.2 1,1.1 1,.9 1,.9 1,.8 1,.7 1,.5 1,.4 1,.2 1,.1 1,0 1,-.2 1,-.4 1,-.4 1,-.6 1,-.7 1,-.9 1,-.9 1,-1.1 1,-1.1 1,-1.3 1,-1.3 1,-1.4 1,-1.4 1,-1.4 1,-1.5 1,-1.4 1,-1.5 1,-1.4 1,-1.4 1,-1.3 1,-1.3 1,-1.2 1,-1.1 1,-1.1 1,-.9 1,-.8 1,-.6 1,-.6 1,-.4 1,-.3 1,-.1 1,0 1,.2 1,.3 1,.4 1,.6 1,.7 1,.8 1,.9 1,1.1 1,1.1 1,1.2 1,1.3 1,1.4 1,1.4 1,1.4 1,1.5 1,1.4 1,1.5 1,1.4 1,1.4 1,1.4 1,1.3 1,1.2 1,1.1 1,1.1 1,.9 1,.8 1,.7 1,.6 1,.4 1,.3 1,.2 1,0 1,-.1 1,-.3 1,-.4 1,-.6 1,-.6 1,-.8 1,-.9 1,-1.1 1,-1.1 1,-1.2 1,-1.3 1,-1.3 1,-1.4 1,-1.4 1,-1.5 1,-1.4 1,-1.5 1,-1.4 1,-1.4 1,-1.4 1,-1.3 1,-1.3 1,-1.1 1,-1.1 1,-.9 1,-.9 1,-.7 1,-.6 1,-.4 1,-.4 1,-.2 1,0 1,.1 1,.2 1,.4 1,.5 1,.7 1,.8 1,.9 1,.9 1,1.1 1,1.2 1,1.3 1,1.3 1,1.4 1,1.4 1,1.5 1,1.4 1,1.5 1,1.5 1,1.4 1,1.3 1,1.4 1,1.2 1,1.2 1,1.1 1,.9 1,.9 1,.8 1,.6 1,.5 1,.3 1,.2 1,.1 1,-.1 1,-.2 1,-.3 1,-.5 1,-.6 1,-.8 1,-.9 1,-.9 1,-1.1 1,-1.2 1,-1.2 1,-1.4 1,-1.3 1,-1.4 1,-1.5 1,-1.5 1,-1.4 1,-1.5 1,-1.4 1,-1.4 1,-1.3 1,-1.3 1,-1.2 1,-1.1 1,-.9 1,-.9 1,-.8 1,-.7 1,-.5 1,-.4 1,-.2 1,-.1 1,0 1,.2 1,.4 1,.4 1,.6 1,.7 1,.9 1,.9 1,1.1 1,1.1 1,1.3 1,1.3 1,1.4 1,1.4 1,1.4 1,1.5 1,1.4 1,1.5 1,1.4 1,1.4 1,1.3 1,1.3 1,1.2 1,1.1 1,1.1 1,.9 1,.8 1,.6 1,.6 1,.4 1,.3 1,.1 1,0 1,-.2 1,-.3 1,-.4 1,-.6 1,-.7 1,-.8 1,-.9 1,-1.1 1,-1.1 1,-1.2 1,-1.3 1,-1.4 1,-1.4 1,-1.4 1,-1.5 1,-1.4 1,-1.5 1,-1.4 1,-1.4 1,-1.4 1,-1.3 1,-1.2 1,-1.1 1,-1.1 1,-.9 1,-.8 1,-.7 1,-.6 1,-.4 1,-.3 1,-.2 1,0 1,.1 1,.3 1,.4 1,.6 1,.6 1,.8 1,.9 1,1.1 1,1.1 1,1.2 1,1.3 1,1.3 1,1.4 1,1.4 1,1.5 1,1.4 1,1.5 1,1.4 1,1.4 1,1.4 1,1.3 1,1.3 1,1.1 1,1.1 1,.9 1,.9 1,.7 1,.6 1,.4 1,.4 1,.2 1,0 1,-.1 1,-.2 1,-.4 1,-.5 1,-.7 1,-.8 1,-.9 1,-.9 1,-1.1 1,-1.2 1,-1.3 1,-1.3 1,-1.4 1,-1.4 1,-1.5 1,-1.4 1,-1.5 1,-1.5 1,-1.4 1,-1.3 1,-1.4 1,-1.2 1,-1.2 1,-1.1 1,-.9 1,-.9 1,-.8 1,-.6 1,-.5 1,-.3 1,-.2 1,-.1 1,.1 1,.2 1,.3 1,.5 1,.6 1,.8 1,.9 1,.9 1,1.1 1,1.2 1,1.2 1,1.4 1,1.3 1,1.4 1,1.5 1,1.5 1,1.4 1,1.5 1,1.4 1,1.4 1,1.3 1,1.3 1,1.2 1,1.1 1,.9 1,.9 1,.8 1,.7 1,.5 1,.4 1,.2 1,.1 1,0 1,-.2 1,-.4 1,-.4 1,-.6 1,-.7 1,-.9 1,-.9 1,-1.1 1,-1.1 1,-1.3 1,-1.3 1,-1.4 1,-1.4 1,-1.4 1,-1.5 1,-1.4 1,-1.5 1,-1.4 1,-1.4 1,-1.3 1,-1.3 1,-1.2 1,-1.1 1,-1.1 1,-.9 1,-.8 1,-.6 1,-.6 1,-.4 1,-.3 1,-.1 1,0 1,.2 1,.3 1,.4 1,.6 1,.7 1,.8 1,.9 1,1.1 1,1.1 1,1.2 1,1.3 1,1.4 1,1.4 1,1.4 1,1.5 1,1.4 1,1.5 1,1.4 1,1.4 1,1.4 1,1.3 1,1.2 1,1.1 1,1.1 1,.9 1,.8 1,.7 1,.6 1,.4 1,.3 1,.2 1,0 1,-.1 1,-.3 1,-.4 1,-.6 1,-.6 1,-.8 1,-.9 1,-1.1 1,-1.1 1,-1.2 1,-1.3 1,-1.3 1,-1.4 1,-1.4 1,-1.5 1,-1.4 1,-1.5 1,-1.4 1,-1.4 1,-1.4 1,-1.3 1,-1.3 1,-1.1 1,-1.1 1,-.9 1,-.9 1,-.7 1,-.6 1,-.4 1,-.4 1,-.2 1,0 1,.1 1,.2 1,.4 1,.5 1,.7 1,.8 1,.9 1,.9 1,1.1 1,1.2 1,1.3 1,1.3 1,1.4 1,1.4 1,1.5 1,1.4 1,1.5 1,1.5 1,1.4 1,1.3 1,1.4 1,1.2 1,1.2 1,1.1 1,.9 1,.9 1,.8 1,.6 1,.5 1,.3 1,.2 1,.1 1,-.1 1,-.2 1,-.3 1,-.5 1,-.6 1,-.8 1,-.9 1,-.9 1,-1.1 1,-1.2 1,-1.2 1,-1.4 1,-1.3 1,-1.4 1,-1.5 1,-1.5 1,-1.4 1,-1.5 1,-1.4 1,-1.4 1,-1.3 1,-1.3 1,-1.2 1,-1.1 1,-.9 1,-.9 1,-.8 1,-.7 1,-.5 1,-.4 1,-.2 1,-.1 1,0 1,.2 1,.4 1,.4 1,.6 1,.7 1,.9 1,.9 1,1.1 1,1.1 1,1.3 1,1.3 1,1.4 1,1.4 1,1.4 1,1.5 1,1.4 1,1.5 1,1.4 1,1.4 1,1.3 1,1.3 1,1.2 1,1.1 1,1.1 1,.9 1,.8 1,.6 1,.6 1,.4 1,.3 1,.1 1,0 1,-.2 1,-.3 1,-.4 1,-.6 1,-.7 1,-.8 1,-.9 1,-1.1 1,-1.1 1,-1.2 1,-1.3 1,-1.4 1,-1.4 1,-1.4 1,-1.5 1,-1.4 1,-1.5 1,-1.4 1,-1.4" fill="none" stroke="#ff6929" stroke-width="1.7" stroke-linejoin="round" /></g><rect x="974.5" y="978.8" width="950" height="36.200000000000045" fill="none" stroke="#6b6b6b" stroke-width="1" /><text x="968" y="992.2" font-size="15" fill="#c4c4c4" text-anchor="end" >200</text><text x="968" y="1002.9" font-size="15" fill="#c4c4c4" text-anchor="end" >0</text><text x="968" y="1013.9" font-size="15" fill="#c4c4c4" text-anchor="end" >-200</text><text x="1054" y="1037.5" font-size="15" fill="#c4c4c4" text-anchor="middle" >1.095</text><text x="1183" y="1037.5" font-size="15" fill="#c4c4c4" text-anchor="middle" >1.1</text><text x="1312" y="1037.5" font-size="15" fill="#c4c4c4" text-anchor="middle" >1.105</text><text x="1440.5" y="1037.5" font-size="15" fill="#c4c4c4" text-anchor="middle" >1.11</text><text x="1569" y="1037.5" font-size="15" fill="#c4c4c4" text-anchor="middle" >1.115</text><text x="1698" y="1037.5" font-size="15" fill="#c4c4c4" text-anchor="middle" >1.12</text><text x="1826.7" y="1037.5" font-size="15" fill="#c4c4c4" text-anchor="middle" >1.125</text><rect x="938" y="1047" width="983" height="33" fill="#f0f0f0" stroke="none" stroke-width="1" /><text x="939" y="1070.5" font-size="15.5" fill="#000" text-anchor="start" textLength="42" lengthAdjust="spacingAndGlyphs" >Ready</text><rect x="1810.5" y="1052.5" width="103" height="24" fill="#f0f0f0" stroke="#d7d7d7" stroke-width="1" /><text x="1814" y="1070.5" font-size="15.5" fill="#000" text-anchor="start" textLength="94" lengthAdjust="spacingAndGlyphs" >Sample based</text></svg></body></html>
